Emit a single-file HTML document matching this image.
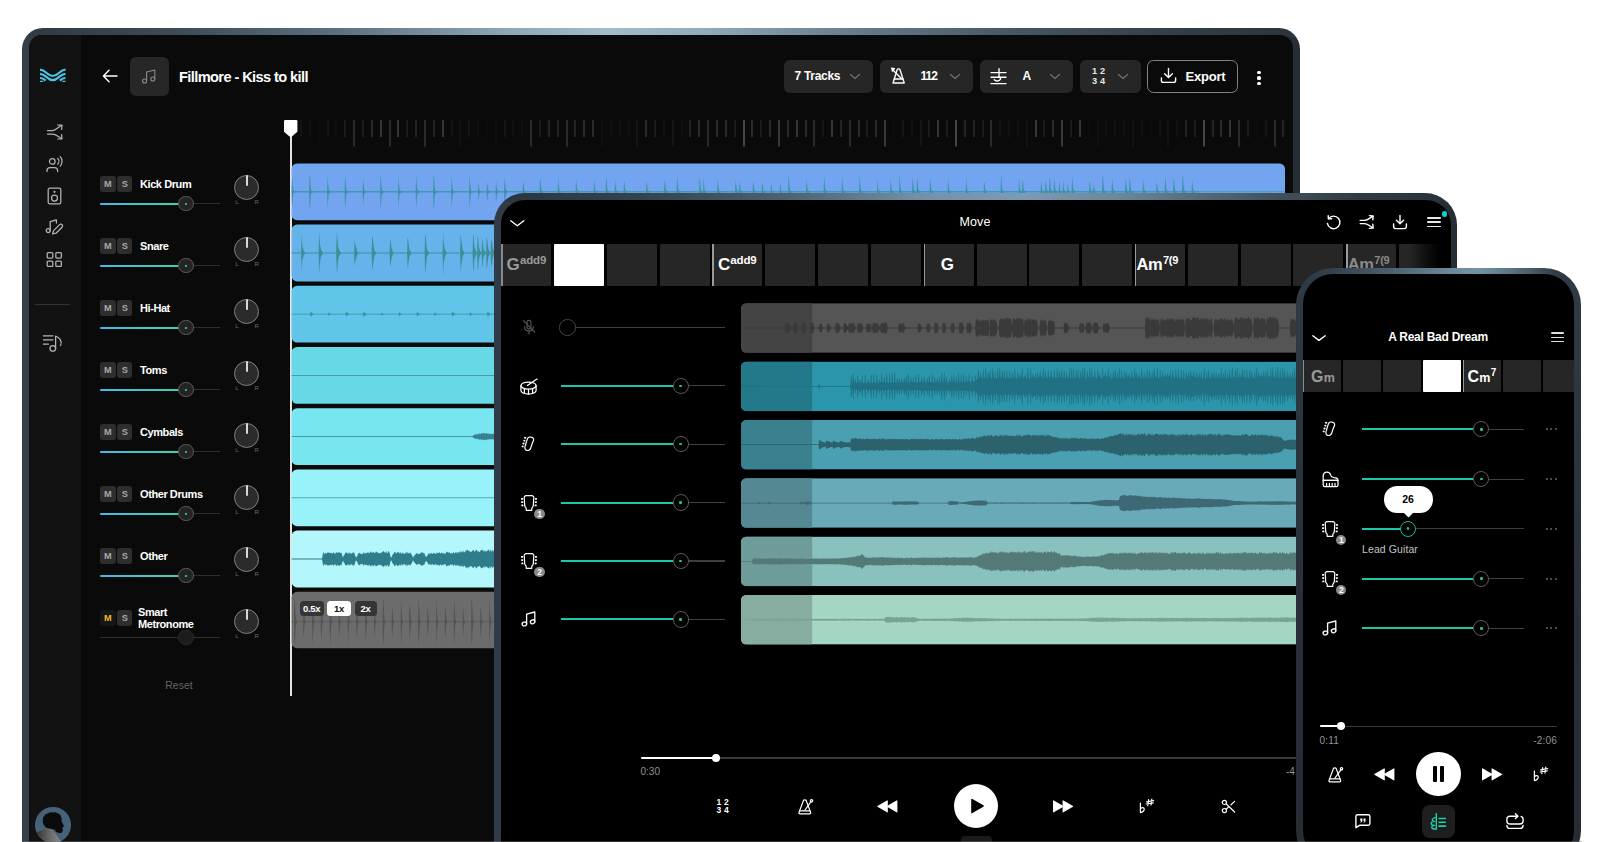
<!DOCTYPE html><html><head><meta charset="utf-8"><title>Moises</title><style>
html,body{margin:0;padding:0;background:#fff}
body{width:1600px;height:842px;position:relative;overflow:hidden;font-family:"Liberation Sans",sans-serif;color:#fff}
div,span,svg{position:absolute;box-sizing:border-box}
svg{overflow:visible}
.t{white-space:nowrap;line-height:1}
.ic{fill:none;stroke:#d8d8d8;stroke-width:1.3;stroke-linecap:round;stroke-linejoin:round}
.icw{fill:none;stroke:#fff;stroke-width:1.4;stroke-linecap:round;stroke-linejoin:round}
.btn{background:#262626;border-radius:6px;height:33px;top:60px}
.ms{border-radius:3px;background:#2e2e2e;color:#a8a8a8;font-size:9.2px;font-weight:bold;text-align:center;line-height:17.2px}

.cell{background:#262626}
</style></head><body><div style="left:22px;top:28px;width:1278px;height:830px;border-radius:21px 21px 0 0;background:linear-gradient(90deg,#2e3a43 0%,#3c4b56 12%,#5b7282 25%,#8da7b8 38%,#a3bccc 46%,#8fa9ba 54%,#657d8d 65%,#455662 78%,#333f48 90%,#2a343c 100%) top/100% 9px no-repeat,linear-gradient(90deg,#343f48 0%,#2d3740 50%,#272d34 100%)"></div><div style="left:29px;top:35px;width:1264px;height:830px;border-radius:13px 13px 0 0;background:#0a0a0a;overflow:hidden"><div style="left:0;top:0;width:52px;height:830px;background:#121212"></div></div><svg style="left:40px;top:68px" width="26" height="15" viewBox="0 0 26 15" ><g fill="none" stroke="#4cc4e4" stroke-width="2.2" stroke-linecap="butt"><path d="M0 1.7 C6 1.7 7.2 8 12.75 8 C18.3 8 19.5 1.7 25.5 1.7"/><path d="M0 5.9 C6 5.9 7.2 12.2 12.75 12.2 C18.3 12.2 19.5 5.9 25.5 5.9"/><path d="M0 10 C2.6 10 4.2 11.2 5.6 12.6 M25.5 10 C22.9 10 21.3 11.2 19.9 12.6"/><path d="M0 13.4 H3.2 M22.3 13.4 H25.5" stroke-width="1.2"/></g></svg><svg style="left:46px;top:123px" width="18" height="18" viewBox="0 0 18 18" ><g stroke="#b4b4b4" stroke-width="1.25" fill="none" stroke-linecap="round" stroke-linejoin="round"><path d="M1.5 7.5 H6.5 C10 7.5 11.5 4.5 15.5 2.5 M11.8 2 L16 2.2 L15.6 6.4"/><path d="M1.5 11 H6.5 C10 11 11.5 13.5 15.5 15.5 M11.8 16 L16 15.8 L15.6 11.6"/></g></svg><svg style="left:45px;top:154px" width="19" height="20" viewBox="0 0 19 20" ><g stroke="#b4b4b4" stroke-width="1.25" fill="none" stroke-linecap="round" stroke-linejoin="round"><circle cx="7.3" cy="7.4" r="2.8"/><path d="M2 17.5 V16.5 C2 14.5 3.5 13.5 5 13.5 H9.6 C11.2 13.5 12.6 14.5 12.6 16.5 V17.5"/><path d="M12.8 4.5 C14.2 6 14.2 8.6 12.8 10.2 M15.2 2.6 C17.6 5.2 17.6 9.6 15.2 12.2"/></g></svg><svg style="left:47px;top:187px" width="15" height="18" viewBox="0 0 15 18" ><g stroke="#b4b4b4" stroke-width="1.25" fill="none" stroke-linecap="round" stroke-linejoin="round"><rect x="1.2" y="1.2" width="12.6" height="15.6" rx="1.6"/><circle cx="7.5" cy="11" r="3"/><circle cx="7.5" cy="4.8" r="0.5" fill="#c4c4c4"/></g></svg><svg style="left:45px;top:218px" width="19" height="18" viewBox="0 0 19 18" ><g stroke="#b4b4b4" stroke-width="1.25" fill="none" stroke-linecap="round" stroke-linejoin="round"><circle cx="3.2" cy="12.6" r="2"/><path d="M5.2 12.6 V3.6 L11.4 1.8 V5"/><path d="M7.6 15.8 L8.6 12.6 L14.6 6.6 C15.4 5.8 16.6 5.8 17.2 6.6 C17.8 7.4 17.8 8.4 17 9.2 L11 15.2 Z"/></g></svg><svg style="left:46px;top:251px" width="17" height="17" viewBox="0 0 17 17" ><g stroke="#b4b4b4" stroke-width="1.25" fill="none" stroke-linecap="round" stroke-linejoin="round"><rect x="1.2" y="1.6" width="5.6" height="5.4" rx="1"/><rect x="9.8" y="1.6" width="5.6" height="5.4" rx="1"/><rect x="1.2" y="10" width="5.6" height="5.4" rx="1"/><rect x="9.8" y="10" width="5.6" height="5.4" rx="1"/></g></svg><div style="left:35px;top:303.5px;width:35px;height:1px;background:#333"></div><svg style="left:42px;top:333px" width="22" height="20" viewBox="0 0 22 20" ><g stroke="#b4b4b4" stroke-width="1.25" fill="none" stroke-linecap="round" stroke-linejoin="round" stroke-width="1.5"><path d="M1.4 2.8 H11 M1.4 6.8 H11 M1.4 11 H6.5"/><circle cx="10.8" cy="15.4" r="2.8"/><path d="M13.6 15.4 V3 C17.5 4.5 20.5 8 18.6 12.5"/></g></svg><div style="left:35px;top:807.2px;width:35.6px;height:35.6px;border-radius:50%;background:#46617a;overflow:hidden"><svg style="left:0;top:0" width="36" height="36" viewBox="0 0 36 36"><defs><linearGradient id="sh" x1="0" y1="0" x2="1" y2="0"><stop offset="0" stop-color="#2e2e2e"/><stop offset="0.6" stop-color="#6a6a6a"/><stop offset="1" stop-color="#8a8a8a"/></linearGradient></defs><path d="M1 26 C4 24 8 23 10.5 21.5 L17 22 L21.5 28 L25.5 34 V36 H0Z" fill="url(#sh)"/><path d="M8 13 C7.6 10.6 8.6 9.6 9.5 9 C10 7 11.6 6.6 13 6.5 C14.4 5 16.4 5.2 18 5.5 C20 4.6 21.8 5.6 23 6.5 C25 7 26 8.6 26 10 C27 11.4 26.8 12.8 26.4 14 L28 17 L29 19 L27.4 21 L28 23 L27 25.4 C26 26.2 25 26.2 24 26 L21 25 L20 23 L17 22 L12 21 C10.4 20.4 9.4 19.4 9 18 C7.6 16.6 7.4 14.6 8 13Z" fill="#0b0b0c"/></svg></div><svg style="left:102px;top:69px" width="16" height="14" viewBox="0 0 16 14" ><path d="M15 7 H1.6 M7 1.2 L1.4 7 L7 12.8" stroke="#fff" stroke-width="1.4" fill="none" stroke-linecap="round" stroke-linejoin="round" stroke-width="1.6"/></svg><div style="left:130px;top:57px;width:38.5px;height:38.5px;background:#272727;border-radius:6px"></div><svg style="left:141px;top:68px" width="17" height="17" viewBox="0 0 17 17" ><g fill="none" stroke="#8c8c8c" stroke-width="1.1" stroke-linejoin="round"><circle cx="3.6" cy="13" r="2"/><circle cx="11.8" cy="11" r="2"/><path d="M5.6 13 V4 L13.8 2 V11"/></g></svg><span class="t" style="left:179px;top:69.7px;font-size:14.6px;color:#fff;font-weight:bold;letter-spacing:-0.6px">Fillmore - Kiss to kill</span><div class="btn" style="left:784px;top:60px;width:88.5px;height:33px;"></div><span class="t" style="left:794.5px;top:70.0px;font-size:12px;color:#fff;font-weight:bold;letter-spacing:-0.3px">7 Tracks</span><svg style="left:850.0px;top:74.0px" width="10" height="5" viewBox="0 0 10 5" ><path d="M0.5 0.5 L5.0 4.5 L9.5 0.5" fill="none" stroke="#707070" stroke-width="1.2" stroke-linecap="round" stroke-linejoin="round"/></svg><div class="btn" style="left:880px;top:60px;width:92.5px;height:33px;"></div><svg style="left:890px;top:67px" width="17" height="18" viewBox="0 0 17 18" ><g stroke="#fff" stroke-width="1.4" fill="none" stroke-linecap="round" stroke-linejoin="round" stroke-width="1.3"><path d="M3 16 L7.2 2.6 C7.5 1.6 9.7 1.6 10 2.6 L14.2 16 Z"/><path d="M4.2 12 H13"/><path d="M11.4 11.6 L2.4 2.6 M1.8 1.2 L4.4 1.6 L2.4 4 Z"/></g></svg><span class="t" style="left:920.5px;top:70.0px;font-size:12px;color:#fff;font-weight:bold;letter-spacing:-1px">112</span><svg style="left:950.0px;top:74.0px" width="10" height="5" viewBox="0 0 10 5" ><path d="M0.5 0.5 L5.0 4.5 L9.5 0.5" fill="none" stroke="#707070" stroke-width="1.2" stroke-linecap="round" stroke-linejoin="round"/></svg><div class="btn" style="left:980px;top:60px;width:92.5px;height:33px;"></div><svg style="left:990px;top:68px" width="17" height="17" viewBox="0 0 17 17" ><g stroke="#fff" stroke-width="1.4" fill="none" stroke-linecap="round" stroke-linejoin="round" stroke-width="1.3"><path d="M1 4.6 H16 M1 9.2 H16 M1 15.6 H16 M9 0.8 V9.2"/><path d="M4.2 11.6 C5.6 13.6 9.4 13.4 10.4 11.2 C11 9.8 9.6 9 8.4 9.4"/></g></svg><span class="t" style="left:1022.5px;top:70.0px;font-size:12px;color:#fff;font-weight:bold;">A</span><svg style="left:1049.5px;top:74.0px" width="10" height="5" viewBox="0 0 10 5" ><path d="M0.5 0.5 L5.0 4.5 L9.5 0.5" fill="none" stroke="#707070" stroke-width="1.2" stroke-linecap="round" stroke-linejoin="round"/></svg><div class="btn" style="left:1080px;top:60px;width:60.5px;height:33px;"></div><span class="t" style="left:1092px;top:66.7px;font-size:9.2px;color:#e6e6e6;font-weight:bold;letter-spacing:0.2px">1 2</span><span class="t" style="left:1092px;top:76.6px;font-size:9.2px;color:#e6e6e6;font-weight:bold;letter-spacing:0.2px">3 4</span><svg style="left:1117.5px;top:74.0px" width="10" height="5" viewBox="0 0 10 5" ><path d="M0.5 0.5 L5.0 4.5 L9.5 0.5" fill="none" stroke="#707070" stroke-width="1.2" stroke-linecap="round" stroke-linejoin="round"/></svg><div style="left:1147px;top:60px;width:91px;height:33px;border:1.6px solid #848484;border-radius:6.5px;background:#0a0a0a"></div><svg style="left:1160px;top:67px" width="17" height="17" viewBox="0 0 17 17" ><g stroke="#fff" stroke-width="1.4" fill="none" stroke-linecap="round" stroke-linejoin="round" stroke-width="1.4"><path d="M8.5 1.4 V10.4 M4.6 6.8 L8.5 10.6 L12.4 6.8"/><path d="M1.4 11 V13.4 C1.4 14.6 2.2 15.4 3.4 15.4 H13.6 C14.8 15.4 15.6 14.6 15.6 13.4 V11"/></g></svg><span class="t" style="left:1185.5px;top:70.0px;font-size:13px;color:#fff;font-weight:bold;letter-spacing:-0.2px">Export</span><div style="left:1257.4px;top:71.10000000000001px;width:3.2px;height:3.2px;background:#fff;border-radius:50%"></div><div style="left:1257.4px;top:76.4px;width:3.2px;height:3.2px;background:#fff;border-radius:50%"></div><div style="left:1257.4px;top:81.7px;width:3.2px;height:3.2px;background:#fff;border-radius:50%"></div><svg style="left:0;top:0" width="1600" height="160" viewBox="0 0 1600 160"><rect x="300.5" y="120" width="1" height="17" fill="#1a1a1a"/><rect x="309.5" y="120" width="1" height="17" fill="#1a1a1a"/><rect x="318.5" y="120" width="1" height="26.5" fill="#101010"/><rect x="327.5" y="120" width="1" height="17" fill="#202020"/><rect x="335.5" y="120" width="1" height="17" fill="#141414"/><rect x="344.5" y="120" width="1" height="17" fill="#2c2c2c"/><rect x="353.5" y="120" width="1" height="26.5" fill="#4c4c4c"/><rect x="362.5" y="120" width="1" height="17" fill="#2c2c2c"/><rect x="371.5" y="120" width="1" height="17" fill="#4c4c4c"/><rect x="380.5" y="120" width="1" height="17" fill="#606060"/><rect x="389.5" y="120" width="1" height="26.5" fill="#4c4c4c"/><rect x="397.5" y="120" width="1" height="17" fill="#606060"/><rect x="406.5" y="120" width="1" height="17" fill="#2c2c2c"/><rect x="415.5" y="120" width="1" height="17" fill="#3c3c3c"/><rect x="424.5" y="120" width="1" height="26.5" fill="#4c4c4c"/><rect x="433.5" y="120" width="1" height="17" fill="#3c3c3c"/><rect x="442.5" y="120" width="1" height="17" fill="#606060"/><rect x="451.5" y="120" width="1" height="17" fill="#1a1a1a"/><rect x="459.5" y="120" width="1" height="26.5" fill="#141414"/><rect x="468.5" y="120" width="1" height="17" fill="#202020"/><rect x="477.5" y="120" width="1" height="17" fill="#141414"/><rect x="486.5" y="120" width="1" height="17" fill="#101010"/><rect x="495.5" y="120" width="1" height="26.5" fill="#141414"/><rect x="504.5" y="120" width="1" height="17" fill="#202020"/><rect x="512.5" y="120" width="1" height="17" fill="#141414"/><rect x="521.5" y="120" width="1" height="17" fill="#141414"/><rect x="530.5" y="120" width="1" height="26.5" fill="#4c4c4c"/><rect x="539.5" y="120" width="1" height="17" fill="#2c2c2c"/><rect x="548.5" y="120" width="1" height="17" fill="#3c3c3c"/><rect x="557.5" y="120" width="1" height="17" fill="#3c3c3c"/><rect x="566.5" y="120" width="1" height="26.5" fill="#4c4c4c"/><rect x="574.5" y="120" width="1" height="17" fill="#3c3c3c"/><rect x="583.5" y="120" width="1" height="17" fill="#4c4c4c"/><rect x="592.5" y="120" width="1" height="17" fill="#4c4c4c"/><rect x="601.5" y="120" width="1" height="26.5" fill="#141414"/><rect x="610.5" y="120" width="1" height="17" fill="#141414"/><rect x="619.5" y="120" width="1" height="17" fill="#141414"/><rect x="628.5" y="120" width="1" height="17" fill="#141414"/><rect x="636.5" y="120" width="1" height="26.5" fill="#202020"/><rect x="645.5" y="120" width="1" height="17" fill="#4c4c4c"/><rect x="654.5" y="120" width="1" height="17" fill="#2c2c2c"/><rect x="663.5" y="120" width="1" height="17" fill="#1a1a1a"/><rect x="672.5" y="120" width="1" height="26.5" fill="#202020"/><rect x="681.5" y="120" width="1" height="17" fill="#141414"/><rect x="689.5" y="120" width="1" height="17" fill="#3c3c3c"/><rect x="698.5" y="120" width="1" height="17" fill="#4c4c4c"/><rect x="707.5" y="120" width="1" height="26.5" fill="#4c4c4c"/><rect x="716.5" y="120" width="1" height="17" fill="#4c4c4c"/><rect x="725.5" y="120" width="1" height="17" fill="#4c4c4c"/><rect x="734.5" y="120" width="1" height="17" fill="#2c2c2c"/><rect x="743.5" y="120" width="1" height="26.5" fill="#808080"/><rect x="751.5" y="120" width="1" height="17" fill="#4c4c4c"/><rect x="760.5" y="120" width="1" height="17" fill="#2c2c2c"/><rect x="769.5" y="120" width="1" height="17" fill="#4c4c4c"/><rect x="778.5" y="120" width="1" height="26.5" fill="#666666"/><rect x="787.5" y="120" width="1" height="17" fill="#4c4c4c"/><rect x="796.5" y="120" width="1" height="17" fill="#606060"/><rect x="805.5" y="120" width="1" height="17" fill="#4c4c4c"/><rect x="813.5" y="120" width="1" height="26.5" fill="#4c4c4c"/><rect x="822.5" y="120" width="1" height="17" fill="#202020"/><rect x="831.5" y="120" width="1" height="17" fill="#606060"/><rect x="840.5" y="120" width="1" height="17" fill="#3c3c3c"/><rect x="849.5" y="120" width="1" height="26.5" fill="#4c4c4c"/><rect x="858.5" y="120" width="1" height="17" fill="#4c4c4c"/><rect x="866.5" y="120" width="1" height="17" fill="#2c2c2c"/><rect x="875.5" y="120" width="1" height="17" fill="#4c4c4c"/><rect x="884.5" y="120" width="1" height="26.5" fill="#666666"/><rect x="893.5" y="120" width="1" height="17" fill="#101010"/><rect x="902.5" y="120" width="1" height="17" fill="#202020"/><rect x="911.5" y="120" width="1" height="17" fill="#1a1a1a"/><rect x="920.5" y="120" width="1" height="26.5" fill="#202020"/><rect x="928.5" y="120" width="1" height="17" fill="#2c2c2c"/><rect x="937.5" y="120" width="1" height="17" fill="#606060"/><rect x="946.5" y="120" width="1" height="17" fill="#2c2c2c"/><rect x="955.5" y="120" width="1" height="26.5" fill="#808080"/><rect x="964.5" y="120" width="1" height="17" fill="#3c3c3c"/><rect x="973.5" y="120" width="1" height="17" fill="#3c3c3c"/><rect x="982.5" y="120" width="1" height="17" fill="#2c2c2c"/><rect x="990.5" y="120" width="1" height="26.5" fill="#4c4c4c"/><rect x="999.5" y="120" width="1" height="17" fill="#202020"/><rect x="1008.5" y="120" width="1" height="17" fill="#1a1a1a"/><rect x="1017.5" y="120" width="1" height="17" fill="#1a1a1a"/><rect x="1026.5" y="120" width="1" height="26.5" fill="#1a1a1a"/><rect x="1035.5" y="120" width="1" height="17" fill="#606060"/><rect x="1043.5" y="120" width="1" height="17" fill="#2c2c2c"/><rect x="1052.5" y="120" width="1" height="17" fill="#4c4c4c"/><rect x="1061.5" y="120" width="1" height="26.5" fill="#666666"/><rect x="1070.5" y="120" width="1" height="17" fill="#2c2c2c"/><rect x="1079.5" y="120" width="1" height="17" fill="#606060"/><rect x="1088.5" y="120" width="1" height="17" fill="#101010"/><rect x="1097.5" y="120" width="1" height="26.5" fill="#141414"/><rect x="1105.5" y="120" width="1" height="17" fill="#1a1a1a"/><rect x="1114.5" y="120" width="1" height="17" fill="#1a1a1a"/><rect x="1123.5" y="120" width="1" height="17" fill="#141414"/><rect x="1132.5" y="120" width="1" height="26.5" fill="#1a1a1a"/><rect x="1141.5" y="120" width="1" height="17" fill="#1a1a1a"/><rect x="1150.5" y="120" width="1" height="17" fill="#101010"/><rect x="1159.5" y="120" width="1" height="17" fill="#1a1a1a"/><rect x="1167.5" y="120" width="1" height="26.5" fill="#1a1a1a"/><rect x="1176.5" y="120" width="1" height="17" fill="#1a1a1a"/><rect x="1185.5" y="120" width="1" height="17" fill="#3c3c3c"/><rect x="1194.5" y="120" width="1" height="17" fill="#2c2c2c"/><rect x="1203.5" y="120" width="1" height="26.5" fill="#808080"/><rect x="1212.5" y="120" width="1" height="17" fill="#3c3c3c"/><rect x="1220.5" y="120" width="1" height="17" fill="#4c4c4c"/><rect x="1229.5" y="120" width="1" height="17" fill="#606060"/><rect x="1238.5" y="120" width="1" height="26.5" fill="#4c4c4c"/><rect x="1247.5" y="120" width="1" height="17" fill="#2c2c2c"/><rect x="1256.5" y="120" width="1" height="17" fill="#101010"/><rect x="1265.5" y="120" width="1" height="17" fill="#202020"/><rect x="1274.5" y="120" width="1" height="26.5" fill="#4c4c4c"/><rect x="1282.5" y="120" width="1" height="17" fill="#3c3c3c"/></svg><div style="left:290.3px;top:130px;width:1.5px;height:565.5px;background:#e4e4e4"></div><svg style="left:284px;top:119.5px" width="14" height="18" viewBox="0 0 14 18" ><path d="M1.2 0 H12.2 Q13.4 0 13.4 1.2 V11.8 L6.7 17.6 L0 11.8 V1.2 Q0 0 1.2 0Z" fill="#fff"/></svg><div class="ms" style="left:100px;top:176.3px;width:15.6px;height:15.4px;">M</div><div class="ms" style="left:117px;top:176.3px;width:15.4px;height:15.4px;">S</div><span class="t" style="left:140px;top:178.5px;font-size:11px;color:#fff;font-weight:bold;letter-spacing:-0.42px">Kick Drum</span><div style="left:100px;top:203.20000000000002px;width:120px;height:1.2px;background:#2e2e2e"></div><div style="left:100px;top:202.9px;width:86px;height:1.8px;background:linear-gradient(90deg,#4cb8ea,#3fd2a4);border-radius:1px"></div><div style="left:178.3px;top:196.10000000000002px;width:15.4px;height:15.4px;border-radius:50%;background:#242424;border:1.2px solid #5c5c5c"></div><div style="left:185.1px;top:202.9px;width:1.8px;height:1.8px;border-radius:50%;background:#3fd2a4"></div><div style="left:234px;top:174.5px;width:25.2px;height:25.2px;border-radius:50%;background:#2b2b2b;border:1.4px solid #808080"></div><div style="left:245.7px;top:175.29999999999998px;width:1.9px;height:10.6px;background:#d8d8d8;border-radius:1px"></div><span class="t" style="left:237px;top:199.0px;font-size:6px;color:#6a6a6a;font-weight:normal;transform:translateX(-50%);">L</span><span class="t" style="left:256.7px;top:199.0px;font-size:6px;color:#6a6a6a;font-weight:normal;transform:translateX(-50%);">R</span><div class="ms" style="left:100px;top:238.3px;width:15.6px;height:15.4px;">M</div><div class="ms" style="left:117px;top:238.3px;width:15.4px;height:15.4px;">S</div><span class="t" style="left:140px;top:240.5px;font-size:11px;color:#fff;font-weight:bold;letter-spacing:-0.42px">Snare</span><div style="left:100px;top:265.2px;width:120px;height:1.2px;background:#2e2e2e"></div><div style="left:100px;top:264.90000000000003px;width:86px;height:1.8px;background:linear-gradient(90deg,#4cb8ea,#3fd2a4);border-radius:1px"></div><div style="left:178.3px;top:258.1px;width:15.4px;height:15.4px;border-radius:50%;background:#242424;border:1.2px solid #5c5c5c"></div><div style="left:185.1px;top:264.90000000000003px;width:1.8px;height:1.8px;border-radius:50%;background:#3fd2a4"></div><div style="left:234px;top:236.5px;width:25.2px;height:25.2px;border-radius:50%;background:#2b2b2b;border:1.4px solid #808080"></div><div style="left:245.7px;top:237.29999999999998px;width:1.9px;height:10.6px;background:#d8d8d8;border-radius:1px"></div><span class="t" style="left:237px;top:261.0px;font-size:6px;color:#6a6a6a;font-weight:normal;transform:translateX(-50%);">L</span><span class="t" style="left:256.7px;top:261.0px;font-size:6px;color:#6a6a6a;font-weight:normal;transform:translateX(-50%);">R</span><div class="ms" style="left:100px;top:300.3px;width:15.6px;height:15.4px;">M</div><div class="ms" style="left:117px;top:300.3px;width:15.4px;height:15.4px;">S</div><span class="t" style="left:140px;top:302.5px;font-size:11px;color:#fff;font-weight:bold;letter-spacing:-0.42px">Hi-Hat</span><div style="left:100px;top:327.2px;width:120px;height:1.2px;background:#2e2e2e"></div><div style="left:100px;top:326.90000000000003px;width:86px;height:1.8px;background:linear-gradient(90deg,#4cb8ea,#3fd2a4);border-radius:1px"></div><div style="left:178.3px;top:320.1px;width:15.4px;height:15.4px;border-radius:50%;background:#242424;border:1.2px solid #5c5c5c"></div><div style="left:185.1px;top:326.90000000000003px;width:1.8px;height:1.8px;border-radius:50%;background:#3fd2a4"></div><div style="left:234px;top:298.5px;width:25.2px;height:25.2px;border-radius:50%;background:#2b2b2b;border:1.4px solid #808080"></div><div style="left:245.7px;top:299.3px;width:1.9px;height:10.6px;background:#d8d8d8;border-radius:1px"></div><span class="t" style="left:237px;top:323.0px;font-size:6px;color:#6a6a6a;font-weight:normal;transform:translateX(-50%);">L</span><span class="t" style="left:256.7px;top:323.0px;font-size:6px;color:#6a6a6a;font-weight:normal;transform:translateX(-50%);">R</span><div class="ms" style="left:100px;top:362.3px;width:15.6px;height:15.4px;">M</div><div class="ms" style="left:117px;top:362.3px;width:15.4px;height:15.4px;">S</div><span class="t" style="left:140px;top:364.5px;font-size:11px;color:#fff;font-weight:bold;letter-spacing:-0.42px">Toms</span><div style="left:100px;top:389.2px;width:120px;height:1.2px;background:#2e2e2e"></div><div style="left:100px;top:388.90000000000003px;width:86px;height:1.8px;background:linear-gradient(90deg,#4cb8ea,#3fd2a4);border-radius:1px"></div><div style="left:178.3px;top:382.1px;width:15.4px;height:15.4px;border-radius:50%;background:#242424;border:1.2px solid #5c5c5c"></div><div style="left:185.1px;top:388.90000000000003px;width:1.8px;height:1.8px;border-radius:50%;background:#3fd2a4"></div><div style="left:234px;top:360.5px;width:25.2px;height:25.2px;border-radius:50%;background:#2b2b2b;border:1.4px solid #808080"></div><div style="left:245.7px;top:361.3px;width:1.9px;height:10.6px;background:#d8d8d8;border-radius:1px"></div><span class="t" style="left:237px;top:385.0px;font-size:6px;color:#6a6a6a;font-weight:normal;transform:translateX(-50%);">L</span><span class="t" style="left:256.7px;top:385.0px;font-size:6px;color:#6a6a6a;font-weight:normal;transform:translateX(-50%);">R</span><div class="ms" style="left:100px;top:424.3px;width:15.6px;height:15.4px;">M</div><div class="ms" style="left:117px;top:424.3px;width:15.4px;height:15.4px;">S</div><span class="t" style="left:140px;top:426.5px;font-size:11px;color:#fff;font-weight:bold;letter-spacing:-0.42px">Cymbals</span><div style="left:100px;top:451.2px;width:120px;height:1.2px;background:#2e2e2e"></div><div style="left:100px;top:450.90000000000003px;width:86px;height:1.8px;background:linear-gradient(90deg,#4cb8ea,#3fd2a4);border-radius:1px"></div><div style="left:178.3px;top:444.1px;width:15.4px;height:15.4px;border-radius:50%;background:#242424;border:1.2px solid #5c5c5c"></div><div style="left:185.1px;top:450.90000000000003px;width:1.8px;height:1.8px;border-radius:50%;background:#3fd2a4"></div><div style="left:234px;top:422.5px;width:25.2px;height:25.2px;border-radius:50%;background:#2b2b2b;border:1.4px solid #808080"></div><div style="left:245.7px;top:423.3px;width:1.9px;height:10.6px;background:#d8d8d8;border-radius:1px"></div><span class="t" style="left:237px;top:447.0px;font-size:6px;color:#6a6a6a;font-weight:normal;transform:translateX(-50%);">L</span><span class="t" style="left:256.7px;top:447.0px;font-size:6px;color:#6a6a6a;font-weight:normal;transform:translateX(-50%);">R</span><div class="ms" style="left:100px;top:486.3px;width:15.6px;height:15.4px;">M</div><div class="ms" style="left:117px;top:486.3px;width:15.4px;height:15.4px;">S</div><span class="t" style="left:140px;top:488.5px;font-size:11px;color:#fff;font-weight:bold;letter-spacing:-0.42px">Other Drums</span><div style="left:100px;top:513.1999999999999px;width:120px;height:1.2px;background:#2e2e2e"></div><div style="left:100px;top:512.9px;width:86px;height:1.8px;background:linear-gradient(90deg,#4cb8ea,#3fd2a4);border-radius:1px"></div><div style="left:178.3px;top:506.09999999999997px;width:15.4px;height:15.4px;border-radius:50%;background:#242424;border:1.2px solid #5c5c5c"></div><div style="left:185.1px;top:512.9px;width:1.8px;height:1.8px;border-radius:50%;background:#3fd2a4"></div><div style="left:234px;top:484.5px;width:25.2px;height:25.2px;border-radius:50%;background:#2b2b2b;border:1.4px solid #808080"></div><div style="left:245.7px;top:485.3px;width:1.9px;height:10.6px;background:#d8d8d8;border-radius:1px"></div><span class="t" style="left:237px;top:509.0px;font-size:6px;color:#6a6a6a;font-weight:normal;transform:translateX(-50%);">L</span><span class="t" style="left:256.7px;top:509.0px;font-size:6px;color:#6a6a6a;font-weight:normal;transform:translateX(-50%);">R</span><div class="ms" style="left:100px;top:548.3px;width:15.6px;height:15.4px;">M</div><div class="ms" style="left:117px;top:548.3px;width:15.4px;height:15.4px;">S</div><span class="t" style="left:140px;top:550.5px;font-size:11px;color:#fff;font-weight:bold;letter-spacing:-0.42px">Other</span><div style="left:100px;top:575.1999999999999px;width:120px;height:1.2px;background:#2e2e2e"></div><div style="left:100px;top:574.9px;width:86px;height:1.8px;background:linear-gradient(90deg,#4cb8ea,#3fd2a4);border-radius:1px"></div><div style="left:178.3px;top:568.0999999999999px;width:15.4px;height:15.4px;border-radius:50%;background:#242424;border:1.2px solid #5c5c5c"></div><div style="left:185.1px;top:574.9px;width:1.8px;height:1.8px;border-radius:50%;background:#3fd2a4"></div><div style="left:234px;top:546.5px;width:25.2px;height:25.2px;border-radius:50%;background:#2b2b2b;border:1.4px solid #808080"></div><div style="left:245.7px;top:547.3000000000001px;width:1.9px;height:10.6px;background:#d8d8d8;border-radius:1px"></div><span class="t" style="left:237px;top:571.0px;font-size:6px;color:#6a6a6a;font-weight:normal;transform:translateX(-50%);">L</span><span class="t" style="left:256.7px;top:571.0px;font-size:6px;color:#6a6a6a;font-weight:normal;transform:translateX(-50%);">R</span><div class="ms" style="left:100px;top:610.3px;width:15.6px;height:15.4px;background:#161616;color:#e8b92a">M</div><div class="ms" style="left:117px;top:610.3px;width:15.4px;height:15.4px;">S</div><span class="t" style="left:138px;top:606.5px;font-size:11px;color:#fff;font-weight:bold;letter-spacing:-0.42px">Smart</span><span class="t" style="left:138px;top:618.5px;font-size:11px;color:#fff;font-weight:bold;letter-spacing:-0.42px">Metronome</span><div style="left:100px;top:637.1999999999999px;width:120px;height:1.2px;background:#2e2e2e"></div><div style="left:178.3px;top:630.0999999999999px;width:15.4px;height:15.4px;border-radius:50%;background:#1c1c1c;border:1.2px solid #2c2c2c"></div><div style="left:234px;top:608.5px;width:25.2px;height:25.2px;border-radius:50%;background:#2b2b2b;border:1.4px solid #808080"></div><div style="left:245.7px;top:609.3000000000001px;width:1.9px;height:10.6px;background:#d8d8d8;border-radius:1px"></div><span class="t" style="left:237px;top:633.0px;font-size:6px;color:#6a6a6a;font-weight:normal;transform:translateX(-50%);">L</span><span class="t" style="left:256.7px;top:633.0px;font-size:6px;color:#6a6a6a;font-weight:normal;transform:translateX(-50%);">R</span><span class="t" style="left:179px;top:679.8px;font-size:10.5px;color:#646464;font-weight:normal;transform:translateX(-50%);">Reset</span><svg style="left:0;top:0" width="1600" height="842" viewBox="0 0 1600 842"><rect x="291.6" y="163.4" width="993.4" height="56.8" rx="5.5" fill="#73a4f0"/><rect x="291.6" y="224.6" width="993.4" height="56.8" rx="5.5" fill="#66b3ec"/><rect x="291.6" y="285.8" width="993.4" height="56.8" rx="5.5" fill="#61c5e9"/><rect x="291.6" y="347.0" width="993.4" height="56.8" rx="5.5" fill="#66d8e6"/><rect x="291.6" y="408.2" width="993.4" height="56.8" rx="5.5" fill="#78e6f0"/><rect x="291.6" y="469.4" width="993.4" height="56.8" rx="5.5" fill="#98f2f9"/><rect x="291.6" y="530.6" width="993.4" height="56.8" rx="5.5" fill="#b3f7fc"/><rect x="291.6" y="591.8" width="993.4" height="56.4" rx="5.5" fill="#6c6c6c"/><path d="M291.6,191.4 L292.1,176.8 L292.6,183.1 L293.1,188.3 L293.6,190.2 L294.1,190.6 L294.6,190.9 L295.1,191.1 L295.6,191.3 L296.1,191.4 L296.6,191.4 L297.1,191.4 L297.6,191.4 L298.1,191.4 L298.6,191.4 L299.1,191.4 L299.6,191.4 L300.1,191.4 L300.6,191.4 L301.1,191.4 L301.6,191.4 L302.1,191.4 L302.6,191.4 L303.1,191.4 L303.6,191.4 L304.1,191.4 L304.6,191.4 L305.1,191.4 L305.6,191.4 L306.1,191.4 L306.6,191.4 L307.1,191.4 L307.6,191.4 L308.1,191.4 L308.6,191.4 L309.1,191.4 L309.6,175.2 L310.1,177.5 L310.6,186.0 L311.1,189.5 L311.6,190.5 L312.1,190.8 L312.6,191.0 L313.1,191.2 L313.6,191.4 L314.1,191.4 L314.6,191.4 L315.1,191.4 L315.6,191.4 L316.1,191.4 L316.6,191.4 L317.1,191.4 L317.6,191.4 L318.1,191.4 L318.6,191.4 L319.1,191.4 L319.6,191.4 L320.1,191.4 L320.6,191.4 L321.1,191.4 L321.6,191.4 L322.1,191.4 L322.6,191.4 L323.1,191.4 L323.6,191.4 L324.1,191.4 L324.6,191.4 L325.1,191.4 L325.6,191.4 L326.1,191.4 L326.6,191.4 L327.1,191.4 L327.6,175.4 L328.1,183.3 L328.6,188.4 L329.1,190.3 L329.6,190.7 L330.1,190.9 L330.6,191.1 L331.1,191.3 L331.6,191.4 L332.1,191.4 L332.6,191.4 L333.1,191.4 L333.6,191.4 L334.1,191.4 L334.6,191.4 L335.1,191.4 L335.6,191.4 L336.1,191.4 L336.6,191.4 L337.1,191.4 L337.6,191.4 L338.1,191.4 L338.6,191.4 L339.1,191.4 L339.6,191.4 L340.1,191.4 L340.6,191.4 L341.1,191.4 L341.6,191.4 L342.1,191.4 L342.6,191.4 L343.1,191.4 L343.6,191.4 L344.1,191.4 L344.6,191.4 L345.1,175.9 L345.6,179.4 L346.1,186.8 L346.6,189.8 L347.1,190.5 L347.6,190.8 L348.1,191.1 L348.6,191.2 L349.1,191.4 L349.6,191.4 L350.1,191.4 L350.6,191.4 L351.1,191.4 L351.6,191.4 L352.1,191.4 L352.6,191.4 L353.1,191.4 L353.6,191.4 L354.1,191.4 L354.6,191.4 L355.1,191.4 L355.6,191.4 L356.1,191.4 L356.6,191.4 L357.1,191.4 L357.6,191.4 L358.1,191.4 L358.6,191.4 L359.1,191.4 L359.6,191.4 L360.1,191.4 L360.6,191.4 L361.1,191.4 L361.6,191.4 L362.1,191.4 L362.6,191.4 L363.1,176.7 L363.6,184.7 L364.1,189.0 L364.6,190.3 L365.1,190.7 L365.6,191.0 L366.1,191.2 L366.6,191.3 L367.1,191.4 L367.6,191.4 L368.1,191.4 L368.6,191.4 L369.1,191.4 L369.6,191.4 L370.1,191.4 L370.6,191.4 L371.1,191.4 L371.6,191.4 L372.1,191.4 L372.6,191.4 L373.1,191.4 L373.6,191.4 L374.1,191.4 L374.6,191.4 L375.1,191.4 L375.6,191.4 L376.1,191.4 L376.6,191.4 L377.1,191.4 L377.6,191.4 L378.1,191.4 L378.6,191.4 L379.1,191.4 L379.6,191.4 L380.1,191.4 L380.6,174.9 L381.1,180.1 L381.6,187.1 L382.1,189.9 L382.6,190.6 L383.1,190.9 L383.6,191.1 L384.1,191.3 L384.6,191.4 L385.1,191.4 L385.6,191.4 L386.1,191.4 L386.6,191.4 L387.1,191.4 L387.6,191.4 L388.1,191.4 L388.6,191.4 L389.1,191.4 L389.6,191.4 L390.1,191.4 L390.6,191.4 L391.1,191.4 L391.6,191.4 L392.1,191.4 L392.6,191.4 L393.1,191.4 L393.6,191.4 L394.1,191.4 L394.6,191.4 L395.1,191.4 L395.6,191.4 L396.1,191.4 L396.6,191.4 L397.1,191.4 L397.6,191.4 L398.1,191.4 L398.6,174.9 L399.1,184.7 L399.6,189.0 L400.1,190.4 L400.6,190.7 L401.1,191.0 L401.6,191.2 L402.1,191.3 L402.6,191.4 L403.1,191.4 L403.6,191.4 L404.1,191.4 L404.6,191.4 L405.1,191.4 L405.6,191.4 L406.1,191.4 L406.6,191.4 L407.1,191.4 L407.6,191.4 L408.1,191.4 L408.6,191.4 L409.1,191.4 L409.6,191.4 L410.1,191.4 L410.6,191.4 L411.1,191.4 L411.6,191.4 L412.1,191.4 L412.6,191.4 L413.1,191.4 L413.6,191.4 L414.1,191.4 L414.6,191.4 L415.1,191.4 L415.6,191.4 L416.1,175.8 L416.6,181.8 L417.1,187.8 L417.6,190.2 L418.1,190.6 L418.6,190.9 L419.1,191.1 L419.6,191.3 L420.1,191.4 L420.6,191.4 L421.1,191.4 L421.6,191.4 L422.1,191.4 L422.6,191.4 L423.1,191.4 L423.6,191.4 L424.1,191.4 L424.6,191.4 L425.1,191.4 L425.6,191.4 L426.1,191.4 L426.6,191.4 L427.1,191.4 L427.6,191.4 L428.1,191.4 L428.6,191.4 L429.1,191.4 L429.6,191.4 L430.1,191.4 L430.6,191.4 L431.1,191.4 L431.6,191.4 L432.1,191.4 L432.6,191.4 L433.1,191.4 L433.6,175.8 L434.1,176.9 L434.6,185.8 L435.1,189.4 L435.6,190.4 L436.1,190.8 L436.6,191.0 L437.1,191.2 L437.6,191.4 L438.1,191.4 L438.6,191.4 L439.1,191.4 L439.6,191.4 L440.1,191.4 L440.6,191.4 L441.1,191.4 L441.6,191.4 L442.1,191.4 L442.6,191.4 L443.1,191.4 L443.6,191.4 L444.1,191.4 L444.6,191.4 L445.1,191.4 L445.6,191.4 L446.1,191.4 L446.6,191.4 L447.1,191.4 L447.6,191.4 L448.1,191.4 L448.6,191.4 L449.1,191.4 L449.6,191.4 L450.1,191.4 L450.6,191.4 L451.1,191.4 L451.6,176.6 L452.1,183.3 L452.6,188.4 L453.1,190.3 L453.6,190.6 L454.1,190.9 L454.6,191.1 L455.1,191.3 L455.6,191.4 L456.1,191.4 L456.6,191.4 L457.1,191.4 L457.6,191.4 L458.1,191.4 L458.6,191.4 L459.1,191.4 L459.6,191.4 L460.1,191.4 L460.6,191.4 L461.1,191.4 L461.6,191.4 L462.1,191.4 L462.6,191.4 L463.1,191.4 L463.6,191.4 L464.1,191.4 L464.6,191.4 L465.1,191.4 L465.6,191.4 L466.1,191.4 L466.6,191.4 L467.1,191.4 L467.6,191.4 L468.1,191.4 L468.6,191.4 L469.1,191.4 L469.6,173.8 L470.1,183.1 L470.6,188.3 L471.1,190.3 L471.6,190.7 L472.1,191.0 L472.6,191.2 L473.1,191.3 L473.6,191.4 L474.1,191.4 L474.6,191.4 L475.1,191.4 L475.6,191.4 L476.1,191.4 L476.6,191.4 L477.1,191.4 L477.6,191.4 L478.1,191.4 L478.6,182.8 L479.1,188.2 L479.6,190.3 L480.1,190.8 L480.6,191.1 L481.1,191.2 L481.6,191.4 L482.1,191.4 L482.6,191.4 L483.1,191.4 L483.6,191.4 L484.1,191.4 L484.6,191.4 L485.1,191.4 L485.6,191.4 L486.1,191.4 L486.6,191.4 L487.1,181.8 L487.6,186.0 L488.1,189.5 L488.6,190.6 L489.1,190.9 L489.6,191.1 L490.1,191.3 L490.6,191.4 L491.1,191.4 L491.6,191.4 L492.1,191.4 L492.6,191.4 L493.1,191.4 L493.6,191.4 L494.1,191.4 L494.6,191.4 L495.1,191.4 L495.6,191.4 L496.1,180.8 L496.6,186.5 L497.1,189.7 L497.6,190.5 L498.1,190.8 L498.6,191.1 L499.1,191.3 L499.6,191.4 L500.1,191.4 L500.6,191.4 L501.1,191.4 L501.6,191.4 L502.1,191.4 L502.6,191.4 L503.1,191.4 L503.6,191.4 L504.1,191.4 L504.6,177.8 L505.1,182.1 L505.6,187.9 L506.1,190.2 L506.6,190.6 L507.1,190.9 L507.6,191.1 L508.1,191.3 L508.6,191.4 L509.1,191.4 L509.6,191.4 L510.1,191.4 L510.6,191.4 L511.1,191.4 L511.6,191.4 L512.1,191.4 L512.6,191.4 L513.1,191.4 L513.6,191.4 L514.1,191.4 L514.6,191.4 L515.1,191.4 L515.6,191.4 L516.1,191.4 L516.6,191.4 L517.1,191.4 L517.6,191.4 L518.1,191.4 L518.6,191.4 L519.1,191.4 L519.6,191.4 L520.1,191.4 L520.6,191.4 L521.1,191.4 L521.6,191.4 L522.1,191.4 L522.6,191.4 L523.1,179.8 L523.6,184.8 L524.1,189.0 L524.6,190.3 L525.1,190.7 L525.6,191.0 L526.1,191.2 L526.6,191.3 L527.1,191.4 L527.6,191.4 L528.1,191.4 L528.6,191.4 L529.1,191.4 L529.6,191.4 L530.1,191.4 L530.6,191.4 L531.1,191.4 L531.6,191.4 L532.1,191.4 L532.6,191.4 L533.1,191.4 L533.6,191.4 L534.1,191.4 L534.6,191.4 L535.1,191.4 L535.6,191.4 L536.1,191.4 L536.6,191.4 L537.1,191.4 L537.6,191.4 L538.1,191.4 L538.6,191.4 L539.1,191.4 L539.6,191.4 L540.1,176.8 L540.6,181.4 L541.1,187.6 L541.6,190.1 L542.1,190.6 L542.6,190.9 L543.1,191.1 L543.6,191.3 L544.1,191.4 L544.6,191.4 L545.1,191.4 L545.6,191.4 L546.1,191.4 L546.6,191.4 L547.1,191.4 L547.6,191.4 L548.1,191.4 L548.6,191.4 L549.1,191.4 L549.6,191.4 L550.1,191.4 L550.6,191.4 L551.1,191.4 L551.6,191.4 L552.1,191.4 L552.6,191.4 L553.1,191.4 L553.6,191.4 L554.1,191.4 L554.6,191.4 L555.1,191.4 L555.6,191.4 L556.1,191.4 L556.6,191.4 L557.1,191.4 L557.6,191.4 L558.1,176.8 L558.6,184.6 L559.1,188.9 L559.6,190.3 L560.1,190.7 L560.6,191.0 L561.1,191.2 L561.6,191.3 L562.1,191.4 L562.6,191.4 L563.1,191.4 L563.6,191.4 L564.1,191.4 L564.6,191.4 L565.1,191.4 L565.6,191.4 L566.1,191.4 L566.6,191.4 L567.1,191.4 L567.6,191.4 L568.1,191.4 L568.6,191.4 L569.1,191.4 L569.6,191.4 L570.1,191.4 L570.6,191.4 L571.1,191.4 L571.6,191.4 L572.1,191.4 L572.6,191.4 L573.1,191.4 L573.6,191.4 L574.1,191.4 L574.6,191.4 L575.1,191.4 L575.6,191.4 L576.1,178.8 L576.6,184.3 L577.1,188.8 L577.6,190.2 L578.1,190.6 L578.6,190.9 L579.1,191.1 L579.6,191.3 L580.1,191.4 L580.6,191.4 L581.1,191.4 L581.6,191.4 L582.1,191.4 L582.6,191.4 L583.1,191.4 L583.6,191.4 L584.1,191.4 L584.6,191.4 L585.1,191.4 L585.6,191.4 L586.1,191.4 L586.6,191.4 L587.1,191.4 L587.6,191.4 L588.1,191.4 L588.6,191.4 L589.1,191.4 L589.6,191.4 L590.1,191.4 L590.6,191.4 L591.1,191.4 L591.6,191.4 L592.1,191.4 L592.6,191.4 L593.1,191.4 L593.6,191.4 L594.1,178.8 L594.6,185.5 L595.1,189.3 L595.6,190.3 L596.1,190.7 L596.6,191.0 L597.1,191.2 L597.6,191.3 L598.1,191.4 L598.6,191.4 L599.1,191.4 L599.6,191.4 L600.1,191.4 L600.6,191.4 L601.1,191.4 L601.6,191.4 L602.1,191.4 L602.6,191.4 L603.1,191.4 L603.6,191.4 L604.1,191.4 L604.6,191.4 L605.1,191.4 L605.6,191.4 L606.1,176.8 L606.6,179.3 L607.1,186.8 L607.6,189.8 L608.1,190.5 L608.6,190.8 L609.1,191.0 L609.6,191.2 L610.1,191.4 L610.6,191.4 L611.1,191.4 L611.6,191.4 L612.1,191.4 L612.6,191.4 L613.1,191.4 L613.6,191.4 L614.1,191.4 L614.6,191.4 L615.1,178.8 L615.6,185.5 L616.1,189.3 L616.6,190.3 L617.1,190.7 L617.6,191.0 L618.1,191.2 L618.6,191.3 L619.1,191.4 L619.6,191.4 L620.1,191.4 L620.6,191.4 L621.1,191.4 L621.6,191.4 L622.1,191.4 L622.6,191.4 L623.1,191.4 L623.6,191.4 L624.1,180.8 L624.6,184.2 L625.1,188.7 L625.6,190.4 L626.1,190.7 L626.6,191.0 L627.1,191.2 L627.6,191.3 L628.1,191.4 L628.6,191.4 L629.1,191.4 L629.6,191.4 L630.1,191.4 L630.6,191.4 L631.1,191.4 L631.6,191.4 L632.1,191.4 L632.6,191.4 L633.1,191.4 L633.6,191.4 L634.1,191.4 L634.6,191.4 L635.1,191.4 L635.6,191.4 L636.1,191.4 L636.6,191.4 L637.1,191.4 L637.6,191.4 L638.1,191.4 L638.6,191.4 L639.1,191.4 L639.6,191.4 L640.1,191.4 L640.6,191.4 L641.1,191.4 L641.6,191.4 L642.1,191.4 L642.6,191.4 L643.1,191.4 L643.6,191.4 L644.1,191.4 L644.6,191.4 L645.1,191.4 L645.6,191.4 L646.1,191.4 L646.6,180.8 L647.1,184.2 L647.6,188.7 L648.1,190.4 L648.6,190.7 L649.1,191.0 L649.6,191.2 L650.1,191.3 L650.6,191.4 L651.1,191.4 L651.6,191.4 L652.1,191.4 L652.6,191.4 L653.1,191.4 L653.6,191.4 L654.1,191.4 L654.6,191.4 L655.1,191.4 L655.6,191.4 L656.1,191.4 L656.6,191.4 L657.1,191.4 L657.6,191.4 L658.1,191.4 L658.6,191.4 L659.1,191.4 L659.6,191.4 L660.1,191.4 L660.6,191.4 L661.1,191.4 L661.6,191.4 L662.1,191.4 L662.6,191.4 L663.1,191.4 L663.6,191.4 L664.1,191.4 L664.6,179.8 L665.1,181.8 L665.6,187.8 L666.1,190.2 L666.6,190.6 L667.1,190.9 L667.6,191.1 L668.1,191.3 L668.6,191.4 L669.1,191.4 L669.6,191.4 L670.1,191.4 L670.6,191.4 L671.1,191.4 L671.6,191.4 L672.1,191.4 L672.6,191.4 L673.1,191.4 L673.6,191.4 L674.1,191.4 L674.6,191.4 L675.1,191.4 L675.6,191.4 L676.1,191.4 L676.6,191.4 L677.1,176.8 L677.6,181.4 L678.1,187.6 L678.6,190.1 L679.1,190.6 L679.6,190.9 L680.1,191.1 L680.6,191.3 L681.1,191.4 L681.6,191.4 L682.1,191.4 L682.6,191.4 L683.1,191.4 L683.6,191.4 L684.1,191.4 L684.6,191.4 L685.1,191.4 L685.6,191.4 L686.1,191.4 L686.6,191.4 L687.1,191.4 L687.6,191.4 L688.1,191.4 L688.6,191.4 L689.1,191.4 L689.6,191.4 L690.1,191.4 L690.6,191.4 L691.1,191.4 L691.6,191.4 L692.1,191.4 L692.6,191.4 L693.1,191.4 L693.6,191.4 L694.1,191.4 L694.6,191.4 L695.1,191.4 L695.6,191.4 L696.1,191.4 L696.6,191.4 L697.1,191.4 L697.6,191.4 L698.1,191.4 L698.6,191.4 L699.1,191.4 L699.6,177.8 L700.1,180.1 L700.6,187.1 L701.1,189.9 L701.6,190.5 L702.1,190.8 L702.6,191.0 L703.1,191.2 L703.6,177.8 L704.1,186.2 L704.6,189.5 L705.1,190.4 L705.6,190.7 L706.1,191.0 L706.6,191.2 L707.1,191.3 L707.6,191.4 L708.1,191.4 L708.6,191.4 L709.1,191.4 L709.6,191.4 L710.1,191.4 L710.6,191.4 L711.1,191.4 L711.6,191.4 L712.1,191.4 L712.6,191.4 L713.1,191.4 L713.6,191.4 L714.1,191.4 L714.6,191.4 L715.1,191.4 L715.6,191.4 L716.1,191.4 L716.6,191.4 L717.1,191.4 L717.6,177.8 L718.1,183.7 L718.6,188.5 L719.1,190.2 L719.6,190.6 L720.1,190.9 L720.6,191.1 L721.1,191.3 L721.6,191.4 L722.1,191.4 L722.6,191.4 L723.1,191.4 L723.6,191.4 L724.1,191.4 L724.6,191.4 L725.1,191.4 L725.6,191.4 L726.1,191.4 L726.6,191.4 L727.1,191.4 L727.6,191.4 L728.1,191.4 L728.6,191.4 L729.1,191.4 L729.6,191.4 L730.1,191.4 L730.6,191.4 L731.1,191.4 L731.6,191.4 L732.1,191.4 L732.6,191.4 L733.1,191.4 L733.6,191.4 L734.1,191.4 L734.6,191.4 L735.1,191.4 L735.6,179.8 L736.1,183.5 L736.6,188.4 L737.1,190.3 L737.6,190.6 L738.1,190.9 L738.6,191.1 L739.1,191.3 L739.6,180.8 L740.1,185.4 L740.6,189.2 L741.1,190.5 L741.6,190.8 L742.1,191.0 L742.6,191.2 L743.1,191.4 L743.6,191.4 L744.1,191.4 L744.6,191.4 L745.1,191.4 L745.6,191.4 L746.1,191.4 L746.6,191.4 L747.1,191.4 L747.6,191.4 L748.1,191.4 L748.6,191.4 L749.1,191.4 L749.6,191.4 L750.1,191.4 L750.6,191.4 L751.1,191.4 L751.6,191.4 L752.1,191.4 L752.6,191.4 L753.1,181.8 L753.6,183.5 L754.1,188.4 L754.6,190.4 L755.1,190.8 L755.6,191.0 L756.1,191.2 L756.6,191.4 L757.1,191.4 L757.6,191.4 L758.1,191.4 L758.6,191.4 L759.1,191.4 L759.6,191.4 L760.1,191.4 L760.6,191.4 L761.1,191.4 L761.6,191.4 L762.1,181.8 L762.6,184.8 L763.1,189.0 L763.6,190.5 L764.1,190.8 L764.6,191.1 L765.1,191.2 L765.6,191.4 L766.1,191.4 L766.6,191.4 L767.1,191.4 L767.6,191.4 L768.1,191.4 L768.6,191.4 L769.1,191.4 L769.6,191.4 L770.1,191.4 L770.6,191.4 L771.1,182.8 L771.6,186.6 L772.1,189.7 L772.6,190.7 L773.1,191.0 L773.6,191.2 L774.1,191.3 L774.6,191.4 L775.1,191.4 L775.6,191.4 L776.1,191.4 L776.6,191.4 L777.1,191.4 L777.6,191.4 L778.1,191.4 L778.6,191.4 L779.1,191.4 L779.6,191.4 L780.1,183.8 L780.6,185.1 L781.1,189.1 L781.6,190.7 L782.1,191.0 L782.6,191.2 L783.1,191.3 L783.6,191.4 L784.1,191.4 L784.6,191.4 L785.1,191.4 L785.6,191.4 L786.1,191.4 L786.6,191.4 L787.1,191.4 L787.6,191.4 L788.1,191.4 L788.6,174.8 L789.1,180.0 L789.6,187.0 L790.1,189.9 L790.6,190.6 L791.1,190.9 L791.6,191.1 L792.1,191.3 L792.6,191.4 L793.1,191.4 L793.6,191.4 L794.1,191.4 L794.6,191.4 L795.1,191.4 L795.6,191.4 L796.1,191.4 L796.6,191.4 L797.1,191.4 L797.6,191.4 L798.1,191.4 L798.6,191.4 L799.1,191.4 L799.6,191.4 L800.1,191.4 L800.6,191.4 L801.1,191.4 L801.6,191.4 L802.1,191.4 L802.6,191.4 L803.1,191.4 L803.6,191.4 L804.1,191.4 L804.6,191.4 L805.1,191.4 L805.6,191.4 L806.1,191.4 L806.6,178.8 L807.1,184.3 L807.6,188.8 L808.1,190.2 L808.6,190.6 L809.1,190.9 L809.6,191.1 L810.1,191.3 L810.6,191.4 L811.1,191.4 L811.6,191.4 L812.1,191.4 L812.6,191.4 L813.1,191.4 L813.6,191.4 L814.1,191.4 L814.6,191.4 L815.1,191.4 L815.6,191.4 L816.1,191.4 L816.6,191.4 L817.1,191.4 L817.6,191.4 L818.1,191.4 L818.6,191.4 L819.1,191.4 L819.6,191.4 L820.1,191.4 L820.6,191.4 L821.1,191.4 L821.6,191.4 L822.1,191.4 L822.6,191.4 L823.1,191.4 L823.6,191.4 L824.1,176.8 L824.6,181.4 L825.1,187.6 L825.6,190.1 L826.1,190.6 L826.6,190.9 L827.1,191.1 L827.6,191.3 L828.1,191.4 L828.6,191.4 L829.1,191.4 L829.6,191.4 L830.1,191.4 L830.6,191.4 L831.1,191.4 L831.6,191.4 L832.1,191.4 L832.6,191.4 L833.1,191.4 L833.6,191.4 L834.1,191.4 L834.6,191.4 L835.1,191.4 L835.6,191.4 L836.1,191.4 L836.6,191.4 L837.1,191.4 L837.6,191.4 L838.1,191.4 L838.6,191.4 L839.1,191.4 L839.6,191.4 L840.1,191.4 L840.6,191.4 L841.1,191.4 L841.6,191.4 L842.1,175.8 L842.6,184.1 L843.1,188.7 L843.6,190.3 L844.1,190.7 L844.6,191.0 L845.1,191.2 L845.6,191.3 L846.1,191.4 L846.6,191.4 L847.1,191.4 L847.6,191.4 L848.1,191.4 L848.6,191.4 L849.1,191.4 L849.6,191.4 L850.1,191.4 L850.6,191.4 L851.1,191.4 L851.6,191.4 L852.1,191.4 L852.6,191.4 L853.1,191.4 L853.6,191.4 L854.1,191.4 L854.6,191.4 L855.1,191.4 L855.6,191.4 L856.1,191.4 L856.6,191.4 L857.1,191.4 L857.6,191.4 L858.1,191.4 L858.6,191.4 L859.1,191.4 L859.6,175.8 L860.1,182.5 L860.6,188.1 L861.1,190.2 L861.6,190.6 L862.1,190.9 L862.6,191.1 L863.1,191.3 L863.6,191.4 L864.1,191.4 L864.6,191.4 L865.1,191.4 L865.6,191.4 L866.1,191.4 L866.6,191.4 L867.1,191.4 L867.6,191.4 L868.1,191.4 L868.6,191.4 L869.1,191.4 L869.6,191.4 L870.1,191.4 L870.6,191.4 L871.1,191.4 L871.6,191.4 L872.1,191.4 L872.6,191.4 L873.1,191.4 L873.6,191.4 L874.1,191.4 L874.6,191.4 L875.1,191.4 L875.6,191.4 L876.1,191.4 L876.6,191.4 L877.1,191.4 L877.6,178.8 L878.1,186.6 L878.6,189.7 L879.1,190.4 L879.6,190.7 L880.1,191.0 L880.6,191.2 L881.1,191.3 L881.6,191.4 L882.1,191.4 L882.6,191.4 L883.1,191.4 L883.6,191.4 L884.1,191.4 L884.6,191.4 L885.1,191.4 L885.6,191.4 L886.1,191.4 L886.6,191.4 L887.1,191.4 L887.6,191.4 L888.1,191.4 L888.6,191.4 L889.1,191.4 L889.6,191.4 L890.1,191.4 L890.6,178.8 L891.1,184.3 L891.6,188.8 L892.1,190.2 L892.6,190.6 L893.1,190.9 L893.6,191.1 L894.1,191.3 L894.6,191.4 L895.1,191.4 L895.6,191.4 L896.1,191.4 L896.6,191.4 L897.1,191.4 L897.6,191.4 L898.1,191.4 L898.6,191.4 L899.1,191.4 L899.6,174.8 L900.1,183.6 L900.6,188.5 L901.1,190.3 L901.6,190.7 L902.1,191.0 L902.6,191.2 L903.1,191.3 L903.6,191.4 L904.1,191.4 L904.6,191.4 L905.1,191.4 L905.6,191.4 L906.1,191.4 L906.6,191.4 L907.1,191.4 L907.6,191.4 L908.1,191.4 L908.6,191.4 L909.1,191.4 L909.6,191.4 L910.1,191.4 L910.6,191.4 L911.1,191.4 L911.6,191.4 L912.1,191.4 L912.6,176.8 L913.1,183.1 L913.6,188.3 L914.1,190.2 L914.6,190.6 L915.1,190.9 L915.6,191.1 L916.1,191.3 L916.6,191.4 L917.1,178.8 L917.6,181.0 L918.1,187.4 L918.6,190.0 L919.1,190.5 L919.6,190.8 L920.1,191.0 L920.6,191.2 L921.1,191.4 L921.6,191.4 L922.1,191.4 L922.6,191.4 L923.1,191.4 L923.6,191.4 L924.1,191.4 L924.6,191.4 L925.1,191.4 L925.6,191.4 L926.1,191.4 L926.6,191.4 L927.1,191.4 L927.6,191.4 L928.1,191.4 L928.6,191.4 L929.1,191.4 L929.6,191.4 L930.1,177.8 L930.6,182.1 L931.1,187.9 L931.6,190.2 L932.1,190.6 L932.6,190.9 L933.1,191.1 L933.6,191.3 L934.1,191.4 L934.6,191.4 L935.1,191.4 L935.6,191.4 L936.1,191.4 L936.6,191.4 L937.1,191.4 L937.6,191.4 L938.1,191.4 L938.6,191.4 L939.1,191.4 L939.6,191.4 L940.1,191.4 L940.6,191.4 L941.1,191.4 L941.6,191.4 L942.1,191.4 L942.6,191.4 L943.1,191.4 L943.6,191.4 L944.1,191.4 L944.6,191.4 L945.1,191.4 L945.6,191.4 L946.1,191.4 L946.6,191.4 L947.1,191.4 L947.6,191.4 L948.1,177.8 L948.6,185.0 L949.1,189.1 L949.6,190.3 L950.1,190.7 L950.6,191.0 L951.1,191.2 L951.6,191.3 L952.1,191.4 L952.6,191.4 L953.1,191.4 L953.6,191.4 L954.1,191.4 L954.6,191.4 L955.1,191.4 L955.6,191.4 L956.1,191.4 L956.6,191.4 L957.1,191.4 L957.6,191.4 L958.1,191.4 L958.6,191.4 L959.1,191.4 L959.6,191.4 L960.1,191.4 L960.6,191.4 L961.1,191.4 L961.6,191.4 L962.1,191.4 L962.6,191.4 L963.1,191.4 L963.6,191.4 L964.1,191.4 L964.6,191.4 L965.1,191.4 L965.6,191.4 L966.1,176.8 L966.6,185.8 L967.1,189.4 L967.6,190.4 L968.1,190.7 L968.6,191.0 L969.1,191.2 L969.6,191.3 L970.1,191.4 L970.6,191.4 L971.1,191.4 L971.6,191.4 L972.1,191.4 L972.6,191.4 L973.1,191.4 L973.6,191.4 L974.1,191.4 L974.6,191.4 L975.1,191.4 L975.6,191.4 L976.1,191.4 L976.6,191.4 L977.1,191.4 L977.6,191.4 L978.1,191.4 L978.6,191.4 L979.1,191.4 L979.6,191.4 L980.1,191.4 L980.6,191.4 L981.1,191.4 L981.6,191.4 L982.1,191.4 L982.6,191.4 L983.1,191.4 L983.6,191.4 L984.1,181.8 L984.6,183.5 L985.1,188.4 L985.6,190.4 L986.1,190.8 L986.6,191.0 L987.1,191.2 L987.6,191.4 L988.1,191.4 L988.6,191.4 L989.1,191.4 L989.6,191.4 L990.1,191.4 L990.6,191.4 L991.1,191.4 L991.6,191.4 L992.1,191.4 L992.6,191.4 L993.1,191.4 L993.6,191.4 L994.1,191.4 L994.6,191.4 L995.1,191.4 L995.6,191.4 L996.1,191.4 L996.6,191.4 L997.1,191.4 L997.6,191.4 L998.1,191.4 L998.6,191.4 L999.1,191.4 L999.6,191.4 L1000.1,191.4 L1000.6,191.4 L1001.1,173.8 L1001.6,181.4 L1002.1,187.6 L1002.6,190.1 L1003.1,190.6 L1003.6,190.9 L1004.1,191.1 L1004.6,191.3 L1005.1,191.4 L1005.6,191.4 L1006.1,191.4 L1006.6,191.4 L1007.1,191.4 L1007.6,191.4 L1008.1,191.4 L1008.6,191.4 L1009.1,191.4 L1009.6,191.4 L1010.1,191.4 L1010.6,191.4 L1011.1,191.4 L1011.6,191.4 L1012.1,191.4 L1012.6,191.4 L1013.1,191.4 L1013.6,191.4 L1014.1,191.4 L1014.6,191.4 L1015.1,191.4 L1015.6,191.4 L1016.1,191.4 L1016.6,191.4 L1017.1,191.4 L1017.6,191.4 L1018.1,191.4 L1018.6,191.4 L1019.1,177.8 L1019.6,186.2 L1020.1,189.5 L1020.6,190.4 L1021.1,190.7 L1021.6,191.0 L1022.1,191.2 L1022.6,179.8 L1023.1,181.8 L1023.6,187.8 L1024.1,190.2 L1024.6,190.6 L1025.1,190.9 L1025.6,191.1 L1026.1,191.3 L1026.6,191.4 L1027.1,191.4 L1027.6,191.4 L1028.1,191.4 L1028.6,191.4 L1029.1,191.4 L1029.6,191.4 L1030.1,191.4 L1030.6,191.4 L1031.1,191.4 L1031.6,191.4 L1032.1,191.4 L1032.6,191.4 L1033.1,191.4 L1033.6,191.4 L1034.1,191.4 L1034.6,191.4 L1035.1,191.4 L1035.6,191.4 L1036.1,191.4 L1036.6,191.4 L1037.1,191.4 L1037.6,191.4 L1038.1,191.4 L1038.6,191.4 L1039.1,191.4 L1039.6,191.4 L1040.1,191.4 L1040.6,191.4 L1041.1,181.8 L1041.6,184.8 L1042.1,189.0 L1042.6,190.5 L1043.1,190.8 L1043.6,191.1 L1044.1,191.2 L1044.6,191.4 L1045.1,191.4 L1045.6,179.8 L1046.1,183.5 L1046.6,188.4 L1047.1,190.3 L1047.6,190.6 L1048.1,190.9 L1048.6,191.1 L1049.1,191.3 L1049.6,178.8 L1050.1,178.8 L1050.6,186.6 L1051.1,189.7 L1051.6,190.4 L1052.1,190.7 L1052.6,191.0 L1053.1,191.2 L1053.6,191.3 L1054.1,179.8 L1054.6,181.8 L1055.1,187.8 L1055.6,190.2 L1056.1,190.6 L1056.6,190.9 L1057.1,191.1 L1057.6,191.3 L1058.1,191.4 L1058.6,191.4 L1059.1,180.8 L1059.6,185.4 L1060.1,189.2 L1060.6,190.5 L1061.1,190.8 L1061.6,191.0 L1062.1,191.2 L1062.6,191.4 L1063.1,179.8 L1063.6,186.0 L1064.1,189.5 L1064.6,190.4 L1065.1,190.8 L1065.6,191.0 L1066.1,191.2 L1066.6,191.3 L1067.1,191.4 L1067.6,182.8 L1068.1,187.5 L1068.6,190.0 L1069.1,190.8 L1069.6,191.0 L1070.1,191.2 L1070.6,191.4 L1071.1,191.4 L1071.6,191.4 L1072.1,176.8 L1072.6,181.4 L1073.1,187.6 L1073.6,190.1 L1074.1,190.6 L1074.6,190.9 L1075.1,191.1 L1075.6,191.3 L1076.1,191.4 L1076.6,191.4 L1077.1,191.4 L1077.6,191.4 L1078.1,191.4 L1078.6,191.4 L1079.1,191.4 L1079.6,191.4 L1080.1,191.4 L1080.6,191.4 L1081.1,191.4 L1081.6,191.4 L1082.1,191.4 L1082.6,191.4 L1083.1,191.4 L1083.6,191.4 L1084.1,191.4 L1084.6,191.4 L1085.1,191.4 L1085.6,191.4 L1086.1,191.4 L1086.6,191.4 L1087.1,191.4 L1087.6,191.4 L1088.1,191.4 L1088.6,191.4 L1089.1,191.4 L1089.6,180.8 L1090.1,182.6 L1090.6,188.1 L1091.1,190.3 L1091.6,190.7 L1092.1,190.9 L1092.6,191.2 L1093.1,191.3 L1093.6,184.8 L1094.1,186.9 L1094.6,189.8 L1095.1,190.9 L1095.6,191.1 L1096.1,191.3 L1096.6,191.4 L1097.1,191.4 L1097.6,191.4 L1098.1,191.4 L1098.6,191.4 L1099.1,191.4 L1099.6,191.4 L1100.1,191.4 L1100.6,191.4 L1101.1,191.4 L1101.6,191.4 L1102.1,191.4 L1102.6,176.8 L1103.1,176.8 L1103.6,185.8 L1104.1,189.4 L1104.6,190.4 L1105.1,190.7 L1105.6,191.0 L1106.1,191.2 L1106.6,191.3 L1107.1,191.4 L1107.6,191.4 L1108.1,191.4 L1108.6,191.4 L1109.1,191.4 L1109.6,191.4 L1110.1,191.4 L1110.6,191.4 L1111.1,191.4 L1111.6,191.4 L1112.1,177.8 L1112.6,183.7 L1113.1,188.5 L1113.6,190.2 L1114.1,190.6 L1114.6,190.9 L1115.1,191.1 L1115.6,191.3 L1116.1,191.4 L1116.6,191.4 L1117.1,191.4 L1117.6,191.4 L1118.1,191.4 L1118.6,191.4 L1119.1,191.4 L1119.6,191.4 L1120.1,191.4 L1120.6,191.4 L1121.1,191.4 L1121.6,191.4 L1122.1,191.4 L1122.6,191.4 L1123.1,191.4 L1123.6,191.4 L1124.1,191.4 L1124.6,191.4 L1125.1,191.4 L1125.6,177.8 L1126.1,182.1 L1126.6,187.9 L1127.1,190.2 L1127.6,190.6 L1128.1,190.9 L1128.6,191.1 L1129.1,191.3 L1129.6,178.8 L1130.1,178.8 L1130.6,186.6 L1131.1,189.7 L1131.6,190.4 L1132.1,190.7 L1132.6,191.0 L1133.1,191.2 L1133.6,191.3 L1134.1,191.4 L1134.6,191.4 L1135.1,191.4 L1135.6,191.4 L1136.1,191.4 L1136.6,191.4 L1137.1,191.4 L1137.6,191.4 L1138.1,191.4 L1138.6,191.4 L1139.1,191.4 L1139.6,191.4 L1140.1,191.4 L1140.6,191.4 L1141.1,191.4 L1141.6,191.4 L1142.1,191.4 L1142.6,191.4 L1143.1,178.8 L1143.6,184.3 L1144.1,188.8 L1144.6,190.2 L1145.1,190.6 L1145.6,190.9 L1146.1,191.1 L1146.6,191.3 L1147.1,191.4 L1147.6,191.4 L1148.1,191.4 L1148.6,191.4 L1149.1,191.4 L1149.6,191.4 L1150.1,191.4 L1150.6,191.4 L1151.1,191.4 L1151.6,191.4 L1152.1,191.4 L1152.6,191.4 L1153.1,191.4 L1153.6,191.4 L1154.1,191.4 L1154.6,191.4 L1155.1,191.4 L1155.6,191.4 L1156.1,191.4 L1156.6,181.8 L1157.1,184.8 L1157.6,189.0 L1158.1,190.5 L1158.6,190.8 L1159.1,191.1 L1159.6,191.2 L1160.1,191.4 L1160.6,191.4 L1161.1,191.4 L1161.6,191.4 L1162.1,191.4 L1162.6,191.4 L1163.1,191.4 L1163.6,191.4 L1164.1,191.4 L1164.6,191.4 L1165.1,178.8 L1165.6,178.8 L1166.1,186.6 L1166.6,189.7 L1167.1,190.4 L1167.6,190.7 L1168.1,191.0 L1168.6,191.2 L1169.1,191.3 L1169.6,191.4 L1170.1,191.4 L1170.6,191.4 L1171.1,191.4 L1171.6,191.4 L1172.1,191.4 L1172.6,191.4 L1173.1,191.4 L1173.6,177.8 L1174.1,180.1 L1174.6,187.1 L1175.1,189.9 L1175.6,190.5 L1176.1,190.8 L1176.6,191.0 L1177.1,191.2 L1177.6,191.4 L1178.1,191.4 L1178.6,191.4 L1179.1,191.4 L1179.6,191.4 L1180.1,191.4 L1180.6,191.4 L1181.1,191.4 L1181.6,191.4 L1182.1,191.4 L1182.6,176.8 L1183.1,176.8 L1183.6,185.8 L1184.1,189.4 L1184.6,190.4 L1185.1,190.7 L1185.6,191.0 L1186.1,191.2 L1186.6,191.3 L1187.1,191.4 L1187.6,191.4 L1188.1,191.4 L1188.6,191.4 L1189.1,191.4 L1189.6,191.4 L1190.1,191.4 L1190.6,191.4 L1191.1,191.4 L1191.6,191.4 L1192.1,179.8 L1192.6,184.8 L1193.1,189.0 L1193.6,190.3 L1194.1,190.7 L1194.6,191.0 L1195.1,191.2 L1195.6,191.3 L1196.1,191.4 L1196.6,191.4 L1197.1,191.4 L1197.6,191.4 L1198.1,191.4 L1198.6,191.4 L1199.1,191.4 L1199.6,191.4 L1199.6,192.2 L1199.1,192.2 L1198.6,192.2 L1198.1,192.2 L1197.6,192.2 L1197.1,192.2 L1196.6,192.2 L1196.1,192.2 L1195.6,192.3 L1195.1,192.4 L1194.6,192.6 L1194.1,192.9 L1193.6,193.3 L1193.1,194.6 L1192.6,198.8 L1192.1,203.8 L1191.6,192.2 L1191.1,192.2 L1190.6,192.2 L1190.1,192.2 L1189.6,192.2 L1189.1,192.2 L1188.6,192.2 L1188.1,192.2 L1187.6,192.2 L1187.1,192.2 L1186.6,192.3 L1186.1,192.4 L1185.6,192.6 L1185.1,192.9 L1184.6,193.2 L1184.1,194.2 L1183.6,197.8 L1183.1,206.8 L1182.6,206.8 L1182.1,192.2 L1181.6,192.2 L1181.1,192.2 L1180.6,192.2 L1180.1,192.2 L1179.6,192.2 L1179.1,192.2 L1178.6,192.2 L1178.1,192.2 L1177.6,192.2 L1177.1,192.4 L1176.6,192.6 L1176.1,192.8 L1175.6,193.1 L1175.1,193.7 L1174.6,196.5 L1174.1,203.5 L1173.6,205.8 L1173.1,192.2 L1172.6,192.2 L1172.1,192.2 L1171.6,192.2 L1171.1,192.2 L1170.6,192.2 L1170.1,192.2 L1169.6,192.2 L1169.1,192.3 L1168.6,192.4 L1168.1,192.6 L1167.6,192.9 L1167.1,193.2 L1166.6,193.9 L1166.1,197.0 L1165.6,204.8 L1165.1,204.8 L1164.6,192.2 L1164.1,192.2 L1163.6,192.2 L1163.1,192.2 L1162.6,192.2 L1162.1,192.2 L1161.6,192.2 L1161.1,192.2 L1160.6,192.2 L1160.1,192.2 L1159.6,192.4 L1159.1,192.5 L1158.6,192.8 L1158.1,193.1 L1157.6,194.6 L1157.1,198.8 L1156.6,201.8 L1156.1,192.2 L1155.6,192.2 L1155.1,192.2 L1154.6,192.2 L1154.1,192.2 L1153.6,192.2 L1153.1,192.2 L1152.6,192.2 L1152.1,192.2 L1151.6,192.2 L1151.1,192.2 L1150.6,192.2 L1150.1,192.2 L1149.6,192.2 L1149.1,192.2 L1148.6,192.2 L1148.1,192.2 L1147.6,192.2 L1147.1,192.2 L1146.6,192.3 L1146.1,192.5 L1145.6,192.7 L1145.1,193.0 L1144.6,193.4 L1144.1,194.8 L1143.6,199.3 L1143.1,204.8 L1142.6,192.2 L1142.1,192.2 L1141.6,192.2 L1141.1,192.2 L1140.6,192.2 L1140.1,192.2 L1139.6,192.2 L1139.1,192.2 L1138.6,192.2 L1138.1,192.2 L1137.6,192.2 L1137.1,192.2 L1136.6,192.2 L1136.1,192.2 L1135.6,192.2 L1135.1,192.2 L1134.6,192.2 L1134.1,192.2 L1133.6,192.3 L1133.1,192.4 L1132.6,192.6 L1132.1,192.9 L1131.6,193.2 L1131.1,193.9 L1130.6,197.0 L1130.1,204.8 L1129.6,204.8 L1129.1,192.3 L1128.6,192.5 L1128.1,192.7 L1127.6,193.0 L1127.1,193.4 L1126.6,195.7 L1126.1,201.5 L1125.6,205.8 L1125.1,192.2 L1124.6,192.2 L1124.1,192.2 L1123.6,192.2 L1123.1,192.2 L1122.6,192.2 L1122.1,192.2 L1121.6,192.2 L1121.1,192.2 L1120.6,192.2 L1120.1,192.2 L1119.6,192.2 L1119.1,192.2 L1118.6,192.2 L1118.1,192.2 L1117.6,192.2 L1117.1,192.2 L1116.6,192.2 L1116.1,192.2 L1115.6,192.3 L1115.1,192.5 L1114.6,192.7 L1114.1,193.0 L1113.6,193.4 L1113.1,195.1 L1112.6,199.9 L1112.1,205.8 L1111.6,192.2 L1111.1,192.2 L1110.6,192.2 L1110.1,192.2 L1109.6,192.2 L1109.1,192.2 L1108.6,192.2 L1108.1,192.2 L1107.6,192.2 L1107.1,192.2 L1106.6,192.3 L1106.1,192.4 L1105.6,192.6 L1105.1,192.9 L1104.6,193.2 L1104.1,194.2 L1103.6,197.8 L1103.1,206.8 L1102.6,206.8 L1102.1,192.2 L1101.6,192.2 L1101.1,192.2 L1100.6,192.2 L1100.1,192.2 L1099.6,192.2 L1099.1,192.2 L1098.6,192.2 L1098.1,192.2 L1097.6,192.2 L1097.1,192.2 L1096.6,192.2 L1096.1,192.3 L1095.6,192.5 L1095.1,192.7 L1094.6,193.8 L1094.1,196.7 L1093.6,198.8 L1093.1,192.3 L1092.6,192.4 L1092.1,192.7 L1091.6,192.9 L1091.1,193.3 L1090.6,195.5 L1090.1,201.0 L1089.6,202.8 L1089.1,192.2 L1088.6,192.2 L1088.1,192.2 L1087.6,192.2 L1087.1,192.2 L1086.6,192.2 L1086.1,192.2 L1085.6,192.2 L1085.1,192.2 L1084.6,192.2 L1084.1,192.2 L1083.6,192.2 L1083.1,192.2 L1082.6,192.2 L1082.1,192.2 L1081.6,192.2 L1081.1,192.2 L1080.6,192.2 L1080.1,192.2 L1079.6,192.2 L1079.1,192.2 L1078.6,192.2 L1078.1,192.2 L1077.6,192.2 L1077.1,192.2 L1076.6,192.2 L1076.1,192.2 L1075.6,192.3 L1075.1,192.5 L1074.6,192.7 L1074.1,193.0 L1073.6,193.5 L1073.1,196.0 L1072.6,202.2 L1072.1,206.8 L1071.6,192.2 L1071.1,192.2 L1070.6,192.2 L1070.1,192.4 L1069.6,192.6 L1069.1,192.8 L1068.6,193.6 L1068.1,196.1 L1067.6,200.8 L1067.1,192.2 L1066.6,192.3 L1066.1,192.4 L1065.6,192.6 L1065.1,192.8 L1064.6,193.2 L1064.1,194.1 L1063.6,197.6 L1063.1,203.8 L1062.6,192.2 L1062.1,192.4 L1061.6,192.6 L1061.1,192.8 L1060.6,193.1 L1060.1,194.4 L1059.6,198.2 L1059.1,202.8 L1058.6,192.2 L1058.1,192.2 L1057.6,192.3 L1057.1,192.5 L1056.6,192.7 L1056.1,193.0 L1055.6,193.4 L1055.1,195.8 L1054.6,201.8 L1054.1,203.8 L1053.6,192.3 L1053.1,192.4 L1052.6,192.6 L1052.1,192.9 L1051.6,193.2 L1051.1,193.9 L1050.6,197.0 L1050.1,204.8 L1049.6,204.8 L1049.1,192.3 L1048.6,192.5 L1048.1,192.7 L1047.6,193.0 L1047.1,193.3 L1046.6,195.2 L1046.1,200.1 L1045.6,203.8 L1045.1,192.2 L1044.6,192.2 L1044.1,192.4 L1043.6,192.5 L1043.1,192.8 L1042.6,193.1 L1042.1,194.6 L1041.6,198.8 L1041.1,201.8 L1040.6,192.2 L1040.1,192.2 L1039.6,192.2 L1039.1,192.2 L1038.6,192.2 L1038.1,192.2 L1037.6,192.2 L1037.1,192.2 L1036.6,192.2 L1036.1,192.2 L1035.6,192.2 L1035.1,192.2 L1034.6,192.2 L1034.1,192.2 L1033.6,192.2 L1033.1,192.2 L1032.6,192.2 L1032.1,192.2 L1031.6,192.2 L1031.1,192.2 L1030.6,192.2 L1030.1,192.2 L1029.6,192.2 L1029.1,192.2 L1028.6,192.2 L1028.1,192.2 L1027.6,192.2 L1027.1,192.2 L1026.6,192.2 L1026.1,192.3 L1025.6,192.5 L1025.1,192.7 L1024.6,193.0 L1024.1,193.4 L1023.6,195.8 L1023.1,201.8 L1022.6,203.8 L1022.1,192.4 L1021.6,192.6 L1021.1,192.9 L1020.6,193.2 L1020.1,194.1 L1019.6,197.4 L1019.1,205.8 L1018.6,192.2 L1018.1,192.2 L1017.6,192.2 L1017.1,192.2 L1016.6,192.2 L1016.1,192.2 L1015.6,192.2 L1015.1,192.2 L1014.6,192.2 L1014.1,192.2 L1013.6,192.2 L1013.1,192.2 L1012.6,192.2 L1012.1,192.2 L1011.6,192.2 L1011.1,192.2 L1010.6,192.2 L1010.1,192.2 L1009.6,192.2 L1009.1,192.2 L1008.6,192.2 L1008.1,192.2 L1007.6,192.2 L1007.1,192.2 L1006.6,192.2 L1006.1,192.2 L1005.6,192.2 L1005.1,192.2 L1004.6,192.3 L1004.1,192.5 L1003.6,192.7 L1003.1,193.0 L1002.6,193.5 L1002.1,196.0 L1001.6,202.2 L1001.1,209.8 L1000.6,192.2 L1000.1,192.2 L999.6,192.2 L999.1,192.2 L998.6,192.2 L998.1,192.2 L997.6,192.2 L997.1,192.2 L996.6,192.2 L996.1,192.2 L995.6,192.2 L995.1,192.2 L994.6,192.2 L994.1,192.2 L993.6,192.2 L993.1,192.2 L992.6,192.2 L992.1,192.2 L991.6,192.2 L991.1,192.2 L990.6,192.2 L990.1,192.2 L989.6,192.2 L989.1,192.2 L988.6,192.2 L988.1,192.2 L987.6,192.2 L987.1,192.4 L986.6,192.6 L986.1,192.8 L985.6,193.2 L985.1,195.2 L984.6,200.1 L984.1,201.8 L983.6,192.2 L983.1,192.2 L982.6,192.2 L982.1,192.2 L981.6,192.2 L981.1,192.2 L980.6,192.2 L980.1,192.2 L979.6,192.2 L979.1,192.2 L978.6,192.2 L978.1,192.2 L977.6,192.2 L977.1,192.2 L976.6,192.2 L976.1,192.2 L975.6,192.2 L975.1,192.2 L974.6,192.2 L974.1,192.2 L973.6,192.2 L973.1,192.2 L972.6,192.2 L972.1,192.2 L971.6,192.2 L971.1,192.2 L970.6,192.2 L970.1,192.2 L969.6,192.3 L969.1,192.4 L968.6,192.6 L968.1,192.9 L967.6,193.2 L967.1,194.2 L966.6,197.8 L966.1,206.8 L965.6,192.2 L965.1,192.2 L964.6,192.2 L964.1,192.2 L963.6,192.2 L963.1,192.2 L962.6,192.2 L962.1,192.2 L961.6,192.2 L961.1,192.2 L960.6,192.2 L960.1,192.2 L959.6,192.2 L959.1,192.2 L958.6,192.2 L958.1,192.2 L957.6,192.2 L957.1,192.2 L956.6,192.2 L956.1,192.2 L955.6,192.2 L955.1,192.2 L954.6,192.2 L954.1,192.2 L953.6,192.2 L953.1,192.2 L952.6,192.2 L952.1,192.2 L951.6,192.3 L951.1,192.4 L950.6,192.6 L950.1,192.9 L949.6,193.3 L949.1,194.5 L948.6,198.6 L948.1,205.8 L947.6,192.2 L947.1,192.2 L946.6,192.2 L946.1,192.2 L945.6,192.2 L945.1,192.2 L944.6,192.2 L944.1,192.2 L943.6,192.2 L943.1,192.2 L942.6,192.2 L942.1,192.2 L941.6,192.2 L941.1,192.2 L940.6,192.2 L940.1,192.2 L939.6,192.2 L939.1,192.2 L938.6,192.2 L938.1,192.2 L937.6,192.2 L937.1,192.2 L936.6,192.2 L936.1,192.2 L935.6,192.2 L935.1,192.2 L934.6,192.2 L934.1,192.2 L933.6,192.3 L933.1,192.5 L932.6,192.7 L932.1,193.0 L931.6,193.4 L931.1,195.7 L930.6,201.5 L930.1,205.8 L929.6,192.2 L929.1,192.2 L928.6,192.2 L928.1,192.2 L927.6,192.2 L927.1,192.2 L926.6,192.2 L926.1,192.2 L925.6,192.2 L925.1,192.2 L924.6,192.2 L924.1,192.2 L923.6,192.2 L923.1,192.2 L922.6,192.2 L922.1,192.2 L921.6,192.2 L921.1,192.2 L920.6,192.4 L920.1,192.6 L919.6,192.8 L919.1,193.1 L918.6,193.6 L918.1,196.2 L917.6,202.6 L917.1,204.8 L916.6,192.2 L916.1,192.3 L915.6,192.5 L915.1,192.7 L914.6,193.0 L914.1,193.4 L913.6,195.3 L913.1,200.5 L912.6,206.8 L912.1,192.2 L911.6,192.2 L911.1,192.2 L910.6,192.2 L910.1,192.2 L909.6,192.2 L909.1,192.2 L908.6,192.2 L908.1,192.2 L907.6,192.2 L907.1,192.2 L906.6,192.2 L906.1,192.2 L905.6,192.2 L905.1,192.2 L904.6,192.2 L904.1,192.2 L903.6,192.2 L903.1,192.3 L902.6,192.4 L902.1,192.6 L901.6,192.9 L901.1,193.3 L900.6,195.1 L900.1,200.0 L899.6,208.8 L899.1,192.2 L898.6,192.2 L898.1,192.2 L897.6,192.2 L897.1,192.2 L896.6,192.2 L896.1,192.2 L895.6,192.2 L895.1,192.2 L894.6,192.2 L894.1,192.3 L893.6,192.5 L893.1,192.7 L892.6,193.0 L892.1,193.4 L891.6,194.8 L891.1,199.3 L890.6,204.8 L890.1,192.2 L889.6,192.2 L889.1,192.2 L888.6,192.2 L888.1,192.2 L887.6,192.2 L887.1,192.2 L886.6,192.2 L886.1,192.2 L885.6,192.2 L885.1,192.2 L884.6,192.2 L884.1,192.2 L883.6,192.2 L883.1,192.2 L882.6,192.2 L882.1,192.2 L881.6,192.2 L881.1,192.3 L880.6,192.4 L880.1,192.6 L879.6,192.9 L879.1,193.2 L878.6,193.9 L878.1,197.0 L877.6,204.8 L877.1,192.2 L876.6,192.2 L876.1,192.2 L875.6,192.2 L875.1,192.2 L874.6,192.2 L874.1,192.2 L873.6,192.2 L873.1,192.2 L872.6,192.2 L872.1,192.2 L871.6,192.2 L871.1,192.2 L870.6,192.2 L870.1,192.2 L869.6,192.2 L869.1,192.2 L868.6,192.2 L868.1,192.2 L867.6,192.2 L867.1,192.2 L866.6,192.2 L866.1,192.2 L865.6,192.2 L865.1,192.2 L864.6,192.2 L864.1,192.2 L863.6,192.2 L863.1,192.3 L862.6,192.5 L862.1,192.7 L861.6,193.0 L861.1,193.4 L860.6,195.5 L860.1,201.1 L859.6,207.8 L859.1,192.2 L858.6,192.2 L858.1,192.2 L857.6,192.2 L857.1,192.2 L856.6,192.2 L856.1,192.2 L855.6,192.2 L855.1,192.2 L854.6,192.2 L854.1,192.2 L853.6,192.2 L853.1,192.2 L852.6,192.2 L852.1,192.2 L851.6,192.2 L851.1,192.2 L850.6,192.2 L850.1,192.2 L849.6,192.2 L849.1,192.2 L848.6,192.2 L848.1,192.2 L847.6,192.2 L847.1,192.2 L846.6,192.2 L846.1,192.2 L845.6,192.3 L845.1,192.4 L844.6,192.6 L844.1,192.9 L843.6,193.3 L843.1,194.9 L842.6,199.5 L842.1,207.8 L841.6,192.2 L841.1,192.2 L840.6,192.2 L840.1,192.2 L839.6,192.2 L839.1,192.2 L838.6,192.2 L838.1,192.2 L837.6,192.2 L837.1,192.2 L836.6,192.2 L836.1,192.2 L835.6,192.2 L835.1,192.2 L834.6,192.2 L834.1,192.2 L833.6,192.2 L833.1,192.2 L832.6,192.2 L832.1,192.2 L831.6,192.2 L831.1,192.2 L830.6,192.2 L830.1,192.2 L829.6,192.2 L829.1,192.2 L828.6,192.2 L828.1,192.2 L827.6,192.3 L827.1,192.5 L826.6,192.7 L826.1,193.0 L825.6,193.5 L825.1,196.0 L824.6,202.2 L824.1,206.8 L823.6,192.2 L823.1,192.2 L822.6,192.2 L822.1,192.2 L821.6,192.2 L821.1,192.2 L820.6,192.2 L820.1,192.2 L819.6,192.2 L819.1,192.2 L818.6,192.2 L818.1,192.2 L817.6,192.2 L817.1,192.2 L816.6,192.2 L816.1,192.2 L815.6,192.2 L815.1,192.2 L814.6,192.2 L814.1,192.2 L813.6,192.2 L813.1,192.2 L812.6,192.2 L812.1,192.2 L811.6,192.2 L811.1,192.2 L810.6,192.2 L810.1,192.3 L809.6,192.5 L809.1,192.7 L808.6,193.0 L808.1,193.4 L807.6,194.8 L807.1,199.3 L806.6,204.8 L806.1,192.2 L805.6,192.2 L805.1,192.2 L804.6,192.2 L804.1,192.2 L803.6,192.2 L803.1,192.2 L802.6,192.2 L802.1,192.2 L801.6,192.2 L801.1,192.2 L800.6,192.2 L800.1,192.2 L799.6,192.2 L799.1,192.2 L798.6,192.2 L798.1,192.2 L797.6,192.2 L797.1,192.2 L796.6,192.2 L796.1,192.2 L795.6,192.2 L795.1,192.2 L794.6,192.2 L794.1,192.2 L793.6,192.2 L793.1,192.2 L792.6,192.2 L792.1,192.3 L791.6,192.5 L791.1,192.7 L790.6,193.0 L790.1,193.7 L789.6,196.6 L789.1,203.6 L788.6,208.8 L788.1,192.2 L787.6,192.2 L787.1,192.2 L786.6,192.2 L786.1,192.2 L785.6,192.2 L785.1,192.2 L784.6,192.2 L784.1,192.2 L783.6,192.2 L783.1,192.3 L782.6,192.4 L782.1,192.6 L781.6,192.9 L781.1,194.5 L780.6,198.5 L780.1,199.8 L779.6,192.2 L779.1,192.2 L778.6,192.2 L778.1,192.2 L777.6,192.2 L777.1,192.2 L776.6,192.2 L776.1,192.2 L775.6,192.2 L775.1,192.2 L774.6,192.2 L774.1,192.3 L773.6,192.4 L773.1,192.6 L772.6,192.9 L772.1,193.9 L771.6,197.0 L771.1,200.8 L770.6,192.2 L770.1,192.2 L769.6,192.2 L769.1,192.2 L768.6,192.2 L768.1,192.2 L767.6,192.2 L767.1,192.2 L766.6,192.2 L766.1,192.2 L765.6,192.2 L765.1,192.4 L764.6,192.5 L764.1,192.8 L763.6,193.1 L763.1,194.6 L762.6,198.8 L762.1,201.8 L761.6,192.2 L761.1,192.2 L760.6,192.2 L760.1,192.2 L759.6,192.2 L759.1,192.2 L758.6,192.2 L758.1,192.2 L757.6,192.2 L757.1,192.2 L756.6,192.2 L756.1,192.4 L755.6,192.6 L755.1,192.8 L754.6,193.2 L754.1,195.2 L753.6,200.1 L753.1,201.8 L752.6,192.2 L752.1,192.2 L751.6,192.2 L751.1,192.2 L750.6,192.2 L750.1,192.2 L749.6,192.2 L749.1,192.2 L748.6,192.2 L748.1,192.2 L747.6,192.2 L747.1,192.2 L746.6,192.2 L746.1,192.2 L745.6,192.2 L745.1,192.2 L744.6,192.2 L744.1,192.2 L743.6,192.2 L743.1,192.2 L742.6,192.4 L742.1,192.6 L741.6,192.8 L741.1,193.1 L740.6,194.4 L740.1,198.2 L739.6,202.8 L739.1,192.3 L738.6,192.5 L738.1,192.7 L737.6,193.0 L737.1,193.3 L736.6,195.2 L736.1,200.1 L735.6,203.8 L735.1,192.2 L734.6,192.2 L734.1,192.2 L733.6,192.2 L733.1,192.2 L732.6,192.2 L732.1,192.2 L731.6,192.2 L731.1,192.2 L730.6,192.2 L730.1,192.2 L729.6,192.2 L729.1,192.2 L728.6,192.2 L728.1,192.2 L727.6,192.2 L727.1,192.2 L726.6,192.2 L726.1,192.2 L725.6,192.2 L725.1,192.2 L724.6,192.2 L724.1,192.2 L723.6,192.2 L723.1,192.2 L722.6,192.2 L722.1,192.2 L721.6,192.2 L721.1,192.3 L720.6,192.5 L720.1,192.7 L719.6,193.0 L719.1,193.4 L718.6,195.1 L718.1,199.9 L717.6,205.8 L717.1,192.2 L716.6,192.2 L716.1,192.2 L715.6,192.2 L715.1,192.2 L714.6,192.2 L714.1,192.2 L713.6,192.2 L713.1,192.2 L712.6,192.2 L712.1,192.2 L711.6,192.2 L711.1,192.2 L710.6,192.2 L710.1,192.2 L709.6,192.2 L709.1,192.2 L708.6,192.2 L708.1,192.2 L707.6,192.2 L707.1,192.3 L706.6,192.4 L706.1,192.6 L705.6,192.9 L705.1,193.2 L704.6,194.1 L704.1,197.4 L703.6,205.8 L703.1,192.4 L702.6,192.6 L702.1,192.8 L701.6,193.1 L701.1,193.7 L700.6,196.5 L700.1,203.5 L699.6,205.8 L699.1,192.2 L698.6,192.2 L698.1,192.2 L697.6,192.2 L697.1,192.2 L696.6,192.2 L696.1,192.2 L695.6,192.2 L695.1,192.2 L694.6,192.2 L694.1,192.2 L693.6,192.2 L693.1,192.2 L692.6,192.2 L692.1,192.2 L691.6,192.2 L691.1,192.2 L690.6,192.2 L690.1,192.2 L689.6,192.2 L689.1,192.2 L688.6,192.2 L688.1,192.2 L687.6,192.2 L687.1,192.2 L686.6,192.2 L686.1,192.2 L685.6,192.2 L685.1,192.2 L684.6,192.2 L684.1,192.2 L683.6,192.2 L683.1,192.2 L682.6,192.2 L682.1,192.2 L681.6,192.2 L681.1,192.2 L680.6,192.3 L680.1,192.5 L679.6,192.7 L679.1,193.0 L678.6,193.5 L678.1,196.0 L677.6,202.2 L677.1,206.8 L676.6,192.2 L676.1,192.2 L675.6,192.2 L675.1,192.2 L674.6,192.2 L674.1,192.2 L673.6,192.2 L673.1,192.2 L672.6,192.2 L672.1,192.2 L671.6,192.2 L671.1,192.2 L670.6,192.2 L670.1,192.2 L669.6,192.2 L669.1,192.2 L668.6,192.2 L668.1,192.3 L667.6,192.5 L667.1,192.7 L666.6,193.0 L666.1,193.4 L665.6,195.8 L665.1,201.8 L664.6,203.8 L664.1,192.2 L663.6,192.2 L663.1,192.2 L662.6,192.2 L662.1,192.2 L661.6,192.2 L661.1,192.2 L660.6,192.2 L660.1,192.2 L659.6,192.2 L659.1,192.2 L658.6,192.2 L658.1,192.2 L657.6,192.2 L657.1,192.2 L656.6,192.2 L656.1,192.2 L655.6,192.2 L655.1,192.2 L654.6,192.2 L654.1,192.2 L653.6,192.2 L653.1,192.2 L652.6,192.2 L652.1,192.2 L651.6,192.2 L651.1,192.2 L650.6,192.2 L650.1,192.3 L649.6,192.4 L649.1,192.6 L648.6,192.9 L648.1,193.2 L647.6,194.9 L647.1,199.4 L646.6,202.8 L646.1,192.2 L645.6,192.2 L645.1,192.2 L644.6,192.2 L644.1,192.2 L643.6,192.2 L643.1,192.2 L642.6,192.2 L642.1,192.2 L641.6,192.2 L641.1,192.2 L640.6,192.2 L640.1,192.2 L639.6,192.2 L639.1,192.2 L638.6,192.2 L638.1,192.2 L637.6,192.2 L637.1,192.2 L636.6,192.2 L636.1,192.2 L635.6,192.2 L635.1,192.2 L634.6,192.2 L634.1,192.2 L633.6,192.2 L633.1,192.2 L632.6,192.2 L632.1,192.2 L631.6,192.2 L631.1,192.2 L630.6,192.2 L630.1,192.2 L629.6,192.2 L629.1,192.2 L628.6,192.2 L628.1,192.2 L627.6,192.3 L627.1,192.4 L626.6,192.6 L626.1,192.9 L625.6,193.2 L625.1,194.9 L624.6,199.4 L624.1,202.8 L623.6,192.2 L623.1,192.2 L622.6,192.2 L622.1,192.2 L621.6,192.2 L621.1,192.2 L620.6,192.2 L620.1,192.2 L619.6,192.2 L619.1,192.2 L618.6,192.3 L618.1,192.4 L617.6,192.6 L617.1,192.9 L616.6,193.3 L616.1,194.3 L615.6,198.1 L615.1,204.8 L614.6,192.2 L614.1,192.2 L613.6,192.2 L613.1,192.2 L612.6,192.2 L612.1,192.2 L611.6,192.2 L611.1,192.2 L610.6,192.2 L610.1,192.2 L609.6,192.4 L609.1,192.6 L608.6,192.8 L608.1,193.1 L607.6,193.8 L607.1,196.8 L606.6,204.3 L606.1,206.8 L605.6,192.2 L605.1,192.2 L604.6,192.2 L604.1,192.2 L603.6,192.2 L603.1,192.2 L602.6,192.2 L602.1,192.2 L601.6,192.2 L601.1,192.2 L600.6,192.2 L600.1,192.2 L599.6,192.2 L599.1,192.2 L598.6,192.2 L598.1,192.2 L597.6,192.3 L597.1,192.4 L596.6,192.6 L596.1,192.9 L595.6,193.3 L595.1,194.3 L594.6,198.1 L594.1,204.8 L593.6,192.2 L593.1,192.2 L592.6,192.2 L592.1,192.2 L591.6,192.2 L591.1,192.2 L590.6,192.2 L590.1,192.2 L589.6,192.2 L589.1,192.2 L588.6,192.2 L588.1,192.2 L587.6,192.2 L587.1,192.2 L586.6,192.2 L586.1,192.2 L585.6,192.2 L585.1,192.2 L584.6,192.2 L584.1,192.2 L583.6,192.2 L583.1,192.2 L582.6,192.2 L582.1,192.2 L581.6,192.2 L581.1,192.2 L580.6,192.2 L580.1,192.2 L579.6,192.3 L579.1,192.5 L578.6,192.7 L578.1,193.0 L577.6,193.4 L577.1,194.8 L576.6,199.3 L576.1,204.8 L575.6,192.2 L575.1,192.2 L574.6,192.2 L574.1,192.2 L573.6,192.2 L573.1,192.2 L572.6,192.2 L572.1,192.2 L571.6,192.2 L571.1,192.2 L570.6,192.2 L570.1,192.2 L569.6,192.2 L569.1,192.2 L568.6,192.2 L568.1,192.2 L567.6,192.2 L567.1,192.2 L566.6,192.2 L566.1,192.2 L565.6,192.2 L565.1,192.2 L564.6,192.2 L564.1,192.2 L563.6,192.2 L563.1,192.2 L562.6,192.2 L562.1,192.2 L561.6,192.3 L561.1,192.4 L560.6,192.6 L560.1,192.9 L559.6,193.3 L559.1,194.7 L558.6,199.0 L558.1,206.8 L557.6,192.2 L557.1,192.2 L556.6,192.2 L556.1,192.2 L555.6,192.2 L555.1,192.2 L554.6,192.2 L554.1,192.2 L553.6,192.2 L553.1,192.2 L552.6,192.2 L552.1,192.2 L551.6,192.2 L551.1,192.2 L550.6,192.2 L550.1,192.2 L549.6,192.2 L549.1,192.2 L548.6,192.2 L548.1,192.2 L547.6,192.2 L547.1,192.2 L546.6,192.2 L546.1,192.2 L545.6,192.2 L545.1,192.2 L544.6,192.2 L544.1,192.2 L543.6,192.3 L543.1,192.5 L542.6,192.7 L542.1,193.0 L541.6,193.5 L541.1,196.0 L540.6,202.2 L540.1,206.8 L539.6,192.2 L539.1,192.2 L538.6,192.2 L538.1,192.2 L537.6,192.2 L537.1,192.2 L536.6,192.2 L536.1,192.2 L535.6,192.2 L535.1,192.2 L534.6,192.2 L534.1,192.2 L533.6,192.2 L533.1,192.2 L532.6,192.2 L532.1,192.2 L531.6,192.2 L531.1,192.2 L530.6,192.2 L530.1,192.2 L529.6,192.2 L529.1,192.2 L528.6,192.2 L528.1,192.2 L527.6,192.2 L527.1,192.2 L526.6,192.3 L526.1,192.4 L525.6,192.6 L525.1,192.9 L524.6,193.3 L524.1,194.6 L523.6,198.8 L523.1,203.8 L522.6,192.2 L522.1,192.2 L521.6,192.2 L521.1,192.2 L520.6,192.2 L520.1,192.2 L519.6,192.2 L519.1,192.2 L518.6,192.2 L518.1,192.2 L517.6,192.2 L517.1,192.2 L516.6,192.2 L516.1,192.2 L515.6,192.2 L515.1,192.2 L514.6,192.2 L514.1,192.2 L513.6,192.2 L513.1,192.2 L512.6,192.2 L512.1,192.2 L511.6,192.2 L511.1,192.2 L510.6,192.2 L510.1,192.2 L509.6,192.2 L509.1,192.2 L508.6,192.2 L508.1,192.3 L507.6,192.5 L507.1,192.7 L506.6,193.0 L506.1,193.4 L505.6,195.7 L505.1,201.5 L504.6,205.8 L504.1,192.2 L503.6,192.2 L503.1,192.2 L502.6,192.2 L502.1,192.2 L501.6,192.2 L501.1,192.2 L500.6,192.2 L500.1,192.2 L499.6,192.2 L499.1,192.3 L498.6,192.5 L498.1,192.8 L497.6,193.1 L497.1,193.9 L496.6,197.1 L496.1,202.8 L495.6,192.2 L495.1,192.2 L494.6,192.2 L494.1,192.2 L493.6,192.2 L493.1,192.2 L492.6,192.2 L492.1,192.2 L491.6,192.2 L491.1,192.2 L490.6,192.2 L490.1,192.3 L489.6,192.5 L489.1,192.7 L488.6,193.0 L488.1,194.1 L487.6,197.6 L487.1,201.8 L486.6,192.2 L486.1,192.2 L485.6,192.2 L485.1,192.2 L484.6,192.2 L484.1,192.2 L483.6,192.2 L483.1,192.2 L482.6,192.2 L482.1,192.2 L481.6,192.2 L481.1,192.4 L480.6,192.5 L480.1,192.8 L479.6,193.3 L479.1,195.4 L478.6,200.8 L478.1,192.2 L477.6,192.2 L477.1,192.2 L476.6,192.2 L476.1,192.2 L475.6,192.2 L475.1,192.2 L474.6,192.2 L474.1,192.2 L473.6,192.2 L473.1,192.3 L472.6,192.4 L472.1,192.6 L471.6,192.9 L471.1,193.3 L470.6,195.3 L470.1,200.5 L469.6,209.8 L469.1,192.2 L468.6,192.2 L468.1,192.2 L467.6,192.2 L467.1,192.2 L466.6,192.2 L466.1,192.2 L465.6,192.2 L465.1,192.2 L464.6,192.2 L464.1,192.2 L463.6,192.2 L463.1,192.2 L462.6,192.2 L462.1,192.2 L461.6,192.2 L461.1,192.2 L460.6,192.2 L460.1,192.2 L459.6,192.2 L459.1,192.2 L458.6,192.2 L458.1,192.2 L457.6,192.2 L457.1,192.2 L456.6,192.2 L456.1,192.2 L455.6,192.2 L455.1,192.3 L454.6,192.5 L454.1,192.7 L453.6,193.0 L453.1,193.3 L452.6,195.2 L452.1,200.3 L451.6,207.0 L451.1,192.2 L450.6,192.2 L450.1,192.2 L449.6,192.2 L449.1,192.2 L448.6,192.2 L448.1,192.2 L447.6,192.2 L447.1,192.2 L446.6,192.2 L446.1,192.2 L445.6,192.2 L445.1,192.2 L444.6,192.2 L444.1,192.2 L443.6,192.2 L443.1,192.2 L442.6,192.2 L442.1,192.2 L441.6,192.2 L441.1,192.2 L440.6,192.2 L440.1,192.2 L439.6,192.2 L439.1,192.2 L438.6,192.2 L438.1,192.2 L437.6,192.2 L437.1,192.4 L436.6,192.6 L436.1,192.8 L435.6,193.2 L435.1,194.2 L434.6,197.8 L434.1,206.7 L433.6,207.8 L433.1,192.2 L432.6,192.2 L432.1,192.2 L431.6,192.2 L431.1,192.2 L430.6,192.2 L430.1,192.2 L429.6,192.2 L429.1,192.2 L428.6,192.2 L428.1,192.2 L427.6,192.2 L427.1,192.2 L426.6,192.2 L426.1,192.2 L425.6,192.2 L425.1,192.2 L424.6,192.2 L424.1,192.2 L423.6,192.2 L423.1,192.2 L422.6,192.2 L422.1,192.2 L421.6,192.2 L421.1,192.2 L420.6,192.2 L420.1,192.2 L419.6,192.3 L419.1,192.5 L418.6,192.7 L418.1,193.0 L417.6,193.4 L417.1,195.8 L416.6,201.8 L416.1,207.8 L415.6,192.2 L415.1,192.2 L414.6,192.2 L414.1,192.2 L413.6,192.2 L413.1,192.2 L412.6,192.2 L412.1,192.2 L411.6,192.2 L411.1,192.2 L410.6,192.2 L410.1,192.2 L409.6,192.2 L409.1,192.2 L408.6,192.2 L408.1,192.2 L407.6,192.2 L407.1,192.2 L406.6,192.2 L406.1,192.2 L405.6,192.2 L405.1,192.2 L404.6,192.2 L404.1,192.2 L403.6,192.2 L403.1,192.2 L402.6,192.2 L402.1,192.3 L401.6,192.4 L401.1,192.6 L400.6,192.9 L400.1,193.2 L399.6,194.6 L399.1,198.9 L398.6,208.7 L398.1,192.2 L397.6,192.2 L397.1,192.2 L396.6,192.2 L396.1,192.2 L395.6,192.2 L395.1,192.2 L394.6,192.2 L394.1,192.2 L393.6,192.2 L393.1,192.2 L392.6,192.2 L392.1,192.2 L391.6,192.2 L391.1,192.2 L390.6,192.2 L390.1,192.2 L389.6,192.2 L389.1,192.2 L388.6,192.2 L388.1,192.2 L387.6,192.2 L387.1,192.2 L386.6,192.2 L386.1,192.2 L385.6,192.2 L385.1,192.2 L384.6,192.2 L384.1,192.3 L383.6,192.5 L383.1,192.7 L382.6,193.0 L382.1,193.7 L381.6,196.5 L381.1,203.5 L380.6,208.7 L380.1,192.2 L379.6,192.2 L379.1,192.2 L378.6,192.2 L378.1,192.2 L377.6,192.2 L377.1,192.2 L376.6,192.2 L376.1,192.2 L375.6,192.2 L375.1,192.2 L374.6,192.2 L374.1,192.2 L373.6,192.2 L373.1,192.2 L372.6,192.2 L372.1,192.2 L371.6,192.2 L371.1,192.2 L370.6,192.2 L370.1,192.2 L369.6,192.2 L369.1,192.2 L368.6,192.2 L368.1,192.2 L367.6,192.2 L367.1,192.2 L366.6,192.3 L366.1,192.4 L365.6,192.6 L365.1,192.9 L364.6,193.3 L364.1,194.6 L363.6,198.9 L363.1,206.9 L362.6,192.2 L362.1,192.2 L361.6,192.2 L361.1,192.2 L360.6,192.2 L360.1,192.2 L359.6,192.2 L359.1,192.2 L358.6,192.2 L358.1,192.2 L357.6,192.2 L357.1,192.2 L356.6,192.2 L356.1,192.2 L355.6,192.2 L355.1,192.2 L354.6,192.2 L354.1,192.2 L353.6,192.2 L353.1,192.2 L352.6,192.2 L352.1,192.2 L351.6,192.2 L351.1,192.2 L350.6,192.2 L350.1,192.2 L349.6,192.2 L349.1,192.2 L348.6,192.4 L348.1,192.5 L347.6,192.8 L347.1,193.1 L346.6,193.8 L346.1,196.8 L345.6,204.2 L345.1,207.7 L344.6,192.2 L344.1,192.2 L343.6,192.2 L343.1,192.2 L342.6,192.2 L342.1,192.2 L341.6,192.2 L341.1,192.2 L340.6,192.2 L340.1,192.2 L339.6,192.2 L339.1,192.2 L338.6,192.2 L338.1,192.2 L337.6,192.2 L337.1,192.2 L336.6,192.2 L336.1,192.2 L335.6,192.2 L335.1,192.2 L334.6,192.2 L334.1,192.2 L333.6,192.2 L333.1,192.2 L332.6,192.2 L332.1,192.2 L331.6,192.2 L331.1,192.3 L330.6,192.5 L330.1,192.7 L329.6,192.9 L329.1,193.3 L328.6,195.2 L328.1,200.3 L327.6,208.2 L327.1,192.2 L326.6,192.2 L326.1,192.2 L325.6,192.2 L325.1,192.2 L324.6,192.2 L324.1,192.2 L323.6,192.2 L323.1,192.2 L322.6,192.2 L322.1,192.2 L321.6,192.2 L321.1,192.2 L320.6,192.2 L320.1,192.2 L319.6,192.2 L319.1,192.2 L318.6,192.2 L318.1,192.2 L317.6,192.2 L317.1,192.2 L316.6,192.2 L316.1,192.2 L315.6,192.2 L315.1,192.2 L314.6,192.2 L314.1,192.2 L313.6,192.2 L313.1,192.4 L312.6,192.6 L312.1,192.8 L311.6,193.1 L311.1,194.1 L310.6,197.6 L310.1,206.1 L309.6,208.4 L309.1,192.2 L308.6,192.2 L308.1,192.2 L307.6,192.2 L307.1,192.2 L306.6,192.2 L306.1,192.2 L305.6,192.2 L305.1,192.2 L304.6,192.2 L304.1,192.2 L303.6,192.2 L303.1,192.2 L302.6,192.2 L302.1,192.2 L301.6,192.2 L301.1,192.2 L300.6,192.2 L300.1,192.2 L299.6,192.2 L299.1,192.2 L298.6,192.2 L298.1,192.2 L297.6,192.2 L297.1,192.2 L296.6,192.2 L296.1,192.2 L295.6,192.3 L295.1,192.5 L294.6,192.7 L294.1,193.0 L293.6,193.4 L293.1,195.3 L292.6,200.5 L292.1,206.8 L291.6,192.2Z" fill="#3c93a6"/><rect x="291.6" y="191.4" width="993.4" height="0.8" fill="#3c93a6"/><path d="M291.6,252.5 L292.1,252.5 L292.6,252.5 L293.1,252.5 L293.6,252.5 L294.1,252.5 L294.6,252.5 L295.1,252.5 L295.6,252.5 L296.1,252.5 L296.6,252.5 L297.1,252.5 L297.6,252.5 L298.1,252.5 L298.6,252.5 L299.1,252.5 L299.6,252.5 L300.1,252.5 L300.6,252.5 L301.1,252.5 L301.6,233.4 L302.1,242.6 L302.6,247.2 L303.1,247.8 L303.6,250.7 L304.1,250.8 L304.6,251.9 L305.1,252.3 L305.6,252.5 L306.1,252.5 L306.6,252.5 L307.1,252.5 L307.6,252.5 L308.1,252.5 L308.6,252.5 L309.1,252.5 L309.6,252.5 L310.1,252.5 L310.6,252.5 L311.1,252.5 L311.6,252.5 L312.1,252.5 L312.6,252.5 L313.1,252.5 L313.6,252.5 L314.1,252.5 L314.6,252.5 L315.1,252.5 L315.6,252.5 L316.1,252.5 L316.6,252.5 L317.1,252.5 L317.6,252.5 L318.1,252.5 L318.6,252.5 L319.1,232.6 L319.6,239.4 L320.1,244.6 L320.6,247.4 L321.1,249.6 L321.6,250.1 L322.1,251.6 L322.6,252.3 L323.1,252.5 L323.6,252.5 L324.1,252.5 L324.6,252.5 L325.1,252.5 L325.6,252.5 L326.1,252.5 L326.6,252.5 L327.1,252.5 L327.6,252.5 L328.1,252.5 L328.6,252.5 L329.1,252.5 L329.6,252.5 L330.1,252.5 L330.6,252.5 L331.1,252.5 L331.6,252.5 L332.1,252.5 L332.6,252.5 L333.1,252.5 L333.6,252.5 L334.1,252.5 L334.6,252.5 L335.1,252.5 L335.6,252.5 L336.1,252.5 L336.6,239.1 L337.1,232.5 L337.6,240.2 L338.1,246.3 L338.6,248.0 L339.1,249.9 L339.6,250.8 L340.1,251.6 L340.6,252.3 L341.1,252.4 L341.6,252.5 L342.1,252.5 L342.6,252.5 L343.1,252.5 L343.6,252.5 L344.1,252.5 L344.6,252.5 L345.1,252.5 L345.6,252.5 L346.1,252.5 L346.6,252.5 L347.1,252.5 L347.6,252.5 L348.1,252.5 L348.6,252.5 L349.1,252.5 L349.6,252.5 L350.1,252.5 L350.6,252.5 L351.1,252.5 L351.6,252.5 L352.1,252.5 L352.6,252.5 L353.1,252.5 L353.6,252.5 L354.1,252.5 L354.6,239.5 L355.1,243.3 L355.6,245.8 L356.1,247.0 L356.6,249.1 L357.1,250.8 L357.6,251.7 L358.1,252.3 L358.6,252.4 L359.1,252.5 L359.6,252.5 L360.1,252.5 L360.6,252.5 L361.1,252.5 L361.6,252.5 L362.1,252.5 L362.6,252.5 L363.1,252.5 L363.6,252.5 L364.1,252.5 L364.6,252.5 L365.1,252.5 L365.6,252.5 L366.1,252.5 L366.6,252.5 L367.1,252.5 L367.6,252.5 L368.1,252.5 L368.6,252.5 L369.1,252.5 L369.6,252.5 L370.1,252.5 L370.6,252.5 L371.1,252.5 L371.6,252.5 L372.1,239.0 L372.6,235.4 L373.1,241.6 L373.6,245.0 L374.1,248.5 L374.6,250.6 L375.1,251.4 L375.6,251.7 L376.1,252.2 L376.6,252.5 L377.1,252.5 L377.6,252.5 L378.1,252.5 L378.6,252.5 L379.1,252.5 L379.6,252.5 L380.1,252.5 L380.6,252.5 L381.1,252.5 L381.6,252.5 L382.1,252.5 L382.6,252.5 L383.1,252.5 L383.6,252.5 L384.1,252.5 L384.6,252.5 L385.1,252.5 L385.6,252.5 L386.1,252.5 L386.6,252.5 L387.1,252.5 L387.6,252.5 L388.1,252.5 L388.6,252.5 L389.1,252.5 L389.6,252.5 L390.1,240.1 L390.6,240.2 L391.1,244.3 L391.6,247.7 L392.1,249.6 L392.6,251.6 L393.1,251.8 L393.6,252.4 L394.1,252.5 L394.6,252.5 L395.1,252.5 L395.6,252.5 L396.1,252.5 L396.6,252.5 L397.1,252.5 L397.6,252.5 L398.1,252.5 L398.6,252.5 L399.1,252.5 L399.6,252.5 L400.1,252.5 L400.6,252.5 L401.1,252.5 L401.6,252.5 L402.1,252.5 L402.6,252.5 L403.1,252.5 L403.6,252.5 L404.1,252.5 L404.6,252.5 L405.1,252.5 L405.6,252.5 L406.1,252.5 L406.6,252.5 L407.1,252.5 L407.6,237.9 L408.1,237.7 L408.6,244.0 L409.1,247.2 L409.6,250.2 L410.1,250.4 L410.6,251.2 L411.1,252.2 L411.6,252.5 L412.1,252.5 L412.6,252.5 L413.1,252.5 L413.6,252.5 L414.1,252.5 L414.6,252.5 L415.1,252.5 L415.6,252.5 L416.1,252.5 L416.6,252.5 L417.1,252.5 L417.6,252.5 L418.1,252.5 L418.6,252.5 L419.1,252.5 L419.6,252.5 L420.1,252.5 L420.6,252.5 L421.1,252.5 L421.6,252.5 L422.1,252.5 L422.6,252.5 L423.1,252.5 L423.6,252.5 L424.1,252.5 L424.6,252.5 L425.1,235.2 L425.6,234.3 L426.1,241.6 L426.6,246.6 L427.1,249.4 L427.6,250.5 L428.1,251.3 L428.6,251.9 L429.1,252.2 L429.6,252.5 L430.1,252.5 L430.6,252.5 L431.1,252.5 L431.6,252.5 L432.1,252.5 L432.6,252.5 L433.1,252.5 L433.6,252.5 L434.1,252.5 L434.6,252.5 L435.1,252.5 L435.6,252.5 L436.1,252.5 L436.6,252.5 L437.1,252.5 L437.6,252.5 L438.1,252.5 L438.6,252.5 L439.1,252.5 L439.6,252.5 L440.1,252.5 L440.6,252.5 L441.1,252.5 L441.6,252.5 L442.1,252.5 L442.6,252.5 L443.1,229.4 L443.6,242.1 L444.1,244.7 L444.6,247.7 L445.1,249.5 L445.6,251.1 L446.1,251.5 L446.6,252.3 L447.1,252.5 L447.6,252.5 L448.1,252.5 L448.6,252.5 L449.1,252.5 L449.6,252.5 L450.1,252.5 L450.6,252.5 L451.1,252.5 L451.6,252.5 L452.1,252.5 L452.6,252.5 L453.1,252.5 L453.6,252.5 L454.1,252.5 L454.6,252.5 L455.1,252.5 L455.6,252.5 L456.1,252.5 L456.6,252.5 L457.1,252.5 L457.6,252.5 L458.1,252.5 L458.6,252.5 L459.1,252.5 L459.6,252.5 L460.1,252.5 L460.6,233.9 L461.1,238.2 L461.6,243.1 L462.1,244.8 L462.6,248.8 L463.1,250.4 L463.6,251.2 L464.1,252.0 L464.6,252.4 L465.1,252.5 L465.6,252.5 L466.1,252.5 L466.6,252.5 L467.1,252.5 L467.6,252.5 L468.1,252.5 L468.6,252.5 L469.1,252.5 L469.6,252.5 L470.1,252.5 L470.6,252.5 L471.1,252.5 L471.6,252.5 L472.1,252.5 L472.6,252.5 L473.1,235.9 L473.6,233.9 L474.1,243.5 L474.6,247.7 L475.1,248.3 L475.6,250.0 L476.1,251.3 L476.6,252.2 L477.1,252.4 L477.6,236.8 L478.1,235.7 L478.6,244.2 L479.1,247.6 L479.6,249.4 L480.1,250.8 L480.6,251.4 L481.1,251.8 L481.6,252.5 L482.1,241.8 L482.6,238.0 L483.1,246.0 L483.6,249.0 L484.1,249.9 L484.6,250.9 L485.1,251.6 L485.6,252.3 L486.1,252.4 L486.6,236.8 L487.1,238.3 L487.6,243.0 L488.1,247.0 L488.6,250.0 L489.1,250.2 L489.6,251.5 L490.1,251.9 L490.6,252.5 L491.1,239.3 L491.6,241.3 L492.1,241.8 L492.6,247.0 L493.1,248.5 L493.6,250.6 L494.1,251.8 L494.6,252.2 L495.1,252.4 L495.6,239.4 L496.1,240.5 L496.6,246.7 L497.1,247.2 L497.6,249.5 L498.1,250.8 L498.6,251.3 L499.1,252.3 L499.6,252.5 L500.1,252.5 L500.6,252.5 L501.1,252.5 L501.6,252.5 L502.1,252.5 L502.6,252.5 L503.1,252.5 L503.6,252.5 L504.1,252.5 L504.6,252.5 L505.1,252.5 L505.6,252.5 L506.1,252.5 L506.6,252.5 L507.1,252.5 L507.6,252.5 L508.1,252.5 L508.6,252.5 L509.1,252.5 L509.6,252.5 L510.1,252.5 L510.6,252.5 L511.1,252.5 L511.6,252.5 L512.1,252.5 L512.6,252.5 L513.1,252.5 L513.6,252.5 L514.1,252.5 L514.6,252.5 L515.1,252.5 L515.6,252.5 L516.1,252.5 L516.6,252.5 L517.1,252.5 L517.6,252.5 L518.1,252.5 L518.6,252.5 L519.1,252.5 L519.6,252.5 L519.6,253.5 L519.1,253.5 L518.6,253.5 L518.1,253.5 L517.6,253.5 L517.1,253.5 L516.6,253.5 L516.1,253.5 L515.6,253.5 L515.1,253.5 L514.6,253.5 L514.1,253.5 L513.6,253.5 L513.1,253.5 L512.6,253.5 L512.1,253.5 L511.6,253.5 L511.1,253.5 L510.6,253.5 L510.1,253.5 L509.6,253.5 L509.1,253.5 L508.6,253.5 L508.1,253.5 L507.6,253.5 L507.1,253.5 L506.6,253.5 L506.1,253.5 L505.6,253.5 L505.1,253.5 L504.6,253.5 L504.1,253.5 L503.6,253.5 L503.1,253.5 L502.6,253.5 L502.1,253.5 L501.6,253.5 L501.1,253.5 L500.6,253.5 L500.1,253.5 L499.6,253.5 L499.1,253.7 L498.6,254.7 L498.1,255.2 L497.6,256.5 L497.1,258.8 L496.6,259.3 L496.1,265.5 L495.6,266.6 L495.1,253.6 L494.6,253.8 L494.1,254.2 L493.6,255.4 L493.1,257.5 L492.6,259.0 L492.1,264.2 L491.6,264.7 L491.1,266.7 L490.6,253.5 L490.1,254.1 L489.6,254.5 L489.1,255.8 L488.6,256.0 L488.1,259.0 L487.6,263.0 L487.1,267.7 L486.6,269.2 L486.1,253.6 L485.6,253.7 L485.1,254.4 L484.6,255.1 L484.1,256.1 L483.6,257.0 L483.1,260.0 L482.6,268.0 L482.1,264.2 L481.6,253.5 L481.1,254.2 L480.6,254.6 L480.1,255.2 L479.6,256.6 L479.1,258.4 L478.6,261.8 L478.1,270.3 L477.6,269.2 L477.1,253.6 L476.6,253.8 L476.1,254.7 L475.6,256.0 L475.1,257.7 L474.6,258.3 L474.1,262.5 L473.6,272.1 L473.1,270.1 L472.6,253.5 L472.1,253.5 L471.6,253.5 L471.1,253.5 L470.6,253.5 L470.1,253.5 L469.6,253.5 L469.1,253.5 L468.6,253.5 L468.1,253.5 L467.6,253.5 L467.1,253.5 L466.6,253.5 L466.1,253.5 L465.6,253.5 L465.1,253.5 L464.6,253.6 L464.1,254.0 L463.6,254.8 L463.1,255.6 L462.6,257.2 L462.1,261.2 L461.6,262.9 L461.1,267.8 L460.6,272.1 L460.1,253.5 L459.6,253.5 L459.1,253.5 L458.6,253.5 L458.1,253.5 L457.6,253.5 L457.1,253.5 L456.6,253.5 L456.1,253.5 L455.6,253.5 L455.1,253.5 L454.6,253.5 L454.1,253.5 L453.6,253.5 L453.1,253.5 L452.6,253.5 L452.1,253.5 L451.6,253.5 L451.1,253.5 L450.6,253.5 L450.1,253.5 L449.6,253.5 L449.1,253.5 L448.6,253.5 L448.1,253.5 L447.6,253.5 L447.1,253.5 L446.6,253.7 L446.1,254.5 L445.6,254.9 L445.1,256.5 L444.6,258.3 L444.1,261.3 L443.6,263.9 L443.1,276.6 L442.6,253.5 L442.1,253.5 L441.6,253.5 L441.1,253.5 L440.6,253.5 L440.1,253.5 L439.6,253.5 L439.1,253.5 L438.6,253.5 L438.1,253.5 L437.6,253.5 L437.1,253.5 L436.6,253.5 L436.1,253.5 L435.6,253.5 L435.1,253.5 L434.6,253.5 L434.1,253.5 L433.6,253.5 L433.1,253.5 L432.6,253.5 L432.1,253.5 L431.6,253.5 L431.1,253.5 L430.6,253.5 L430.1,253.5 L429.6,253.5 L429.1,253.8 L428.6,254.1 L428.1,254.7 L427.6,255.5 L427.1,256.6 L426.6,259.4 L426.1,264.4 L425.6,271.7 L425.1,270.8 L424.6,253.5 L424.1,253.5 L423.6,253.5 L423.1,253.5 L422.6,253.5 L422.1,253.5 L421.6,253.5 L421.1,253.5 L420.6,253.5 L420.1,253.5 L419.6,253.5 L419.1,253.5 L418.6,253.5 L418.1,253.5 L417.6,253.5 L417.1,253.5 L416.6,253.5 L416.1,253.5 L415.6,253.5 L415.1,253.5 L414.6,253.5 L414.1,253.5 L413.6,253.5 L413.1,253.5 L412.6,253.5 L412.1,253.5 L411.6,253.5 L411.1,253.8 L410.6,254.8 L410.1,255.6 L409.6,255.8 L409.1,258.8 L408.6,262.0 L408.1,268.3 L407.6,268.1 L407.1,253.5 L406.6,253.5 L406.1,253.5 L405.6,253.5 L405.1,253.5 L404.6,253.5 L404.1,253.5 L403.6,253.5 L403.1,253.5 L402.6,253.5 L402.1,253.5 L401.6,253.5 L401.1,253.5 L400.6,253.5 L400.1,253.5 L399.6,253.5 L399.1,253.5 L398.6,253.5 L398.1,253.5 L397.6,253.5 L397.1,253.5 L396.6,253.5 L396.1,253.5 L395.6,253.5 L395.1,253.5 L394.6,253.5 L394.1,253.5 L393.6,253.6 L393.1,254.2 L392.6,254.4 L392.1,256.4 L391.6,258.3 L391.1,261.7 L390.6,265.8 L390.1,265.9 L389.6,253.5 L389.1,253.5 L388.6,253.5 L388.1,253.5 L387.6,253.5 L387.1,253.5 L386.6,253.5 L386.1,253.5 L385.6,253.5 L385.1,253.5 L384.6,253.5 L384.1,253.5 L383.6,253.5 L383.1,253.5 L382.6,253.5 L382.1,253.5 L381.6,253.5 L381.1,253.5 L380.6,253.5 L380.1,253.5 L379.6,253.5 L379.1,253.5 L378.6,253.5 L378.1,253.5 L377.6,253.5 L377.1,253.5 L376.6,253.5 L376.1,253.8 L375.6,254.3 L375.1,254.6 L374.6,255.4 L374.1,257.5 L373.6,261.0 L373.1,264.4 L372.6,270.6 L372.1,267.0 L371.6,253.5 L371.1,253.5 L370.6,253.5 L370.1,253.5 L369.6,253.5 L369.1,253.5 L368.6,253.5 L368.1,253.5 L367.6,253.5 L367.1,253.5 L366.6,253.5 L366.1,253.5 L365.6,253.5 L365.1,253.5 L364.6,253.5 L364.1,253.5 L363.6,253.5 L363.1,253.5 L362.6,253.5 L362.1,253.5 L361.6,253.5 L361.1,253.5 L360.6,253.5 L360.1,253.5 L359.6,253.5 L359.1,253.5 L358.6,253.6 L358.1,253.7 L357.6,254.3 L357.1,255.2 L356.6,256.9 L356.1,259.0 L355.6,260.2 L355.1,262.7 L354.6,266.5 L354.1,253.5 L353.6,253.5 L353.1,253.5 L352.6,253.5 L352.1,253.5 L351.6,253.5 L351.1,253.5 L350.6,253.5 L350.1,253.5 L349.6,253.5 L349.1,253.5 L348.6,253.5 L348.1,253.5 L347.6,253.5 L347.1,253.5 L346.6,253.5 L346.1,253.5 L345.6,253.5 L345.1,253.5 L344.6,253.5 L344.1,253.5 L343.6,253.5 L343.1,253.5 L342.6,253.5 L342.1,253.5 L341.6,253.5 L341.1,253.6 L340.6,253.7 L340.1,254.4 L339.6,255.2 L339.1,256.1 L338.6,258.0 L338.1,259.7 L337.6,265.8 L337.1,273.5 L336.6,266.9 L336.1,253.5 L335.6,253.5 L335.1,253.5 L334.6,253.5 L334.1,253.5 L333.6,253.5 L333.1,253.5 L332.6,253.5 L332.1,253.5 L331.6,253.5 L331.1,253.5 L330.6,253.5 L330.1,253.5 L329.6,253.5 L329.1,253.5 L328.6,253.5 L328.1,253.5 L327.6,253.5 L327.1,253.5 L326.6,253.5 L326.1,253.5 L325.6,253.5 L325.1,253.5 L324.6,253.5 L324.1,253.5 L323.6,253.5 L323.1,253.5 L322.6,253.7 L322.1,254.4 L321.6,255.9 L321.1,256.4 L320.6,258.6 L320.1,261.4 L319.6,266.6 L319.1,273.4 L318.6,253.5 L318.1,253.5 L317.6,253.5 L317.1,253.5 L316.6,253.5 L316.1,253.5 L315.6,253.5 L315.1,253.5 L314.6,253.5 L314.1,253.5 L313.6,253.5 L313.1,253.5 L312.6,253.5 L312.1,253.5 L311.6,253.5 L311.1,253.5 L310.6,253.5 L310.1,253.5 L309.6,253.5 L309.1,253.5 L308.6,253.5 L308.1,253.5 L307.6,253.5 L307.1,253.5 L306.6,253.5 L306.1,253.5 L305.6,253.5 L305.1,253.7 L304.6,254.1 L304.1,255.2 L303.6,255.3 L303.1,258.2 L302.6,258.8 L302.1,263.4 L301.6,272.6 L301.1,253.5 L300.6,253.5 L300.1,253.5 L299.6,253.5 L299.1,253.5 L298.6,253.5 L298.1,253.5 L297.6,253.5 L297.1,253.5 L296.6,253.5 L296.1,253.5 L295.6,253.5 L295.1,253.5 L294.6,253.5 L294.1,253.5 L293.6,253.5 L293.1,253.5 L292.6,253.5 L292.1,253.5 L291.6,253.5Z" fill="#3e8e98"/><path d="M291.6,313.8 L292.1,313.8 L292.6,313.8 L293.1,313.8 L293.6,313.8 L294.1,313.8 L294.6,313.8 L295.1,313.8 L295.6,313.8 L296.1,313.8 L296.6,313.8 L297.1,313.8 L297.6,313.8 L298.1,313.8 L298.6,313.8 L299.1,313.8 L299.6,313.8 L300.1,313.8 L300.6,313.8 L301.1,313.8 L301.6,313.8 L302.1,313.8 L302.6,313.8 L303.1,313.8 L303.6,313.8 L304.1,313.8 L304.6,313.8 L305.1,313.8 L305.6,313.8 L306.1,313.8 L306.6,313.8 L307.1,313.8 L307.6,313.8 L308.1,313.8 L308.6,313.8 L309.1,313.8 L309.6,313.8 L310.1,313.8 L310.6,311.7 L311.1,311.8 L311.6,312.5 L312.1,312.9 L312.6,313.3 L313.1,313.5 L313.6,313.7 L314.1,313.8 L314.6,313.8 L315.1,313.8 L315.6,313.8 L316.1,313.8 L316.6,313.8 L317.1,313.8 L317.6,313.8 L318.1,313.8 L318.6,313.8 L319.1,313.8 L319.6,313.8 L320.1,313.8 L320.6,313.8 L321.1,313.8 L321.6,313.8 L322.1,313.8 L322.6,313.8 L323.1,313.8 L323.6,313.8 L324.1,313.8 L324.6,313.8 L325.1,313.8 L325.6,313.8 L326.1,313.8 L326.6,313.8 L327.1,313.8 L327.6,313.8 L328.1,313.8 L328.6,312.6 L329.1,312.9 L329.6,313.3 L330.1,313.5 L330.6,313.7 L331.1,313.8 L331.6,313.8 L332.1,313.8 L332.6,313.8 L333.1,313.8 L333.6,313.8 L334.1,313.8 L334.6,313.8 L335.1,313.8 L335.6,313.8 L336.1,313.8 L336.6,313.8 L337.1,313.8 L337.6,313.8 L338.1,313.8 L338.6,313.8 L339.1,313.8 L339.6,313.8 L340.1,313.8 L340.6,313.8 L341.1,313.8 L341.6,313.8 L342.1,313.8 L342.6,313.8 L343.1,313.8 L343.6,313.8 L344.1,313.8 L344.6,313.8 L345.1,313.8 L345.6,313.8 L346.1,311.8 L346.6,312.1 L347.1,312.6 L347.6,313.1 L348.1,313.4 L348.6,313.6 L349.1,313.8 L349.6,313.8 L350.1,313.8 L350.6,313.8 L351.1,313.8 L351.6,313.8 L352.1,313.8 L352.6,313.8 L353.1,313.8 L353.6,313.8 L354.1,313.8 L354.6,313.8 L355.1,313.8 L355.6,313.8 L356.1,313.8 L356.6,313.8 L357.1,313.8 L357.6,313.8 L358.1,313.8 L358.6,313.8 L359.1,313.8 L359.6,313.8 L360.1,313.8 L360.6,313.8 L361.1,313.8 L361.6,313.8 L362.1,313.8 L362.6,313.8 L363.1,313.8 L363.6,311.7 L364.1,311.7 L364.6,312.4 L365.1,312.9 L365.6,313.2 L366.1,313.5 L366.6,313.7 L367.1,313.8 L367.6,313.8 L368.1,313.8 L368.6,313.8 L369.1,313.8 L369.6,313.8 L370.1,313.8 L370.6,313.8 L371.1,313.8 L371.6,313.8 L372.1,313.8 L372.6,313.8 L373.1,313.8 L373.6,313.8 L374.1,313.8 L374.6,313.8 L375.1,313.8 L375.6,313.8 L376.1,313.8 L376.6,313.8 L377.1,313.8 L377.6,313.8 L378.1,313.8 L378.6,313.8 L379.1,313.8 L379.6,313.8 L380.1,313.8 L380.6,313.8 L381.1,313.8 L381.6,312.7 L382.1,313.0 L382.6,313.3 L383.1,313.5 L383.6,313.7 L384.1,313.8 L384.6,313.8 L385.1,313.8 L385.6,313.8 L386.1,313.8 L386.6,313.8 L387.1,313.8 L387.6,313.8 L388.1,313.8 L388.6,313.8 L389.1,313.8 L389.6,313.8 L390.1,313.8 L390.6,313.8 L391.1,313.8 L391.6,313.8 L392.1,313.8 L392.6,313.8 L393.1,313.8 L393.6,313.8 L394.1,313.8 L394.6,313.8 L395.1,313.8 L395.6,313.8 L396.1,313.8 L396.6,313.8 L397.1,313.8 L397.6,313.8 L398.1,313.8 L398.6,313.8 L399.1,312.4 L399.6,312.5 L400.1,313.0 L400.6,313.3 L401.1,313.5 L401.6,313.7 L402.1,313.8 L402.6,313.8 L403.1,313.8 L403.6,313.8 L404.1,313.8 L404.6,313.8 L405.1,313.8 L405.6,313.8 L406.1,313.8 L406.6,313.8 L407.1,313.8 L407.6,313.8 L408.1,313.8 L408.6,313.8 L409.1,313.8 L409.6,313.8 L410.1,313.8 L410.6,313.8 L411.1,313.8 L411.6,313.8 L412.1,313.8 L412.6,313.8 L413.1,313.8 L413.6,313.8 L414.1,313.8 L414.6,313.8 L415.1,313.8 L415.6,313.8 L416.1,313.8 L416.6,313.8 L417.1,312.0 L417.6,312.5 L418.1,313.0 L418.6,313.3 L419.1,313.5 L419.6,313.7 L420.1,313.8 L420.6,313.8 L421.1,313.8 L421.6,313.8 L422.1,313.8 L422.6,313.8 L423.1,313.8 L423.6,313.8 L424.1,313.8 L424.6,313.8 L425.1,313.8 L425.6,313.8 L426.1,313.8 L426.6,313.8 L427.1,313.8 L427.6,313.8 L428.1,313.8 L428.6,313.8 L429.1,313.8 L429.6,313.8 L430.1,313.8 L430.6,313.8 L431.1,313.8 L431.6,313.8 L432.1,313.8 L432.6,313.8 L433.1,313.8 L433.6,313.8 L434.1,313.8 L434.6,312.6 L435.1,312.8 L435.6,313.2 L436.1,313.5 L436.6,313.7 L437.1,313.8 L437.6,313.8 L438.1,313.8 L438.6,313.8 L439.1,313.8 L439.6,313.8 L440.1,313.8 L440.6,313.8 L441.1,313.8 L441.6,313.8 L442.1,313.8 L442.6,313.8 L443.1,313.8 L443.6,313.8 L444.1,313.8 L444.6,313.8 L445.1,313.8 L445.6,313.8 L446.1,313.8 L446.6,313.8 L447.1,313.8 L447.6,313.8 L448.1,313.8 L448.6,313.8 L449.1,313.8 L449.6,313.8 L450.1,313.8 L450.6,313.8 L451.1,313.8 L451.6,313.8 L452.1,311.8 L452.6,311.8 L453.1,312.4 L453.6,312.9 L454.1,313.3 L454.6,313.5 L455.1,313.7 L455.6,313.8 L456.1,313.8 L456.6,313.8 L457.1,313.8 L457.6,313.8 L458.1,313.8 L458.6,313.8 L459.1,313.8 L459.6,313.8 L460.1,313.8 L460.6,313.8 L461.1,313.8 L461.6,313.8 L462.1,313.8 L462.6,313.8 L463.1,313.8 L463.6,313.8 L464.1,313.8 L464.6,313.8 L465.1,313.8 L465.6,313.8 L466.1,313.8 L466.6,313.8 L467.1,313.8 L467.6,313.8 L468.1,313.8 L468.6,313.8 L469.1,313.8 L469.6,313.8 L470.1,312.5 L470.6,312.8 L471.1,313.2 L471.6,313.4 L472.1,313.6 L472.6,313.8 L473.1,313.8 L473.6,313.8 L474.1,313.8 L474.6,313.8 L475.1,313.8 L475.6,313.8 L476.1,313.8 L476.6,313.8 L477.1,313.8 L477.6,313.8 L478.1,313.8 L478.6,313.8 L479.1,313.8 L479.6,313.8 L480.1,313.8 L480.6,313.8 L481.1,313.8 L481.6,313.8 L482.1,313.8 L482.6,313.8 L483.1,313.8 L483.6,313.8 L484.1,313.8 L484.6,313.8 L485.1,313.8 L485.6,313.8 L486.1,313.8 L486.6,313.8 L487.1,313.8 L487.6,312.0 L488.1,312.1 L488.6,312.7 L489.1,313.1 L489.6,313.4 L490.1,313.6 L490.6,313.8 L491.1,313.8 L491.6,313.8 L492.1,313.8 L492.6,313.8 L493.1,313.8 L493.6,313.8 L494.1,313.8 L494.6,313.8 L495.1,313.8 L495.6,313.8 L496.1,313.8 L496.6,313.8 L497.1,313.8 L497.6,313.8 L498.1,313.8 L498.6,313.8 L499.1,313.8 L499.6,313.8 L500.1,313.8 L500.6,313.8 L501.1,313.8 L501.6,313.8 L502.1,313.8 L502.6,313.8 L503.1,313.8 L503.6,313.8 L504.1,313.8 L504.6,313.8 L505.1,313.8 L505.6,312.4 L506.1,312.8 L506.6,313.2 L507.1,313.5 L507.6,313.7 L508.1,313.8 L508.6,313.8 L509.1,313.8 L509.6,313.8 L510.1,313.8 L510.6,313.8 L511.1,313.8 L511.6,313.8 L512.1,313.8 L512.6,313.8 L513.1,313.8 L513.6,313.8 L514.1,313.8 L514.6,313.8 L515.1,313.8 L515.6,313.8 L516.1,313.8 L516.6,313.8 L517.1,313.8 L517.6,313.8 L518.1,313.8 L518.6,313.8 L519.1,313.8 L519.6,313.8 L519.6,314.6 L519.1,314.6 L518.6,314.6 L518.1,314.6 L517.6,314.6 L517.1,314.6 L516.6,314.6 L516.1,314.6 L515.6,314.6 L515.1,314.6 L514.6,314.6 L514.1,314.6 L513.6,314.6 L513.1,314.6 L512.6,314.6 L512.1,314.6 L511.6,314.6 L511.1,314.6 L510.6,314.6 L510.1,314.6 L509.6,314.6 L509.1,314.6 L508.6,314.6 L508.1,314.6 L507.6,314.7 L507.1,314.9 L506.6,315.2 L506.1,315.6 L505.6,316.0 L505.1,314.6 L504.6,314.6 L504.1,314.6 L503.6,314.6 L503.1,314.6 L502.6,314.6 L502.1,314.6 L501.6,314.6 L501.1,314.6 L500.6,314.6 L500.1,314.6 L499.6,314.6 L499.1,314.6 L498.6,314.6 L498.1,314.6 L497.6,314.6 L497.1,314.6 L496.6,314.6 L496.1,314.6 L495.6,314.6 L495.1,314.6 L494.6,314.6 L494.1,314.6 L493.6,314.6 L493.1,314.6 L492.6,314.6 L492.1,314.6 L491.6,314.6 L491.1,314.6 L490.6,314.6 L490.1,314.8 L489.6,315.0 L489.1,315.3 L488.6,315.7 L488.1,316.3 L487.6,316.4 L487.1,314.6 L486.6,314.6 L486.1,314.6 L485.6,314.6 L485.1,314.6 L484.6,314.6 L484.1,314.6 L483.6,314.6 L483.1,314.6 L482.6,314.6 L482.1,314.6 L481.6,314.6 L481.1,314.6 L480.6,314.6 L480.1,314.6 L479.6,314.6 L479.1,314.6 L478.6,314.6 L478.1,314.6 L477.6,314.6 L477.1,314.6 L476.6,314.6 L476.1,314.6 L475.6,314.6 L475.1,314.6 L474.6,314.6 L474.1,314.6 L473.6,314.6 L473.1,314.6 L472.6,314.6 L472.1,314.8 L471.6,315.0 L471.1,315.2 L470.6,315.6 L470.1,315.9 L469.6,314.6 L469.1,314.6 L468.6,314.6 L468.1,314.6 L467.6,314.6 L467.1,314.6 L466.6,314.6 L466.1,314.6 L465.6,314.6 L465.1,314.6 L464.6,314.6 L464.1,314.6 L463.6,314.6 L463.1,314.6 L462.6,314.6 L462.1,314.6 L461.6,314.6 L461.1,314.6 L460.6,314.6 L460.1,314.6 L459.6,314.6 L459.1,314.6 L458.6,314.6 L458.1,314.6 L457.6,314.6 L457.1,314.6 L456.6,314.6 L456.1,314.6 L455.6,314.6 L455.1,314.7 L454.6,314.9 L454.1,315.1 L453.6,315.5 L453.1,316.0 L452.6,316.6 L452.1,316.6 L451.6,314.6 L451.1,314.6 L450.6,314.6 L450.1,314.6 L449.6,314.6 L449.1,314.6 L448.6,314.6 L448.1,314.6 L447.6,314.6 L447.1,314.6 L446.6,314.6 L446.1,314.6 L445.6,314.6 L445.1,314.6 L444.6,314.6 L444.1,314.6 L443.6,314.6 L443.1,314.6 L442.6,314.6 L442.1,314.6 L441.6,314.6 L441.1,314.6 L440.6,314.6 L440.1,314.6 L439.6,314.6 L439.1,314.6 L438.6,314.6 L438.1,314.6 L437.6,314.6 L437.1,314.6 L436.6,314.7 L436.1,314.9 L435.6,315.2 L435.1,315.6 L434.6,315.8 L434.1,314.6 L433.6,314.6 L433.1,314.6 L432.6,314.6 L432.1,314.6 L431.6,314.6 L431.1,314.6 L430.6,314.6 L430.1,314.6 L429.6,314.6 L429.1,314.6 L428.6,314.6 L428.1,314.6 L427.6,314.6 L427.1,314.6 L426.6,314.6 L426.1,314.6 L425.6,314.6 L425.1,314.6 L424.6,314.6 L424.1,314.6 L423.6,314.6 L423.1,314.6 L422.6,314.6 L422.1,314.6 L421.6,314.6 L421.1,314.6 L420.6,314.6 L420.1,314.6 L419.6,314.7 L419.1,314.9 L418.6,315.1 L418.1,315.4 L417.6,315.9 L417.1,316.4 L416.6,314.6 L416.1,314.6 L415.6,314.6 L415.1,314.6 L414.6,314.6 L414.1,314.6 L413.6,314.6 L413.1,314.6 L412.6,314.6 L412.1,314.6 L411.6,314.6 L411.1,314.6 L410.6,314.6 L410.1,314.6 L409.6,314.6 L409.1,314.6 L408.6,314.6 L408.1,314.6 L407.6,314.6 L407.1,314.6 L406.6,314.6 L406.1,314.6 L405.6,314.6 L405.1,314.6 L404.6,314.6 L404.1,314.6 L403.6,314.6 L403.1,314.6 L402.6,314.6 L402.1,314.6 L401.6,314.7 L401.1,314.9 L400.6,315.1 L400.1,315.4 L399.6,315.9 L399.1,316.0 L398.6,314.6 L398.1,314.6 L397.6,314.6 L397.1,314.6 L396.6,314.6 L396.1,314.6 L395.6,314.6 L395.1,314.6 L394.6,314.6 L394.1,314.6 L393.6,314.6 L393.1,314.6 L392.6,314.6 L392.1,314.6 L391.6,314.6 L391.1,314.6 L390.6,314.6 L390.1,314.6 L389.6,314.6 L389.1,314.6 L388.6,314.6 L388.1,314.6 L387.6,314.6 L387.1,314.6 L386.6,314.6 L386.1,314.6 L385.6,314.6 L385.1,314.6 L384.6,314.6 L384.1,314.6 L383.6,314.7 L383.1,314.9 L382.6,315.1 L382.1,315.4 L381.6,315.7 L381.1,314.6 L380.6,314.6 L380.1,314.6 L379.6,314.6 L379.1,314.6 L378.6,314.6 L378.1,314.6 L377.6,314.6 L377.1,314.6 L376.6,314.6 L376.1,314.6 L375.6,314.6 L375.1,314.6 L374.6,314.6 L374.1,314.6 L373.6,314.6 L373.1,314.6 L372.6,314.6 L372.1,314.6 L371.6,314.6 L371.1,314.6 L370.6,314.6 L370.1,314.6 L369.6,314.6 L369.1,314.6 L368.6,314.6 L368.1,314.6 L367.6,314.6 L367.1,314.6 L366.6,314.7 L366.1,314.9 L365.6,315.2 L365.1,315.5 L364.6,316.0 L364.1,316.7 L363.6,316.7 L363.1,314.6 L362.6,314.6 L362.1,314.6 L361.6,314.6 L361.1,314.6 L360.6,314.6 L360.1,314.6 L359.6,314.6 L359.1,314.6 L358.6,314.6 L358.1,314.6 L357.6,314.6 L357.1,314.6 L356.6,314.6 L356.1,314.6 L355.6,314.6 L355.1,314.6 L354.6,314.6 L354.1,314.6 L353.6,314.6 L353.1,314.6 L352.6,314.6 L352.1,314.6 L351.6,314.6 L351.1,314.6 L350.6,314.6 L350.1,314.6 L349.6,314.6 L349.1,314.6 L348.6,314.8 L348.1,315.0 L347.6,315.3 L347.1,315.8 L346.6,316.3 L346.1,316.6 L345.6,314.6 L345.1,314.6 L344.6,314.6 L344.1,314.6 L343.6,314.6 L343.1,314.6 L342.6,314.6 L342.1,314.6 L341.6,314.6 L341.1,314.6 L340.6,314.6 L340.1,314.6 L339.6,314.6 L339.1,314.6 L338.6,314.6 L338.1,314.6 L337.6,314.6 L337.1,314.6 L336.6,314.6 L336.1,314.6 L335.6,314.6 L335.1,314.6 L334.6,314.6 L334.1,314.6 L333.6,314.6 L333.1,314.6 L332.6,314.6 L332.1,314.6 L331.6,314.6 L331.1,314.6 L330.6,314.7 L330.1,314.9 L329.6,315.1 L329.1,315.5 L328.6,315.8 L328.1,314.6 L327.6,314.6 L327.1,314.6 L326.6,314.6 L326.1,314.6 L325.6,314.6 L325.1,314.6 L324.6,314.6 L324.1,314.6 L323.6,314.6 L323.1,314.6 L322.6,314.6 L322.1,314.6 L321.6,314.6 L321.1,314.6 L320.6,314.6 L320.1,314.6 L319.6,314.6 L319.1,314.6 L318.6,314.6 L318.1,314.6 L317.6,314.6 L317.1,314.6 L316.6,314.6 L316.1,314.6 L315.6,314.6 L315.1,314.6 L314.6,314.6 L314.1,314.6 L313.6,314.7 L313.1,314.9 L312.6,315.1 L312.1,315.5 L311.6,315.9 L311.1,316.6 L310.6,316.7 L310.1,314.6 L309.6,314.6 L309.1,314.6 L308.6,314.6 L308.1,314.6 L307.6,314.6 L307.1,314.6 L306.6,314.6 L306.1,314.6 L305.6,314.6 L305.1,314.6 L304.6,314.6 L304.1,314.6 L303.6,314.6 L303.1,314.6 L302.6,314.6 L302.1,314.6 L301.6,314.6 L301.1,314.6 L300.6,314.6 L300.1,314.6 L299.6,314.6 L299.1,314.6 L298.6,314.6 L298.1,314.6 L297.6,314.6 L297.1,314.6 L296.6,314.6 L296.1,314.6 L295.6,314.6 L295.1,314.6 L294.6,314.6 L294.1,314.6 L293.6,314.6 L293.1,314.6 L292.6,314.6 L292.1,314.6 L291.6,314.6Z" fill="#3f9099"/><rect x="291.6" y="375.0" width="230" height="0.8" fill="#3f8f99"/><path d="M291.6,436.2 L292.1,436.2 L292.6,436.2 L293.1,436.2 L293.6,436.2 L294.1,436.2 L294.6,436.2 L295.1,436.2 L295.6,436.2 L296.1,436.2 L296.6,436.2 L297.1,436.2 L297.6,436.2 L298.1,436.2 L298.6,436.2 L299.1,436.2 L299.6,436.2 L300.1,436.2 L300.6,436.2 L301.1,436.2 L301.6,436.2 L302.1,436.2 L302.6,436.2 L303.1,436.2 L303.6,436.2 L304.1,436.2 L304.6,436.2 L305.1,436.2 L305.6,436.2 L306.1,436.2 L306.6,436.2 L307.1,436.2 L307.6,436.2 L308.1,436.2 L308.6,436.2 L309.1,436.2 L309.6,436.2 L310.1,436.2 L310.6,436.2 L311.1,436.2 L311.6,436.2 L312.1,436.2 L312.6,436.2 L313.1,436.2 L313.6,436.2 L314.1,436.2 L314.6,436.2 L315.1,436.2 L315.6,436.2 L316.1,436.2 L316.6,436.2 L317.1,436.2 L317.6,436.2 L318.1,436.2 L318.6,436.2 L319.1,436.2 L319.6,436.2 L320.1,436.2 L320.6,436.2 L321.1,436.2 L321.6,436.2 L322.1,436.2 L322.6,436.2 L323.1,436.2 L323.6,436.2 L324.1,436.2 L324.6,436.2 L325.1,436.2 L325.6,436.2 L326.1,436.2 L326.6,436.2 L327.1,436.2 L327.6,436.2 L328.1,436.2 L328.6,436.2 L329.1,436.2 L329.6,436.2 L330.1,436.2 L330.6,436.2 L331.1,436.2 L331.6,436.2 L332.1,436.2 L332.6,436.2 L333.1,436.2 L333.6,436.2 L334.1,436.2 L334.6,436.2 L335.1,436.2 L335.6,436.2 L336.1,436.2 L336.6,436.2 L337.1,436.2 L337.6,436.2 L338.1,436.2 L338.6,436.2 L339.1,436.2 L339.6,436.2 L340.1,436.2 L340.6,436.2 L341.1,436.2 L341.6,436.2 L342.1,436.2 L342.6,436.2 L343.1,436.2 L343.6,436.2 L344.1,436.2 L344.6,436.2 L345.1,436.2 L345.6,436.2 L346.1,436.2 L346.6,436.2 L347.1,436.2 L347.6,436.2 L348.1,436.2 L348.6,436.2 L349.1,436.2 L349.6,436.2 L350.1,436.2 L350.6,436.2 L351.1,436.2 L351.6,436.2 L352.1,436.2 L352.6,436.2 L353.1,436.2 L353.6,436.2 L354.1,436.2 L354.6,436.2 L355.1,436.2 L355.6,436.2 L356.1,436.2 L356.6,436.2 L357.1,436.2 L357.6,436.2 L358.1,436.2 L358.6,436.2 L359.1,436.2 L359.6,436.2 L360.1,436.2 L360.6,436.2 L361.1,436.2 L361.6,436.2 L362.1,436.2 L362.6,436.2 L363.1,436.2 L363.6,436.2 L364.1,436.2 L364.6,436.2 L365.1,436.2 L365.6,436.2 L366.1,436.2 L366.6,436.2 L367.1,436.2 L367.6,436.2 L368.1,436.2 L368.6,436.2 L369.1,436.2 L369.6,436.2 L370.1,436.2 L370.6,436.2 L371.1,436.2 L371.6,436.2 L372.1,436.2 L372.6,436.2 L373.1,436.2 L373.6,436.2 L374.1,436.2 L374.6,436.2 L375.1,436.2 L375.6,436.2 L376.1,436.2 L376.6,436.2 L377.1,436.2 L377.6,436.2 L378.1,436.2 L378.6,436.2 L379.1,436.2 L379.6,436.2 L380.1,436.2 L380.6,436.2 L381.1,436.2 L381.6,436.2 L382.1,436.2 L382.6,436.2 L383.1,436.2 L383.6,436.2 L384.1,436.2 L384.6,436.2 L385.1,436.2 L385.6,436.2 L386.1,436.2 L386.6,436.2 L387.1,436.2 L387.6,436.2 L388.1,436.2 L388.6,436.2 L389.1,436.2 L389.6,436.2 L390.1,436.2 L390.6,436.2 L391.1,436.2 L391.6,436.2 L392.1,436.2 L392.6,436.2 L393.1,436.2 L393.6,436.2 L394.1,436.2 L394.6,436.2 L395.1,436.2 L395.6,436.2 L396.1,436.2 L396.6,436.2 L397.1,436.2 L397.6,436.2 L398.1,436.2 L398.6,436.2 L399.1,436.2 L399.6,436.2 L400.1,436.2 L400.6,436.2 L401.1,436.2 L401.6,436.2 L402.1,436.2 L402.6,436.2 L403.1,436.2 L403.6,436.2 L404.1,436.2 L404.6,436.2 L405.1,436.2 L405.6,436.2 L406.1,436.2 L406.6,436.2 L407.1,436.2 L407.6,436.2 L408.1,436.2 L408.6,436.2 L409.1,436.2 L409.6,436.2 L410.1,436.2 L410.6,436.2 L411.1,436.2 L411.6,436.2 L412.1,436.2 L412.6,436.2 L413.1,436.2 L413.6,436.2 L414.1,436.2 L414.6,436.2 L415.1,436.2 L415.6,436.2 L416.1,436.2 L416.6,436.2 L417.1,436.2 L417.6,436.2 L418.1,436.2 L418.6,436.2 L419.1,436.2 L419.6,436.2 L420.1,436.2 L420.6,436.2 L421.1,436.2 L421.6,436.2 L422.1,436.2 L422.6,436.2 L423.1,436.2 L423.6,436.2 L424.1,436.2 L424.6,436.2 L425.1,436.2 L425.6,436.2 L426.1,436.2 L426.6,436.2 L427.1,436.2 L427.6,436.2 L428.1,436.2 L428.6,436.2 L429.1,436.2 L429.6,436.2 L430.1,436.2 L430.6,436.2 L431.1,436.2 L431.6,436.2 L432.1,436.2 L432.6,436.2 L433.1,436.2 L433.6,436.2 L434.1,436.2 L434.6,436.2 L435.1,436.2 L435.6,436.2 L436.1,436.2 L436.6,436.2 L437.1,436.2 L437.6,436.2 L438.1,436.2 L438.6,436.2 L439.1,436.2 L439.6,436.2 L440.1,436.2 L440.6,436.2 L441.1,436.2 L441.6,436.2 L442.1,436.2 L442.6,436.2 L443.1,436.2 L443.6,436.2 L444.1,436.2 L444.6,436.2 L445.1,436.2 L445.6,436.2 L446.1,436.2 L446.6,436.2 L447.1,436.2 L447.6,436.2 L448.1,436.2 L448.6,436.2 L449.1,436.2 L449.6,436.2 L450.1,436.2 L450.6,436.2 L451.1,436.2 L451.6,436.2 L452.1,436.2 L452.6,436.2 L453.1,436.2 L453.6,436.2 L454.1,436.2 L454.6,436.2 L455.1,436.2 L455.6,436.2 L456.1,436.2 L456.6,436.2 L457.1,436.2 L457.6,436.2 L458.1,436.2 L458.6,436.2 L459.1,436.2 L459.6,436.2 L460.1,436.2 L460.6,436.2 L461.1,436.2 L461.6,436.2 L462.1,436.2 L462.6,436.2 L463.1,436.2 L463.6,436.2 L464.1,436.2 L464.6,436.2 L465.1,436.2 L465.6,436.2 L466.1,436.2 L466.6,436.2 L467.1,436.2 L467.6,436.2 L468.1,436.2 L468.6,436.2 L469.1,436.2 L469.6,436.2 L470.1,436.2 L470.6,436.2 L471.1,436.2 L471.6,436.2 L472.1,436.2 L472.6,436.0 L473.1,435.6 L473.6,435.2 L474.1,435.3 L474.6,434.6 L475.1,434.7 L475.6,434.0 L476.1,434.2 L476.6,434.4 L477.1,434.5 L477.6,434.6 L478.1,433.5 L478.6,433.9 L479.1,434.4 L479.6,433.1 L480.1,433.4 L480.6,434.5 L481.1,433.2 L481.6,433.4 L482.1,433.6 L482.6,433.5 L483.1,432.6 L483.6,433.7 L484.1,433.1 L484.6,433.2 L485.1,433.7 L485.6,433.8 L486.1,433.0 L486.6,433.3 L487.1,433.6 L487.6,433.6 L488.1,434.1 L488.6,433.1 L489.1,434.5 L489.6,433.4 L490.1,433.8 L490.6,434.2 L491.1,433.6 L491.6,433.6 L492.1,434.5 L492.6,433.8 L493.1,434.3 L493.6,433.3 L494.1,434.0 L494.6,434.0 L495.1,434.2 L495.6,434.5 L496.1,434.2 L496.6,434.3 L497.1,433.5 L497.6,433.0 L498.1,434.1 L498.6,434.3 L499.1,433.6 L499.6,434.3 L500.1,433.8 L500.6,433.1 L501.1,434.2 L501.6,433.3 L502.1,433.6 L502.6,434.4 L503.1,434.1 L503.6,433.5 L504.1,434.4 L504.6,434.2 L505.1,433.6 L505.6,433.2 L506.1,433.7 L506.6,433.5 L507.1,434.6 L507.6,434.1 L508.1,434.1 L508.6,433.1 L509.1,434.1 L509.6,433.4 L510.1,434.6 L510.6,433.9 L511.1,433.2 L511.6,433.4 L512.1,433.8 L512.6,434.4 L513.1,433.2 L513.6,434.6 L514.1,433.2 L514.6,433.5 L515.1,433.6 L515.6,433.9 L516.1,434.5 L516.6,434.3 L517.1,433.8 L517.6,433.8 L518.1,434.2 L518.6,433.6 L519.1,434.8 L519.6,434.4 L519.6,438.8 L519.1,438.4 L518.6,439.6 L518.1,439.0 L517.6,439.4 L517.1,439.4 L516.6,438.9 L516.1,438.7 L515.6,439.3 L515.1,439.6 L514.6,439.7 L514.1,440.0 L513.6,438.6 L513.1,440.0 L512.6,438.8 L512.1,439.4 L511.6,439.8 L511.1,440.0 L510.6,439.3 L510.1,438.6 L509.6,439.8 L509.1,439.1 L508.6,440.1 L508.1,439.1 L507.6,439.1 L507.1,438.6 L506.6,439.7 L506.1,439.5 L505.6,440.0 L505.1,439.6 L504.6,439.0 L504.1,438.8 L503.6,439.7 L503.1,439.1 L502.6,438.8 L502.1,439.6 L501.6,439.9 L501.1,439.0 L500.6,440.1 L500.1,439.4 L499.6,438.9 L499.1,439.6 L498.6,438.9 L498.1,439.1 L497.6,440.2 L497.1,439.7 L496.6,438.9 L496.1,439.0 L495.6,438.7 L495.1,439.0 L494.6,439.2 L494.1,439.2 L493.6,439.9 L493.1,438.9 L492.6,439.4 L492.1,438.7 L491.6,439.6 L491.1,439.6 L490.6,439.0 L490.1,439.4 L489.6,439.8 L489.1,438.7 L488.6,440.1 L488.1,439.1 L487.6,439.6 L487.1,439.6 L486.6,439.9 L486.1,440.2 L485.6,439.4 L485.1,439.5 L484.6,440.0 L484.1,440.1 L483.6,439.5 L483.1,440.6 L482.6,439.7 L482.1,439.6 L481.6,439.8 L481.1,440.0 L480.6,438.7 L480.1,439.8 L479.6,440.1 L479.1,438.8 L478.6,439.3 L478.1,439.7 L477.6,438.6 L477.1,438.7 L476.6,438.8 L476.1,439.0 L475.6,439.2 L475.1,438.5 L474.6,438.6 L474.1,437.9 L473.6,438.0 L473.1,437.6 L472.6,437.2 L472.1,437.0 L471.6,437.0 L471.1,437.0 L470.6,437.0 L470.1,437.0 L469.6,437.0 L469.1,437.0 L468.6,437.0 L468.1,437.0 L467.6,437.0 L467.1,437.0 L466.6,437.0 L466.1,437.0 L465.6,437.0 L465.1,437.0 L464.6,437.0 L464.1,437.0 L463.6,437.0 L463.1,437.0 L462.6,437.0 L462.1,437.0 L461.6,437.0 L461.1,437.0 L460.6,437.0 L460.1,437.0 L459.6,437.0 L459.1,437.0 L458.6,437.0 L458.1,437.0 L457.6,437.0 L457.1,437.0 L456.6,437.0 L456.1,437.0 L455.6,437.0 L455.1,437.0 L454.6,437.0 L454.1,437.0 L453.6,437.0 L453.1,437.0 L452.6,437.0 L452.1,437.0 L451.6,437.0 L451.1,437.0 L450.6,437.0 L450.1,437.0 L449.6,437.0 L449.1,437.0 L448.6,437.0 L448.1,437.0 L447.6,437.0 L447.1,437.0 L446.6,437.0 L446.1,437.0 L445.6,437.0 L445.1,437.0 L444.6,437.0 L444.1,437.0 L443.6,437.0 L443.1,437.0 L442.6,437.0 L442.1,437.0 L441.6,437.0 L441.1,437.0 L440.6,437.0 L440.1,437.0 L439.6,437.0 L439.1,437.0 L438.6,437.0 L438.1,437.0 L437.6,437.0 L437.1,437.0 L436.6,437.0 L436.1,437.0 L435.6,437.0 L435.1,437.0 L434.6,437.0 L434.1,437.0 L433.6,437.0 L433.1,437.0 L432.6,437.0 L432.1,437.0 L431.6,437.0 L431.1,437.0 L430.6,437.0 L430.1,437.0 L429.6,437.0 L429.1,437.0 L428.6,437.0 L428.1,437.0 L427.6,437.0 L427.1,437.0 L426.6,437.0 L426.1,437.0 L425.6,437.0 L425.1,437.0 L424.6,437.0 L424.1,437.0 L423.6,437.0 L423.1,437.0 L422.6,437.0 L422.1,437.0 L421.6,437.0 L421.1,437.0 L420.6,437.0 L420.1,437.0 L419.6,437.0 L419.1,437.0 L418.6,437.0 L418.1,437.0 L417.6,437.0 L417.1,437.0 L416.6,437.0 L416.1,437.0 L415.6,437.0 L415.1,437.0 L414.6,437.0 L414.1,437.0 L413.6,437.0 L413.1,437.0 L412.6,437.0 L412.1,437.0 L411.6,437.0 L411.1,437.0 L410.6,437.0 L410.1,437.0 L409.6,437.0 L409.1,437.0 L408.6,437.0 L408.1,437.0 L407.6,437.0 L407.1,437.0 L406.6,437.0 L406.1,437.0 L405.6,437.0 L405.1,437.0 L404.6,437.0 L404.1,437.0 L403.6,437.0 L403.1,437.0 L402.6,437.0 L402.1,437.0 L401.6,437.0 L401.1,437.0 L400.6,437.0 L400.1,437.0 L399.6,437.0 L399.1,437.0 L398.6,437.0 L398.1,437.0 L397.6,437.0 L397.1,437.0 L396.6,437.0 L396.1,437.0 L395.6,437.0 L395.1,437.0 L394.6,437.0 L394.1,437.0 L393.6,437.0 L393.1,437.0 L392.6,437.0 L392.1,437.0 L391.6,437.0 L391.1,437.0 L390.6,437.0 L390.1,437.0 L389.6,437.0 L389.1,437.0 L388.6,437.0 L388.1,437.0 L387.6,437.0 L387.1,437.0 L386.6,437.0 L386.1,437.0 L385.6,437.0 L385.1,437.0 L384.6,437.0 L384.1,437.0 L383.6,437.0 L383.1,437.0 L382.6,437.0 L382.1,437.0 L381.6,437.0 L381.1,437.0 L380.6,437.0 L380.1,437.0 L379.6,437.0 L379.1,437.0 L378.6,437.0 L378.1,437.0 L377.6,437.0 L377.1,437.0 L376.6,437.0 L376.1,437.0 L375.6,437.0 L375.1,437.0 L374.6,437.0 L374.1,437.0 L373.6,437.0 L373.1,437.0 L372.6,437.0 L372.1,437.0 L371.6,437.0 L371.1,437.0 L370.6,437.0 L370.1,437.0 L369.6,437.0 L369.1,437.0 L368.6,437.0 L368.1,437.0 L367.6,437.0 L367.1,437.0 L366.6,437.0 L366.1,437.0 L365.6,437.0 L365.1,437.0 L364.6,437.0 L364.1,437.0 L363.6,437.0 L363.1,437.0 L362.6,437.0 L362.1,437.0 L361.6,437.0 L361.1,437.0 L360.6,437.0 L360.1,437.0 L359.6,437.0 L359.1,437.0 L358.6,437.0 L358.1,437.0 L357.6,437.0 L357.1,437.0 L356.6,437.0 L356.1,437.0 L355.6,437.0 L355.1,437.0 L354.6,437.0 L354.1,437.0 L353.6,437.0 L353.1,437.0 L352.6,437.0 L352.1,437.0 L351.6,437.0 L351.1,437.0 L350.6,437.0 L350.1,437.0 L349.6,437.0 L349.1,437.0 L348.6,437.0 L348.1,437.0 L347.6,437.0 L347.1,437.0 L346.6,437.0 L346.1,437.0 L345.6,437.0 L345.1,437.0 L344.6,437.0 L344.1,437.0 L343.6,437.0 L343.1,437.0 L342.6,437.0 L342.1,437.0 L341.6,437.0 L341.1,437.0 L340.6,437.0 L340.1,437.0 L339.6,437.0 L339.1,437.0 L338.6,437.0 L338.1,437.0 L337.6,437.0 L337.1,437.0 L336.6,437.0 L336.1,437.0 L335.6,437.0 L335.1,437.0 L334.6,437.0 L334.1,437.0 L333.6,437.0 L333.1,437.0 L332.6,437.0 L332.1,437.0 L331.6,437.0 L331.1,437.0 L330.6,437.0 L330.1,437.0 L329.6,437.0 L329.1,437.0 L328.6,437.0 L328.1,437.0 L327.6,437.0 L327.1,437.0 L326.6,437.0 L326.1,437.0 L325.6,437.0 L325.1,437.0 L324.6,437.0 L324.1,437.0 L323.6,437.0 L323.1,437.0 L322.6,437.0 L322.1,437.0 L321.6,437.0 L321.1,437.0 L320.6,437.0 L320.1,437.0 L319.6,437.0 L319.1,437.0 L318.6,437.0 L318.1,437.0 L317.6,437.0 L317.1,437.0 L316.6,437.0 L316.1,437.0 L315.6,437.0 L315.1,437.0 L314.6,437.0 L314.1,437.0 L313.6,437.0 L313.1,437.0 L312.6,437.0 L312.1,437.0 L311.6,437.0 L311.1,437.0 L310.6,437.0 L310.1,437.0 L309.6,437.0 L309.1,437.0 L308.6,437.0 L308.1,437.0 L307.6,437.0 L307.1,437.0 L306.6,437.0 L306.1,437.0 L305.6,437.0 L305.1,437.0 L304.6,437.0 L304.1,437.0 L303.6,437.0 L303.1,437.0 L302.6,437.0 L302.1,437.0 L301.6,437.0 L301.1,437.0 L300.6,437.0 L300.1,437.0 L299.6,437.0 L299.1,437.0 L298.6,437.0 L298.1,437.0 L297.6,437.0 L297.1,437.0 L296.6,437.0 L296.1,437.0 L295.6,437.0 L295.1,437.0 L294.6,437.0 L294.1,437.0 L293.6,437.0 L293.1,437.0 L292.6,437.0 L292.1,437.0 L291.6,437.0Z" fill="#37828e"/><rect x="291.6" y="497.4" width="230" height="0.8" fill="#4a959d"/><path d="M291.6,558.6 L292.1,558.6 L292.6,558.6 L293.1,558.6 L293.6,558.6 L294.1,558.6 L294.6,558.6 L295.1,558.6 L295.6,558.6 L296.1,558.6 L296.6,558.6 L297.1,558.6 L297.6,558.6 L298.1,558.6 L298.6,558.6 L299.1,558.6 L299.6,558.6 L300.1,558.6 L300.6,558.6 L301.1,558.6 L301.6,558.6 L302.1,558.6 L302.6,558.6 L303.1,558.6 L303.6,558.6 L304.1,558.6 L304.6,558.6 L305.1,558.6 L305.6,558.6 L306.1,558.6 L306.6,558.6 L307.1,558.6 L307.6,558.6 L308.1,558.6 L308.6,558.6 L309.1,558.6 L309.6,558.6 L310.1,558.6 L310.6,558.6 L311.1,558.6 L311.6,558.6 L312.1,558.6 L312.6,558.6 L313.1,558.6 L313.6,558.6 L314.1,558.6 L314.6,558.6 L315.1,558.6 L315.6,558.6 L316.1,558.6 L316.6,558.6 L317.1,558.6 L317.6,558.6 L318.1,558.6 L318.6,558.6 L319.1,558.6 L319.6,558.6 L320.1,558.6 L320.6,558.6 L321.1,558.6 L321.6,558.6 L322.1,558.2 L322.6,555.5 L323.1,552.2 L323.6,552.3 L324.1,553.9 L324.6,553.5 L325.1,554.0 L325.6,552.5 L326.1,553.1 L326.6,553.6 L327.1,553.2 L327.6,551.9 L328.1,553.1 L328.6,552.3 L329.1,552.5 L329.6,552.9 L330.1,552.6 L330.6,553.2 L331.1,553.6 L331.6,552.8 L332.1,553.3 L332.6,553.2 L333.1,553.6 L333.6,551.6 L334.1,552.9 L334.6,553.5 L335.1,554.0 L335.6,553.4 L336.1,551.6 L336.6,553.1 L337.1,552.1 L337.6,553.4 L338.1,552.2 L338.6,552.7 L339.1,551.9 L339.6,552.5 L340.1,552.9 L340.6,553.1 L341.1,552.5 L341.6,553.3 L342.1,554.9 L342.6,556.5 L343.1,557.4 L343.6,555.8 L344.1,554.7 L344.6,555.0 L345.1,553.1 L345.6,552.8 L346.1,553.0 L346.6,552.3 L347.1,552.4 L347.6,554.0 L348.1,552.1 L348.6,553.7 L349.1,553.6 L349.6,552.0 L350.1,554.1 L350.6,553.5 L351.1,552.8 L351.6,553.7 L352.1,553.7 L352.6,552.3 L353.1,552.8 L353.6,552.4 L354.1,552.5 L354.6,553.8 L355.1,555.2 L355.6,556.7 L356.1,557.6 L356.6,557.0 L357.1,555.9 L357.6,555.3 L358.1,553.6 L358.6,553.3 L359.1,553.2 L359.6,552.5 L360.1,553.5 L360.6,553.9 L361.1,553.2 L361.6,553.9 L362.1,554.2 L362.6,554.0 L363.1,553.0 L363.6,552.1 L364.1,554.1 L364.6,552.4 L365.1,553.9 L365.6,552.8 L366.1,553.3 L366.6,552.9 L367.1,552.1 L367.6,553.0 L368.1,553.0 L368.6,552.0 L369.1,553.7 L369.6,553.1 L370.1,552.1 L370.6,551.7 L371.1,551.2 L371.6,553.3 L372.1,552.2 L372.6,553.1 L373.1,552.0 L373.6,551.5 L374.1,553.5 L374.6,552.9 L375.1,551.2 L375.6,552.9 L376.1,552.0 L376.6,551.5 L377.1,553.0 L377.6,551.6 L378.1,553.8 L378.6,552.8 L379.1,553.3 L379.6,552.8 L380.1,553.1 L380.6,553.7 L381.1,551.4 L381.6,553.2 L382.1,552.0 L382.6,552.1 L383.1,551.2 L383.6,551.1 L384.1,551.8 L384.6,553.1 L385.1,551.3 L385.6,553.3 L386.1,550.8 L386.6,552.7 L387.1,552.8 L387.6,552.9 L388.1,552.3 L388.6,551.1 L389.1,551.2 L389.6,553.2 L390.1,554.8 L390.6,556.9 L391.1,557.7 L391.6,557.0 L392.1,556.1 L392.6,554.6 L393.1,553.4 L393.6,554.6 L394.1,551.8 L394.6,551.9 L395.1,553.1 L395.6,552.5 L396.1,552.2 L396.6,553.8 L397.1,552.7 L397.6,551.7 L398.1,552.0 L398.6,551.9 L399.1,554.1 L399.6,552.4 L400.1,553.0 L400.6,551.9 L401.1,553.9 L401.6,552.9 L402.1,554.0 L402.6,552.2 L403.1,552.4 L403.6,554.2 L404.1,553.5 L404.6,553.9 L405.1,552.6 L405.6,552.7 L406.1,554.2 L406.6,551.8 L407.1,551.8 L407.6,553.2 L408.1,552.8 L408.6,553.4 L409.1,552.7 L409.6,553.3 L410.1,553.2 L410.6,552.3 L411.1,554.0 L411.6,554.8 L412.1,555.1 L412.6,556.9 L413.1,557.7 L413.6,556.2 L414.1,556.3 L414.6,555.3 L415.1,554.7 L415.6,554.2 L416.1,553.4 L416.6,552.9 L417.1,554.0 L417.6,552.9 L418.1,554.2 L418.6,554.1 L419.1,553.8 L419.6,553.7 L420.1,553.4 L420.6,553.6 L421.1,552.1 L421.6,552.6 L422.1,553.1 L422.6,552.3 L423.1,552.5 L423.6,553.5 L424.1,552.9 L424.6,553.8 L425.1,555.4 L425.6,556.3 L426.1,557.3 L426.6,556.3 L427.1,556.3 L427.6,555.1 L428.1,553.8 L428.6,554.0 L429.1,552.5 L429.6,554.5 L430.1,552.9 L430.6,554.0 L431.1,552.8 L431.6,553.6 L432.1,553.3 L432.6,554.0 L433.1,554.0 L433.6,552.4 L434.1,553.0 L434.6,553.0 L435.1,554.3 L435.6,553.8 L436.1,552.1 L436.6,554.0 L437.1,553.1 L437.6,552.7 L438.1,553.2 L438.6,553.1 L439.1,552.0 L439.6,552.4 L440.1,553.8 L440.6,553.3 L441.1,553.3 L441.6,552.6 L442.1,552.6 L442.6,553.7 L443.1,552.5 L443.6,553.2 L444.1,554.3 L444.6,553.5 L445.1,553.3 L445.6,553.8 L446.1,552.5 L446.6,551.6 L447.1,551.8 L447.6,552.6 L448.1,551.9 L448.6,552.9 L449.1,552.6 L449.6,551.8 L450.1,554.0 L450.6,553.2 L451.1,553.1 L451.6,553.2 L452.1,553.0 L452.6,554.0 L453.1,552.2 L453.6,551.4 L454.1,553.4 L454.6,553.5 L455.1,553.1 L455.6,551.8 L456.1,553.4 L456.6,551.8 L457.1,553.5 L457.6,552.3 L458.1,551.9 L458.6,552.1 L459.1,553.7 L459.6,551.2 L460.1,551.5 L460.6,552.4 L461.1,551.0 L461.6,551.7 L462.1,552.8 L462.6,552.0 L463.1,550.4 L463.6,551.4 L464.1,552.7 L464.6,552.1 L465.1,551.9 L465.6,550.3 L466.1,550.0 L466.6,550.7 L467.1,550.9 L467.6,548.8 L468.1,551.2 L468.6,550.0 L469.1,551.7 L469.6,550.6 L470.1,551.8 L470.6,552.1 L471.1,551.3 L471.6,552.1 L472.1,551.2 L472.6,550.2 L473.1,550.6 L473.6,549.7 L474.1,550.9 L474.6,552.3 L475.1,550.0 L475.6,551.2 L476.1,550.0 L476.6,549.2 L477.1,550.8 L477.6,551.8 L478.1,551.4 L478.6,551.0 L479.1,551.6 L479.6,552.4 L480.1,551.4 L480.6,550.5 L481.1,549.9 L481.6,550.1 L482.1,549.6 L482.6,549.9 L483.1,551.3 L483.6,550.5 L484.1,552.6 L484.6,550.0 L485.1,550.3 L485.6,551.8 L486.1,551.1 L486.6,551.8 L487.1,550.0 L487.6,551.3 L488.1,550.0 L488.6,549.5 L489.1,550.0 L489.6,551.4 L490.1,551.6 L490.6,549.4 L491.1,549.6 L491.6,552.1 L492.1,551.5 L492.6,550.0 L493.1,550.1 L493.6,551.8 L494.1,551.2 L494.6,549.4 L495.1,552.4 L495.6,551.8 L496.1,550.4 L496.6,549.6 L497.1,549.4 L497.6,551.1 L498.1,550.0 L498.6,549.3 L499.1,551.6 L499.6,552.0 L500.1,551.8 L500.6,550.0 L501.1,552.3 L501.6,550.8 L502.1,549.5 L502.6,552.1 L503.1,550.5 L503.6,550.9 L504.1,549.4 L504.6,551.0 L505.1,551.0 L505.6,549.6 L506.1,550.1 L506.6,552.2 L507.1,549.9 L507.6,551.4 L508.1,549.4 L508.6,549.4 L509.1,551.0 L509.6,551.3 L510.1,552.0 L510.6,551.8 L511.1,552.0 L511.6,552.2 L512.1,550.2 L512.6,552.6 L513.1,550.7 L513.6,550.7 L514.1,550.2 L514.6,550.8 L515.1,549.5 L515.6,551.8 L516.1,552.4 L516.6,550.7 L517.1,551.8 L517.6,549.3 L518.1,549.5 L518.6,550.3 L519.1,549.8 L519.6,551.9 L519.6,566.1 L519.1,568.2 L518.6,567.7 L518.1,568.5 L517.6,568.7 L517.1,566.2 L516.6,567.3 L516.1,565.6 L515.6,566.2 L515.1,568.5 L514.6,567.2 L514.1,567.8 L513.6,567.3 L513.1,567.3 L512.6,565.4 L512.1,567.8 L511.6,565.8 L511.1,566.0 L510.6,566.2 L510.1,566.0 L509.6,566.7 L509.1,567.0 L508.6,568.6 L508.1,568.6 L507.6,566.6 L507.1,568.1 L506.6,565.8 L506.1,567.9 L505.6,568.4 L505.1,567.0 L504.6,567.0 L504.1,568.6 L503.6,567.1 L503.1,567.5 L502.6,565.9 L502.1,568.5 L501.6,567.2 L501.1,565.7 L500.6,568.0 L500.1,566.2 L499.6,566.0 L499.1,566.4 L498.6,568.7 L498.1,568.0 L497.6,566.9 L497.1,568.6 L496.6,568.4 L496.1,567.6 L495.6,566.2 L495.1,565.6 L494.6,568.6 L494.1,566.8 L493.6,566.2 L493.1,567.9 L492.6,568.0 L492.1,566.5 L491.6,565.9 L491.1,568.4 L490.6,568.6 L490.1,566.4 L489.6,566.6 L489.1,568.0 L488.6,568.5 L488.1,568.0 L487.6,566.7 L487.1,568.0 L486.6,566.2 L486.1,566.9 L485.6,566.2 L485.1,567.7 L484.6,568.0 L484.1,565.4 L483.6,567.5 L483.1,566.7 L482.6,568.1 L482.1,568.4 L481.6,567.9 L481.1,568.1 L480.6,567.5 L480.1,566.6 L479.6,565.6 L479.1,566.4 L478.6,567.0 L478.1,566.6 L477.6,566.2 L477.1,567.2 L476.6,568.8 L476.1,568.0 L475.6,566.8 L475.1,568.0 L474.6,565.7 L474.1,567.1 L473.6,568.3 L473.1,567.4 L472.6,567.8 L472.1,566.8 L471.6,565.9 L471.1,566.7 L470.6,565.9 L470.1,566.2 L469.6,567.4 L469.1,566.3 L468.6,568.0 L468.1,566.8 L467.6,569.2 L467.1,567.1 L466.6,567.3 L466.1,568.0 L465.6,567.7 L465.1,566.1 L464.6,565.9 L464.1,565.3 L463.6,566.6 L463.1,567.6 L462.6,566.0 L462.1,565.2 L461.6,566.3 L461.1,567.0 L460.6,565.6 L460.1,566.5 L459.6,566.8 L459.1,564.3 L458.6,565.9 L458.1,566.1 L457.6,565.7 L457.1,564.5 L456.6,566.2 L456.1,564.6 L455.6,566.2 L455.1,564.9 L454.6,564.5 L454.1,564.6 L453.6,566.6 L453.1,565.8 L452.6,564.0 L452.1,565.0 L451.6,564.8 L451.1,564.9 L450.6,564.8 L450.1,564.0 L449.6,566.2 L449.1,565.4 L448.6,565.1 L448.1,566.1 L447.6,565.4 L447.1,566.2 L446.6,566.4 L446.1,565.5 L445.6,564.2 L445.1,564.7 L444.6,564.5 L444.1,563.7 L443.6,564.8 L443.1,565.5 L442.6,564.3 L442.1,565.4 L441.6,565.4 L441.1,564.7 L440.6,564.7 L440.1,564.2 L439.6,565.6 L439.1,566.0 L438.6,564.9 L438.1,564.8 L437.6,565.3 L437.1,564.9 L436.6,564.0 L436.1,565.9 L435.6,564.2 L435.1,563.7 L434.6,565.0 L434.1,565.0 L433.6,565.6 L433.1,564.0 L432.6,564.0 L432.1,564.7 L431.6,564.4 L431.1,565.2 L430.6,564.0 L430.1,565.1 L429.6,563.5 L429.1,565.5 L428.6,564.0 L428.1,564.2 L427.6,562.9 L427.1,561.7 L426.6,561.7 L426.1,560.7 L425.6,561.7 L425.1,562.6 L424.6,564.2 L424.1,565.1 L423.6,564.5 L423.1,565.5 L422.6,565.7 L422.1,564.9 L421.6,565.4 L421.1,565.9 L420.6,564.4 L420.1,564.6 L419.6,564.3 L419.1,564.2 L418.6,563.9 L418.1,563.8 L417.6,565.1 L417.1,564.0 L416.6,565.1 L416.1,564.6 L415.6,563.8 L415.1,563.3 L414.6,562.7 L414.1,561.7 L413.6,561.8 L413.1,560.3 L412.6,561.1 L412.1,562.9 L411.6,563.2 L411.1,564.0 L410.6,565.7 L410.1,564.8 L409.6,564.7 L409.1,565.3 L408.6,564.6 L408.1,565.2 L407.6,564.8 L407.1,566.2 L406.6,566.2 L406.1,563.8 L405.6,565.3 L405.1,565.4 L404.6,564.1 L404.1,564.5 L403.6,563.8 L403.1,565.6 L402.6,565.8 L402.1,564.0 L401.6,565.1 L401.1,564.1 L400.6,566.1 L400.1,565.0 L399.6,565.6 L399.1,563.9 L398.6,566.1 L398.1,566.0 L397.6,566.3 L397.1,565.3 L396.6,564.2 L396.1,565.8 L395.6,565.5 L395.1,564.9 L394.6,566.1 L394.1,566.2 L393.6,563.4 L393.1,564.6 L392.6,563.4 L392.1,561.9 L391.6,561.0 L391.1,560.3 L390.6,561.1 L390.1,563.2 L389.6,564.8 L389.1,566.8 L388.6,566.9 L388.1,565.7 L387.6,565.1 L387.1,565.2 L386.6,565.3 L386.1,567.2 L385.6,564.7 L385.1,566.7 L384.6,564.9 L384.1,566.2 L383.6,566.9 L383.1,566.8 L382.6,565.9 L382.1,566.0 L381.6,564.8 L381.1,566.6 L380.6,564.3 L380.1,564.9 L379.6,565.2 L379.1,564.7 L378.6,565.2 L378.1,564.2 L377.6,566.4 L377.1,565.0 L376.6,566.5 L376.1,566.0 L375.6,565.1 L375.1,566.8 L374.6,565.1 L374.1,564.5 L373.6,566.5 L373.1,566.0 L372.6,564.9 L372.1,565.8 L371.6,564.7 L371.1,566.8 L370.6,566.3 L370.1,565.9 L369.6,564.9 L369.1,564.3 L368.6,566.0 L368.1,565.0 L367.6,565.0 L367.1,565.9 L366.6,565.1 L366.1,564.7 L365.6,565.2 L365.1,564.1 L364.6,565.6 L364.1,563.9 L363.6,565.9 L363.1,565.0 L362.6,564.0 L362.1,563.8 L361.6,564.1 L361.1,564.8 L360.6,564.1 L360.1,564.5 L359.6,565.5 L359.1,564.8 L358.6,564.7 L358.1,564.4 L357.6,562.7 L357.1,562.1 L356.6,561.0 L356.1,560.4 L355.6,561.3 L355.1,562.8 L354.6,564.2 L354.1,565.5 L353.6,565.6 L353.1,565.2 L352.6,565.7 L352.1,564.3 L351.6,564.3 L351.1,565.2 L350.6,564.5 L350.1,563.9 L349.6,566.0 L349.1,564.4 L348.6,564.3 L348.1,565.9 L347.6,564.0 L347.1,565.6 L346.6,565.7 L346.1,565.0 L345.6,565.2 L345.1,564.9 L344.6,563.0 L344.1,563.3 L343.6,562.2 L343.1,560.6 L342.6,561.5 L342.1,563.1 L341.6,564.7 L341.1,565.5 L340.6,564.9 L340.1,565.1 L339.6,565.5 L339.1,566.1 L338.6,565.3 L338.1,565.8 L337.6,564.6 L337.1,565.9 L336.6,564.9 L336.1,566.4 L335.6,564.6 L335.1,564.0 L334.6,564.5 L334.1,565.1 L333.6,566.4 L333.1,564.4 L332.6,564.8 L332.1,564.7 L331.6,565.2 L331.1,564.4 L330.6,564.8 L330.1,565.4 L329.6,565.1 L329.1,565.5 L328.6,565.7 L328.1,564.9 L327.6,566.1 L327.1,564.8 L326.6,564.4 L326.1,564.9 L325.6,565.5 L325.1,564.0 L324.6,564.5 L324.1,564.1 L323.6,565.7 L323.1,565.8 L322.6,562.5 L322.1,559.8 L321.6,559.4 L321.1,559.4 L320.6,559.4 L320.1,559.4 L319.6,559.4 L319.1,559.4 L318.6,559.4 L318.1,559.4 L317.6,559.4 L317.1,559.4 L316.6,559.4 L316.1,559.4 L315.6,559.4 L315.1,559.4 L314.6,559.4 L314.1,559.4 L313.6,559.4 L313.1,559.4 L312.6,559.4 L312.1,559.4 L311.6,559.4 L311.1,559.4 L310.6,559.4 L310.1,559.4 L309.6,559.4 L309.1,559.4 L308.6,559.4 L308.1,559.4 L307.6,559.4 L307.1,559.4 L306.6,559.4 L306.1,559.4 L305.6,559.4 L305.1,559.4 L304.6,559.4 L304.1,559.4 L303.6,559.4 L303.1,559.4 L302.6,559.4 L302.1,559.4 L301.6,559.4 L301.1,559.4 L300.6,559.4 L300.1,559.4 L299.6,559.4 L299.1,559.4 L298.6,559.4 L298.1,559.4 L297.6,559.4 L297.1,559.4 L296.6,559.4 L296.1,559.4 L295.6,559.4 L295.1,559.4 L294.6,559.4 L294.1,559.4 L293.6,559.4 L293.1,559.4 L292.6,559.4 L292.1,559.4 L291.6,559.4Z" fill="#2f7d8a"/><path d="M291.6,621.4 L292.1,621.4 L292.6,621.4 L293.1,621.4 L293.6,621.4 L294.1,621.4 L294.6,597.8 L295.1,602.2 L295.6,614.6 L296.1,619.1 L296.6,620.8 L297.1,621.4 L297.6,621.4 L298.1,621.4 L298.6,621.4 L299.1,621.4 L299.6,621.4 L300.1,621.4 L300.6,621.4 L301.1,621.4 L301.6,621.4 L302.1,621.4 L302.6,621.4 L303.1,621.4 L303.6,604.8 L304.1,611.5 L304.6,618.0 L305.1,620.4 L305.6,621.3 L306.1,621.4 L306.6,621.4 L307.1,621.4 L307.6,621.4 L308.1,621.4 L308.6,621.4 L309.1,621.4 L309.6,621.4 L310.1,621.4 L310.6,621.4 L311.1,621.4 L311.6,621.4 L312.1,621.4 L312.6,597.8 L313.1,611.0 L313.6,617.8 L314.1,620.3 L314.6,621.3 L315.1,621.4 L315.6,621.4 L316.1,621.4 L316.6,621.4 L317.1,621.4 L317.6,621.4 L318.1,621.4 L318.6,621.4 L319.1,621.4 L319.6,621.4 L320.1,621.4 L320.6,621.4 L321.1,604.8 L321.6,606.4 L322.1,616.1 L322.6,619.7 L323.1,621.0 L323.6,621.4 L324.1,621.4 L324.6,621.4 L325.1,621.4 L325.6,621.4 L326.1,621.4 L326.6,621.4 L327.1,621.4 L327.6,621.4 L328.1,621.4 L328.6,621.4 L329.1,621.4 L329.6,621.4 L330.1,597.8 L330.6,605.7 L331.1,615.9 L331.6,619.6 L332.1,621.0 L332.6,621.4 L333.1,621.4 L333.6,621.4 L334.1,621.4 L334.6,621.4 L335.1,621.4 L335.6,621.4 L336.1,621.4 L336.6,621.4 L337.1,621.4 L337.6,621.4 L338.1,621.4 L338.6,621.4 L339.1,604.8 L339.6,613.4 L340.1,618.7 L340.6,620.7 L341.1,621.4 L341.6,621.4 L342.1,621.4 L342.6,621.4 L343.1,621.4 L343.6,621.4 L344.1,621.4 L344.6,621.4 L345.1,621.4 L345.6,621.4 L346.1,621.4 L346.6,621.4 L347.1,621.4 L347.6,621.4 L348.1,597.8 L348.6,613.0 L349.1,618.6 L349.6,620.6 L350.1,621.4 L350.6,621.4 L351.1,621.4 L351.6,621.4 L352.1,621.4 L352.6,621.4 L353.1,621.4 L353.6,621.4 L354.1,621.4 L354.6,621.4 L355.1,621.4 L355.6,621.4 L356.1,621.4 L356.6,604.8 L357.1,609.2 L357.6,617.2 L358.1,620.1 L358.6,621.2 L359.1,621.4 L359.6,621.4 L360.1,621.4 L360.6,621.4 L361.1,621.4 L361.6,621.4 L362.1,621.4 L362.6,621.4 L363.1,621.4 L363.6,621.4 L364.1,621.4 L364.6,621.4 L365.1,621.4 L365.6,597.8 L366.1,608.6 L366.6,617.0 L367.1,620.0 L367.6,621.1 L368.1,621.4 L368.6,621.4 L369.1,621.4 L369.6,621.4 L370.1,621.4 L370.6,621.4 L371.1,621.4 L371.6,621.4 L372.1,621.4 L372.6,621.4 L373.1,621.4 L373.6,621.4 L374.1,621.4 L374.6,604.8 L375.1,614.9 L375.6,619.3 L376.1,620.9 L376.6,621.4 L377.1,621.4 L377.6,621.4 L378.1,621.4 L378.6,621.4 L379.1,621.4 L379.6,621.4 L380.1,621.4 L380.6,621.4 L381.1,621.4 L381.6,621.4 L382.1,621.4 L382.6,621.4 L383.1,597.8 L383.6,602.2 L384.1,614.6 L384.6,619.1 L385.1,620.8 L385.6,621.4 L386.1,621.4 L386.6,621.4 L387.1,621.4 L387.6,621.4 L388.1,621.4 L388.6,621.4 L389.1,621.4 L389.6,621.4 L390.1,621.4 L390.6,621.4 L391.1,621.4 L391.6,621.4 L392.1,604.8 L392.6,611.5 L393.1,618.0 L393.6,620.4 L394.1,621.3 L394.6,621.4 L395.1,621.4 L395.6,621.4 L396.1,621.4 L396.6,621.4 L397.1,621.4 L397.6,621.4 L398.1,621.4 L398.6,621.4 L399.1,621.4 L399.6,621.4 L400.1,621.4 L400.6,621.4 L401.1,597.8 L401.6,611.0 L402.1,617.8 L402.6,620.3 L403.1,621.3 L403.6,621.4 L404.1,621.4 L404.6,621.4 L405.1,621.4 L405.6,621.4 L406.1,621.4 L406.6,621.4 L407.1,621.4 L407.6,621.4 L408.1,621.4 L408.6,621.4 L409.1,621.4 L409.6,604.8 L410.1,606.4 L410.6,616.1 L411.1,619.7 L411.6,621.0 L412.1,621.4 L412.6,621.4 L413.1,621.4 L413.6,621.4 L414.1,621.4 L414.6,621.4 L415.1,621.4 L415.6,621.4 L416.1,621.4 L416.6,621.4 L417.1,621.4 L417.6,621.4 L418.1,621.4 L418.6,597.8 L419.1,605.7 L419.6,615.9 L420.1,619.6 L420.6,621.0 L421.1,621.4 L421.6,621.4 L422.1,621.4 L422.6,621.4 L423.1,621.4 L423.6,621.4 L424.1,621.4 L424.6,621.4 L425.1,621.4 L425.6,621.4 L426.1,621.4 L426.6,621.4 L427.1,621.4 L427.6,604.8 L428.1,613.4 L428.6,618.7 L429.1,620.7 L429.6,621.4 L430.1,621.4 L430.6,621.4 L431.1,621.4 L431.6,621.4 L432.1,621.4 L432.6,621.4 L433.1,621.4 L433.6,621.4 L434.1,621.4 L434.6,621.4 L435.1,621.4 L435.6,621.4 L436.1,621.4 L436.6,597.8 L437.1,613.0 L437.6,618.6 L438.1,620.6 L438.6,621.4 L439.1,621.4 L439.6,621.4 L440.1,621.4 L440.6,621.4 L441.1,621.4 L441.6,621.4 L442.1,621.4 L442.6,621.4 L443.1,621.4 L443.6,621.4 L444.1,621.4 L444.6,621.4 L445.1,604.8 L445.6,609.2 L446.1,617.2 L446.6,620.1 L447.1,621.2 L447.6,621.4 L448.1,621.4 L448.6,621.4 L449.1,621.4 L449.6,621.4 L450.1,621.4 L450.6,621.4 L451.1,621.4 L451.6,621.4 L452.1,621.4 L452.6,621.4 L453.1,621.4 L453.6,621.4 L454.1,597.8 L454.6,608.6 L455.1,617.0 L455.6,620.0 L456.1,621.1 L456.6,621.4 L457.1,621.4 L457.6,621.4 L458.1,621.4 L458.6,621.4 L459.1,621.4 L459.6,621.4 L460.1,621.4 L460.6,621.4 L461.1,621.4 L461.6,621.4 L462.1,621.4 L462.6,621.4 L463.1,604.8 L463.6,614.9 L464.1,619.3 L464.6,620.9 L465.1,621.4 L465.6,621.4 L466.1,621.4 L466.6,621.4 L467.1,621.4 L467.6,621.4 L468.1,621.4 L468.6,621.4 L469.1,621.4 L469.6,621.4 L470.1,621.4 L470.6,621.4 L471.1,621.4 L471.6,597.8 L472.1,602.2 L472.6,614.6 L473.1,619.1 L473.6,620.8 L474.1,621.4 L474.6,621.4 L475.1,621.4 L475.6,621.4 L476.1,621.4 L476.6,621.4 L477.1,621.4 L477.6,621.4 L478.1,621.4 L478.6,621.4 L479.1,621.4 L479.6,621.4 L480.1,621.4 L480.6,604.8 L481.1,611.5 L481.6,618.0 L482.1,620.4 L482.6,621.3 L483.1,621.4 L483.6,621.4 L484.1,621.4 L484.6,621.4 L485.1,621.4 L485.6,621.4 L486.1,621.4 L486.6,621.4 L487.1,621.4 L487.6,621.4 L488.1,621.4 L488.6,621.4 L489.1,621.4 L489.6,597.8 L490.1,611.0 L490.6,617.8 L491.1,620.3 L491.6,621.3 L492.1,621.4 L492.6,621.4 L493.1,621.4 L493.6,621.4 L494.1,621.4 L494.6,621.4 L495.1,621.4 L495.6,621.4 L496.1,621.4 L496.6,621.4 L497.1,621.4 L497.6,621.4 L498.1,604.8 L498.6,606.4 L499.1,616.1 L499.6,619.7 L500.1,621.0 L500.6,621.4 L501.1,621.4 L501.6,621.4 L502.1,621.4 L502.6,621.4 L503.1,621.4 L503.6,621.4 L504.1,621.4 L504.6,621.4 L505.1,621.4 L505.6,621.4 L506.1,621.4 L506.6,621.4 L507.1,597.8 L507.6,605.7 L508.1,615.9 L508.6,619.6 L509.1,621.0 L509.6,621.4 L510.1,621.4 L510.6,621.4 L511.1,621.4 L511.6,621.4 L512.1,621.4 L512.6,621.4 L513.1,621.4 L513.6,621.4 L514.1,621.4 L514.6,621.4 L515.1,621.4 L515.6,621.4 L516.1,604.8 L516.6,613.4 L517.1,618.7 L517.6,620.7 L518.1,621.4 L518.6,621.4 L519.1,621.4 L519.6,621.4 L519.6,622.3 L519.1,622.3 L518.6,622.3 L518.1,622.3 L517.6,622.9 L517.1,624.9 L516.6,630.2 L516.1,638.8 L515.6,622.3 L515.1,622.3 L514.6,622.3 L514.1,622.3 L513.6,622.3 L513.1,622.3 L512.6,622.3 L512.1,622.3 L511.6,622.3 L511.1,622.3 L510.6,622.3 L510.1,622.3 L509.6,622.3 L509.1,622.6 L508.6,624.0 L508.1,627.7 L507.6,637.9 L507.1,645.8 L506.6,622.3 L506.1,622.3 L505.6,622.3 L505.1,622.3 L504.6,622.3 L504.1,622.3 L503.6,622.3 L503.1,622.3 L502.6,622.3 L502.1,622.3 L501.6,622.3 L501.1,622.3 L500.6,622.3 L500.1,622.6 L499.6,623.9 L499.1,627.5 L498.6,637.2 L498.1,638.8 L497.6,622.3 L497.1,622.3 L496.6,622.3 L496.1,622.3 L495.6,622.3 L495.1,622.3 L494.6,622.3 L494.1,622.3 L493.6,622.3 L493.1,622.3 L492.6,622.3 L492.1,622.3 L491.6,622.3 L491.1,623.3 L490.6,625.8 L490.1,632.6 L489.6,645.8 L489.1,622.3 L488.6,622.3 L488.1,622.3 L487.6,622.3 L487.1,622.3 L486.6,622.3 L486.1,622.3 L485.6,622.3 L485.1,622.3 L484.6,622.3 L484.1,622.3 L483.6,622.3 L483.1,622.3 L482.6,622.3 L482.1,623.2 L481.6,625.6 L481.1,632.1 L480.6,638.8 L480.1,622.3 L479.6,622.3 L479.1,622.3 L478.6,622.3 L478.1,622.3 L477.6,622.3 L477.1,622.3 L476.6,622.3 L476.1,622.3 L475.6,622.3 L475.1,622.3 L474.6,622.3 L474.1,622.3 L473.6,622.8 L473.1,624.5 L472.6,629.0 L472.1,641.4 L471.6,645.8 L471.1,622.3 L470.6,622.3 L470.1,622.3 L469.6,622.3 L469.1,622.3 L468.6,622.3 L468.1,622.3 L467.6,622.3 L467.1,622.3 L466.6,622.3 L466.1,622.3 L465.6,622.3 L465.1,622.3 L464.6,622.7 L464.1,624.3 L463.6,628.7 L463.1,638.8 L462.6,622.3 L462.1,622.3 L461.6,622.3 L461.1,622.3 L460.6,622.3 L460.1,622.3 L459.6,622.3 L459.1,622.3 L458.6,622.3 L458.1,622.3 L457.6,622.3 L457.1,622.3 L456.6,622.3 L456.1,622.5 L455.6,623.6 L455.1,626.6 L454.6,635.0 L454.1,645.8 L453.6,622.3 L453.1,622.3 L452.6,622.3 L452.1,622.3 L451.6,622.3 L451.1,622.3 L450.6,622.3 L450.1,622.3 L449.6,622.3 L449.1,622.3 L448.6,622.3 L448.1,622.3 L447.6,622.3 L447.1,622.4 L446.6,623.5 L446.1,626.4 L445.6,634.4 L445.1,638.8 L444.6,622.3 L444.1,622.3 L443.6,622.3 L443.1,622.3 L442.6,622.3 L442.1,622.3 L441.6,622.3 L441.1,622.3 L440.6,622.3 L440.1,622.3 L439.6,622.3 L439.1,622.3 L438.6,622.3 L438.1,623.0 L437.6,625.0 L437.1,630.6 L436.6,645.8 L436.1,622.3 L435.6,622.3 L435.1,622.3 L434.6,622.3 L434.1,622.3 L433.6,622.3 L433.1,622.3 L432.6,622.3 L432.1,622.3 L431.6,622.3 L431.1,622.3 L430.6,622.3 L430.1,622.3 L429.6,622.3 L429.1,622.9 L428.6,624.9 L428.1,630.2 L427.6,638.8 L427.1,622.3 L426.6,622.3 L426.1,622.3 L425.6,622.3 L425.1,622.3 L424.6,622.3 L424.1,622.3 L423.6,622.3 L423.1,622.3 L422.6,622.3 L422.1,622.3 L421.6,622.3 L421.1,622.3 L420.6,622.6 L420.1,624.0 L419.6,627.7 L419.1,637.9 L418.6,645.8 L418.1,622.3 L417.6,622.3 L417.1,622.3 L416.6,622.3 L416.1,622.3 L415.6,622.3 L415.1,622.3 L414.6,622.3 L414.1,622.3 L413.6,622.3 L413.1,622.3 L412.6,622.3 L412.1,622.3 L411.6,622.6 L411.1,623.9 L410.6,627.5 L410.1,637.2 L409.6,638.8 L409.1,622.3 L408.6,622.3 L408.1,622.3 L407.6,622.3 L407.1,622.3 L406.6,622.3 L406.1,622.3 L405.6,622.3 L405.1,622.3 L404.6,622.3 L404.1,622.3 L403.6,622.3 L403.1,622.3 L402.6,623.3 L402.1,625.8 L401.6,632.6 L401.1,645.8 L400.6,622.3 L400.1,622.3 L399.6,622.3 L399.1,622.3 L398.6,622.3 L398.1,622.3 L397.6,622.3 L397.1,622.3 L396.6,622.3 L396.1,622.3 L395.6,622.3 L395.1,622.3 L394.6,622.3 L394.1,622.3 L393.6,623.2 L393.1,625.6 L392.6,632.1 L392.1,638.8 L391.6,622.3 L391.1,622.3 L390.6,622.3 L390.1,622.3 L389.6,622.3 L389.1,622.3 L388.6,622.3 L388.1,622.3 L387.6,622.3 L387.1,622.3 L386.6,622.3 L386.1,622.3 L385.6,622.3 L385.1,622.8 L384.6,624.5 L384.1,629.0 L383.6,641.4 L383.1,645.8 L382.6,622.3 L382.1,622.3 L381.6,622.3 L381.1,622.3 L380.6,622.3 L380.1,622.3 L379.6,622.3 L379.1,622.3 L378.6,622.3 L378.1,622.3 L377.6,622.3 L377.1,622.3 L376.6,622.3 L376.1,622.7 L375.6,624.3 L375.1,628.7 L374.6,638.8 L374.1,622.3 L373.6,622.3 L373.1,622.3 L372.6,622.3 L372.1,622.3 L371.6,622.3 L371.1,622.3 L370.6,622.3 L370.1,622.3 L369.6,622.3 L369.1,622.3 L368.6,622.3 L368.1,622.3 L367.6,622.5 L367.1,623.6 L366.6,626.6 L366.1,635.0 L365.6,645.8 L365.1,622.3 L364.6,622.3 L364.1,622.3 L363.6,622.3 L363.1,622.3 L362.6,622.3 L362.1,622.3 L361.6,622.3 L361.1,622.3 L360.6,622.3 L360.1,622.3 L359.6,622.3 L359.1,622.3 L358.6,622.4 L358.1,623.5 L357.6,626.4 L357.1,634.4 L356.6,638.8 L356.1,622.3 L355.6,622.3 L355.1,622.3 L354.6,622.3 L354.1,622.3 L353.6,622.3 L353.1,622.3 L352.6,622.3 L352.1,622.3 L351.6,622.3 L351.1,622.3 L350.6,622.3 L350.1,622.3 L349.6,623.0 L349.1,625.0 L348.6,630.6 L348.1,645.8 L347.6,622.3 L347.1,622.3 L346.6,622.3 L346.1,622.3 L345.6,622.3 L345.1,622.3 L344.6,622.3 L344.1,622.3 L343.6,622.3 L343.1,622.3 L342.6,622.3 L342.1,622.3 L341.6,622.3 L341.1,622.3 L340.6,622.9 L340.1,624.9 L339.6,630.2 L339.1,638.8 L338.6,622.3 L338.1,622.3 L337.6,622.3 L337.1,622.3 L336.6,622.3 L336.1,622.3 L335.6,622.3 L335.1,622.3 L334.6,622.3 L334.1,622.3 L333.6,622.3 L333.1,622.3 L332.6,622.3 L332.1,622.6 L331.6,624.0 L331.1,627.7 L330.6,637.9 L330.1,645.8 L329.6,622.3 L329.1,622.3 L328.6,622.3 L328.1,622.3 L327.6,622.3 L327.1,622.3 L326.6,622.3 L326.1,622.3 L325.6,622.3 L325.1,622.3 L324.6,622.3 L324.1,622.3 L323.6,622.3 L323.1,622.6 L322.6,623.9 L322.1,627.5 L321.6,637.2 L321.1,638.8 L320.6,622.3 L320.1,622.3 L319.6,622.3 L319.1,622.3 L318.6,622.3 L318.1,622.3 L317.6,622.3 L317.1,622.3 L316.6,622.3 L316.1,622.3 L315.6,622.3 L315.1,622.3 L314.6,622.3 L314.1,623.3 L313.6,625.8 L313.1,632.6 L312.6,645.8 L312.1,622.3 L311.6,622.3 L311.1,622.3 L310.6,622.3 L310.1,622.3 L309.6,622.3 L309.1,622.3 L308.6,622.3 L308.1,622.3 L307.6,622.3 L307.1,622.3 L306.6,622.3 L306.1,622.3 L305.6,622.3 L305.1,623.2 L304.6,625.6 L304.1,632.1 L303.6,638.8 L303.1,622.3 L302.6,622.3 L302.1,622.3 L301.6,622.3 L301.1,622.3 L300.6,622.3 L300.1,622.3 L299.6,622.3 L299.1,622.3 L298.6,622.3 L298.1,622.3 L297.6,622.3 L297.1,622.3 L296.6,622.8 L296.1,624.5 L295.6,629.0 L295.1,641.4 L294.6,645.8 L294.1,622.3 L293.6,622.3 L293.1,622.3 L292.6,622.3 L292.1,622.3 L291.6,622.3Z" fill="#545454"/></svg><div style="left:300px;top:600.5px;width:23.5px;height:15px;background:#353535;border-radius:3.5px"></div><span class="t" style="left:311.7px;top:603.5px;font-size:9.5px;color:#fff;font-weight:bold;transform:translateX(-50%);letter-spacing:-0.3px">0.5x</span><div style="left:327px;top:600.5px;width:24px;height:15px;background:#fff;border-radius:3.5px"></div><span class="t" style="left:339px;top:603.5px;font-size:9.5px;color:#111;font-weight:bold;transform:translateX(-50%);letter-spacing:-0.3px">1x</span><div style="left:354.5px;top:600.5px;width:22px;height:15px;background:#353535;border-radius:3.5px"></div><span class="t" style="left:365.5px;top:603.5px;font-size:9.5px;color:#fff;font-weight:bold;transform:translateX(-50%);letter-spacing:-0.3px">2x</span><div style="left:494px;top:193px;width:963px;height:700px;border-radius:31px 32px 0 0;background:linear-gradient(90deg,#2b363e 0%,#34424b 15%,#4d6170 30%,#7493aa 45%,#7b9bb3 55%,#6a879b 65%,#43545f 80%,#2f3b44 90%,#273138 100%) top/100% 9px no-repeat,linear-gradient(90deg,#303b45 0%,#2b343c 50%,#272d34 100%)"></div><div style="left:501px;top:200px;width:949.5px;height:700px;border-radius:24px 25px 0 0;background:#000"></div><svg style="left:510px;top:220px" width="15" height="7" viewBox="0 0 15 7" ><path d="M0.8 0.8 L7.3 5.8 L13.8 0.8" stroke="#fff" stroke-width="1.4" fill="none" stroke-linecap="round" stroke-linejoin="round" stroke-width="1.3"/></svg><span class="t" style="left:975px;top:215.8px;font-size:12.5px;color:#fff;font-weight:normal;transform:translateX(-50%);letter-spacing:0.1px">Move</span><svg style="left:1325px;top:214px" width="17" height="17" viewBox="0 0 17 17" ><g stroke="#fff" stroke-width="1.4" fill="none" stroke-linecap="round" stroke-linejoin="round" stroke-width="1.3"><path d="M3.6 4.6 A6.3 6.3 0 1 1 2.4 9.4"/><path d="M3.2 1.6 L3.4 4.9 L6.7 4.7"/></g></svg><svg style="left:1359px;top:214px" width="16" height="16" viewBox="0 0 16 16" ><g stroke="#fff" stroke-width="1.4" fill="none" stroke-linecap="round" stroke-linejoin="round" stroke-width="1.3"><path d="M1.2 6.4 H5.5 C8.6 6.4 9.6 4.4 13.6 2.4 M10.4 1.6 L14.2 2 L13.8 5.8"/><path d="M1.2 9.6 H5.5 C8.6 9.6 9.6 11.4 13.6 13.6 M10.4 14.4 L14.2 14 L13.8 10.2"/></g></svg><svg style="left:1392px;top:214px" width="16" height="16" viewBox="0 0 16 16" ><g stroke="#fff" stroke-width="1.4" fill="none" stroke-linecap="round" stroke-linejoin="round" stroke-width="1.4"><path d="M8 1.4 V9.6 M4.4 6.2 L8 9.8 L11.6 6.2"/><path d="M1.6 10 V12.6 C1.6 13.8 2.4 14.6 3.6 14.6 H12.4 C13.6 14.6 14.4 13.8 14.4 12.6 V10"/></g></svg><div style="left:1426.6px;top:217.3px;width:14.4px;height:1.4px;background:#e8e8e8;border-radius:1px"></div><div style="left:1426.6px;top:221.4px;width:14.4px;height:1.4px;background:#e8e8e8;border-radius:1px"></div><div style="left:1426.6px;top:225.5px;width:14.4px;height:1.4px;background:#e8e8e8;border-radius:1px"></div><div style="left:1442px;top:211.2px;width:5.4px;height:5.4px;background:#00d8ce;border-radius:50%"></div><div style="left:501.1px;top:244.2px;width:50.1px;height:42px;background:#262626;border-radius:1px"></div><div style="left:501.1px;top:244.2px;width:1.6px;height:42px;background:#8a8a8a"></div><span class="t" style="left:506.6px;top:255.6px;font-size:17px;font-weight:bold;color:#9a9a9a;letter-spacing:-0.3px">G<span class="t" style="position:relative;font-size:11.5px;top:-5.4px;letter-spacing:-0.2px;left:0.5px">add9</span></span><div style="left:553.9px;top:244.2px;width:50.1px;height:42px;background:#fff;border-radius:1px"></div><div style="left:606.7px;top:244.2px;width:50.1px;height:42px;background:#262626;border-radius:1px"></div><div style="left:659.6px;top:244.2px;width:50.1px;height:42px;background:#262626;border-radius:1px"></div><div style="left:712.4px;top:244.2px;width:50.1px;height:42px;background:#262626;border-radius:1px"></div><div style="left:712.4px;top:244.2px;width:1.6px;height:42px;background:#9a9a9a"></div><span class="t" style="left:717.88px;top:255.6px;font-size:17px;font-weight:bold;color:#fff;letter-spacing:-0.3px">C<span class="t" style="position:relative;font-size:11.5px;top:-5.4px;letter-spacing:-0.2px;left:0.5px">add9</span></span><div style="left:765.2px;top:244.2px;width:50.1px;height:42px;background:#262626;border-radius:1px"></div><div style="left:818.0px;top:244.2px;width:50.1px;height:42px;background:#262626;border-radius:1px"></div><div style="left:870.8px;top:244.2px;width:50.1px;height:42px;background:#262626;border-radius:1px"></div><div style="left:923.7px;top:244.2px;width:50.1px;height:42px;background:#262626;border-radius:1px"></div><div style="left:923.7px;top:244.2px;width:1.6px;height:42px;background:#9a9a9a"></div><span class="t" style="left:940.6600000000001px;top:255.6px;font-size:17px;font-weight:bold;color:#fff;letter-spacing:-0.3px">G<span class="t" style="position:relative;font-size:11.5px;top:-5.4px;letter-spacing:-0.2px;left:0.5px"></span></span><div style="left:976.5px;top:244.2px;width:50.1px;height:42px;background:#262626;border-radius:1px"></div><div style="left:1029.3px;top:244.2px;width:50.1px;height:42px;background:#262626;border-radius:1px"></div><div style="left:1082.1px;top:244.2px;width:50.1px;height:42px;background:#262626;border-radius:1px"></div><div style="left:1134.9px;top:244.2px;width:50.1px;height:42px;background:#262626;border-radius:1px"></div><div style="left:1134.9px;top:244.2px;width:1.6px;height:42px;background:#9a9a9a"></div><span class="t" style="left:1136.44px;top:256.1px;font-size:16.5px;font-weight:bold;color:#fff;letter-spacing:-0.3px">Am<span class="t" style="position:relative;font-size:11px;top:-6px;letter-spacing:-0.2px;left:0.5px">7(9</span></span><div style="left:1187.8px;top:244.2px;width:50.1px;height:42px;background:#262626;border-radius:1px"></div><div style="left:1240.6px;top:244.2px;width:50.1px;height:42px;background:#262626;border-radius:1px"></div><div style="left:1293.4px;top:244.2px;width:50.1px;height:42px;background:#262626;border-radius:1px"></div><div style="left:1346.2px;top:244.2px;width:50.1px;height:42px;background:#262626;border-radius:1px"></div><div style="left:1346.2px;top:244.2px;width:1.6px;height:42px;background:#9a9a9a"></div><span class="t" style="left:1347.72px;top:256.1px;font-size:16.5px;font-weight:bold;color:#8a8a8a;letter-spacing:-0.3px">Am<span class="t" style="position:relative;font-size:11px;top:-6px;letter-spacing:-0.2px;left:0.5px">7(9</span></span><div style="left:1399.0px;top:244.2px;width:50.1px;height:42px;background:#262626;border-radius:1px"></div><div style="left:1395px;top:244px;width:56px;height:43px;background:linear-gradient(90deg,rgba(0,0,0,0) 25%,rgba(0,0,0,0.5) 50%,#000 80%)"></div><svg style="left:521px;top:319.4px" width="16" height="16" viewBox="0 0 16 16" ><g fill="none" stroke="#525252" stroke-width="1.2" stroke-linecap="round"><rect x="6" y="1.4" width="4" height="8.4" rx="2"/><path d="M3.6 7.6 C3.6 13.4 12.4 13.4 12.4 7.6 M8 12 V15"/><path d="M2.4 1.6 L13.6 13"/></g></svg><div style="left:561px;top:326.7px;width:163.5px;height:1.4px;background:#404040"></div><div style="left:559.1999999999999px;top:319.2px;width:16.4px;height:16.4px;border-radius:50%;background:#000;border:1.2px solid #454545"></div><svg style="left:519.5px;top:377.99999999999994px" width="18" height="18" viewBox="0 0 18 18" ><g fill="none" stroke="#fff" stroke-width="1.25" stroke-linejoin="round" stroke-linecap="round"><ellipse cx="8.5" cy="7.6" rx="7.6" ry="3.6"/><path d="M0.9 7.6 V12.4 C0.9 14.4 4.4 16 8.5 16 C12.6 16 16.1 14.4 16.1 12.4 V7.6"/><path d="M4.4 10.8 V15.2 M8.5 11.4 V16 M12.6 10.8 V15.2"/><path d="M7.4 7.4 L17 1"/></g></svg><div style="left:561px;top:385.09999999999997px;width:163.5px;height:1.4px;background:#404040"></div><div style="left:561px;top:384.79999999999995px;width:119.70000000000005px;height:2px;background:#17c9a9"></div><div style="left:672.5px;top:377.59999999999997px;width:16.4px;height:16.4px;border-radius:50%;background:#000;border:1.2px solid #5a5a5a"></div><div style="left:679.4000000000001px;top:384.49999999999994px;width:2.6px;height:2.6px;border-radius:50%;background:#17c9a9"></div><svg style="left:521px;top:436.2px" width="16" height="16" viewBox="0 0 16 16" ><g transform="rotate(16 8 8)"><path d="M5.4 2.2 C6 0.6 10 0.4 11 1.8 C11.8 3 11.2 4.4 11 6 L10.8 11.4 C10.8 12.8 10.2 13.4 9.6 14 C8.6 15 6.6 15 5.8 14 C5 13 4.8 12.6 4.9 11.4 C5 8 4.6 4.4 5.4 2.2Z" fill="none" stroke="#fff" stroke-width="1.2" stroke-linejoin="round"/><g fill="#fff"><rect x="1.6" y="2.2" width="2" height="1.7" rx="0.4"/><rect x="1.6" y="5.2" width="2" height="1.7" rx="0.4"/><rect x="1.6" y="8.2" width="2" height="1.7" rx="0.4"/><rect x="1.6" y="11.2" width="2" height="1.7" rx="0.4"/></g></g></svg><div style="left:561px;top:443.5px;width:163.5px;height:1.4px;background:#404040"></div><div style="left:561px;top:443.2px;width:119.70000000000005px;height:2px;background:#17c9a9"></div><div style="left:672.5px;top:436.0px;width:16.4px;height:16.4px;border-radius:50%;background:#000;border:1.2px solid #5a5a5a"></div><div style="left:679.4000000000001px;top:442.9px;width:2.6px;height:2.6px;border-radius:50%;background:#17c9a9"></div><svg style="left:520.9px;top:494.99999999999994px" width="16" height="16" viewBox="0 0 16 16" ><path d="M3.2 1.9 L4.5 0.7 H11.5 L12.8 1.9 L12.3 10.6 C12.2 12 11 12.4 10.8 13.4 V15.3 H5.2 V13.4 C5 12.4 3.8 12 3.7 10.6Z" fill="none" stroke="#fff" stroke-width="1.2" stroke-linejoin="round"/><g fill="#fff"><rect x="0" y="2.9" width="2.1" height="1.8" rx="0.4"/><rect x="0.1" y="6.2" width="2.1" height="1.8" rx="0.4"/><rect x="0.3" y="9.5" width="2.1" height="1.8" rx="0.4"/><rect x="13.9" y="2.9" width="2.1" height="1.8" rx="0.4"/><rect x="13.8" y="6.2" width="2.1" height="1.8" rx="0.4"/><rect x="13.6" y="9.5" width="2.1" height="1.8" rx="0.4"/></g></svg><div style="left:534.3000000000001px;top:508.49999999999994px;width:10.6px;height:10.6px;border-radius:50%;background:#8a8a8a;color:#fff;font-size:8.5px;font-weight:bold;text-align:center;line-height:11.0px">1</div><div style="left:561px;top:501.9px;width:163.5px;height:1.4px;background:#404040"></div><div style="left:561px;top:501.59999999999997px;width:119.70000000000005px;height:2px;background:#17c9a9"></div><div style="left:672.5px;top:494.4px;width:16.4px;height:16.4px;border-radius:50%;background:#000;border:1.2px solid #5a5a5a"></div><div style="left:679.4000000000001px;top:501.29999999999995px;width:2.6px;height:2.6px;border-radius:50%;background:#17c9a9"></div><svg style="left:520.9px;top:553.4px" width="16" height="16" viewBox="0 0 16 16" ><path d="M3.2 1.9 L4.5 0.7 H11.5 L12.8 1.9 L12.3 10.6 C12.2 12 11 12.4 10.8 13.4 V15.3 H5.2 V13.4 C5 12.4 3.8 12 3.7 10.6Z" fill="none" stroke="#fff" stroke-width="1.2" stroke-linejoin="round"/><g fill="#fff"><rect x="0" y="2.9" width="2.1" height="1.8" rx="0.4"/><rect x="0.1" y="6.2" width="2.1" height="1.8" rx="0.4"/><rect x="0.3" y="9.5" width="2.1" height="1.8" rx="0.4"/><rect x="13.9" y="2.9" width="2.1" height="1.8" rx="0.4"/><rect x="13.8" y="6.2" width="2.1" height="1.8" rx="0.4"/><rect x="13.6" y="9.5" width="2.1" height="1.8" rx="0.4"/></g></svg><div style="left:534.3000000000001px;top:566.9000000000001px;width:10.6px;height:10.6px;border-radius:50%;background:#8a8a8a;color:#fff;font-size:8.5px;font-weight:bold;text-align:center;line-height:11.0px">2</div><div style="left:561px;top:560.3px;width:163.5px;height:1.4px;background:#404040"></div><div style="left:561px;top:560.0px;width:119.70000000000005px;height:2px;background:#17c9a9"></div><div style="left:672.5px;top:552.8px;width:16.4px;height:16.4px;border-radius:50%;background:#000;border:1.2px solid #5a5a5a"></div><div style="left:679.4000000000001px;top:559.7px;width:2.6px;height:2.6px;border-radius:50%;background:#17c9a9"></div><svg style="left:520.9px;top:611.1999999999999px" width="16" height="16" viewBox="0 0 16 16" ><g fill="none" stroke="#fff" stroke-width="1.3" stroke-linejoin="round" stroke-linecap="round"><ellipse cx="3.4" cy="13" rx="2.3" ry="1.9" transform="rotate(-20 3.4 13)"/><ellipse cx="11.6" cy="10.8" rx="2.3" ry="1.9" transform="rotate(-20 11.6 10.8)"/><path d="M5.6 12.6 V3.2 L13.8 1 V10.2"/></g></svg><div style="left:561px;top:618.6999999999999px;width:163.5px;height:1.4px;background:#404040"></div><div style="left:561px;top:618.4px;width:119.70000000000005px;height:2px;background:#17c9a9"></div><div style="left:672.5px;top:611.1999999999999px;width:16.4px;height:16.4px;border-radius:50%;background:#000;border:1.2px solid #5a5a5a"></div><div style="left:679.4000000000001px;top:618.1px;width:2.6px;height:2.6px;border-radius:50%;background:#17c9a9"></div><svg style="left:0;top:0" width="1600" height="842" viewBox="0 0 1600 842"><clipPath id="tc0"><rect x="741" y="303.2" width="569" height="49.6" rx="5.5"/></clipPath><g clip-path="url(#tc0)"><rect x="741" y="303.2" width="569" height="49.6" fill="#555555"/><rect x="741" y="303.2" width="71.20000000000005" height="49.6" fill="#444444"/></g><clipPath id="tc1"><rect x="741" y="361.6" width="569" height="49.6" rx="5.5"/></clipPath><g clip-path="url(#tc1)"><rect x="741" y="361.6" width="569" height="49.6" fill="#2b95ab"/><rect x="741" y="361.6" width="71.20000000000005" height="49.6" fill="#23798a"/></g><clipPath id="tc2"><rect x="741" y="419.9" width="569" height="49.6" rx="5.5"/></clipPath><g clip-path="url(#tc2)"><rect x="741" y="419.9" width="569" height="49.6" fill="#4a9fb1"/><rect x="741" y="419.9" width="71.20000000000005" height="49.6" fill="#3b808e"/></g><clipPath id="tc3"><rect x="741" y="478.2" width="569" height="49.6" rx="5.5"/></clipPath><g clip-path="url(#tc3)"><rect x="741" y="478.2" width="569" height="49.6" fill="#69aab8"/><rect x="741" y="478.2" width="71.20000000000005" height="49.6" fill="#548994"/></g><clipPath id="tc4"><rect x="741" y="536.6" width="569" height="49.6" rx="5.5"/></clipPath><g clip-path="url(#tc4)"><rect x="741" y="536.6" width="569" height="49.6" fill="#88c1be"/><rect x="741" y="536.6" width="71.20000000000005" height="49.6" fill="#6e9c9a"/></g><clipPath id="tc5"><rect x="741" y="595.0" width="569" height="49.6" rx="5.5"/></clipPath><g clip-path="url(#tc5)"><rect x="741" y="595.0" width="569" height="49.6" fill="#a5d6c4"/><rect x="741" y="595.0" width="71.20000000000005" height="49.6" fill="#86ad9f"/></g><path d="M741.0,327.6 L741.5,327.6 L742.0,327.6 L742.5,327.6 L743.0,327.6 L743.5,327.6 L744.0,327.6 L744.5,327.6 L745.0,327.6 L745.5,327.6 L746.0,327.6 L746.5,327.6 L747.0,327.6 L747.5,327.6 L748.0,327.6 L748.5,327.6 L749.0,327.6 L749.5,327.6 L750.0,327.6 L750.5,327.6 L751.0,327.6 L751.5,327.6 L752.0,327.6 L752.5,327.6 L753.0,327.6 L753.5,327.6 L754.0,327.6 L754.5,327.6 L755.0,327.6 L755.5,327.6 L756.0,327.6 L756.5,327.6 L757.0,327.6 L757.5,327.6 L758.0,327.6 L758.5,327.6 L759.0,327.6 L759.5,327.6 L760.0,327.6 L760.5,327.6 L761.0,327.6 L761.5,327.6 L762.0,327.6 L762.5,327.6 L763.0,327.6 L763.5,327.6 L764.0,327.6 L764.5,327.6 L765.0,327.6 L765.5,327.6 L766.0,327.6 L766.5,327.6 L767.0,327.6 L767.5,327.6 L768.0,327.6 L768.5,327.6 L769.0,327.6 L769.5,327.6 L770.0,327.6 L770.5,327.6 L771.0,327.6 L771.5,327.6 L772.0,327.6 L772.5,327.6 L773.0,327.6 L773.5,327.6 L774.0,327.6 L774.5,327.6 L775.0,327.6 L775.5,327.6 L776.0,327.6 L776.5,327.6 L777.0,327.6 L777.5,327.6 L778.0,327.6 L778.5,327.6 L779.0,327.6 L779.5,327.6 L780.0,327.6 L780.5,327.6 L781.0,327.6 L781.5,327.6 L782.0,327.6 L782.5,327.6 L783.0,327.6 L783.5,327.6 L784.0,327.6 L784.5,327.6 L785.0,324.0 L785.5,323.0 L786.0,322.5 L786.5,323.3 L787.0,323.9 L787.5,322.4 L788.0,322.9 L788.5,324.0 L789.0,324.1 L789.5,324.5 L790.0,324.7 L790.5,326.8 L791.0,327.6 L791.5,327.6 L792.0,327.6 L792.5,327.6 L793.0,327.6 L793.5,325.4 L794.0,321.4 L794.5,323.6 L795.0,322.9 L795.5,322.8 L796.0,322.0 L796.5,324.1 L797.0,325.3 L797.5,326.6 L798.0,327.6 L798.5,327.6 L799.0,327.6 L799.5,327.6 L800.0,327.6 L800.5,327.6 L801.0,327.6 L801.5,325.1 L802.0,322.1 L802.5,321.8 L803.0,322.8 L803.5,323.7 L804.0,322.3 L804.5,322.4 L805.0,322.7 L805.5,324.7 L806.0,325.6 L806.5,327.3 L807.0,327.6 L807.5,327.6 L808.0,327.6 L808.5,327.6 L809.0,327.6 L809.5,327.6 L810.0,326.5 L810.5,322.3 L811.0,323.1 L811.5,322.7 L812.0,322.1 L812.5,322.5 L813.0,323.5 L813.5,324.3 L814.0,325.9 L814.5,327.6 L815.0,327.6 L815.5,327.6 L816.0,327.6 L816.5,327.6 L817.0,327.6 L817.5,327.6 L818.0,327.6 L818.5,327.6 L819.0,325.5 L819.5,324.0 L820.0,324.4 L820.5,323.2 L821.0,323.5 L821.5,323.8 L822.0,323.9 L822.5,325.9 L823.0,327.0 L823.5,327.6 L824.0,327.6 L824.5,327.6 L825.0,327.6 L825.5,327.6 L826.0,327.6 L826.5,327.6 L827.0,324.8 L827.5,323.8 L828.0,323.0 L828.5,323.5 L829.0,324.5 L829.5,324.0 L830.0,325.6 L830.5,326.1 L831.0,327.5 L831.5,327.6 L832.0,327.6 L832.5,327.6 L833.0,327.6 L833.5,327.6 L834.0,327.6 L834.5,327.6 L835.0,327.6 L835.5,326.0 L836.0,322.5 L836.5,322.2 L837.0,322.7 L837.5,323.5 L838.0,322.9 L838.5,323.6 L839.0,324.2 L839.5,324.5 L840.0,325.3 L840.5,326.7 L841.0,327.6 L841.5,327.6 L842.0,327.6 L842.5,327.6 L843.0,327.6 L843.5,325.4 L844.0,322.8 L844.5,322.9 L845.0,324.0 L845.5,322.9 L846.0,324.2 L846.5,324.8 L847.0,325.2 L847.5,326.2 L848.0,327.6 L848.5,324.6 L849.0,322.7 L849.5,322.9 L850.0,323.4 L850.5,323.4 L851.0,323.2 L851.5,323.0 L852.0,322.3 L852.5,324.0 L853.0,323.7 L853.5,322.4 L854.0,323.0 L854.5,325.2 L855.0,326.0 L855.5,327.3 L856.0,327.6 L856.5,327.6 L857.0,327.6 L857.5,324.6 L858.0,324.2 L858.5,322.8 L859.0,323.1 L859.5,324.0 L860.0,323.6 L860.5,323.1 L861.0,324.2 L861.5,323.5 L862.0,324.0 L862.5,325.7 L863.0,326.6 L863.5,327.6 L864.0,327.6 L864.5,327.6 L865.0,327.6 L865.5,327.6 L866.0,326.8 L866.5,324.1 L867.0,322.7 L867.5,324.0 L868.0,324.1 L868.5,323.5 L869.0,323.7 L869.5,324.1 L870.0,324.1 L870.5,324.1 L871.0,324.8 L871.5,326.7 L872.0,327.6 L872.5,324.6 L873.0,322.6 L873.5,323.1 L874.0,323.0 L874.5,323.8 L875.0,322.8 L875.5,323.2 L876.0,323.3 L876.5,323.8 L877.0,324.2 L877.5,323.5 L878.0,323.4 L878.5,324.9 L879.0,325.5 L879.5,326.4 L880.0,327.6 L880.5,324.9 L881.0,323.3 L881.5,323.2 L882.0,323.6 L882.5,323.4 L883.0,322.9 L883.5,322.7 L884.0,322.4 L884.5,323.2 L885.0,323.6 L885.5,322.0 L886.0,322.7 L886.5,322.9 L887.0,324.5 L887.5,326.3 L888.0,327.6 L888.5,327.6 L889.0,327.6 L889.5,327.6 L890.0,327.6 L890.5,327.6 L891.0,327.6 L891.5,327.6 L892.0,327.6 L892.5,327.6 L893.0,327.6 L893.5,327.6 L894.0,327.6 L894.5,327.6 L895.0,327.6 L895.5,327.6 L896.0,327.6 L896.5,327.6 L897.0,327.6 L897.5,327.6 L898.0,327.6 L898.5,326.1 L899.0,323.1 L899.5,322.9 L900.0,324.4 L900.5,323.0 L901.0,324.3 L901.5,324.5 L902.0,324.4 L902.5,323.6 L903.0,323.2 L903.5,323.1 L904.0,324.6 L904.5,325.3 L905.0,326.2 L905.5,327.6 L906.0,327.6 L906.5,327.6 L907.0,327.6 L907.5,327.6 L908.0,327.6 L908.5,327.6 L909.0,327.6 L909.5,327.6 L910.0,327.6 L910.5,327.6 L911.0,327.6 L911.5,327.6 L912.0,327.6 L912.5,327.6 L913.0,327.6 L913.5,327.6 L914.0,327.6 L914.5,327.6 L915.0,327.6 L915.5,327.6 L916.0,327.6 L916.5,327.6 L917.0,327.6 L917.5,327.6 L918.0,323.7 L918.5,322.9 L919.0,324.0 L919.5,324.1 L920.0,324.4 L920.5,324.3 L921.0,325.1 L921.5,326.0 L922.0,327.3 L922.5,327.6 L923.0,327.6 L923.5,327.6 L924.0,327.6 L924.5,327.6 L925.0,327.6 L925.5,327.6 L926.0,327.6 L926.5,326.2 L927.0,324.0 L927.5,323.6 L928.0,322.9 L928.5,323.8 L929.0,323.3 L929.5,324.1 L930.0,325.1 L930.5,326.7 L931.0,327.6 L931.5,327.6 L932.0,327.6 L932.5,327.6 L933.0,327.6 L933.5,327.6 L934.0,327.6 L934.5,324.7 L935.0,322.6 L935.5,321.9 L936.0,323.2 L936.5,323.4 L937.0,322.2 L937.5,323.9 L938.0,325.1 L938.5,326.9 L939.0,327.6 L939.5,327.6 L940.0,327.6 L940.5,327.6 L941.0,327.6 L941.5,327.6 L942.0,327.6 L942.5,324.3 L943.0,323.1 L943.5,322.8 L944.0,323.7 L944.5,323.3 L945.0,322.1 L945.5,324.5 L946.0,326.3 L946.5,327.2 L947.0,327.6 L947.5,327.6 L948.0,327.6 L948.5,327.6 L949.0,327.6 L949.5,327.6 L950.0,327.6 L950.5,327.6 L951.0,325.9 L951.5,323.5 L952.0,322.7 L952.5,322.7 L953.0,323.5 L953.5,322.9 L954.0,323.2 L954.5,325.4 L955.0,326.5 L955.5,327.6 L956.0,327.6 L956.5,327.6 L957.0,327.6 L957.5,327.6 L958.0,327.6 L958.5,327.6 L959.0,325.2 L959.5,322.2 L960.0,323.0 L960.5,322.3 L961.0,322.2 L961.5,323.1 L962.0,322.5 L962.5,322.1 L963.0,324.9 L963.5,325.6 L964.0,327.3 L964.5,327.6 L965.0,327.6 L965.5,327.6 L966.0,327.6 L966.5,327.6 L967.0,322.6 L967.5,323.4 L968.0,322.8 L968.5,323.4 L969.0,323.2 L969.5,322.0 L970.0,322.8 L970.5,323.5 L971.0,324.1 L971.5,326.5 L972.0,327.6 L972.5,327.6 L973.0,327.6 L973.5,327.6 L974.0,327.6 L974.5,327.6 L975.0,327.6 L975.5,324.2 L976.0,319.8 L976.5,319.0 L977.0,320.1 L977.5,318.7 L978.0,320.7 L978.5,321.0 L979.0,319.0 L979.5,320.1 L980.0,321.7 L980.5,321.8 L981.0,321.8 L981.5,319.7 L982.0,320.0 L982.5,321.6 L983.0,319.6 L983.5,319.7 L984.0,320.1 L984.5,320.3 L985.0,320.8 L985.5,320.0 L986.0,321.0 L986.5,319.4 L987.0,320.4 L987.5,320.2 L988.0,319.5 L988.5,319.4 L989.0,324.1 L989.5,327.6 L990.0,320.6 L990.5,317.6 L991.0,320.2 L991.5,320.1 L992.0,320.1 L992.5,320.3 L993.0,318.3 L993.5,319.4 L994.0,321.0 L994.5,319.6 L995.0,319.0 L995.5,321.3 L996.0,320.8 L996.5,322.1 L997.0,324.2 L997.5,327.6 L998.0,327.6 L998.5,327.6 L999.0,325.8 L999.5,320.0 L1000.0,319.1 L1000.5,319.3 L1001.0,317.9 L1001.5,318.5 L1002.0,318.5 L1002.5,318.9 L1003.0,320.1 L1003.5,319.0 L1004.0,317.9 L1004.5,318.3 L1005.0,318.1 L1005.5,319.8 L1006.0,320.3 L1006.5,317.6 L1007.0,317.9 L1007.5,318.1 L1008.0,317.0 L1008.5,319.5 L1009.0,318.0 L1009.5,319.6 L1010.0,318.6 L1010.5,317.5 L1011.0,319.2 L1011.5,323.1 L1012.0,327.5 L1012.5,320.4 L1013.0,319.5 L1013.5,316.9 L1014.0,318.0 L1014.5,319.3 L1015.0,319.6 L1015.5,320.5 L1016.0,320.3 L1016.5,317.1 L1017.0,318.7 L1017.5,317.9 L1018.0,319.9 L1018.5,317.8 L1019.0,318.3 L1019.5,317.8 L1020.0,319.2 L1020.5,317.8 L1021.0,319.0 L1021.5,320.5 L1022.0,317.9 L1022.5,320.1 L1023.0,318.0 L1023.5,323.4 L1024.0,327.6 L1024.5,320.7 L1025.0,319.5 L1025.5,320.6 L1026.0,320.7 L1026.5,320.6 L1027.0,317.8 L1027.5,319.7 L1028.0,320.9 L1028.5,319.6 L1029.0,318.9 L1029.5,318.9 L1030.0,318.0 L1030.5,319.9 L1031.0,317.9 L1031.5,321.2 L1032.0,320.7 L1032.5,319.6 L1033.0,319.1 L1033.5,319.9 L1034.0,318.7 L1034.5,319.6 L1035.0,321.4 L1035.5,320.2 L1036.0,319.4 L1036.5,320.7 L1037.0,320.9 L1037.5,323.5 L1038.0,327.6 L1038.5,327.6 L1039.0,327.6 L1039.5,327.6 L1040.0,323.6 L1040.5,318.0 L1041.0,320.3 L1041.5,321.2 L1042.0,320.8 L1042.5,320.0 L1043.0,320.1 L1043.5,320.2 L1044.0,321.4 L1044.5,320.8 L1045.0,320.5 L1045.5,319.5 L1046.0,321.5 L1046.5,323.8 L1047.0,327.6 L1047.5,327.6 L1048.0,324.2 L1048.5,319.5 L1049.0,321.1 L1049.5,319.5 L1050.0,320.6 L1050.5,319.3 L1051.0,321.8 L1051.5,321.0 L1052.0,320.5 L1052.5,321.2 L1053.0,321.0 L1053.5,320.5 L1054.0,321.6 L1054.5,323.7 L1055.0,327.6 L1055.5,327.6 L1056.0,327.6 L1056.5,327.6 L1057.0,327.6 L1057.5,327.6 L1058.0,327.6 L1058.5,327.6 L1059.0,327.6 L1059.5,327.6 L1060.0,327.6 L1060.5,327.6 L1061.0,327.6 L1061.5,327.6 L1062.0,327.6 L1062.5,327.6 L1063.0,327.6 L1063.5,327.6 L1064.0,324.3 L1064.5,321.5 L1065.0,323.5 L1065.5,321.9 L1066.0,323.5 L1066.5,323.0 L1067.0,323.7 L1067.5,322.2 L1068.0,324.5 L1068.5,325.6 L1069.0,326.8 L1069.5,327.6 L1070.0,327.6 L1070.5,327.6 L1071.0,327.6 L1071.5,327.6 L1072.0,327.6 L1072.5,327.6 L1073.0,327.6 L1073.5,327.6 L1074.0,327.6 L1074.5,327.6 L1075.0,327.6 L1075.5,327.6 L1076.0,327.6 L1076.5,327.6 L1077.0,327.6 L1077.5,327.6 L1078.0,327.6 L1078.5,327.6 L1079.0,327.6 L1079.5,324.2 L1080.0,323.5 L1080.5,322.2 L1081.0,323.7 L1081.5,323.6 L1082.0,323.4 L1082.5,323.9 L1083.0,323.3 L1083.5,324.2 L1084.0,324.2 L1084.5,326.2 L1085.0,327.6 L1085.5,327.6 L1086.0,325.2 L1086.5,322.8 L1087.0,321.4 L1087.5,323.4 L1088.0,323.3 L1088.5,322.8 L1089.0,321.9 L1089.5,321.7 L1090.0,321.7 L1090.5,323.7 L1091.0,324.8 L1091.5,325.8 L1092.0,327.6 L1092.5,327.6 L1093.0,325.1 L1093.5,323.4 L1094.0,323.6 L1094.5,322.9 L1095.0,322.0 L1095.5,322.4 L1096.0,323.0 L1096.5,322.6 L1097.0,323.1 L1097.5,322.7 L1098.0,325.0 L1098.5,326.0 L1099.0,327.6 L1099.5,327.6 L1100.0,327.6 L1100.5,327.6 L1101.0,327.6 L1101.5,327.6 L1102.0,327.6 L1102.5,327.6 L1103.0,325.7 L1103.5,323.4 L1104.0,323.4 L1104.5,323.6 L1105.0,324.1 L1105.5,324.0 L1106.0,322.9 L1106.5,323.0 L1107.0,323.1 L1107.5,323.5 L1108.0,323.3 L1108.5,323.3 L1109.0,324.5 L1109.5,326.4 L1110.0,327.6 L1110.5,327.6 L1111.0,327.6 L1111.5,327.6 L1112.0,327.6 L1112.5,327.6 L1113.0,327.6 L1113.5,327.6 L1114.0,327.6 L1114.5,327.6 L1115.0,327.6 L1115.5,327.6 L1116.0,327.6 L1116.5,327.6 L1117.0,327.6 L1117.5,327.6 L1118.0,327.6 L1118.5,327.6 L1119.0,327.6 L1119.5,327.6 L1120.0,327.6 L1120.5,327.6 L1121.0,327.6 L1121.5,327.6 L1122.0,327.6 L1122.5,327.6 L1123.0,327.6 L1123.5,327.6 L1124.0,327.6 L1124.5,327.6 L1125.0,327.6 L1125.5,327.6 L1126.0,327.6 L1126.5,327.6 L1127.0,327.6 L1127.5,327.6 L1128.0,327.6 L1128.5,327.6 L1129.0,327.6 L1129.5,327.6 L1130.0,327.6 L1130.5,327.6 L1131.0,327.6 L1131.5,327.6 L1132.0,327.6 L1132.5,327.6 L1133.0,327.6 L1133.5,327.6 L1134.0,327.6 L1134.5,327.6 L1135.0,327.6 L1135.5,327.6 L1136.0,327.6 L1136.5,327.6 L1137.0,327.6 L1137.5,327.6 L1138.0,327.6 L1138.5,327.6 L1139.0,327.6 L1139.5,327.6 L1140.0,327.6 L1140.5,327.6 L1141.0,327.6 L1141.5,327.6 L1142.0,327.6 L1142.5,327.6 L1143.0,327.6 L1143.5,327.6 L1144.0,327.6 L1144.5,327.6 L1145.0,327.6 L1145.5,317.3 L1146.0,317.2 L1146.5,317.9 L1147.0,319.6 L1147.5,317.5 L1148.0,318.5 L1148.5,317.8 L1149.0,317.8 L1149.5,319.9 L1150.0,320.4 L1150.5,317.8 L1151.0,318.3 L1151.5,320.7 L1152.0,320.6 L1152.5,319.3 L1153.0,318.5 L1153.5,320.4 L1154.0,318.4 L1154.5,319.7 L1155.0,318.6 L1155.5,320.0 L1156.0,320.2 L1156.5,320.5 L1157.0,318.7 L1157.5,318.9 L1158.0,320.9 L1158.5,320.7 L1159.0,318.3 L1159.5,324.0 L1160.0,327.5 L1160.5,319.3 L1161.0,317.9 L1161.5,320.3 L1162.0,320.5 L1162.5,317.9 L1163.0,319.4 L1163.5,320.8 L1164.0,320.5 L1164.5,319.9 L1165.0,320.1 L1165.5,320.8 L1166.0,318.4 L1166.5,320.8 L1167.0,320.0 L1167.5,318.6 L1168.0,318.4 L1168.5,318.3 L1169.0,320.2 L1169.5,320.5 L1170.0,318.9 L1170.5,318.3 L1171.0,318.6 L1171.5,318.6 L1172.0,319.7 L1172.5,318.7 L1173.0,318.1 L1173.5,319.1 L1174.0,320.7 L1174.5,318.4 L1175.0,321.1 L1175.5,321.2 L1176.0,320.3 L1176.5,320.0 L1177.0,318.1 L1177.5,318.9 L1178.0,319.9 L1178.5,319.4 L1179.0,320.0 L1179.5,318.4 L1180.0,319.4 L1180.5,320.2 L1181.0,318.4 L1181.5,318.8 L1182.0,320.1 L1182.5,318.3 L1183.0,321.3 L1183.5,318.7 L1184.0,320.1 L1184.5,323.8 L1185.0,327.5 L1185.5,320.6 L1186.0,318.8 L1186.5,319.5 L1187.0,317.9 L1187.5,317.7 L1188.0,317.9 L1188.5,319.9 L1189.0,317.2 L1189.5,318.7 L1190.0,320.1 L1190.5,319.8 L1191.0,320.1 L1191.5,320.0 L1192.0,318.7 L1192.5,317.8 L1193.0,318.0 L1193.5,317.0 L1194.0,317.0 L1194.5,318.4 L1195.0,317.5 L1195.5,317.3 L1196.0,318.8 L1196.5,317.6 L1197.0,318.7 L1197.5,318.0 L1198.0,317.8 L1198.5,317.5 L1199.0,319.0 L1199.5,320.5 L1200.0,320.6 L1200.5,318.3 L1201.0,318.7 L1201.5,317.8 L1202.0,320.2 L1202.5,318.0 L1203.0,317.4 L1203.5,319.2 L1204.0,320.6 L1204.5,318.5 L1205.0,320.7 L1205.5,318.2 L1206.0,318.1 L1206.5,319.7 L1207.0,317.9 L1207.5,319.7 L1208.0,318.2 L1208.5,320.0 L1209.0,318.6 L1209.5,320.7 L1210.0,319.9 L1210.5,319.8 L1211.0,318.1 L1211.5,318.3 L1212.0,320.8 L1212.5,323.6 L1213.0,327.5 L1213.5,327.6 L1214.0,323.4 L1214.5,319.2 L1215.0,320.2 L1215.5,318.0 L1216.0,320.2 L1216.5,318.8 L1217.0,319.8 L1217.5,320.7 L1218.0,320.9 L1218.5,319.5 L1219.0,320.8 L1219.5,318.8 L1220.0,318.4 L1220.5,318.5 L1221.0,319.3 L1221.5,318.9 L1222.0,318.1 L1222.5,320.0 L1223.0,319.1 L1223.5,320.6 L1224.0,318.8 L1224.5,317.8 L1225.0,320.1 L1225.5,318.9 L1226.0,320.7 L1226.5,317.9 L1227.0,321.1 L1227.5,320.5 L1228.0,320.0 L1228.5,318.8 L1229.0,319.6 L1229.5,321.1 L1230.0,319.3 L1230.5,321.2 L1231.0,320.3 L1231.5,318.3 L1232.0,319.8 L1232.5,321.5 L1233.0,320.7 L1233.5,324.1 L1234.0,327.6 L1234.5,319.1 L1235.0,318.9 L1235.5,317.4 L1236.0,317.9 L1236.5,316.6 L1237.0,318.8 L1237.5,320.1 L1238.0,317.6 L1238.5,318.0 L1239.0,320.1 L1239.5,318.4 L1240.0,319.7 L1240.5,316.4 L1241.0,318.1 L1241.5,317.2 L1242.0,317.9 L1242.5,318.1 L1243.0,317.1 L1243.5,320.3 L1244.0,319.1 L1244.5,318.0 L1245.0,319.3 L1245.5,317.1 L1246.0,319.4 L1246.5,317.9 L1247.0,318.6 L1247.5,318.7 L1248.0,317.5 L1248.5,317.1 L1249.0,317.1 L1249.5,319.5 L1250.0,318.8 L1250.5,320.2 L1251.0,318.0 L1251.5,318.6 L1252.0,323.3 L1252.5,327.6 L1253.0,327.6 L1253.5,323.8 L1254.0,318.8 L1254.5,317.8 L1255.0,316.8 L1255.5,319.4 L1256.0,318.7 L1256.5,318.6 L1257.0,316.7 L1257.5,317.9 L1258.0,316.4 L1258.5,318.4 L1259.0,319.3 L1259.5,318.9 L1260.0,319.9 L1260.5,318.2 L1261.0,318.3 L1261.5,318.6 L1262.0,317.7 L1262.5,318.0 L1263.0,319.0 L1263.5,317.7 L1264.0,319.8 L1264.5,317.9 L1265.0,318.9 L1265.5,322.5 L1266.0,327.5 L1266.5,319.2 L1267.0,318.8 L1267.5,316.4 L1268.0,319.3 L1268.5,319.0 L1269.0,318.5 L1269.5,316.0 L1270.0,317.9 L1270.5,316.5 L1271.0,317.4 L1271.5,317.1 L1272.0,319.6 L1272.5,315.7 L1273.0,317.9 L1273.5,319.4 L1274.0,317.5 L1274.5,316.2 L1275.0,317.9 L1275.5,317.3 L1276.0,319.5 L1276.5,319.3 L1277.0,318.7 L1277.5,319.9 L1278.0,317.6 L1278.5,322.3 L1279.0,325.7 L1279.5,327.6 L1280.0,327.6 L1280.5,327.6 L1281.0,327.6 L1281.5,327.6 L1282.0,327.6 L1282.5,327.6 L1283.0,327.6 L1283.5,327.6 L1284.0,327.6 L1284.5,327.6 L1285.0,327.6 L1285.5,327.6 L1286.0,327.6 L1286.5,327.6 L1287.0,327.6 L1287.5,327.6 L1288.0,327.6 L1288.5,327.6 L1289.0,327.6 L1289.5,327.6 L1290.0,324.1 L1290.5,320.7 L1291.0,317.8 L1291.5,319.2 L1292.0,318.7 L1292.5,318.9 L1293.0,319.4 L1293.5,320.0 L1294.0,319.3 L1294.5,319.0 L1295.0,320.2 L1295.5,321.4 L1296.0,318.3 L1296.5,320.5 L1297.0,318.4 L1297.5,318.2 L1298.0,321.3 L1298.5,318.5 L1299.0,320.4 L1299.5,318.7 L1300.0,319.1 L1300.5,320.7 L1301.0,319.0 L1301.5,321.3 L1302.0,318.7 L1302.5,319.8 L1303.0,318.6 L1303.5,320.2 L1304.0,319.5 L1304.5,320.8 L1305.0,320.9 L1305.5,321.6 L1306.0,319.5 L1306.5,318.8 L1307.0,320.5 L1307.5,321.6 L1308.0,321.6 L1308.5,321.2 L1309.0,319.6 L1309.5,324.3 L1310.0,327.6 L1310.0,328.4 L1309.5,331.7 L1309.0,336.4 L1308.5,334.8 L1308.0,334.4 L1307.5,334.4 L1307.0,335.5 L1306.5,337.2 L1306.0,336.5 L1305.5,334.4 L1305.0,335.1 L1304.5,335.2 L1304.0,336.5 L1303.5,335.8 L1303.0,337.4 L1302.5,336.2 L1302.0,337.3 L1301.5,334.7 L1301.0,337.0 L1300.5,335.3 L1300.0,336.9 L1299.5,337.3 L1299.0,335.6 L1298.5,337.5 L1298.0,334.7 L1297.5,337.8 L1297.0,337.6 L1296.5,335.5 L1296.0,337.7 L1295.5,334.6 L1295.0,335.8 L1294.5,337.0 L1294.0,336.7 L1293.5,336.0 L1293.0,336.6 L1292.5,337.1 L1292.0,337.3 L1291.5,336.8 L1291.0,338.2 L1290.5,335.3 L1290.0,331.9 L1289.5,328.4 L1289.0,328.4 L1288.5,328.4 L1288.0,328.4 L1287.5,328.4 L1287.0,328.4 L1286.5,328.4 L1286.0,328.4 L1285.5,328.4 L1285.0,328.4 L1284.5,328.4 L1284.0,328.4 L1283.5,328.4 L1283.0,328.4 L1282.5,328.4 L1282.0,328.4 L1281.5,328.4 L1281.0,328.4 L1280.5,328.4 L1280.0,328.4 L1279.5,328.4 L1279.0,330.3 L1278.5,333.7 L1278.0,338.4 L1277.5,336.1 L1277.0,337.3 L1276.5,336.7 L1276.0,336.5 L1275.5,338.7 L1275.0,338.1 L1274.5,339.8 L1274.0,338.5 L1273.5,336.6 L1273.0,338.1 L1272.5,340.3 L1272.0,336.4 L1271.5,338.9 L1271.0,338.6 L1270.5,339.5 L1270.0,338.1 L1269.5,340.0 L1269.0,337.5 L1268.5,337.0 L1268.0,336.7 L1267.5,339.6 L1267.0,337.2 L1266.5,336.8 L1266.0,328.5 L1265.5,333.5 L1265.0,337.1 L1264.5,338.1 L1264.0,336.2 L1263.5,338.3 L1263.0,337.0 L1262.5,338.0 L1262.0,338.3 L1261.5,337.4 L1261.0,337.7 L1260.5,337.8 L1260.0,336.1 L1259.5,337.1 L1259.0,336.7 L1258.5,337.6 L1258.0,339.6 L1257.5,338.1 L1257.0,339.3 L1256.5,337.4 L1256.0,337.3 L1255.5,336.6 L1255.0,339.2 L1254.5,338.2 L1254.0,337.2 L1253.5,332.2 L1253.0,328.4 L1252.5,328.4 L1252.0,332.7 L1251.5,337.4 L1251.0,338.0 L1250.5,335.8 L1250.0,337.2 L1249.5,336.5 L1249.0,338.9 L1248.5,338.9 L1248.0,338.5 L1247.5,337.3 L1247.0,337.4 L1246.5,338.1 L1246.0,336.6 L1245.5,338.9 L1245.0,336.7 L1244.5,338.0 L1244.0,336.9 L1243.5,335.7 L1243.0,338.9 L1242.5,337.9 L1242.0,338.1 L1241.5,338.8 L1241.0,337.9 L1240.5,339.6 L1240.0,336.3 L1239.5,337.6 L1239.0,335.9 L1238.5,338.0 L1238.0,338.4 L1237.5,335.9 L1237.0,337.2 L1236.5,339.4 L1236.0,338.1 L1235.5,338.6 L1235.0,337.1 L1234.5,336.9 L1234.0,328.4 L1233.5,331.9 L1233.0,335.3 L1232.5,334.5 L1232.0,336.2 L1231.5,337.7 L1231.0,335.7 L1230.5,334.8 L1230.0,336.7 L1229.5,334.9 L1229.0,336.4 L1228.5,337.2 L1228.0,336.0 L1227.5,335.5 L1227.0,334.9 L1226.5,338.1 L1226.0,335.3 L1225.5,337.1 L1225.0,335.9 L1224.5,338.2 L1224.0,337.2 L1223.5,335.4 L1223.0,336.9 L1222.5,336.0 L1222.0,337.9 L1221.5,337.1 L1221.0,336.7 L1220.5,337.5 L1220.0,337.6 L1219.5,337.2 L1219.0,335.2 L1218.5,336.5 L1218.0,335.1 L1217.5,335.3 L1217.0,336.2 L1216.5,337.2 L1216.0,335.8 L1215.5,338.0 L1215.0,335.8 L1214.5,336.8 L1214.0,332.6 L1213.5,328.4 L1213.0,328.5 L1212.5,332.4 L1212.0,335.2 L1211.5,337.7 L1211.0,337.9 L1210.5,336.2 L1210.0,336.1 L1209.5,335.3 L1209.0,337.4 L1208.5,336.0 L1208.0,337.8 L1207.5,336.3 L1207.0,338.1 L1206.5,336.3 L1206.0,337.9 L1205.5,337.8 L1205.0,335.3 L1204.5,337.5 L1204.0,335.4 L1203.5,336.8 L1203.0,338.6 L1202.5,338.0 L1202.0,335.8 L1201.5,338.2 L1201.0,337.3 L1200.5,337.7 L1200.0,335.4 L1199.5,335.5 L1199.0,337.0 L1198.5,338.5 L1198.0,338.2 L1197.5,338.0 L1197.0,337.3 L1196.5,338.4 L1196.0,337.2 L1195.5,338.7 L1195.0,338.5 L1194.5,337.6 L1194.0,339.0 L1193.5,339.0 L1193.0,338.0 L1192.5,338.2 L1192.0,337.3 L1191.5,336.0 L1191.0,335.9 L1190.5,336.2 L1190.0,335.9 L1189.5,337.3 L1189.0,338.8 L1188.5,336.1 L1188.0,338.1 L1187.5,338.3 L1187.0,338.1 L1186.5,336.5 L1186.0,337.2 L1185.5,335.4 L1185.0,328.5 L1184.5,332.2 L1184.0,335.9 L1183.5,337.3 L1183.0,334.7 L1182.5,337.7 L1182.0,335.9 L1181.5,337.2 L1181.0,337.6 L1180.5,335.8 L1180.0,336.6 L1179.5,337.6 L1179.0,336.0 L1178.5,336.6 L1178.0,336.1 L1177.5,337.1 L1177.0,337.9 L1176.5,336.0 L1176.0,335.7 L1175.5,334.8 L1175.0,334.9 L1174.5,337.6 L1174.0,335.3 L1173.5,336.9 L1173.0,337.9 L1172.5,337.3 L1172.0,336.3 L1171.5,337.4 L1171.0,337.4 L1170.5,337.7 L1170.0,337.1 L1169.5,335.5 L1169.0,335.8 L1168.5,337.7 L1168.0,337.6 L1167.5,337.4 L1167.0,336.0 L1166.5,335.2 L1166.0,337.6 L1165.5,335.2 L1165.0,335.9 L1164.5,336.1 L1164.0,335.5 L1163.5,335.2 L1163.0,336.6 L1162.5,338.1 L1162.0,335.5 L1161.5,335.7 L1161.0,338.1 L1160.5,336.7 L1160.0,328.5 L1159.5,332.0 L1159.0,337.7 L1158.5,335.3 L1158.0,335.1 L1157.5,337.1 L1157.0,337.3 L1156.5,335.5 L1156.0,335.8 L1155.5,336.0 L1155.0,337.4 L1154.5,336.3 L1154.0,337.6 L1153.5,335.6 L1153.0,337.5 L1152.5,336.7 L1152.0,335.4 L1151.5,335.3 L1151.0,337.7 L1150.5,338.2 L1150.0,335.6 L1149.5,336.1 L1149.0,338.2 L1148.5,338.2 L1148.0,337.5 L1147.5,338.5 L1147.0,336.4 L1146.5,338.1 L1146.0,338.8 L1145.5,338.7 L1145.0,328.4 L1144.5,328.4 L1144.0,328.4 L1143.5,328.4 L1143.0,328.4 L1142.5,328.4 L1142.0,328.4 L1141.5,328.4 L1141.0,328.4 L1140.5,328.4 L1140.0,328.4 L1139.5,328.4 L1139.0,328.4 L1138.5,328.4 L1138.0,328.4 L1137.5,328.4 L1137.0,328.4 L1136.5,328.4 L1136.0,328.4 L1135.5,328.4 L1135.0,328.4 L1134.5,328.4 L1134.0,328.4 L1133.5,328.4 L1133.0,328.4 L1132.5,328.4 L1132.0,328.4 L1131.5,328.4 L1131.0,328.4 L1130.5,328.4 L1130.0,328.4 L1129.5,328.4 L1129.0,328.4 L1128.5,328.4 L1128.0,328.4 L1127.5,328.4 L1127.0,328.4 L1126.5,328.4 L1126.0,328.4 L1125.5,328.4 L1125.0,328.4 L1124.5,328.4 L1124.0,328.4 L1123.5,328.4 L1123.0,328.4 L1122.5,328.4 L1122.0,328.4 L1121.5,328.4 L1121.0,328.4 L1120.5,328.4 L1120.0,328.4 L1119.5,328.4 L1119.0,328.4 L1118.5,328.4 L1118.0,328.4 L1117.5,328.4 L1117.0,328.4 L1116.5,328.4 L1116.0,328.4 L1115.5,328.4 L1115.0,328.4 L1114.5,328.4 L1114.0,328.4 L1113.5,328.4 L1113.0,328.4 L1112.5,328.4 L1112.0,328.4 L1111.5,328.4 L1111.0,328.4 L1110.5,328.4 L1110.0,328.4 L1109.5,329.6 L1109.0,331.5 L1108.5,332.7 L1108.0,332.7 L1107.5,332.5 L1107.0,332.9 L1106.5,333.0 L1106.0,333.1 L1105.5,332.0 L1105.0,331.9 L1104.5,332.4 L1104.0,332.6 L1103.5,332.6 L1103.0,330.3 L1102.5,328.4 L1102.0,328.4 L1101.5,328.4 L1101.0,328.4 L1100.5,328.4 L1100.0,328.4 L1099.5,328.4 L1099.0,328.4 L1098.5,330.0 L1098.0,331.0 L1097.5,333.3 L1097.0,332.9 L1096.5,333.4 L1096.0,333.0 L1095.5,333.6 L1095.0,334.0 L1094.5,333.1 L1094.0,332.4 L1093.5,332.6 L1093.0,330.9 L1092.5,328.4 L1092.0,328.4 L1091.5,330.2 L1091.0,331.2 L1090.5,332.3 L1090.0,334.3 L1089.5,334.3 L1089.0,334.1 L1088.5,333.2 L1088.0,332.7 L1087.5,332.6 L1087.0,334.6 L1086.5,333.2 L1086.0,330.8 L1085.5,328.4 L1085.0,328.4 L1084.5,329.8 L1084.0,331.8 L1083.5,331.8 L1083.0,332.7 L1082.5,332.1 L1082.0,332.6 L1081.5,332.4 L1081.0,332.3 L1080.5,333.8 L1080.0,332.5 L1079.5,331.8 L1079.0,328.4 L1078.5,328.4 L1078.0,328.4 L1077.5,328.4 L1077.0,328.4 L1076.5,328.4 L1076.0,328.4 L1075.5,328.4 L1075.0,328.4 L1074.5,328.4 L1074.0,328.4 L1073.5,328.4 L1073.0,328.4 L1072.5,328.4 L1072.0,328.4 L1071.5,328.4 L1071.0,328.4 L1070.5,328.4 L1070.0,328.4 L1069.5,328.4 L1069.0,329.2 L1068.5,330.4 L1068.0,331.5 L1067.5,333.8 L1067.0,332.3 L1066.5,333.0 L1066.0,332.5 L1065.5,334.1 L1065.0,332.5 L1064.5,334.5 L1064.0,331.7 L1063.5,328.4 L1063.0,328.4 L1062.5,328.4 L1062.0,328.4 L1061.5,328.4 L1061.0,328.4 L1060.5,328.4 L1060.0,328.4 L1059.5,328.4 L1059.0,328.4 L1058.5,328.4 L1058.0,328.4 L1057.5,328.4 L1057.0,328.4 L1056.5,328.4 L1056.0,328.4 L1055.5,328.4 L1055.0,328.4 L1054.5,332.3 L1054.0,334.4 L1053.5,335.5 L1053.0,335.0 L1052.5,334.8 L1052.0,335.5 L1051.5,335.0 L1051.0,334.2 L1050.5,336.7 L1050.0,335.4 L1049.5,336.5 L1049.0,334.9 L1048.5,336.5 L1048.0,331.8 L1047.5,328.4 L1047.0,328.4 L1046.5,332.2 L1046.0,334.5 L1045.5,336.5 L1045.0,335.5 L1044.5,335.2 L1044.0,334.6 L1043.5,335.8 L1043.0,335.9 L1042.5,336.0 L1042.0,335.2 L1041.5,334.8 L1041.0,335.7 L1040.5,338.0 L1040.0,332.4 L1039.5,328.4 L1039.0,328.4 L1038.5,328.4 L1038.0,328.4 L1037.5,332.5 L1037.0,335.1 L1036.5,335.3 L1036.0,336.6 L1035.5,335.8 L1035.0,334.6 L1034.5,336.4 L1034.0,337.3 L1033.5,336.1 L1033.0,336.9 L1032.5,336.4 L1032.0,335.3 L1031.5,334.8 L1031.0,338.1 L1030.5,336.1 L1030.0,338.0 L1029.5,337.1 L1029.0,337.1 L1028.5,336.4 L1028.0,335.1 L1027.5,336.3 L1027.0,338.2 L1026.5,335.4 L1026.0,335.3 L1025.5,335.4 L1025.0,336.5 L1024.5,335.3 L1024.0,328.4 L1023.5,332.6 L1023.0,338.0 L1022.5,335.9 L1022.0,338.1 L1021.5,335.5 L1021.0,337.0 L1020.5,338.2 L1020.0,336.8 L1019.5,338.2 L1019.0,337.7 L1018.5,338.2 L1018.0,336.1 L1017.5,338.1 L1017.0,337.3 L1016.5,338.9 L1016.0,335.7 L1015.5,335.5 L1015.0,336.4 L1014.5,336.7 L1014.0,338.0 L1013.5,339.1 L1013.0,336.5 L1012.5,335.6 L1012.0,328.5 L1011.5,332.9 L1011.0,336.8 L1010.5,338.5 L1010.0,337.4 L1009.5,336.4 L1009.0,338.0 L1008.5,336.5 L1008.0,339.0 L1007.5,337.9 L1007.0,338.1 L1006.5,338.4 L1006.0,335.7 L1005.5,336.2 L1005.0,337.9 L1004.5,337.7 L1004.0,338.1 L1003.5,337.0 L1003.0,335.9 L1002.5,337.1 L1002.0,337.5 L1001.5,337.5 L1001.0,338.1 L1000.5,336.7 L1000.0,336.9 L999.5,336.0 L999.0,330.2 L998.5,328.4 L998.0,328.4 L997.5,328.4 L997.0,331.8 L996.5,333.9 L996.0,335.2 L995.5,334.7 L995.0,337.0 L994.5,336.4 L994.0,335.0 L993.5,336.6 L993.0,337.7 L992.5,335.7 L992.0,335.9 L991.5,335.9 L991.0,335.8 L990.5,338.4 L990.0,335.4 L989.5,328.4 L989.0,331.9 L988.5,336.6 L988.0,336.5 L987.5,335.8 L987.0,335.6 L986.5,336.6 L986.0,335.0 L985.5,336.0 L985.0,335.2 L984.5,335.7 L984.0,335.9 L983.5,336.3 L983.0,336.4 L982.5,334.4 L982.0,336.0 L981.5,336.3 L981.0,334.2 L980.5,334.2 L980.0,334.3 L979.5,335.9 L979.0,337.0 L978.5,335.0 L978.0,335.3 L977.5,337.3 L977.0,335.9 L976.5,337.0 L976.0,336.2 L975.5,331.8 L975.0,328.4 L974.5,328.4 L974.0,328.4 L973.5,328.4 L973.0,328.4 L972.5,328.4 L972.0,328.4 L971.5,329.5 L971.0,331.9 L970.5,332.5 L970.0,333.2 L969.5,334.0 L969.0,332.8 L968.5,332.6 L968.0,333.2 L967.5,332.6 L967.0,333.4 L966.5,328.4 L966.0,328.4 L965.5,328.4 L965.0,328.4 L964.5,328.4 L964.0,328.7 L963.5,330.4 L963.0,331.1 L962.5,333.9 L962.0,333.5 L961.5,332.9 L961.0,333.8 L960.5,333.7 L960.0,333.0 L959.5,333.8 L959.0,330.8 L958.5,328.4 L958.0,328.4 L957.5,328.4 L957.0,328.4 L956.5,328.4 L956.0,328.4 L955.5,328.4 L955.0,329.5 L954.5,330.6 L954.0,332.8 L953.5,333.1 L953.0,332.5 L952.5,333.3 L952.0,333.3 L951.5,332.5 L951.0,330.1 L950.5,328.4 L950.0,328.4 L949.5,328.4 L949.0,328.4 L948.5,328.4 L948.0,328.4 L947.5,328.4 L947.0,328.4 L946.5,328.8 L946.0,329.7 L945.5,331.5 L945.0,333.9 L944.5,332.7 L944.0,332.3 L943.5,333.2 L943.0,332.9 L942.5,331.7 L942.0,328.4 L941.5,328.4 L941.0,328.4 L940.5,328.4 L940.0,328.4 L939.5,328.4 L939.0,328.4 L938.5,329.1 L938.0,330.9 L937.5,332.1 L937.0,333.8 L936.5,332.6 L936.0,332.8 L935.5,334.1 L935.0,333.4 L934.5,331.3 L934.0,328.4 L933.5,328.4 L933.0,328.4 L932.5,328.4 L932.0,328.4 L931.5,328.4 L931.0,328.4 L930.5,329.3 L930.0,330.9 L929.5,331.9 L929.0,332.7 L928.5,332.2 L928.0,333.1 L927.5,332.4 L927.0,332.0 L926.5,329.8 L926.0,328.4 L925.5,328.4 L925.0,328.4 L924.5,328.4 L924.0,328.4 L923.5,328.4 L923.0,328.4 L922.5,328.4 L922.0,328.7 L921.5,330.0 L921.0,330.9 L920.5,331.7 L920.0,331.6 L919.5,331.9 L919.0,332.0 L918.5,333.1 L918.0,332.3 L917.5,328.4 L917.0,328.4 L916.5,328.4 L916.0,328.4 L915.5,328.4 L915.0,328.4 L914.5,328.4 L914.0,328.4 L913.5,328.4 L913.0,328.4 L912.5,328.4 L912.0,328.4 L911.5,328.4 L911.0,328.4 L910.5,328.4 L910.0,328.4 L909.5,328.4 L909.0,328.4 L908.5,328.4 L908.0,328.4 L907.5,328.4 L907.0,328.4 L906.5,328.4 L906.0,328.4 L905.5,328.4 L905.0,329.8 L904.5,330.7 L904.0,331.4 L903.5,332.9 L903.0,332.8 L902.5,332.4 L902.0,331.6 L901.5,331.5 L901.0,331.7 L900.5,333.0 L900.0,331.6 L899.5,333.1 L899.0,332.9 L898.5,329.9 L898.0,328.4 L897.5,328.4 L897.0,328.4 L896.5,328.4 L896.0,328.4 L895.5,328.4 L895.0,328.4 L894.5,328.4 L894.0,328.4 L893.5,328.4 L893.0,328.4 L892.5,328.4 L892.0,328.4 L891.5,328.4 L891.0,328.4 L890.5,328.4 L890.0,328.4 L889.5,328.4 L889.0,328.4 L888.5,328.4 L888.0,328.4 L887.5,329.7 L887.0,331.5 L886.5,333.1 L886.0,333.3 L885.5,334.0 L885.0,332.4 L884.5,332.8 L884.0,333.6 L883.5,333.3 L883.0,333.1 L882.5,332.6 L882.0,332.4 L881.5,332.8 L881.0,332.7 L880.5,331.1 L880.0,328.4 L879.5,329.6 L879.0,330.5 L878.5,331.1 L878.0,332.6 L877.5,332.5 L877.0,331.8 L876.5,332.2 L876.0,332.7 L875.5,332.8 L875.0,333.2 L874.5,332.2 L874.0,333.0 L873.5,332.9 L873.0,333.4 L872.5,331.4 L872.0,328.4 L871.5,329.3 L871.0,331.2 L870.5,331.9 L870.0,331.9 L869.5,331.9 L869.0,332.3 L868.5,332.5 L868.0,331.9 L867.5,332.0 L867.0,333.3 L866.5,331.9 L866.0,329.2 L865.5,328.4 L865.0,328.4 L864.5,328.4 L864.0,328.4 L863.5,328.4 L863.0,329.4 L862.5,330.3 L862.0,332.0 L861.5,332.5 L861.0,331.8 L860.5,332.9 L860.0,332.4 L859.5,332.0 L859.0,332.9 L858.5,333.2 L858.0,331.8 L857.5,331.4 L857.0,328.4 L856.5,328.4 L856.0,328.4 L855.5,328.7 L855.0,330.0 L854.5,330.8 L854.0,333.0 L853.5,333.6 L853.0,332.3 L852.5,332.0 L852.0,333.7 L851.5,333.0 L851.0,332.8 L850.5,332.6 L850.0,332.6 L849.5,333.1 L849.0,333.3 L848.5,331.4 L848.0,328.4 L847.5,329.8 L847.0,330.8 L846.5,331.2 L846.0,331.8 L845.5,333.1 L845.0,332.0 L844.5,333.1 L844.0,333.2 L843.5,330.6 L843.0,328.4 L842.5,328.4 L842.0,328.4 L841.5,328.4 L841.0,328.4 L840.5,329.3 L840.0,330.7 L839.5,331.5 L839.0,331.8 L838.5,332.4 L838.0,333.1 L837.5,332.5 L837.0,333.3 L836.5,333.8 L836.0,333.5 L835.5,330.0 L835.0,328.4 L834.5,328.4 L834.0,328.4 L833.5,328.4 L833.0,328.4 L832.5,328.4 L832.0,328.4 L831.5,328.4 L831.0,328.5 L830.5,329.9 L830.0,330.4 L829.5,332.0 L829.0,331.5 L828.5,332.5 L828.0,333.0 L827.5,332.2 L827.0,331.2 L826.5,328.4 L826.0,328.4 L825.5,328.4 L825.0,328.4 L824.5,328.4 L824.0,328.4 L823.5,328.4 L823.0,329.0 L822.5,330.1 L822.0,332.1 L821.5,332.2 L821.0,332.5 L820.5,332.8 L820.0,331.6 L819.5,332.0 L819.0,330.5 L818.5,328.4 L818.0,328.4 L817.5,328.4 L817.0,328.4 L816.5,328.4 L816.0,328.4 L815.5,328.4 L815.0,328.4 L814.5,328.4 L814.0,330.1 L813.5,331.7 L813.0,332.5 L812.5,333.5 L812.0,333.9 L811.5,333.3 L811.0,332.9 L810.5,333.7 L810.0,329.5 L809.5,328.4 L809.0,328.4 L808.5,328.4 L808.0,328.4 L807.5,328.4 L807.0,328.4 L806.5,328.7 L806.0,330.4 L805.5,331.3 L805.0,333.3 L804.5,333.6 L804.0,333.7 L803.5,332.3 L803.0,333.2 L802.5,334.2 L802.0,333.9 L801.5,330.9 L801.0,328.4 L800.5,328.4 L800.0,328.4 L799.5,328.4 L799.0,328.4 L798.5,328.4 L798.0,328.4 L797.5,329.4 L797.0,330.7 L796.5,331.9 L796.0,334.0 L795.5,333.2 L795.0,333.1 L794.5,332.4 L794.0,334.6 L793.5,330.6 L793.0,328.4 L792.5,328.4 L792.0,328.4 L791.5,328.4 L791.0,328.4 L790.5,329.2 L790.0,331.3 L789.5,331.5 L789.0,331.9 L788.5,332.0 L788.0,333.1 L787.5,333.6 L787.0,332.1 L786.5,332.7 L786.0,333.5 L785.5,333.0 L785.0,332.0 L784.5,328.4 L784.0,328.4 L783.5,328.4 L783.0,328.4 L782.5,328.4 L782.0,328.4 L781.5,328.4 L781.0,328.4 L780.5,328.4 L780.0,328.4 L779.5,328.4 L779.0,328.4 L778.5,328.4 L778.0,328.4 L777.5,328.4 L777.0,328.4 L776.5,328.4 L776.0,328.4 L775.5,328.4 L775.0,328.4 L774.5,328.4 L774.0,328.4 L773.5,328.4 L773.0,328.4 L772.5,328.4 L772.0,328.4 L771.5,328.4 L771.0,328.4 L770.5,328.4 L770.0,328.4 L769.5,328.4 L769.0,328.4 L768.5,328.4 L768.0,328.4 L767.5,328.4 L767.0,328.4 L766.5,328.4 L766.0,328.4 L765.5,328.4 L765.0,328.4 L764.5,328.4 L764.0,328.4 L763.5,328.4 L763.0,328.4 L762.5,328.4 L762.0,328.4 L761.5,328.4 L761.0,328.4 L760.5,328.4 L760.0,328.4 L759.5,328.4 L759.0,328.4 L758.5,328.4 L758.0,328.4 L757.5,328.4 L757.0,328.4 L756.5,328.4 L756.0,328.4 L755.5,328.4 L755.0,328.4 L754.5,328.4 L754.0,328.4 L753.5,328.4 L753.0,328.4 L752.5,328.4 L752.0,328.4 L751.5,328.4 L751.0,328.4 L750.5,328.4 L750.0,328.4 L749.5,328.4 L749.0,328.4 L748.5,328.4 L748.0,328.4 L747.5,328.4 L747.0,328.4 L746.5,328.4 L746.0,328.4 L745.5,328.4 L745.0,328.4 L744.5,328.4 L744.0,328.4 L743.5,328.4 L743.0,328.4 L742.5,328.4 L742.0,328.4 L741.5,328.4 L741.0,328.4Z" fill="#3a3a3a"/><path d="M741.0,386.0 L741.5,385.7 L742.0,385.4 L742.5,385.4 L743.0,385.4 L743.5,385.4 L744.0,385.4 L744.5,385.4 L745.0,385.4 L745.5,385.4 L746.0,385.4 L746.5,385.4 L747.0,385.4 L747.5,385.4 L748.0,385.4 L748.5,385.4 L749.0,385.4 L749.5,385.4 L750.0,385.4 L750.5,385.4 L751.0,385.4 L751.5,385.4 L752.0,385.4 L752.5,385.4 L753.0,385.4 L753.5,385.4 L754.0,385.4 L754.5,385.4 L755.0,385.4 L755.5,385.4 L756.0,385.4 L756.5,385.4 L757.0,385.4 L757.5,385.4 L758.0,385.4 L758.5,385.4 L759.0,385.4 L759.5,385.4 L760.0,385.5 L760.5,385.6 L761.0,385.7 L761.5,385.8 L762.0,386.0 L762.5,386.0 L763.0,386.0 L763.5,386.0 L764.0,386.0 L764.5,386.0 L765.0,386.0 L765.5,386.0 L766.0,386.0 L766.5,386.0 L767.0,386.0 L767.5,386.0 L768.0,386.0 L768.5,386.0 L769.0,386.0 L769.5,386.0 L770.0,386.0 L770.5,386.0 L771.0,386.0 L771.5,386.0 L772.0,386.0 L772.5,386.0 L773.0,386.0 L773.5,386.0 L774.0,386.0 L774.5,386.0 L775.0,386.0 L775.5,386.0 L776.0,386.0 L776.5,386.0 L777.0,386.0 L777.5,386.0 L778.0,386.0 L778.5,386.0 L779.0,386.0 L779.5,386.0 L780.0,386.0 L780.5,386.0 L781.0,386.0 L781.5,386.0 L782.0,386.0 L782.5,386.0 L783.0,386.0 L783.5,386.0 L784.0,386.0 L784.5,386.0 L785.0,386.0 L785.5,386.0 L786.0,386.0 L786.5,386.0 L787.0,386.0 L787.5,386.0 L788.0,386.0 L788.5,386.0 L789.0,386.0 L789.5,386.0 L790.0,386.0 L790.5,386.0 L791.0,386.0 L791.5,386.0 L792.0,386.0 L792.5,386.0 L793.0,386.0 L793.5,386.0 L794.0,386.0 L794.5,386.0 L795.0,386.0 L795.5,386.0 L796.0,386.0 L796.5,386.0 L797.0,386.0 L797.5,386.0 L798.0,386.0 L798.5,386.0 L799.0,386.0 L799.5,386.0 L800.0,386.0 L800.5,386.0 L801.0,386.0 L801.5,386.0 L802.0,386.0 L802.5,386.0 L803.0,386.0 L803.5,386.0 L804.0,386.0 L804.5,386.0 L805.0,386.0 L805.5,386.0 L806.0,386.0 L806.5,386.0 L807.0,386.0 L807.5,386.0 L808.0,386.0 L808.5,386.0 L809.0,386.0 L809.5,386.0 L810.0,386.0 L810.5,386.0 L811.0,386.0 L811.5,386.0 L812.0,386.0 L812.5,386.0 L813.0,386.0 L813.5,386.0 L814.0,386.0 L814.5,386.0 L815.0,386.0 L815.5,386.0 L816.0,386.0 L816.5,386.0 L817.0,386.0 L817.5,386.0 L818.0,386.0 L818.5,384.7 L819.0,383.4 L819.5,384.7 L820.0,386.0 L820.5,386.0 L821.0,386.0 L821.5,386.0 L822.0,386.0 L822.5,386.0 L823.0,386.0 L823.5,386.0 L824.0,386.0 L824.5,386.0 L825.0,386.0 L825.5,386.0 L826.0,386.0 L826.5,386.0 L827.0,386.0 L827.5,386.0 L828.0,386.0 L828.5,386.0 L829.0,386.0 L829.5,386.0 L830.0,386.0 L830.5,386.0 L831.0,386.0 L831.5,386.0 L832.0,386.0 L832.5,386.0 L833.0,386.0 L833.5,386.0 L834.0,386.0 L834.5,386.0 L835.0,386.0 L835.5,386.0 L836.0,386.0 L836.5,386.0 L837.0,386.0 L837.5,386.0 L838.0,386.0 L838.5,386.0 L839.0,386.0 L839.5,386.0 L840.0,386.0 L840.5,386.0 L841.0,386.0 L841.5,386.0 L842.0,386.0 L842.5,386.0 L843.0,386.0 L843.5,386.0 L844.0,386.0 L844.5,386.0 L845.0,386.0 L845.5,386.0 L846.0,386.0 L846.5,386.0 L847.0,386.0 L847.5,386.0 L848.0,386.0 L848.5,386.0 L849.0,386.0 L849.5,386.0 L850.0,386.0 L850.5,384.1 L851.0,375.3 L851.5,375.3 L852.0,383.5 L852.5,383.2 L853.0,373.3 L853.5,373.3 L854.0,383.1 L854.5,383.5 L855.0,379.1 L855.5,379.1 L856.0,383.1 L856.5,382.5 L857.0,382.9 L857.5,375.3 L858.0,375.3 L858.5,383.5 L859.0,382.8 L859.5,378.9 L860.0,378.9 L860.5,382.3 L861.0,382.9 L861.5,382.5 L862.0,375.9 L862.5,375.9 L863.0,383.2 L863.5,383.4 L864.0,383.2 L864.5,383.0 L865.0,374.8 L865.5,374.8 L866.0,383.0 L866.5,383.4 L867.0,382.9 L867.5,382.0 L868.0,378.8 L868.5,378.8 L869.0,382.9 L869.5,382.5 L870.0,382.9 L870.5,382.0 L871.0,374.3 L871.5,374.3 L872.0,382.9 L872.5,382.7 L873.0,383.1 L873.5,373.9 L874.0,373.9 L874.5,383.1 L875.0,382.4 L875.5,383.1 L876.0,382.4 L876.5,374.3 L877.0,374.3 L877.5,382.6 L878.0,382.9 L878.5,383.3 L879.0,379.3 L879.5,379.3 L880.0,382.0 L880.5,382.0 L881.0,381.9 L881.5,373.5 L882.0,373.5 L882.5,383.3 L883.0,381.9 L883.5,382.6 L884.0,377.3 L884.5,377.3 L885.0,382.7 L885.5,383.0 L886.0,382.0 L886.5,373.5 L887.0,373.5 L887.5,382.4 L888.0,383.1 L888.5,383.2 L889.0,383.0 L889.5,373.4 L890.0,373.4 L890.5,383.2 L891.0,382.5 L891.5,382.4 L892.0,373.1 L892.5,373.1 L893.0,383.1 L893.5,382.8 L894.0,381.9 L894.5,373.0 L895.0,373.0 L895.5,383.2 L896.0,382.4 L896.5,382.8 L897.0,378.3 L897.5,378.3 L898.0,382.0 L898.5,383.1 L899.0,377.9 L899.5,377.9 L900.0,381.8 L900.5,382.8 L901.0,382.5 L901.5,378.2 L902.0,378.2 L902.5,382.9 L903.0,382.8 L903.5,382.7 L904.0,377.7 L904.5,377.7 L905.0,382.0 L905.5,381.9 L906.0,376.1 L906.5,376.1 L907.0,382.7 L907.5,382.1 L908.0,373.3 L908.5,373.3 L909.0,383.1 L909.5,381.7 L910.0,383.0 L910.5,376.7 L911.0,376.7 L911.5,381.8 L912.0,381.7 L912.5,382.9 L913.0,378.0 L913.5,378.0 L914.0,382.1 L914.5,382.4 L915.0,382.6 L915.5,374.2 L916.0,374.2 L916.5,383.1 L917.0,382.6 L917.5,382.2 L918.0,382.7 L918.5,374.3 L919.0,374.3 L919.5,382.7 L920.0,381.6 L920.5,381.5 L921.0,382.1 L921.5,376.6 L922.0,376.6 L922.5,381.7 L923.0,381.9 L923.5,382.2 L924.0,376.0 L924.5,376.0 L925.0,381.5 L925.5,382.2 L926.0,383.0 L926.5,382.1 L927.0,377.5 L927.5,377.5 L928.0,382.3 L928.5,381.9 L929.0,375.4 L929.5,375.4 L930.0,381.8 L930.5,382.5 L931.0,381.7 L931.5,382.2 L932.0,373.0 L932.5,373.0 L933.0,382.9 L933.5,382.7 L934.0,381.8 L934.5,377.1 L935.0,377.1 L935.5,382.3 L936.0,382.3 L936.5,381.7 L937.0,377.7 L937.5,377.7 L938.0,382.0 L938.5,382.4 L939.0,381.9 L939.5,376.9 L940.0,376.9 L940.5,382.5 L941.0,382.2 L941.5,372.6 L942.0,372.6 L942.5,382.0 L943.0,381.7 L943.5,382.0 L944.0,372.2 L944.5,372.2 L945.0,381.3 L945.5,381.9 L946.0,376.3 L946.5,376.3 L947.0,381.9 L947.5,381.9 L948.0,382.7 L948.5,382.8 L949.0,378.6 L949.5,378.6 L950.0,382.2 L950.5,381.3 L951.0,382.3 L951.5,375.2 L952.0,375.2 L952.5,382.3 L953.0,382.1 L953.5,374.8 L954.0,374.8 L954.5,381.2 L955.0,382.5 L955.5,382.2 L956.0,375.8 L956.5,375.8 L957.0,382.7 L957.5,381.4 L958.0,381.3 L958.5,372.8 L959.0,372.8 L959.5,382.8 L960.0,382.4 L960.5,381.9 L961.0,373.7 L961.5,373.7 L962.0,382.7 L962.5,382.0 L963.0,381.4 L963.5,373.4 L964.0,373.4 L964.5,382.1 L965.0,382.4 L965.5,382.3 L966.0,376.2 L966.5,376.2 L967.0,382.2 L967.5,381.5 L968.0,381.2 L968.5,381.2 L969.0,373.0 L969.5,373.0 L970.0,382.5 L970.5,382.5 L971.0,381.4 L971.5,381.1 L972.0,375.6 L972.5,375.6 L973.0,381.7 L973.5,381.3 L974.0,381.5 L974.5,382.3 L975.0,375.1 L975.5,375.1 L976.0,380.7 L976.5,379.6 L977.0,379.3 L977.5,378.2 L978.0,369.8 L978.5,369.8 L979.0,376.3 L979.5,377.6 L980.0,378.2 L980.5,372.6 L981.0,372.6 L981.5,377.3 L982.0,378.5 L982.5,378.9 L983.0,368.7 L983.5,368.7 L984.0,378.8 L984.5,377.1 L985.0,378.3 L985.5,367.5 L986.0,367.5 L986.5,377.7 L987.0,378.5 L987.5,376.9 L988.0,372.1 L988.5,372.1 L989.0,376.9 L989.5,377.3 L990.0,369.8 L990.5,369.8 L991.0,379.3 L991.5,377.7 L992.0,376.8 L992.5,368.4 L993.0,368.4 L993.5,376.6 L994.0,378.3 L994.5,378.2 L995.0,372.1 L995.5,372.1 L996.0,377.7 L996.5,378.5 L997.0,379.5 L997.5,368.2 L998.0,368.2 L998.5,376.5 L999.0,379.1 L999.5,368.2 L1000.0,368.2 L1000.5,378.8 L1001.0,376.8 L1001.5,376.7 L1002.0,370.6 L1002.5,370.6 L1003.0,377.7 L1003.5,377.7 L1004.0,371.1 L1004.5,371.1 L1005.0,378.4 L1005.5,378.4 L1006.0,378.3 L1006.5,370.2 L1007.0,370.2 L1007.5,376.7 L1008.0,378.0 L1008.5,378.1 L1009.0,378.4 L1009.5,370.8 L1010.0,370.8 L1010.5,378.3 L1011.0,378.5 L1011.5,378.3 L1012.0,373.0 L1012.5,373.0 L1013.0,376.3 L1013.5,377.5 L1014.0,378.9 L1014.5,368.2 L1015.0,368.2 L1015.5,377.1 L1016.0,377.4 L1016.5,378.8 L1017.0,378.2 L1017.5,372.8 L1018.0,372.8 L1018.5,376.3 L1019.0,378.0 L1019.5,378.3 L1020.0,372.9 L1020.5,372.9 L1021.0,378.2 L1021.5,377.0 L1022.0,367.2 L1022.5,367.2 L1023.0,377.8 L1023.5,378.4 L1024.0,376.2 L1024.5,376.7 L1025.0,374.0 L1025.5,374.0 L1026.0,378.8 L1026.5,377.7 L1027.0,376.9 L1027.5,367.3 L1028.0,367.3 L1028.5,376.9 L1029.0,377.3 L1029.5,379.3 L1030.0,378.7 L1030.5,367.9 L1031.0,367.9 L1031.5,378.2 L1032.0,377.0 L1032.5,373.9 L1033.0,373.9 L1033.5,377.2 L1034.0,376.7 L1034.5,376.9 L1035.0,377.7 L1035.5,372.7 L1036.0,372.7 L1036.5,378.7 L1037.0,378.8 L1037.5,372.3 L1038.0,372.3 L1038.5,378.1 L1039.0,376.6 L1039.5,376.9 L1040.0,370.2 L1040.5,370.2 L1041.0,376.5 L1041.5,376.1 L1042.0,376.4 L1042.5,379.3 L1043.0,368.0 L1043.5,368.0 L1044.0,379.2 L1044.5,376.5 L1045.0,370.5 L1045.5,370.5 L1046.0,376.8 L1046.5,377.4 L1047.0,376.2 L1047.5,378.5 L1048.0,370.4 L1048.5,370.4 L1049.0,378.6 L1049.5,377.0 L1050.0,376.2 L1050.5,376.9 L1051.0,370.8 L1051.5,370.8 L1052.0,377.6 L1052.5,378.0 L1053.0,376.2 L1053.5,378.6 L1054.0,370.2 L1054.5,370.2 L1055.0,376.3 L1055.5,378.0 L1056.0,378.6 L1056.5,377.8 L1057.0,368.8 L1057.5,368.8 L1058.0,377.0 L1058.5,376.7 L1059.0,371.1 L1059.5,371.1 L1060.0,376.6 L1060.5,377.4 L1061.0,376.5 L1061.5,369.4 L1062.0,369.4 L1062.5,378.8 L1063.0,377.2 L1063.5,376.9 L1064.0,370.4 L1064.5,370.4 L1065.0,376.1 L1065.5,378.6 L1066.0,379.3 L1066.5,371.9 L1067.0,371.9 L1067.5,376.8 L1068.0,378.5 L1068.5,376.8 L1069.0,376.6 L1069.5,367.4 L1070.0,367.4 L1070.5,379.1 L1071.0,379.2 L1071.5,368.3 L1072.0,368.3 L1072.5,377.8 L1073.0,378.6 L1073.5,368.3 L1074.0,368.3 L1074.5,378.8 L1075.0,377.7 L1075.5,378.0 L1076.0,368.9 L1076.5,368.9 L1077.0,378.4 L1077.5,376.8 L1078.0,369.0 L1078.5,369.0 L1079.0,378.7 L1079.5,378.8 L1080.0,376.3 L1080.5,371.0 L1081.0,371.0 L1081.5,377.5 L1082.0,377.8 L1082.5,368.0 L1083.0,368.0 L1083.5,377.5 L1084.0,376.5 L1084.5,367.2 L1085.0,367.2 L1085.5,378.7 L1086.0,378.4 L1086.5,378.4 L1087.0,370.8 L1087.5,370.8 L1088.0,376.5 L1088.5,376.4 L1089.0,377.0 L1089.5,367.3 L1090.0,367.3 L1090.5,377.5 L1091.0,377.0 L1091.5,368.0 L1092.0,368.0 L1092.5,377.6 L1093.0,377.7 L1093.5,376.7 L1094.0,376.4 L1094.5,369.7 L1095.0,369.7 L1095.5,378.5 L1096.0,376.2 L1096.5,377.8 L1097.0,379.1 L1097.5,369.9 L1098.0,369.9 L1098.5,376.6 L1099.0,376.7 L1099.5,372.9 L1100.0,372.9 L1100.5,376.9 L1101.0,376.8 L1101.5,378.7 L1102.0,379.3 L1102.5,368.0 L1103.0,368.0 L1103.5,377.9 L1104.0,376.5 L1104.5,376.0 L1105.0,372.3 L1105.5,372.3 L1106.0,377.0 L1106.5,376.4 L1107.0,376.2 L1107.5,377.1 L1108.0,368.4 L1108.5,368.4 L1109.0,377.9 L1109.5,376.0 L1110.0,378.0 L1110.5,372.7 L1111.0,372.7 L1111.5,379.2 L1112.0,379.3 L1112.5,378.3 L1113.0,371.0 L1113.5,371.0 L1114.0,378.4 L1114.5,376.6 L1115.0,370.7 L1115.5,370.7 L1116.0,379.0 L1116.5,377.8 L1117.0,372.8 L1117.5,372.8 L1118.0,377.7 L1118.5,379.1 L1119.0,367.8 L1119.5,367.8 L1120.0,379.0 L1120.5,376.7 L1121.0,378.5 L1121.5,370.0 L1122.0,370.0 L1122.5,377.0 L1123.0,379.3 L1123.5,377.8 L1124.0,376.2 L1124.5,371.1 L1125.0,371.1 L1125.5,376.4 L1126.0,377.0 L1126.5,372.5 L1127.0,372.5 L1127.5,378.5 L1128.0,376.4 L1128.5,375.9 L1129.0,373.5 L1129.5,373.5 L1130.0,378.8 L1130.5,376.1 L1131.0,378.4 L1131.5,371.1 L1132.0,371.1 L1132.5,376.5 L1133.0,376.9 L1133.5,379.3 L1134.0,377.2 L1134.5,368.4 L1135.0,368.4 L1135.5,377.0 L1136.0,376.1 L1136.5,372.5 L1137.0,372.5 L1137.5,379.3 L1138.0,375.9 L1138.5,377.4 L1139.0,373.1 L1139.5,373.1 L1140.0,379.1 L1140.5,378.5 L1141.0,376.5 L1141.5,368.7 L1142.0,368.7 L1142.5,375.9 L1143.0,379.2 L1143.5,377.5 L1144.0,372.7 L1144.5,372.7 L1145.0,378.3 L1145.5,376.3 L1146.0,379.2 L1146.5,376.3 L1147.0,369.5 L1147.5,369.5 L1148.0,377.9 L1148.5,378.6 L1149.0,375.9 L1149.5,370.5 L1150.0,370.5 L1150.5,376.5 L1151.0,378.9 L1151.5,377.5 L1152.0,371.3 L1152.5,371.3 L1153.0,379.0 L1153.5,376.5 L1154.0,368.2 L1154.5,368.2 L1155.0,376.5 L1155.5,376.8 L1156.0,375.9 L1156.5,378.1 L1157.0,367.7 L1157.5,367.7 L1158.0,378.3 L1158.5,378.8 L1159.0,378.1 L1159.5,376.0 L1160.0,369.8 L1160.5,369.8 L1161.0,379.0 L1161.5,376.2 L1162.0,377.3 L1162.5,370.9 L1163.0,370.9 L1163.5,379.3 L1164.0,376.2 L1164.5,376.9 L1165.0,373.7 L1165.5,373.7 L1166.0,376.1 L1166.5,377.4 L1167.0,376.0 L1167.5,373.3 L1168.0,373.3 L1168.5,377.5 L1169.0,375.9 L1169.5,376.3 L1170.0,370.5 L1170.5,370.5 L1171.0,378.5 L1171.5,378.6 L1172.0,376.3 L1172.5,370.0 L1173.0,370.0 L1173.5,376.0 L1174.0,377.2 L1174.5,377.8 L1175.0,378.6 L1175.5,369.5 L1176.0,369.5 L1176.5,376.2 L1177.0,377.1 L1177.5,378.8 L1178.0,368.7 L1178.5,368.7 L1179.0,378.0 L1179.5,379.1 L1180.0,377.6 L1180.5,376.8 L1181.0,369.8 L1181.5,369.8 L1182.0,377.3 L1182.5,377.9 L1183.0,377.6 L1183.5,370.6 L1184.0,370.6 L1184.5,377.8 L1185.0,379.2 L1185.5,379.1 L1186.0,372.6 L1186.5,372.6 L1187.0,375.8 L1187.5,375.8 L1188.0,378.8 L1188.5,371.4 L1189.0,371.4 L1189.5,378.6 L1190.0,375.8 L1190.5,370.6 L1191.0,370.6 L1191.5,376.5 L1192.0,375.8 L1192.5,376.1 L1193.0,376.3 L1193.5,371.0 L1194.0,371.0 L1194.5,375.9 L1195.0,378.0 L1195.5,376.9 L1196.0,377.3 L1196.5,371.7 L1197.0,371.7 L1197.5,377.0 L1198.0,378.0 L1198.5,377.4 L1199.0,373.2 L1199.5,373.2 L1200.0,376.7 L1200.5,378.5 L1201.0,371.4 L1201.5,371.4 L1202.0,377.5 L1202.5,379.3 L1203.0,378.4 L1203.5,376.4 L1204.0,367.2 L1204.5,367.2 L1205.0,378.2 L1205.5,379.1 L1206.0,377.7 L1206.5,371.5 L1207.0,371.5 L1207.5,378.4 L1208.0,376.9 L1208.5,369.6 L1209.0,369.6 L1209.5,377.4 L1210.0,378.0 L1210.5,376.5 L1211.0,377.2 L1211.5,372.1 L1212.0,372.1 L1212.5,375.9 L1213.0,375.8 L1213.5,379.1 L1214.0,372.6 L1214.5,372.6 L1215.0,377.4 L1215.5,378.0 L1216.0,372.2 L1216.5,372.2 L1217.0,377.6 L1217.5,378.1 L1218.0,375.7 L1218.5,372.7 L1219.0,372.7 L1219.5,376.6 L1220.0,378.3 L1220.5,377.1 L1221.0,367.2 L1221.5,367.2 L1222.0,379.2 L1222.5,377.7 L1223.0,373.1 L1223.5,373.1 L1224.0,376.0 L1224.5,377.8 L1225.0,369.1 L1225.5,369.1 L1226.0,378.3 L1226.5,378.2 L1227.0,378.1 L1227.5,373.0 L1228.0,373.0 L1228.5,377.6 L1229.0,377.5 L1229.5,369.1 L1230.0,369.1 L1230.5,378.3 L1231.0,377.7 L1231.5,377.1 L1232.0,367.0 L1232.5,367.0 L1233.0,377.3 L1233.5,377.1 L1234.0,377.0 L1234.5,375.7 L1235.0,369.2 L1235.5,369.2 L1236.0,376.8 L1236.5,378.7 L1237.0,368.2 L1237.5,368.2 L1238.0,378.6 L1238.5,376.6 L1239.0,378.1 L1239.5,373.2 L1240.0,373.2 L1240.5,376.7 L1241.0,376.9 L1241.5,376.5 L1242.0,368.9 L1242.5,368.9 L1243.0,377.2 L1243.5,376.2 L1244.0,369.7 L1244.5,369.7 L1245.0,379.0 L1245.5,378.2 L1246.0,377.1 L1246.5,369.2 L1247.0,369.2 L1247.5,376.7 L1248.0,377.2 L1248.5,377.6 L1249.0,378.1 L1249.5,369.3 L1250.0,369.3 L1250.5,377.2 L1251.0,376.1 L1251.5,371.5 L1252.0,371.5 L1252.5,379.0 L1253.0,376.0 L1253.5,379.1 L1254.0,378.1 L1254.5,371.5 L1255.0,371.5 L1255.5,377.3 L1256.0,378.5 L1256.5,366.9 L1257.0,366.9 L1257.5,377.1 L1258.0,376.3 L1258.5,371.7 L1259.0,371.7 L1259.5,376.3 L1260.0,376.2 L1260.5,376.9 L1261.0,372.9 L1261.5,372.9 L1262.0,378.3 L1262.5,376.2 L1263.0,375.7 L1263.5,371.1 L1264.0,371.1 L1264.5,377.0 L1265.0,376.3 L1265.5,371.2 L1266.0,371.2 L1266.5,378.4 L1267.0,376.5 L1267.5,369.3 L1268.0,369.3 L1268.5,379.0 L1269.0,376.0 L1269.5,376.0 L1270.0,378.6 L1270.5,368.6 L1271.0,368.6 L1271.5,376.1 L1272.0,379.1 L1272.5,367.1 L1273.0,367.1 L1273.5,377.5 L1274.0,375.9 L1274.5,377.6 L1275.0,377.7 L1275.5,369.6 L1276.0,369.6 L1276.5,378.3 L1277.0,378.7 L1277.5,367.3 L1278.0,367.3 L1278.5,376.2 L1279.0,378.8 L1279.5,377.3 L1280.0,368.4 L1280.5,368.4 L1281.0,375.9 L1281.5,377.4 L1282.0,378.0 L1282.5,367.5 L1283.0,367.5 L1283.5,376.0 L1284.0,378.8 L1284.5,369.2 L1285.0,369.2 L1285.5,378.1 L1286.0,376.7 L1286.5,378.4 L1287.0,376.0 L1287.5,371.8 L1288.0,371.8 L1288.5,376.0 L1289.0,378.3 L1289.5,376.6 L1290.0,373.4 L1290.5,373.4 L1291.0,378.8 L1291.5,377.5 L1292.0,376.1 L1292.5,371.6 L1293.0,371.6 L1293.5,379.1 L1294.0,376.7 L1294.5,368.1 L1295.0,368.1 L1295.5,378.3 L1296.0,377.0 L1296.5,377.6 L1297.0,372.3 L1297.5,372.3 L1298.0,376.2 L1298.5,376.6 L1299.0,377.1 L1299.5,373.3 L1300.0,373.3 L1300.5,377.4 L1301.0,376.8 L1301.5,379.1 L1302.0,373.0 L1302.5,373.0 L1303.0,377.5 L1303.5,377.7 L1304.0,377.5 L1304.5,369.4 L1305.0,369.4 L1305.5,376.2 L1306.0,375.8 L1306.5,377.4 L1307.0,378.6 L1307.5,367.8 L1308.0,367.8 L1308.5,377.3 L1309.0,377.3 L1309.5,368.9 L1310.0,368.9 L1310.0,403.8 L1309.5,403.8 L1309.0,395.4 L1308.5,395.4 L1308.0,404.9 L1307.5,404.9 L1307.0,394.1 L1306.5,395.3 L1306.0,396.9 L1305.5,396.5 L1305.0,403.3 L1304.5,403.3 L1304.0,395.2 L1303.5,395.0 L1303.0,395.2 L1302.5,399.7 L1302.0,399.7 L1301.5,393.6 L1301.0,395.9 L1300.5,395.3 L1300.0,399.4 L1299.5,399.4 L1299.0,395.6 L1298.5,396.1 L1298.0,396.5 L1297.5,400.4 L1297.0,400.4 L1296.5,395.1 L1296.0,395.7 L1295.5,394.4 L1295.0,404.6 L1294.5,404.6 L1294.0,396.0 L1293.5,393.6 L1293.0,401.1 L1292.5,401.1 L1292.0,396.6 L1291.5,395.2 L1291.0,393.9 L1290.5,399.3 L1290.0,399.3 L1289.5,396.1 L1289.0,394.4 L1288.5,396.7 L1288.0,400.9 L1287.5,400.9 L1287.0,396.7 L1286.5,394.3 L1286.0,396.0 L1285.5,394.6 L1285.0,403.5 L1284.5,403.5 L1284.0,393.9 L1283.5,396.7 L1283.0,405.2 L1282.5,405.2 L1282.0,394.7 L1281.5,395.3 L1281.0,396.8 L1280.5,404.3 L1280.0,404.3 L1279.5,395.4 L1279.0,393.9 L1278.5,396.5 L1278.0,405.4 L1277.5,405.4 L1277.0,394.0 L1276.5,394.4 L1276.0,403.1 L1275.5,403.1 L1275.0,395.0 L1274.5,395.1 L1274.0,396.8 L1273.5,395.2 L1273.0,405.6 L1272.5,405.6 L1272.0,393.6 L1271.5,396.6 L1271.0,404.1 L1270.5,404.1 L1270.0,394.1 L1269.5,396.7 L1269.0,396.7 L1268.5,393.7 L1268.0,403.4 L1267.5,403.4 L1267.0,396.2 L1266.5,394.3 L1266.0,401.5 L1265.5,401.5 L1265.0,396.4 L1264.5,395.7 L1264.0,401.6 L1263.5,401.6 L1263.0,397.0 L1262.5,396.5 L1262.0,394.4 L1261.5,399.8 L1261.0,399.8 L1260.5,395.8 L1260.0,396.5 L1259.5,396.4 L1259.0,401.0 L1258.5,401.0 L1258.0,396.4 L1257.5,395.6 L1257.0,405.8 L1256.5,405.8 L1256.0,394.2 L1255.5,395.4 L1255.0,401.2 L1254.5,401.2 L1254.0,394.6 L1253.5,393.6 L1253.0,396.7 L1252.5,393.7 L1252.0,401.2 L1251.5,401.2 L1251.0,396.6 L1250.5,395.5 L1250.0,403.4 L1249.5,403.4 L1249.0,394.6 L1248.5,395.1 L1248.0,395.5 L1247.5,396.0 L1247.0,403.5 L1246.5,403.5 L1246.0,395.6 L1245.5,394.5 L1245.0,393.7 L1244.5,403.0 L1244.0,403.0 L1243.5,396.5 L1243.0,395.5 L1242.5,403.8 L1242.0,403.8 L1241.5,396.2 L1241.0,395.8 L1240.5,396.0 L1240.0,399.5 L1239.5,399.5 L1239.0,394.6 L1238.5,396.1 L1238.0,394.1 L1237.5,404.5 L1237.0,404.5 L1236.5,394.0 L1236.0,395.9 L1235.5,403.5 L1235.0,403.5 L1234.5,397.0 L1234.0,395.7 L1233.5,395.6 L1233.0,395.4 L1232.5,405.7 L1232.0,405.7 L1231.5,395.6 L1231.0,395.0 L1230.5,394.4 L1230.0,403.6 L1229.5,403.6 L1229.0,395.2 L1228.5,395.1 L1228.0,399.7 L1227.5,399.7 L1227.0,394.6 L1226.5,394.5 L1226.0,394.4 L1225.5,403.6 L1225.0,403.6 L1224.5,394.9 L1224.0,396.7 L1223.5,399.6 L1223.0,399.6 L1222.5,395.0 L1222.0,393.5 L1221.5,405.5 L1221.0,405.5 L1220.5,395.6 L1220.0,394.4 L1219.5,396.1 L1219.0,400.0 L1218.5,400.0 L1218.0,397.0 L1217.5,394.6 L1217.0,395.1 L1216.5,400.5 L1216.0,400.5 L1215.5,394.7 L1215.0,395.3 L1214.5,400.1 L1214.0,400.1 L1213.5,393.6 L1213.0,396.9 L1212.5,396.8 L1212.0,400.6 L1211.5,400.6 L1211.0,395.5 L1210.5,396.2 L1210.0,394.7 L1209.5,395.3 L1209.0,403.1 L1208.5,403.1 L1208.0,395.8 L1207.5,394.3 L1207.0,401.2 L1206.5,401.2 L1206.0,395.0 L1205.5,393.6 L1205.0,394.5 L1204.5,405.5 L1204.0,405.5 L1203.5,396.3 L1203.0,394.3 L1202.5,393.4 L1202.0,395.2 L1201.5,401.3 L1201.0,401.3 L1200.5,394.2 L1200.0,396.0 L1199.5,399.5 L1199.0,399.5 L1198.5,395.3 L1198.0,394.7 L1197.5,395.7 L1197.0,401.0 L1196.5,401.0 L1196.0,395.4 L1195.5,395.8 L1195.0,394.7 L1194.5,396.8 L1194.0,401.7 L1193.5,401.7 L1193.0,396.4 L1192.5,396.6 L1192.0,396.9 L1191.5,396.2 L1191.0,402.1 L1190.5,402.1 L1190.0,396.9 L1189.5,394.1 L1189.0,401.3 L1188.5,401.3 L1188.0,393.9 L1187.5,396.9 L1187.0,396.9 L1186.5,400.1 L1186.0,400.1 L1185.5,393.6 L1185.0,393.5 L1184.5,394.9 L1184.0,402.1 L1183.5,402.1 L1183.0,395.1 L1182.5,394.8 L1182.0,395.4 L1181.5,402.9 L1181.0,402.9 L1180.5,395.9 L1180.0,395.1 L1179.5,393.6 L1179.0,394.7 L1178.5,404.0 L1178.0,404.0 L1177.5,393.9 L1177.0,395.6 L1176.5,396.5 L1176.0,403.2 L1175.5,403.2 L1175.0,394.1 L1174.5,394.9 L1174.0,395.5 L1173.5,396.7 L1173.0,402.7 L1172.5,402.7 L1172.0,396.4 L1171.5,394.1 L1171.0,394.2 L1170.5,402.2 L1170.0,402.2 L1169.5,396.4 L1169.0,396.8 L1168.5,395.2 L1168.0,399.4 L1167.5,399.4 L1167.0,396.7 L1166.5,395.3 L1166.0,396.6 L1165.5,399.0 L1165.0,399.0 L1164.5,395.8 L1164.0,396.5 L1163.5,393.4 L1163.0,401.8 L1162.5,401.8 L1162.0,395.4 L1161.5,396.5 L1161.0,393.7 L1160.5,402.9 L1160.0,402.9 L1159.5,396.7 L1159.0,394.6 L1158.5,393.9 L1158.0,394.4 L1157.5,405.0 L1157.0,405.0 L1156.5,394.6 L1156.0,396.8 L1155.5,395.9 L1155.0,396.2 L1154.5,404.5 L1154.0,404.5 L1153.5,396.2 L1153.0,393.7 L1152.5,401.4 L1152.0,401.4 L1151.5,395.2 L1151.0,393.8 L1150.5,396.2 L1150.0,402.2 L1149.5,402.2 L1149.0,396.8 L1148.5,394.1 L1148.0,394.8 L1147.5,403.2 L1147.0,403.2 L1146.5,396.4 L1146.0,393.5 L1145.5,396.4 L1145.0,394.4 L1144.5,400.0 L1144.0,400.0 L1143.5,395.2 L1143.0,393.5 L1142.5,396.8 L1142.0,404.0 L1141.5,404.0 L1141.0,396.2 L1140.5,394.2 L1140.0,393.6 L1139.5,399.6 L1139.0,399.6 L1138.5,395.3 L1138.0,396.8 L1137.5,393.4 L1137.0,400.2 L1136.5,400.2 L1136.0,396.6 L1135.5,395.7 L1135.0,404.3 L1134.5,404.3 L1134.0,395.5 L1133.5,393.4 L1133.0,395.8 L1132.5,396.2 L1132.0,401.6 L1131.5,401.6 L1131.0,394.3 L1130.5,396.6 L1130.0,393.9 L1129.5,399.2 L1129.0,399.2 L1128.5,396.8 L1128.0,396.3 L1127.5,394.2 L1127.0,400.2 L1126.5,400.2 L1126.0,395.7 L1125.5,396.3 L1125.0,401.6 L1124.5,401.6 L1124.0,396.5 L1123.5,394.9 L1123.0,393.4 L1122.5,395.7 L1122.0,402.7 L1121.5,402.7 L1121.0,394.2 L1120.5,396.0 L1120.0,393.7 L1119.5,404.9 L1119.0,404.9 L1118.5,393.6 L1118.0,395.0 L1117.5,399.9 L1117.0,399.9 L1116.5,394.9 L1116.0,393.7 L1115.5,402.0 L1115.0,402.0 L1114.5,396.1 L1114.0,394.3 L1113.5,401.7 L1113.0,401.7 L1112.5,394.4 L1112.0,393.4 L1111.5,393.5 L1111.0,400.0 L1110.5,400.0 L1110.0,394.7 L1109.5,396.7 L1109.0,394.8 L1108.5,404.3 L1108.0,404.3 L1107.5,395.6 L1107.0,396.5 L1106.5,396.3 L1106.0,395.7 L1105.5,400.4 L1105.0,400.4 L1104.5,396.7 L1104.0,396.2 L1103.5,394.8 L1103.0,404.7 L1102.5,404.7 L1102.0,393.4 L1101.5,394.0 L1101.0,395.9 L1100.5,395.8 L1100.0,399.8 L1099.5,399.8 L1099.0,396.0 L1098.5,396.1 L1098.0,402.8 L1097.5,402.8 L1097.0,393.6 L1096.5,394.9 L1096.0,396.5 L1095.5,394.2 L1095.0,403.0 L1094.5,403.0 L1094.0,396.3 L1093.5,396.0 L1093.0,395.0 L1092.5,395.1 L1092.0,404.7 L1091.5,404.7 L1091.0,395.7 L1090.5,395.2 L1090.0,405.4 L1089.5,405.4 L1089.0,395.7 L1088.5,396.3 L1088.0,396.2 L1087.5,401.9 L1087.0,401.9 L1086.5,394.3 L1086.0,394.3 L1085.5,394.0 L1085.0,405.5 L1084.5,405.5 L1084.0,396.2 L1083.5,395.2 L1083.0,404.7 L1082.5,404.7 L1082.0,394.9 L1081.5,395.2 L1081.0,401.7 L1080.5,401.7 L1080.0,396.4 L1079.5,393.9 L1079.0,394.0 L1078.5,403.7 L1078.0,403.7 L1077.5,395.9 L1077.0,394.3 L1076.5,403.8 L1076.0,403.8 L1075.5,394.7 L1075.0,395.0 L1074.5,393.9 L1074.0,404.4 L1073.5,404.4 L1073.0,394.1 L1072.5,394.9 L1072.0,404.4 L1071.5,404.4 L1071.0,393.5 L1070.5,393.6 L1070.0,405.3 L1069.5,405.3 L1069.0,396.1 L1068.5,395.9 L1068.0,394.2 L1067.5,395.9 L1067.0,400.8 L1066.5,400.8 L1066.0,393.4 L1065.5,394.1 L1065.0,396.6 L1064.5,402.3 L1064.0,402.3 L1063.5,395.8 L1063.0,395.5 L1062.5,393.9 L1062.0,403.3 L1061.5,403.3 L1061.0,396.2 L1060.5,395.3 L1060.0,396.1 L1059.5,401.6 L1059.0,401.6 L1058.5,396.0 L1058.0,395.7 L1057.5,403.9 L1057.0,403.9 L1056.5,394.9 L1056.0,394.1 L1055.5,394.7 L1055.0,396.4 L1054.5,402.5 L1054.0,402.5 L1053.5,394.1 L1053.0,396.5 L1052.5,394.7 L1052.0,395.1 L1051.5,401.9 L1051.0,401.9 L1050.5,395.8 L1050.0,396.5 L1049.5,395.7 L1049.0,394.1 L1048.5,402.3 L1048.0,402.3 L1047.5,394.2 L1047.0,396.5 L1046.5,395.3 L1046.0,395.9 L1045.5,402.2 L1045.0,402.2 L1044.5,396.2 L1044.0,393.5 L1043.5,404.7 L1043.0,404.7 L1042.5,393.4 L1042.0,396.3 L1041.5,396.6 L1041.0,396.2 L1040.5,402.5 L1040.0,402.5 L1039.5,395.8 L1039.0,396.1 L1038.5,394.6 L1038.0,400.4 L1037.5,400.4 L1037.0,393.9 L1036.5,394.0 L1036.0,400.0 L1035.5,400.0 L1035.0,395.0 L1034.5,395.8 L1034.0,396.0 L1033.5,395.5 L1033.0,398.8 L1032.5,398.8 L1032.0,395.7 L1031.5,394.5 L1031.0,404.8 L1030.5,404.8 L1030.0,394.0 L1029.5,393.4 L1029.0,395.4 L1028.5,395.8 L1028.0,405.4 L1027.5,405.4 L1027.0,395.8 L1026.5,395.0 L1026.0,393.9 L1025.5,398.7 L1025.0,398.7 L1024.5,396.0 L1024.0,396.5 L1023.5,394.3 L1023.0,394.9 L1022.5,405.5 L1022.0,405.5 L1021.5,395.7 L1021.0,394.5 L1020.5,399.8 L1020.0,399.8 L1019.5,394.4 L1019.0,394.7 L1018.5,396.4 L1018.0,399.9 L1017.5,399.9 L1017.0,394.5 L1016.5,393.9 L1016.0,395.3 L1015.5,395.6 L1015.0,404.5 L1014.5,404.5 L1014.0,393.8 L1013.5,395.2 L1013.0,396.4 L1012.5,399.7 L1012.0,399.7 L1011.5,394.4 L1011.0,394.2 L1010.5,394.4 L1010.0,401.9 L1009.5,401.9 L1009.0,394.3 L1008.5,394.6 L1008.0,394.7 L1007.5,396.0 L1007.0,402.5 L1006.5,402.5 L1006.0,394.4 L1005.5,394.3 L1005.0,394.3 L1004.5,401.6 L1004.0,401.6 L1003.5,395.0 L1003.0,395.0 L1002.5,402.1 L1002.0,402.1 L1001.5,396.0 L1001.0,395.9 L1000.5,393.9 L1000.0,404.5 L999.5,404.5 L999.0,393.6 L998.5,396.2 L998.0,404.5 L997.5,404.5 L997.0,393.2 L996.5,394.2 L996.0,395.0 L995.5,400.6 L995.0,400.6 L994.5,394.5 L994.0,394.4 L993.5,396.1 L993.0,404.3 L992.5,404.3 L992.0,395.9 L991.5,395.0 L991.0,393.4 L990.5,402.9 L990.0,402.9 L989.5,395.4 L989.0,395.8 L988.5,400.6 L988.0,400.6 L987.5,395.8 L987.0,394.2 L986.5,395.0 L986.0,405.2 L985.5,405.2 L985.0,394.4 L984.5,395.6 L984.0,393.9 L983.5,404.0 L983.0,404.0 L982.5,393.8 L982.0,394.2 L981.5,395.4 L981.0,400.1 L980.5,400.1 L980.0,394.5 L979.5,395.1 L979.0,396.4 L978.5,402.9 L978.0,402.9 L977.5,394.5 L977.0,393.4 L976.5,393.1 L976.0,392.0 L975.5,397.6 L975.0,397.6 L974.5,390.4 L974.0,391.2 L973.5,391.4 L973.0,391.0 L972.5,397.1 L972.0,397.1 L971.5,391.6 L971.0,391.3 L970.5,390.2 L970.0,390.2 L969.5,399.7 L969.0,399.7 L968.5,391.5 L968.0,391.5 L967.5,391.2 L967.0,390.5 L966.5,396.5 L966.0,396.5 L965.5,390.4 L965.0,390.3 L964.5,390.6 L964.0,399.3 L963.5,399.3 L963.0,391.3 L962.5,390.7 L962.0,390.0 L961.5,399.0 L961.0,399.0 L960.5,390.8 L960.0,390.3 L959.5,389.9 L959.0,399.9 L958.5,399.9 L958.0,391.4 L957.5,391.3 L957.0,390.0 L956.5,396.9 L956.0,396.9 L955.5,390.5 L955.0,390.2 L954.5,391.5 L954.0,397.9 L953.5,397.9 L953.0,390.6 L952.5,390.4 L952.0,397.5 L951.5,397.5 L951.0,390.4 L950.5,391.4 L950.0,390.5 L949.5,394.1 L949.0,394.1 L948.5,389.9 L948.0,390.0 L947.5,390.8 L947.0,390.8 L946.5,396.4 L946.0,396.4 L945.5,390.8 L945.0,391.4 L944.5,400.5 L944.0,400.5 L943.5,390.7 L943.0,391.0 L942.5,390.7 L942.0,400.1 L941.5,400.1 L941.0,390.5 L940.5,390.2 L940.0,395.8 L939.5,395.8 L939.0,390.8 L938.5,390.3 L938.0,390.7 L937.5,395.0 L937.0,395.0 L936.5,391.0 L936.0,390.4 L935.5,390.4 L935.0,395.6 L934.5,395.6 L934.0,390.9 L933.5,390.0 L933.0,389.8 L932.5,399.7 L932.0,399.7 L931.5,390.5 L931.0,391.0 L930.5,390.2 L930.0,390.9 L929.5,397.3 L929.0,397.3 L928.5,390.8 L928.0,390.4 L927.5,395.2 L927.0,395.2 L926.5,390.6 L926.0,389.7 L925.5,390.5 L925.0,391.2 L924.5,396.7 L924.0,396.7 L923.5,390.5 L923.0,390.8 L922.5,391.0 L922.0,396.1 L921.5,396.1 L921.0,390.6 L920.5,391.2 L920.0,391.1 L919.5,390.0 L919.0,398.4 L918.5,398.4 L918.0,390.0 L917.5,390.5 L917.0,390.1 L916.5,389.6 L916.0,398.5 L915.5,398.5 L915.0,390.1 L914.5,390.3 L914.0,390.6 L913.5,394.7 L913.0,394.7 L912.5,389.8 L912.0,391.0 L911.5,390.9 L911.0,396.0 L910.5,396.0 L910.0,389.7 L909.5,391.0 L909.0,389.6 L908.5,399.4 L908.0,399.4 L907.5,390.6 L907.0,390.0 L906.5,396.6 L906.0,396.6 L905.5,390.8 L905.0,390.7 L904.5,395.0 L904.0,395.0 L903.5,390.0 L903.0,389.9 L902.5,389.8 L902.0,394.5 L901.5,394.5 L901.0,390.2 L900.5,389.9 L900.0,390.9 L899.5,394.8 L899.0,394.8 L898.5,389.6 L898.0,390.7 L897.5,394.4 L897.0,394.4 L896.5,389.9 L896.0,390.3 L895.5,389.5 L895.0,399.7 L894.5,399.7 L894.0,390.8 L893.5,389.9 L893.0,389.6 L892.5,399.6 L892.0,399.6 L891.5,390.3 L891.0,390.2 L890.5,389.5 L890.0,399.3 L889.5,399.3 L889.0,389.7 L888.5,389.5 L888.0,389.6 L887.5,390.3 L887.0,399.2 L886.5,399.2 L886.0,390.7 L885.5,389.7 L885.0,390.0 L884.5,395.4 L884.0,395.4 L883.5,390.1 L883.0,390.8 L882.5,389.4 L882.0,399.2 L881.5,399.2 L881.0,390.8 L880.5,390.7 L880.0,390.7 L879.5,393.4 L879.0,393.4 L878.5,389.4 L878.0,389.8 L877.5,390.1 L877.0,398.4 L876.5,398.4 L876.0,390.3 L875.5,389.6 L875.0,390.3 L874.5,389.6 L874.0,398.8 L873.5,398.8 L873.0,389.6 L872.5,390.0 L872.0,389.8 L871.5,398.4 L871.0,398.4 L870.5,390.7 L870.0,389.8 L869.5,390.2 L869.0,389.8 L868.5,393.9 L868.0,393.9 L867.5,390.7 L867.0,389.8 L866.5,389.3 L866.0,389.7 L865.5,397.9 L865.0,397.9 L864.5,389.7 L864.0,389.5 L863.5,389.3 L863.0,389.5 L862.5,396.8 L862.0,396.8 L861.5,390.2 L861.0,389.8 L860.5,390.4 L860.0,393.8 L859.5,393.8 L859.0,389.9 L858.5,389.2 L858.0,397.4 L857.5,397.4 L857.0,389.8 L856.5,390.2 L856.0,389.6 L855.5,393.6 L855.0,393.6 L854.5,389.2 L854.0,389.6 L853.5,399.4 L853.0,399.4 L852.5,389.5 L852.0,389.2 L851.5,397.4 L851.0,397.4 L850.5,388.6 L850.0,386.8 L849.5,386.8 L849.0,386.8 L848.5,386.8 L848.0,386.8 L847.5,386.8 L847.0,386.8 L846.5,386.8 L846.0,386.8 L845.5,386.8 L845.0,386.8 L844.5,386.8 L844.0,386.8 L843.5,386.8 L843.0,386.8 L842.5,386.8 L842.0,386.8 L841.5,386.8 L841.0,386.8 L840.5,386.8 L840.0,386.8 L839.5,386.8 L839.0,386.8 L838.5,386.8 L838.0,386.8 L837.5,386.8 L837.0,386.8 L836.5,386.8 L836.0,386.8 L835.5,386.8 L835.0,386.8 L834.5,386.8 L834.0,386.8 L833.5,386.8 L833.0,386.8 L832.5,386.8 L832.0,386.8 L831.5,386.8 L831.0,386.8 L830.5,386.8 L830.0,386.8 L829.5,386.8 L829.0,386.8 L828.5,386.8 L828.0,386.8 L827.5,386.8 L827.0,386.8 L826.5,386.8 L826.0,386.8 L825.5,386.8 L825.0,386.8 L824.5,386.8 L824.0,386.8 L823.5,386.8 L823.0,386.8 L822.5,386.8 L822.0,386.8 L821.5,386.8 L821.0,386.8 L820.5,386.8 L820.0,386.8 L819.5,388.1 L819.0,389.4 L818.5,388.1 L818.0,386.8 L817.5,386.8 L817.0,386.8 L816.5,386.8 L816.0,386.8 L815.5,386.8 L815.0,386.8 L814.5,386.8 L814.0,386.8 L813.5,386.8 L813.0,386.8 L812.5,386.8 L812.0,386.8 L811.5,386.8 L811.0,386.8 L810.5,386.8 L810.0,386.8 L809.5,386.8 L809.0,386.8 L808.5,386.8 L808.0,386.8 L807.5,386.8 L807.0,386.8 L806.5,386.8 L806.0,386.8 L805.5,386.8 L805.0,386.8 L804.5,386.8 L804.0,386.8 L803.5,386.8 L803.0,386.8 L802.5,386.8 L802.0,386.8 L801.5,386.8 L801.0,386.8 L800.5,386.8 L800.0,386.8 L799.5,386.8 L799.0,386.8 L798.5,386.8 L798.0,386.8 L797.5,386.8 L797.0,386.8 L796.5,386.8 L796.0,386.8 L795.5,386.8 L795.0,386.8 L794.5,386.8 L794.0,386.8 L793.5,386.8 L793.0,386.8 L792.5,386.8 L792.0,386.8 L791.5,386.8 L791.0,386.8 L790.5,386.8 L790.0,386.8 L789.5,386.8 L789.0,386.8 L788.5,386.8 L788.0,386.8 L787.5,386.8 L787.0,386.8 L786.5,386.8 L786.0,386.8 L785.5,386.8 L785.0,386.8 L784.5,386.8 L784.0,386.8 L783.5,386.8 L783.0,386.8 L782.5,386.8 L782.0,386.8 L781.5,386.8 L781.0,386.8 L780.5,386.8 L780.0,386.8 L779.5,386.8 L779.0,386.8 L778.5,386.8 L778.0,386.8 L777.5,386.8 L777.0,386.8 L776.5,386.8 L776.0,386.8 L775.5,386.8 L775.0,386.8 L774.5,386.8 L774.0,386.8 L773.5,386.8 L773.0,386.8 L772.5,386.8 L772.0,386.8 L771.5,386.8 L771.0,386.8 L770.5,386.8 L770.0,386.8 L769.5,386.8 L769.0,386.8 L768.5,386.8 L768.0,386.8 L767.5,386.8 L767.0,386.8 L766.5,386.8 L766.0,386.8 L765.5,386.8 L765.0,386.8 L764.5,386.8 L764.0,386.8 L763.5,386.8 L763.0,386.8 L762.5,386.8 L762.0,386.8 L761.5,386.9 L761.0,387.0 L760.5,387.1 L760.0,387.2 L759.5,387.3 L759.0,387.3 L758.5,387.3 L758.0,387.3 L757.5,387.3 L757.0,387.3 L756.5,387.3 L756.0,387.3 L755.5,387.3 L755.0,387.3 L754.5,387.3 L754.0,387.3 L753.5,387.3 L753.0,387.3 L752.5,387.3 L752.0,387.3 L751.5,387.3 L751.0,387.3 L750.5,387.3 L750.0,387.3 L749.5,387.3 L749.0,387.3 L748.5,387.3 L748.0,387.3 L747.5,387.3 L747.0,387.3 L746.5,387.3 L746.0,387.3 L745.5,387.3 L745.0,387.3 L744.5,387.3 L744.0,387.3 L743.5,387.3 L743.0,387.3 L742.5,387.3 L742.0,387.4 L741.5,387.1 L741.0,386.8Z" fill="#1f7183"/><path d="M741.0,444.3 L741.5,444.3 L742.0,444.3 L742.5,444.3 L743.0,444.3 L743.5,444.3 L744.0,444.3 L744.5,444.3 L745.0,444.3 L745.5,444.3 L746.0,444.3 L746.5,444.3 L747.0,444.3 L747.5,444.3 L748.0,444.3 L748.5,444.3 L749.0,444.3 L749.5,444.3 L750.0,444.3 L750.5,444.3 L751.0,444.3 L751.5,444.3 L752.0,444.3 L752.5,444.3 L753.0,444.3 L753.5,444.3 L754.0,444.3 L754.5,444.3 L755.0,444.3 L755.5,444.3 L756.0,444.3 L756.5,444.3 L757.0,444.3 L757.5,444.3 L758.0,444.3 L758.5,444.3 L759.0,444.3 L759.5,444.3 L760.0,444.3 L760.5,444.3 L761.0,444.3 L761.5,444.3 L762.0,444.3 L762.5,444.3 L763.0,444.3 L763.5,444.3 L764.0,444.3 L764.5,444.3 L765.0,444.3 L765.5,444.3 L766.0,444.3 L766.5,444.3 L767.0,444.3 L767.5,444.3 L768.0,444.3 L768.5,444.3 L769.0,444.3 L769.5,444.3 L770.0,444.3 L770.5,444.3 L771.0,444.3 L771.5,444.3 L772.0,444.3 L772.5,444.3 L773.0,444.3 L773.5,444.3 L774.0,444.3 L774.5,444.3 L775.0,444.3 L775.5,444.3 L776.0,444.3 L776.5,444.3 L777.0,444.3 L777.5,444.3 L778.0,444.3 L778.5,444.3 L779.0,444.3 L779.5,444.3 L780.0,444.3 L780.5,444.3 L781.0,444.3 L781.5,444.3 L782.0,444.3 L782.5,444.3 L783.0,444.3 L783.5,444.3 L784.0,444.3 L784.5,444.3 L785.0,444.3 L785.5,444.3 L786.0,444.3 L786.5,444.3 L787.0,444.3 L787.5,444.3 L788.0,444.3 L788.5,444.3 L789.0,444.3 L789.5,444.3 L790.0,444.3 L790.5,444.3 L791.0,444.3 L791.5,444.3 L792.0,444.3 L792.5,444.3 L793.0,444.3 L793.5,444.3 L794.0,444.3 L794.5,444.3 L795.0,444.3 L795.5,444.3 L796.0,444.3 L796.5,444.3 L797.0,444.3 L797.5,444.3 L798.0,444.3 L798.5,444.3 L799.0,444.3 L799.5,444.3 L800.0,444.3 L800.5,444.3 L801.0,444.3 L801.5,444.3 L802.0,444.3 L802.5,444.3 L803.0,444.3 L803.5,444.3 L804.0,444.3 L804.5,444.3 L805.0,444.3 L805.5,444.3 L806.0,444.3 L806.5,444.3 L807.0,444.3 L807.5,444.3 L808.0,444.3 L808.5,444.3 L809.0,444.3 L809.5,444.3 L810.0,444.3 L810.5,444.3 L811.0,444.3 L811.5,444.3 L812.0,444.3 L812.5,444.3 L813.0,444.3 L813.5,444.3 L814.0,444.3 L814.5,444.3 L815.0,444.3 L815.5,444.3 L816.0,444.3 L816.5,444.3 L817.0,444.3 L817.5,444.3 L818.0,444.3 L818.5,444.3 L819.0,440.2 L819.5,440.6 L820.0,440.3 L820.5,440.5 L821.0,440.9 L821.5,441.4 L822.0,441.4 L822.5,442.1 L823.0,442.1 L823.5,442.2 L824.0,442.2 L824.5,442.4 L825.0,443.0 L825.5,443.3 L826.0,440.7 L826.5,440.5 L827.0,441.1 L827.5,441.0 L828.0,441.2 L828.5,441.4 L829.0,441.3 L829.5,441.8 L830.0,441.9 L830.5,442.5 L831.0,442.1 L831.5,442.3 L832.0,442.8 L832.5,442.8 L833.0,440.7 L833.5,440.5 L834.0,441.2 L834.5,441.2 L835.0,440.9 L835.5,441.9 L836.0,441.7 L836.5,442.1 L837.0,441.9 L837.5,442.2 L838.0,442.5 L838.5,442.4 L839.0,442.3 L839.5,442.6 L840.0,440.8 L840.5,441.0 L841.0,441.1 L841.5,441.1 L842.0,441.6 L842.5,441.3 L843.0,442.0 L843.5,442.3 L844.0,442.1 L844.5,442.1 L845.0,442.1 L845.5,442.4 L846.0,442.5 L846.5,442.3 L847.0,442.4 L847.5,442.4 L848.0,442.3 L848.5,442.1 L849.0,442.5 L849.5,442.2 L850.0,442.2 L850.5,442.2 L851.0,438.0 L851.5,438.7 L852.0,438.7 L852.5,439.5 L853.0,438.0 L853.5,438.3 L854.0,439.3 L854.5,438.6 L855.0,438.3 L855.5,438.0 L856.0,438.1 L856.5,438.0 L857.0,438.5 L857.5,439.2 L858.0,438.9 L858.5,439.2 L859.0,438.1 L859.5,439.0 L860.0,438.1 L860.5,439.3 L861.0,438.7 L861.5,439.2 L862.0,438.3 L862.5,439.5 L863.0,438.3 L863.5,439.0 L864.0,439.5 L864.5,438.9 L865.0,439.4 L865.5,439.2 L866.0,438.7 L866.5,438.9 L867.0,438.8 L867.5,438.2 L868.0,438.4 L868.5,439.0 L869.0,439.3 L869.5,438.9 L870.0,439.6 L870.5,439.1 L871.0,438.5 L871.5,439.6 L872.0,439.1 L872.5,439.4 L873.0,438.5 L873.5,438.5 L874.0,438.4 L874.5,439.4 L875.0,438.9 L875.5,438.3 L876.0,439.6 L876.5,438.7 L877.0,439.6 L877.5,438.9 L878.0,439.2 L878.5,439.3 L879.0,438.4 L879.5,438.4 L880.0,438.8 L880.5,439.6 L881.0,439.5 L881.5,438.3 L882.0,438.5 L882.5,438.8 L883.0,438.5 L883.5,439.0 L884.0,439.3 L884.5,438.4 L885.0,439.5 L885.5,439.8 L886.0,439.6 L886.5,439.0 L887.0,439.7 L887.5,439.3 L888.0,438.5 L888.5,439.2 L889.0,438.8 L889.5,439.1 L890.0,439.4 L890.5,438.4 L891.0,439.2 L891.5,438.9 L892.0,438.9 L892.5,439.1 L893.0,439.0 L893.5,439.5 L894.0,439.6 L894.5,438.8 L895.0,438.4 L895.5,439.1 L896.0,439.5 L896.5,438.7 L897.0,439.8 L897.5,439.5 L898.0,438.9 L898.5,438.7 L899.0,438.7 L899.5,439.4 L900.0,439.6 L900.5,438.6 L901.0,439.5 L901.5,439.1 L902.0,439.2 L902.5,438.5 L903.0,439.2 L903.5,439.6 L904.0,438.7 L904.5,439.1 L905.0,439.8 L905.5,439.0 L906.0,438.9 L906.5,439.0 L907.0,438.8 L907.5,439.5 L908.0,438.5 L908.5,439.7 L909.0,439.7 L909.5,439.7 L910.0,439.2 L910.5,438.7 L911.0,438.8 L911.5,438.5 L912.0,439.2 L912.5,439.2 L913.0,438.7 L913.5,438.6 L914.0,439.1 L914.5,439.1 L915.0,439.4 L915.5,439.1 L916.0,438.6 L916.5,439.7 L917.0,439.7 L917.5,438.6 L918.0,439.8 L918.5,438.6 L919.0,439.0 L919.5,439.0 L920.0,439.8 L920.5,438.6 L921.0,439.1 L921.5,438.7 L922.0,439.1 L922.5,438.9 L923.0,439.5 L923.5,439.3 L924.0,438.7 L924.5,439.3 L925.0,439.2 L925.5,438.6 L926.0,439.2 L926.5,438.8 L927.0,439.7 L927.5,438.8 L928.0,438.7 L928.5,438.6 L929.0,439.8 L929.5,439.8 L930.0,439.4 L930.5,439.7 L931.0,439.6 L931.5,438.5 L932.0,439.1 L932.5,439.7 L933.0,439.3 L933.5,439.0 L934.0,439.4 L934.5,439.8 L935.0,439.1 L935.5,438.9 L936.0,438.8 L936.5,438.8 L937.0,439.8 L937.5,439.0 L938.0,439.5 L938.5,438.9 L939.0,439.4 L939.5,439.7 L940.0,439.0 L940.5,439.5 L941.0,438.8 L941.5,438.6 L942.0,438.7 L942.5,439.4 L943.0,439.7 L943.5,438.8 L944.0,439.6 L944.5,439.9 L945.0,439.0 L945.5,438.7 L946.0,439.3 L946.5,438.7 L947.0,439.0 L947.5,439.5 L948.0,439.1 L948.5,438.7 L949.0,439.5 L949.5,438.6 L950.0,438.9 L950.5,439.8 L951.0,438.9 L951.5,439.6 L952.0,438.6 L952.5,439.6 L953.0,438.5 L953.5,439.8 L954.0,439.6 L954.5,438.9 L955.0,438.9 L955.5,438.9 L956.0,439.7 L956.5,439.2 L957.0,438.7 L957.5,439.5 L958.0,439.9 L958.5,439.9 L959.0,439.0 L959.5,438.5 L960.0,439.3 L960.5,439.7 L961.0,439.3 L961.5,439.7 L962.0,439.8 L962.5,439.4 L963.0,438.5 L963.5,439.1 L964.0,438.4 L964.5,439.4 L965.0,438.6 L965.5,439.3 L966.0,438.6 L966.5,438.2 L967.0,439.0 L967.5,439.2 L968.0,438.2 L968.5,438.1 L969.0,438.6 L969.5,439.1 L970.0,439.2 L970.5,439.0 L971.0,438.2 L971.5,438.0 L972.0,438.0 L972.5,437.8 L973.0,438.0 L973.5,439.1 L974.0,437.9 L974.5,438.3 L975.0,439.0 L975.5,438.9 L976.0,438.3 L976.5,437.4 L977.0,436.9 L977.5,437.2 L978.0,438.4 L978.5,437.7 L979.0,437.4 L979.5,436.6 L980.0,437.0 L980.5,436.7 L981.0,437.5 L981.5,436.2 L982.0,436.4 L982.5,436.5 L983.0,436.4 L983.5,435.4 L984.0,436.3 L984.5,435.0 L985.0,435.4 L985.5,436.7 L986.0,436.2 L986.5,436.3 L987.0,436.1 L987.5,434.8 L988.0,435.7 L988.5,435.8 L989.0,435.0 L989.5,436.8 L990.0,434.8 L990.5,435.4 L991.0,435.0 L991.5,434.9 L992.0,435.0 L992.5,436.4 L993.0,436.6 L993.5,436.8 L994.0,436.4 L994.5,435.6 L995.0,435.9 L995.5,435.3 L996.0,434.8 L996.5,436.1 L997.0,435.2 L997.5,436.5 L998.0,436.4 L998.5,435.9 L999.0,435.8 L999.5,436.4 L1000.0,434.5 L1000.5,435.4 L1001.0,434.5 L1001.5,435.8 L1002.0,436.0 L1002.5,435.0 L1003.0,436.7 L1003.5,436.5 L1004.0,434.7 L1004.5,434.5 L1005.0,434.9 L1005.5,436.5 L1006.0,434.8 L1006.5,435.7 L1007.0,434.7 L1007.5,435.1 L1008.0,435.9 L1008.5,436.3 L1009.0,435.0 L1009.5,436.1 L1010.0,435.5 L1010.5,436.4 L1011.0,435.2 L1011.5,436.4 L1012.0,435.4 L1012.5,435.9 L1013.0,435.3 L1013.5,435.8 L1014.0,436.4 L1014.5,436.2 L1015.0,435.7 L1015.5,436.3 L1016.0,436.3 L1016.5,435.0 L1017.0,434.6 L1017.5,435.1 L1018.0,436.2 L1018.5,436.3 L1019.0,434.4 L1019.5,434.6 L1020.0,435.1 L1020.5,435.9 L1021.0,436.1 L1021.5,436.2 L1022.0,436.6 L1022.5,436.4 L1023.0,435.5 L1023.5,435.2 L1024.0,435.3 L1024.5,435.0 L1025.0,435.7 L1025.5,434.6 L1026.0,435.8 L1026.5,436.1 L1027.0,434.3 L1027.5,435.2 L1028.0,434.4 L1028.5,434.7 L1029.0,435.3 L1029.5,434.8 L1030.0,434.4 L1030.5,436.2 L1031.0,435.8 L1031.5,436.3 L1032.0,435.1 L1032.5,434.7 L1033.0,435.0 L1033.5,435.6 L1034.0,435.6 L1034.5,435.2 L1035.0,435.2 L1035.5,436.3 L1036.0,434.1 L1036.5,434.7 L1037.0,436.0 L1037.5,435.7 L1038.0,435.8 L1038.5,434.7 L1039.0,435.6 L1039.5,435.7 L1040.0,434.8 L1040.5,435.3 L1041.0,434.9 L1041.5,435.8 L1042.0,434.5 L1042.5,434.7 L1043.0,434.8 L1043.5,436.2 L1044.0,434.9 L1044.5,436.1 L1045.0,436.4 L1045.5,434.2 L1046.0,436.0 L1046.5,436.3 L1047.0,435.3 L1047.5,434.3 L1048.0,436.1 L1048.5,434.8 L1049.0,434.4 L1049.5,435.6 L1050.0,435.9 L1050.5,435.7 L1051.0,436.2 L1051.5,436.4 L1052.0,436.4 L1052.5,436.5 L1053.0,437.0 L1053.5,436.6 L1054.0,437.0 L1054.5,437.4 L1055.0,437.6 L1055.5,436.1 L1056.0,437.7 L1056.5,436.6 L1057.0,438.0 L1057.5,437.5 L1058.0,438.1 L1058.5,438.2 L1059.0,437.2 L1059.5,438.8 L1060.0,438.5 L1060.5,439.0 L1061.0,438.3 L1061.5,438.3 L1062.0,437.6 L1062.5,438.7 L1063.0,438.9 L1063.5,438.4 L1064.0,437.6 L1064.5,438.0 L1065.0,438.8 L1065.5,439.1 L1066.0,438.0 L1066.5,437.5 L1067.0,439.0 L1067.5,438.4 L1068.0,437.7 L1068.5,439.1 L1069.0,439.0 L1069.5,438.8 L1070.0,438.9 L1070.5,438.0 L1071.0,437.5 L1071.5,437.8 L1072.0,439.1 L1072.5,438.1 L1073.0,437.9 L1073.5,437.7 L1074.0,437.6 L1074.5,438.5 L1075.0,439.0 L1075.5,437.7 L1076.0,438.1 L1076.5,437.7 L1077.0,437.9 L1077.5,438.8 L1078.0,439.0 L1078.5,439.2 L1079.0,438.6 L1079.5,438.9 L1080.0,437.8 L1080.5,437.7 L1081.0,438.3 L1081.5,438.0 L1082.0,438.8 L1082.5,437.9 L1083.0,439.1 L1083.5,439.0 L1084.0,438.2 L1084.5,438.4 L1085.0,438.5 L1085.5,437.7 L1086.0,438.5 L1086.5,439.0 L1087.0,438.9 L1087.5,439.0 L1088.0,438.9 L1088.5,438.7 L1089.0,439.3 L1089.5,439.3 L1090.0,438.3 L1090.5,439.3 L1091.0,438.6 L1091.5,438.0 L1092.0,437.9 L1092.5,439.3 L1093.0,439.1 L1093.5,438.3 L1094.0,439.3 L1094.5,438.9 L1095.0,439.0 L1095.5,438.7 L1096.0,438.0 L1096.5,439.1 L1097.0,439.2 L1097.5,438.1 L1098.0,438.0 L1098.5,438.9 L1099.0,438.8 L1099.5,439.3 L1100.0,439.2 L1100.5,439.3 L1101.0,438.6 L1101.5,437.8 L1102.0,439.0 L1102.5,438.6 L1103.0,438.2 L1103.5,438.7 L1104.0,438.2 L1104.5,437.4 L1105.0,437.4 L1105.5,437.5 L1106.0,438.0 L1106.5,436.7 L1107.0,438.0 L1107.5,436.3 L1108.0,438.0 L1108.5,436.7 L1109.0,436.2 L1109.5,436.5 L1110.0,436.4 L1110.5,436.8 L1111.0,435.5 L1111.5,436.0 L1112.0,436.3 L1112.5,436.1 L1113.0,436.5 L1113.5,436.0 L1114.0,435.0 L1114.5,435.8 L1115.0,434.1 L1115.5,436.2 L1116.0,434.7 L1116.5,435.1 L1117.0,435.5 L1117.5,435.2 L1118.0,434.0 L1118.5,434.4 L1119.0,433.4 L1119.5,434.6 L1120.0,433.6 L1120.5,432.9 L1121.0,433.5 L1121.5,435.0 L1122.0,433.3 L1122.5,433.2 L1123.0,434.8 L1123.5,434.0 L1124.0,434.7 L1124.5,434.4 L1125.0,435.3 L1125.5,435.3 L1126.0,435.6 L1126.5,433.4 L1127.0,433.8 L1127.5,435.3 L1128.0,435.3 L1128.5,433.9 L1129.0,434.2 L1129.5,433.9 L1130.0,434.3 L1130.5,435.5 L1131.0,433.6 L1131.5,433.9 L1132.0,435.2 L1132.5,435.0 L1133.0,435.6 L1133.5,435.3 L1134.0,433.1 L1134.5,435.4 L1135.0,435.3 L1135.5,434.9 L1136.0,435.6 L1136.5,435.2 L1137.0,435.2 L1137.5,434.5 L1138.0,433.4 L1138.5,434.7 L1139.0,433.1 L1139.5,435.0 L1140.0,434.7 L1140.5,435.1 L1141.0,433.7 L1141.5,433.9 L1142.0,433.3 L1142.5,433.8 L1143.0,435.1 L1143.5,434.3 L1144.0,433.7 L1144.5,433.1 L1145.0,433.6 L1145.5,435.5 L1146.0,435.5 L1146.5,435.7 L1147.0,435.0 L1147.5,435.6 L1148.0,433.4 L1148.5,433.2 L1149.0,435.4 L1149.5,433.2 L1150.0,435.0 L1150.5,434.0 L1151.0,435.6 L1151.5,435.2 L1152.0,433.3 L1152.5,434.6 L1153.0,435.7 L1153.5,435.3 L1154.0,435.4 L1154.5,434.8 L1155.0,433.7 L1155.5,434.2 L1156.0,433.3 L1156.5,433.9 L1157.0,434.1 L1157.5,433.9 L1158.0,434.0 L1158.5,435.5 L1159.0,433.2 L1159.5,435.6 L1160.0,434.9 L1160.5,433.9 L1161.0,434.4 L1161.5,434.5 L1162.0,435.2 L1162.5,433.7 L1163.0,433.7 L1163.5,435.7 L1164.0,433.3 L1164.5,435.3 L1165.0,433.7 L1165.5,434.3 L1166.0,433.9 L1166.5,434.1 L1167.0,435.2 L1167.5,434.7 L1168.0,434.7 L1168.5,435.8 L1169.0,435.6 L1169.5,434.2 L1170.0,433.6 L1170.5,435.0 L1171.0,434.2 L1171.5,435.1 L1172.0,433.5 L1172.5,434.6 L1173.0,434.7 L1173.5,433.9 L1174.0,434.8 L1174.5,434.5 L1175.0,435.8 L1175.5,434.2 L1176.0,435.4 L1176.5,435.8 L1177.0,434.9 L1177.5,435.7 L1178.0,434.1 L1178.5,434.2 L1179.0,435.6 L1179.5,435.7 L1180.0,434.4 L1180.5,435.0 L1181.0,434.3 L1181.5,435.7 L1182.0,433.6 L1182.5,435.0 L1183.0,435.1 L1183.5,433.7 L1184.0,434.4 L1184.5,435.2 L1185.0,435.3 L1185.5,433.8 L1186.0,434.2 L1186.5,434.8 L1187.0,434.5 L1187.5,433.6 L1188.0,435.5 L1188.5,435.4 L1189.0,435.6 L1189.5,434.9 L1190.0,434.9 L1190.5,434.7 L1191.0,435.0 L1191.5,433.7 L1192.0,435.0 L1192.5,435.8 L1193.0,434.6 L1193.5,435.3 L1194.0,435.6 L1194.5,434.7 L1195.0,435.7 L1195.5,435.4 L1196.0,435.5 L1196.5,434.1 L1197.0,434.0 L1197.5,434.3 L1198.0,435.6 L1198.5,434.5 L1199.0,433.6 L1199.5,434.1 L1200.0,435.3 L1200.5,434.2 L1201.0,434.2 L1201.5,436.0 L1202.0,435.4 L1202.5,434.1 L1203.0,433.6 L1203.5,436.1 L1204.0,434.4 L1204.5,434.8 L1205.0,434.8 L1205.5,434.0 L1206.0,436.0 L1206.5,435.6 L1207.0,435.0 L1207.5,434.9 L1208.0,433.7 L1208.5,435.3 L1209.0,433.6 L1209.5,434.1 L1210.0,433.8 L1210.5,435.1 L1211.0,433.6 L1211.5,434.4 L1212.0,433.7 L1212.5,434.7 L1213.0,434.8 L1213.5,434.7 L1214.0,434.8 L1214.5,435.7 L1215.0,434.4 L1215.5,433.6 L1216.0,434.7 L1216.5,435.8 L1217.0,434.8 L1217.5,434.4 L1218.0,434.9 L1218.5,433.6 L1219.0,433.6 L1219.5,434.4 L1220.0,434.0 L1220.5,435.4 L1221.0,434.5 L1221.5,435.7 L1222.0,435.8 L1222.5,434.5 L1223.0,436.1 L1223.5,435.2 L1224.0,435.0 L1224.5,435.0 L1225.0,434.4 L1225.5,434.5 L1226.0,434.3 L1226.5,434.5 L1227.0,434.4 L1227.5,434.3 L1228.0,434.3 L1228.5,434.8 L1229.0,435.1 L1229.5,434.0 L1230.0,435.3 L1230.5,435.3 L1231.0,434.4 L1231.5,435.2 L1232.0,435.1 L1232.5,435.9 L1233.0,435.0 L1233.5,435.3 L1234.0,435.1 L1234.5,435.5 L1235.0,435.4 L1235.5,435.6 L1236.0,436.0 L1236.5,435.5 L1237.0,435.0 L1237.5,434.7 L1238.0,435.7 L1238.5,435.8 L1239.0,435.3 L1239.5,435.9 L1240.0,434.8 L1240.5,436.0 L1241.0,435.9 L1241.5,434.0 L1242.0,435.6 L1242.5,434.2 L1243.0,434.2 L1243.5,434.6 L1244.0,436.1 L1244.5,434.3 L1245.0,433.9 L1245.5,433.9 L1246.0,434.0 L1246.5,434.0 L1247.0,433.9 L1247.5,435.0 L1248.0,435.0 L1248.5,436.2 L1249.0,435.6 L1249.5,436.0 L1250.0,436.1 L1250.5,436.1 L1251.0,435.2 L1251.5,433.9 L1252.0,434.8 L1252.5,434.3 L1253.0,435.9 L1253.5,434.5 L1254.0,435.4 L1254.5,435.0 L1255.0,435.2 L1255.5,434.1 L1256.0,434.2 L1256.5,435.6 L1257.0,436.1 L1257.5,435.5 L1258.0,434.5 L1258.5,434.0 L1259.0,435.1 L1259.5,435.2 L1260.0,435.3 L1260.5,434.4 L1261.0,436.2 L1261.5,434.5 L1262.0,434.0 L1262.5,435.1 L1263.0,434.3 L1263.5,436.1 L1264.0,435.0 L1264.5,435.1 L1265.0,435.2 L1265.5,434.4 L1266.0,436.0 L1266.5,434.1 L1267.0,435.0 L1267.5,435.9 L1268.0,436.0 L1268.5,435.5 L1269.0,435.8 L1269.5,436.3 L1270.0,436.2 L1270.5,435.4 L1271.0,435.0 L1271.5,435.5 L1272.0,435.8 L1272.5,435.2 L1273.0,435.9 L1273.5,436.4 L1274.0,436.7 L1274.5,436.3 L1275.0,435.6 L1275.5,436.5 L1276.0,437.4 L1276.5,437.1 L1277.0,436.0 L1277.5,436.3 L1278.0,436.7 L1278.5,436.8 L1279.0,436.9 L1279.5,437.4 L1280.0,436.9 L1280.5,437.3 L1281.0,437.3 L1281.5,438.3 L1282.0,437.9 L1282.5,438.8 L1283.0,440.0 L1283.5,440.2 L1284.0,440.2 L1284.5,440.6 L1285.0,441.0 L1285.5,440.6 L1286.0,440.8 L1286.5,440.5 L1287.0,440.3 L1287.5,440.0 L1288.0,440.0 L1288.5,439.8 L1289.0,440.2 L1289.5,440.5 L1290.0,439.9 L1290.5,439.4 L1291.0,439.3 L1291.5,440.2 L1292.0,439.4 L1292.5,439.6 L1293.0,439.9 L1293.5,439.8 L1294.0,439.8 L1294.5,440.1 L1295.0,440.0 L1295.5,439.6 L1296.0,439.4 L1296.5,439.3 L1297.0,439.5 L1297.5,439.4 L1298.0,440.3 L1298.5,439.9 L1299.0,439.7 L1299.5,439.9 L1300.0,440.1 L1300.5,439.5 L1301.0,439.4 L1301.5,439.8 L1302.0,439.7 L1302.5,440.2 L1303.0,439.5 L1303.5,439.8 L1304.0,439.1 L1304.5,440.0 L1305.0,439.8 L1305.5,439.2 L1306.0,439.7 L1306.5,439.4 L1307.0,439.4 L1307.5,439.4 L1308.0,439.1 L1308.5,440.2 L1309.0,439.2 L1309.5,440.3 L1310.0,440.2 L1310.0,449.2 L1309.5,449.1 L1309.0,450.2 L1308.5,449.2 L1308.0,450.3 L1307.5,450.0 L1307.0,450.0 L1306.5,450.0 L1306.0,449.7 L1305.5,450.2 L1305.0,449.6 L1304.5,449.4 L1304.0,450.3 L1303.5,449.6 L1303.0,449.9 L1302.5,449.2 L1302.0,449.7 L1301.5,449.6 L1301.0,450.0 L1300.5,449.9 L1300.0,449.3 L1299.5,449.5 L1299.0,449.7 L1298.5,449.5 L1298.0,449.1 L1297.5,450.0 L1297.0,449.9 L1296.5,450.1 L1296.0,450.0 L1295.5,449.8 L1295.0,449.4 L1294.5,449.3 L1294.0,449.6 L1293.5,449.6 L1293.0,449.5 L1292.5,449.8 L1292.0,450.0 L1291.5,449.2 L1291.0,450.1 L1290.5,450.0 L1290.0,449.5 L1289.5,448.9 L1289.0,449.2 L1288.5,449.6 L1288.0,449.4 L1287.5,449.4 L1287.0,449.1 L1286.5,448.9 L1286.0,448.6 L1285.5,448.8 L1285.0,448.4 L1284.5,448.8 L1284.0,449.2 L1283.5,449.2 L1283.0,449.4 L1282.5,450.6 L1282.0,451.5 L1281.5,451.1 L1281.0,452.1 L1280.5,452.1 L1280.0,452.5 L1279.5,452.0 L1279.0,452.5 L1278.5,452.6 L1278.0,452.7 L1277.5,453.1 L1277.0,453.4 L1276.5,452.3 L1276.0,452.0 L1275.5,452.9 L1275.0,453.8 L1274.5,453.1 L1274.0,452.7 L1273.5,453.0 L1273.0,453.5 L1272.5,454.2 L1272.0,453.6 L1271.5,453.9 L1271.0,454.4 L1270.5,454.0 L1270.0,453.2 L1269.5,453.1 L1269.0,453.6 L1268.5,453.9 L1268.0,453.4 L1267.5,453.5 L1267.0,454.4 L1266.5,455.3 L1266.0,453.4 L1265.5,455.0 L1265.0,454.2 L1264.5,454.3 L1264.0,454.4 L1263.5,453.3 L1263.0,455.1 L1262.5,454.3 L1262.0,455.4 L1261.5,454.9 L1261.0,453.2 L1260.5,455.0 L1260.0,454.1 L1259.5,454.2 L1259.0,454.3 L1258.5,455.4 L1258.0,454.9 L1257.5,453.9 L1257.0,453.3 L1256.5,453.8 L1256.0,455.2 L1255.5,455.3 L1255.0,454.2 L1254.5,454.4 L1254.0,454.0 L1253.5,454.9 L1253.0,453.5 L1252.5,455.1 L1252.0,454.6 L1251.5,455.5 L1251.0,454.2 L1250.5,453.3 L1250.0,453.3 L1249.5,453.4 L1249.0,453.8 L1248.5,453.2 L1248.0,454.4 L1247.5,454.4 L1247.0,455.5 L1246.5,455.4 L1246.0,455.4 L1245.5,455.5 L1245.0,455.5 L1244.5,455.1 L1244.0,453.3 L1243.5,454.8 L1243.0,455.2 L1242.5,455.2 L1242.0,453.8 L1241.5,455.4 L1241.0,453.5 L1240.5,453.4 L1240.0,454.6 L1239.5,453.5 L1239.0,454.1 L1238.5,453.6 L1238.0,453.7 L1237.5,454.7 L1237.0,454.4 L1236.5,453.9 L1236.0,453.4 L1235.5,453.8 L1235.0,454.0 L1234.5,453.9 L1234.0,454.3 L1233.5,454.1 L1233.0,454.4 L1232.5,453.5 L1232.0,454.3 L1231.5,454.2 L1231.0,455.0 L1230.5,454.1 L1230.0,454.1 L1229.5,455.4 L1229.0,454.3 L1228.5,454.6 L1228.0,455.1 L1227.5,455.1 L1227.0,455.0 L1226.5,454.9 L1226.0,455.1 L1225.5,454.9 L1225.0,455.0 L1224.5,454.4 L1224.0,454.4 L1223.5,454.2 L1223.0,453.3 L1222.5,454.9 L1222.0,453.6 L1221.5,453.7 L1221.0,454.9 L1220.5,454.0 L1220.0,455.4 L1219.5,455.0 L1219.0,455.8 L1218.5,455.8 L1218.0,454.5 L1217.5,455.0 L1217.0,454.6 L1216.5,453.6 L1216.0,454.7 L1215.5,455.8 L1215.0,455.0 L1214.5,453.7 L1214.0,454.6 L1213.5,454.7 L1213.0,454.6 L1212.5,454.7 L1212.0,455.7 L1211.5,455.0 L1211.0,455.8 L1210.5,454.3 L1210.0,455.6 L1209.5,455.3 L1209.0,455.8 L1208.5,454.1 L1208.0,455.7 L1207.5,454.5 L1207.0,454.4 L1206.5,453.8 L1206.0,453.4 L1205.5,455.4 L1205.0,454.6 L1204.5,454.6 L1204.0,455.0 L1203.5,453.3 L1203.0,455.8 L1202.5,455.3 L1202.0,454.0 L1201.5,453.4 L1201.0,455.2 L1200.5,455.2 L1200.0,454.1 L1199.5,455.3 L1199.0,455.8 L1198.5,454.9 L1198.0,453.8 L1197.5,455.1 L1197.0,455.4 L1196.5,455.3 L1196.0,453.9 L1195.5,454.0 L1195.0,453.7 L1194.5,454.7 L1194.0,453.8 L1193.5,454.1 L1193.0,454.8 L1192.5,453.6 L1192.0,454.4 L1191.5,455.7 L1191.0,454.4 L1190.5,454.7 L1190.0,454.5 L1189.5,454.5 L1189.0,453.8 L1188.5,454.0 L1188.0,453.9 L1187.5,455.8 L1187.0,454.9 L1186.5,454.6 L1186.0,455.2 L1185.5,455.6 L1185.0,454.1 L1184.5,454.2 L1184.0,455.0 L1183.5,455.7 L1183.0,454.3 L1182.5,454.4 L1182.0,455.8 L1181.5,453.7 L1181.0,455.1 L1180.5,454.4 L1180.0,455.0 L1179.5,453.7 L1179.0,453.8 L1178.5,455.2 L1178.0,455.3 L1177.5,453.7 L1177.0,454.5 L1176.5,453.6 L1176.0,454.0 L1175.5,455.2 L1175.0,453.6 L1174.5,454.9 L1174.0,454.6 L1173.5,455.5 L1173.0,454.7 L1172.5,454.8 L1172.0,455.9 L1171.5,454.3 L1171.0,455.2 L1170.5,454.4 L1170.0,455.8 L1169.5,455.2 L1169.0,453.8 L1168.5,453.6 L1168.0,454.7 L1167.5,454.7 L1167.0,454.2 L1166.5,455.3 L1166.0,455.5 L1165.5,455.1 L1165.0,455.7 L1164.5,454.1 L1164.0,456.1 L1163.5,453.7 L1163.0,455.7 L1162.5,455.7 L1162.0,454.2 L1161.5,454.9 L1161.0,455.0 L1160.5,455.5 L1160.0,454.5 L1159.5,453.8 L1159.0,456.2 L1158.5,453.9 L1158.0,455.4 L1157.5,455.5 L1157.0,455.3 L1156.5,455.5 L1156.0,456.1 L1155.5,455.2 L1155.0,455.7 L1154.5,454.6 L1154.0,454.0 L1153.5,454.1 L1153.0,453.7 L1152.5,454.8 L1152.0,456.1 L1151.5,454.2 L1151.0,453.8 L1150.5,455.4 L1150.0,454.4 L1149.5,456.2 L1149.0,454.0 L1148.5,456.2 L1148.0,456.0 L1147.5,453.8 L1147.0,454.4 L1146.5,453.7 L1146.0,453.9 L1145.5,453.9 L1145.0,455.8 L1144.5,456.3 L1144.0,455.7 L1143.5,455.1 L1143.0,454.3 L1142.5,455.6 L1142.0,456.1 L1141.5,455.5 L1141.0,455.7 L1140.5,454.3 L1140.0,454.7 L1139.5,454.4 L1139.0,456.3 L1138.5,454.7 L1138.0,456.0 L1137.5,454.9 L1137.0,454.2 L1136.5,454.2 L1136.0,453.8 L1135.5,454.5 L1135.0,454.1 L1134.5,454.0 L1134.0,456.3 L1133.5,454.1 L1133.0,453.8 L1132.5,454.4 L1132.0,454.2 L1131.5,455.5 L1131.0,455.8 L1130.5,453.9 L1130.0,455.1 L1129.5,455.5 L1129.0,455.2 L1128.5,455.5 L1128.0,454.1 L1127.5,454.1 L1127.0,455.6 L1126.5,456.0 L1126.0,453.8 L1125.5,454.1 L1125.0,454.1 L1124.5,455.0 L1124.0,454.7 L1123.5,455.4 L1123.0,454.6 L1122.5,456.2 L1122.0,456.1 L1121.5,454.4 L1121.0,455.9 L1120.5,456.5 L1120.0,455.8 L1119.5,454.8 L1119.0,456.0 L1118.5,455.0 L1118.0,455.4 L1117.5,454.2 L1117.0,453.9 L1116.5,454.3 L1116.0,454.7 L1115.5,453.2 L1115.0,455.3 L1114.5,453.6 L1114.0,454.4 L1113.5,453.4 L1113.0,452.9 L1112.5,453.3 L1112.0,453.1 L1111.5,453.4 L1111.0,453.9 L1110.5,452.6 L1110.0,453.0 L1109.5,452.9 L1109.0,453.2 L1108.5,452.7 L1108.0,451.4 L1107.5,453.1 L1107.0,451.4 L1106.5,452.7 L1106.0,451.4 L1105.5,451.9 L1105.0,452.0 L1104.5,452.0 L1104.0,451.2 L1103.5,450.7 L1103.0,451.2 L1102.5,450.8 L1102.0,450.4 L1101.5,451.6 L1101.0,450.8 L1100.5,450.1 L1100.0,450.2 L1099.5,450.1 L1099.0,450.6 L1098.5,450.5 L1098.0,451.4 L1097.5,451.3 L1097.0,450.2 L1096.5,450.3 L1096.0,451.4 L1095.5,450.7 L1095.0,450.4 L1094.5,450.5 L1094.0,450.1 L1093.5,451.1 L1093.0,450.3 L1092.5,450.1 L1092.0,451.5 L1091.5,451.4 L1091.0,450.8 L1090.5,450.1 L1090.0,451.1 L1089.5,450.1 L1089.0,450.1 L1088.5,450.7 L1088.0,450.5 L1087.5,450.4 L1087.0,450.5 L1086.5,450.4 L1086.0,450.9 L1085.5,451.7 L1085.0,450.9 L1084.5,451.0 L1084.0,451.2 L1083.5,450.4 L1083.0,450.3 L1082.5,451.5 L1082.0,450.6 L1081.5,451.4 L1081.0,451.1 L1080.5,451.7 L1080.0,451.6 L1079.5,450.5 L1079.0,450.8 L1078.5,450.2 L1078.0,450.4 L1077.5,450.6 L1077.0,451.5 L1076.5,451.7 L1076.0,451.3 L1075.5,451.7 L1075.0,450.4 L1074.5,450.9 L1074.0,451.8 L1073.5,451.7 L1073.0,451.5 L1072.5,451.3 L1072.0,450.3 L1071.5,451.6 L1071.0,451.9 L1070.5,451.4 L1070.0,450.5 L1069.5,450.6 L1069.0,450.4 L1068.5,450.3 L1068.0,451.7 L1067.5,451.0 L1067.0,450.4 L1066.5,451.9 L1066.0,451.4 L1065.5,450.3 L1065.0,450.6 L1064.5,451.4 L1064.0,451.8 L1063.5,451.0 L1063.0,450.5 L1062.5,450.7 L1062.0,451.8 L1061.5,451.1 L1061.0,451.1 L1060.5,450.4 L1060.0,450.9 L1059.5,450.6 L1059.0,452.2 L1058.5,451.2 L1058.0,451.3 L1057.5,451.9 L1057.0,451.4 L1056.5,452.8 L1056.0,451.7 L1055.5,453.3 L1055.0,451.8 L1054.5,452.0 L1054.0,452.4 L1053.5,452.8 L1053.0,452.4 L1052.5,452.9 L1052.0,453.0 L1051.5,453.0 L1051.0,453.2 L1050.5,453.7 L1050.0,453.5 L1049.5,453.8 L1049.0,455.0 L1048.5,454.6 L1048.0,453.3 L1047.5,455.1 L1047.0,454.1 L1046.5,453.1 L1046.0,453.4 L1045.5,455.2 L1045.0,453.0 L1044.5,453.3 L1044.0,454.5 L1043.5,453.2 L1043.0,454.6 L1042.5,454.7 L1042.0,454.9 L1041.5,453.6 L1041.0,454.5 L1040.5,454.1 L1040.0,454.6 L1039.5,453.7 L1039.0,453.8 L1038.5,454.7 L1038.0,453.6 L1037.5,453.7 L1037.0,453.4 L1036.5,454.7 L1036.0,455.3 L1035.5,453.1 L1035.0,454.2 L1034.5,454.2 L1034.0,453.8 L1033.5,453.8 L1033.0,454.4 L1032.5,454.7 L1032.0,454.3 L1031.5,453.1 L1031.0,453.6 L1030.5,453.2 L1030.0,455.0 L1029.5,454.6 L1029.0,454.1 L1028.5,454.7 L1028.0,455.0 L1027.5,454.2 L1027.0,455.1 L1026.5,453.3 L1026.0,453.6 L1025.5,454.8 L1025.0,453.7 L1024.5,454.4 L1024.0,454.1 L1023.5,454.2 L1023.0,453.9 L1022.5,453.0 L1022.0,452.8 L1021.5,453.2 L1021.0,453.3 L1020.5,453.5 L1020.0,454.3 L1019.5,454.8 L1019.0,455.0 L1018.5,453.1 L1018.0,453.2 L1017.5,454.3 L1017.0,454.8 L1016.5,454.4 L1016.0,453.1 L1015.5,453.1 L1015.0,453.7 L1014.5,453.2 L1014.0,453.0 L1013.5,453.6 L1013.0,454.1 L1012.5,453.5 L1012.0,454.0 L1011.5,453.0 L1011.0,454.2 L1010.5,453.0 L1010.0,453.9 L1009.5,453.3 L1009.0,454.4 L1008.5,453.1 L1008.0,453.5 L1007.5,454.3 L1007.0,454.7 L1006.5,453.7 L1006.0,454.6 L1005.5,452.9 L1005.0,454.5 L1004.5,454.9 L1004.0,454.7 L1003.5,452.9 L1003.0,452.7 L1002.5,454.4 L1002.0,453.4 L1001.5,453.6 L1001.0,454.9 L1000.5,454.0 L1000.0,454.9 L999.5,453.0 L999.0,453.6 L998.5,453.5 L998.0,453.0 L997.5,452.9 L997.0,454.2 L996.5,453.3 L996.0,454.6 L995.5,454.1 L995.0,453.5 L994.5,453.8 L994.0,453.0 L993.5,452.6 L993.0,452.8 L992.5,453.0 L992.0,454.4 L991.5,454.5 L991.0,454.4 L990.5,454.0 L990.0,454.6 L989.5,452.6 L989.0,454.4 L988.5,453.6 L988.0,453.7 L987.5,454.6 L987.0,453.3 L986.5,453.1 L986.0,453.2 L985.5,452.7 L985.0,454.0 L984.5,454.4 L984.0,453.1 L983.5,454.0 L983.0,453.0 L982.5,452.9 L982.0,453.0 L981.5,453.2 L981.0,451.9 L980.5,452.7 L980.0,452.4 L979.5,452.8 L979.0,452.0 L978.5,451.7 L978.0,451.0 L977.5,452.2 L977.0,452.5 L976.5,452.0 L976.0,451.1 L975.5,450.5 L975.0,450.4 L974.5,451.1 L974.0,451.5 L973.5,450.3 L973.0,451.4 L972.5,451.6 L972.0,451.4 L971.5,451.4 L971.0,451.2 L970.5,450.4 L970.0,450.2 L969.5,450.3 L969.0,450.8 L968.5,451.3 L968.0,451.2 L967.5,450.2 L967.0,450.4 L966.5,451.2 L966.0,450.8 L965.5,450.1 L965.0,450.8 L964.5,450.0 L964.0,451.0 L963.5,450.3 L963.0,450.9 L962.5,450.0 L962.0,449.6 L961.5,449.7 L961.0,450.1 L960.5,449.7 L960.0,450.1 L959.5,450.9 L959.0,450.4 L958.5,449.5 L958.0,449.5 L957.5,449.9 L957.0,450.7 L956.5,450.2 L956.0,449.7 L955.5,450.5 L955.0,450.5 L954.5,450.5 L954.0,449.8 L953.5,449.6 L953.0,450.9 L952.5,449.8 L952.0,450.8 L951.5,449.8 L951.0,450.5 L950.5,449.6 L950.0,450.5 L949.5,450.8 L949.0,449.9 L948.5,450.7 L948.0,450.3 L947.5,449.9 L947.0,450.4 L946.5,450.7 L946.0,450.1 L945.5,450.7 L945.0,450.4 L944.5,449.5 L944.0,449.8 L943.5,450.6 L943.0,449.7 L942.5,450.0 L942.0,450.7 L941.5,450.8 L941.0,450.6 L940.5,449.9 L940.0,450.4 L939.5,449.7 L939.0,450.0 L938.5,450.5 L938.0,449.9 L937.5,450.4 L937.0,449.6 L936.5,450.6 L936.0,450.6 L935.5,450.5 L935.0,450.3 L934.5,449.6 L934.0,450.0 L933.5,450.4 L933.0,450.1 L932.5,449.7 L932.0,450.3 L931.5,450.9 L931.0,449.8 L930.5,449.7 L930.0,450.0 L929.5,449.6 L929.0,449.6 L928.5,450.8 L928.0,450.7 L927.5,450.6 L927.0,449.7 L926.5,450.6 L926.0,450.2 L925.5,450.8 L925.0,450.2 L924.5,450.1 L924.0,450.7 L923.5,450.1 L923.0,449.9 L922.5,450.5 L922.0,450.3 L921.5,450.7 L921.0,450.3 L920.5,450.8 L920.0,449.6 L919.5,450.4 L919.0,450.4 L918.5,450.8 L918.0,449.6 L917.5,450.8 L917.0,449.7 L916.5,449.7 L916.0,450.8 L915.5,450.3 L915.0,450.0 L914.5,450.3 L914.0,450.3 L913.5,450.8 L913.0,450.7 L912.5,450.2 L912.0,450.2 L911.5,450.9 L911.0,450.6 L910.5,450.7 L910.0,450.2 L909.5,449.7 L909.0,449.7 L908.5,449.7 L908.0,450.9 L907.5,449.9 L907.0,450.6 L906.5,450.4 L906.0,450.5 L905.5,450.4 L905.0,449.6 L904.5,450.3 L904.0,450.7 L903.5,449.8 L903.0,450.2 L902.5,450.9 L902.0,450.2 L901.5,450.3 L901.0,449.9 L900.5,450.8 L900.0,449.8 L899.5,450.0 L899.0,450.7 L898.5,450.7 L898.0,450.5 L897.5,449.9 L897.0,449.6 L896.5,450.7 L896.0,449.9 L895.5,450.3 L895.0,451.0 L894.5,450.6 L894.0,449.8 L893.5,449.9 L893.0,450.4 L892.5,450.3 L892.0,450.5 L891.5,450.5 L891.0,450.2 L890.5,451.0 L890.0,450.0 L889.5,450.3 L889.0,450.6 L888.5,450.2 L888.0,450.9 L887.5,450.1 L887.0,449.7 L886.5,450.4 L886.0,449.8 L885.5,449.6 L885.0,449.9 L884.5,451.0 L884.0,450.1 L883.5,450.4 L883.0,450.9 L882.5,450.6 L882.0,450.9 L881.5,451.1 L881.0,449.9 L880.5,449.8 L880.0,450.6 L879.5,451.0 L879.0,451.0 L878.5,450.1 L878.0,450.2 L877.5,450.5 L877.0,449.8 L876.5,450.7 L876.0,449.8 L875.5,451.1 L875.0,450.5 L874.5,450.0 L874.0,451.0 L873.5,450.9 L873.0,450.9 L872.5,450.0 L872.0,450.3 L871.5,449.8 L871.0,450.9 L870.5,450.3 L870.0,449.8 L869.5,450.5 L869.0,450.1 L868.5,450.4 L868.0,451.0 L867.5,451.2 L867.0,450.6 L866.5,450.5 L866.0,450.7 L865.5,450.2 L865.0,450.0 L864.5,450.5 L864.0,449.9 L863.5,450.4 L863.0,451.1 L862.5,449.9 L862.0,451.1 L861.5,450.2 L861.0,450.7 L860.5,450.1 L860.0,451.3 L859.5,450.4 L859.0,451.3 L858.5,450.2 L858.0,450.5 L857.5,450.2 L857.0,450.9 L856.5,451.4 L856.0,451.3 L855.5,451.4 L855.0,451.1 L854.5,450.8 L854.0,450.1 L853.5,451.1 L853.0,451.4 L852.5,449.9 L852.0,450.7 L851.5,450.7 L851.0,451.4 L850.5,447.2 L850.0,447.2 L849.5,447.2 L849.0,446.9 L848.5,447.3 L848.0,447.1 L847.5,447.0 L847.0,447.0 L846.5,447.1 L846.0,446.9 L845.5,447.0 L845.0,447.3 L844.5,447.3 L844.0,447.3 L843.5,447.1 L843.0,447.4 L842.5,448.1 L842.0,447.8 L841.5,448.3 L841.0,448.3 L840.5,448.4 L840.0,448.6 L839.5,446.8 L839.0,447.1 L838.5,447.0 L838.0,446.9 L837.5,447.2 L837.0,447.5 L836.5,447.3 L836.0,447.7 L835.5,447.5 L835.0,448.5 L834.5,448.2 L834.0,448.2 L833.5,448.9 L833.0,448.7 L832.5,446.6 L832.0,446.6 L831.5,447.1 L831.0,447.3 L830.5,446.9 L830.0,447.5 L829.5,447.6 L829.0,448.1 L828.5,448.0 L828.0,448.2 L827.5,448.4 L827.0,448.3 L826.5,448.9 L826.0,448.7 L825.5,446.1 L825.0,446.4 L824.5,447.0 L824.0,447.2 L823.5,447.2 L823.0,447.3 L822.5,447.3 L822.0,448.0 L821.5,448.0 L821.0,448.5 L820.5,448.9 L820.0,449.1 L819.5,448.8 L819.0,449.2 L818.5,445.1 L818.0,445.1 L817.5,445.1 L817.0,445.1 L816.5,445.1 L816.0,445.1 L815.5,445.1 L815.0,445.1 L814.5,445.1 L814.0,445.1 L813.5,445.1 L813.0,445.1 L812.5,445.1 L812.0,445.1 L811.5,445.1 L811.0,445.1 L810.5,445.1 L810.0,445.1 L809.5,445.1 L809.0,445.1 L808.5,445.1 L808.0,445.1 L807.5,445.1 L807.0,445.1 L806.5,445.1 L806.0,445.1 L805.5,445.1 L805.0,445.1 L804.5,445.1 L804.0,445.1 L803.5,445.1 L803.0,445.1 L802.5,445.1 L802.0,445.1 L801.5,445.1 L801.0,445.1 L800.5,445.1 L800.0,445.1 L799.5,445.1 L799.0,445.1 L798.5,445.1 L798.0,445.1 L797.5,445.1 L797.0,445.1 L796.5,445.1 L796.0,445.1 L795.5,445.1 L795.0,445.1 L794.5,445.1 L794.0,445.1 L793.5,445.1 L793.0,445.1 L792.5,445.1 L792.0,445.1 L791.5,445.1 L791.0,445.1 L790.5,445.1 L790.0,445.1 L789.5,445.1 L789.0,445.1 L788.5,445.1 L788.0,445.1 L787.5,445.1 L787.0,445.1 L786.5,445.1 L786.0,445.1 L785.5,445.1 L785.0,445.1 L784.5,445.1 L784.0,445.1 L783.5,445.1 L783.0,445.1 L782.5,445.1 L782.0,445.1 L781.5,445.1 L781.0,445.1 L780.5,445.1 L780.0,445.1 L779.5,445.1 L779.0,445.1 L778.5,445.1 L778.0,445.1 L777.5,445.1 L777.0,445.1 L776.5,445.1 L776.0,445.1 L775.5,445.1 L775.0,445.1 L774.5,445.1 L774.0,445.1 L773.5,445.1 L773.0,445.1 L772.5,445.1 L772.0,445.1 L771.5,445.1 L771.0,445.1 L770.5,445.1 L770.0,445.1 L769.5,445.1 L769.0,445.1 L768.5,445.1 L768.0,445.1 L767.5,445.1 L767.0,445.1 L766.5,445.1 L766.0,445.1 L765.5,445.1 L765.0,445.1 L764.5,445.1 L764.0,445.1 L763.5,445.1 L763.0,445.1 L762.5,445.1 L762.0,445.1 L761.5,445.1 L761.0,445.1 L760.5,445.1 L760.0,445.1 L759.5,445.1 L759.0,445.1 L758.5,445.1 L758.0,445.1 L757.5,445.1 L757.0,445.1 L756.5,445.1 L756.0,445.1 L755.5,445.1 L755.0,445.1 L754.5,445.1 L754.0,445.1 L753.5,445.1 L753.0,445.1 L752.5,445.1 L752.0,445.1 L751.5,445.1 L751.0,445.1 L750.5,445.1 L750.0,445.1 L749.5,445.1 L749.0,445.1 L748.5,445.1 L748.0,445.1 L747.5,445.1 L747.0,445.1 L746.5,445.1 L746.0,445.1 L745.5,445.1 L745.0,445.1 L744.5,445.1 L744.0,445.1 L743.5,445.1 L743.0,445.1 L742.5,445.1 L742.0,445.1 L741.5,445.1 L741.0,445.1Z" fill="#2b626d"/><path d="M741.0,502.7 L741.5,502.7 L742.0,502.7 L742.5,502.7 L743.0,502.7 L743.5,502.7 L744.0,502.7 L744.5,502.7 L745.0,502.7 L745.5,502.7 L746.0,502.7 L746.5,502.7 L747.0,502.7 L747.5,502.7 L748.0,502.7 L748.5,502.7 L749.0,502.7 L749.5,502.7 L750.0,502.7 L750.5,502.7 L751.0,502.7 L751.5,502.7 L752.0,502.7 L752.5,502.7 L753.0,502.7 L753.5,502.7 L754.0,502.7 L754.5,502.7 L755.0,502.7 L755.5,502.7 L756.0,502.7 L756.5,502.7 L757.0,502.7 L757.5,502.7 L758.0,502.7 L758.5,502.2 L759.0,501.8 L759.5,502.0 L760.0,502.2 L760.5,502.5 L761.0,502.7 L761.5,502.7 L762.0,502.7 L762.5,502.7 L763.0,502.7 L763.5,502.7 L764.0,502.7 L764.5,502.7 L765.0,502.7 L765.5,502.7 L766.0,502.7 L766.5,502.7 L767.0,502.7 L767.5,502.7 L768.0,502.7 L768.5,502.0 L769.0,501.3 L769.5,501.6 L770.0,502.1 L770.5,502.3 L771.0,502.6 L771.5,502.7 L772.0,502.7 L772.5,502.7 L773.0,502.7 L773.5,502.7 L774.0,502.7 L774.5,502.7 L775.0,502.7 L775.5,502.7 L776.0,502.7 L776.5,502.7 L777.0,502.7 L777.5,502.7 L778.0,502.7 L778.5,502.7 L779.0,502.7 L779.5,502.7 L780.0,502.7 L780.5,502.7 L781.0,502.7 L781.5,502.7 L782.0,502.7 L782.5,502.7 L783.0,502.7 L783.5,502.7 L784.0,502.7 L784.5,502.7 L785.0,502.7 L785.5,502.7 L786.0,502.7 L786.5,502.7 L787.0,502.7 L787.5,502.7 L788.0,502.7 L788.5,502.7 L789.0,502.7 L789.5,502.7 L790.0,502.7 L790.5,502.7 L791.0,502.7 L791.5,502.7 L792.0,502.7 L792.5,502.7 L793.0,502.7 L793.5,502.7 L794.0,502.7 L794.5,502.7 L795.0,502.7 L795.5,502.7 L796.0,502.7 L796.5,502.7 L797.0,502.7 L797.5,502.7 L798.0,502.7 L798.5,502.7 L799.0,502.7 L799.5,502.7 L800.0,502.7 L800.5,502.2 L801.0,501.3 L801.5,501.9 L802.0,502.0 L802.5,502.4 L803.0,502.7 L803.5,502.5 L804.0,502.2 L804.5,502.1 L805.0,502.0 L805.5,501.8 L806.0,501.5 L806.5,501.4 L807.0,501.4 L807.5,501.5 L808.0,501.5 L808.5,501.5 L809.0,501.5 L809.5,501.7 L810.0,501.4 L810.5,502.1 L811.0,502.7 L811.5,502.7 L812.0,502.7 L812.5,502.7 L813.0,502.7 L813.5,502.7 L814.0,502.7 L814.5,502.7 L815.0,502.7 L815.5,502.7 L816.0,502.7 L816.5,502.7 L817.0,502.7 L817.5,502.7 L818.0,502.7 L818.5,502.7 L819.0,502.7 L819.5,502.7 L820.0,502.7 L820.5,502.7 L821.0,502.7 L821.5,502.7 L822.0,502.7 L822.5,502.7 L823.0,502.7 L823.5,502.7 L824.0,502.7 L824.5,502.7 L825.0,502.7 L825.5,502.7 L826.0,502.7 L826.5,502.7 L827.0,502.7 L827.5,502.7 L828.0,502.7 L828.5,502.7 L829.0,502.7 L829.5,502.7 L830.0,502.7 L830.5,502.7 L831.0,502.7 L831.5,502.7 L832.0,502.7 L832.5,502.7 L833.0,502.7 L833.5,502.7 L834.0,502.7 L834.5,502.7 L835.0,502.7 L835.5,502.7 L836.0,502.7 L836.5,502.7 L837.0,502.7 L837.5,502.7 L838.0,502.7 L838.5,502.7 L839.0,502.7 L839.5,502.7 L840.0,502.7 L840.5,502.7 L841.0,502.7 L841.5,502.7 L842.0,502.7 L842.5,502.7 L843.0,502.7 L843.5,502.7 L844.0,502.7 L844.5,502.7 L845.0,502.7 L845.5,502.7 L846.0,502.7 L846.5,502.7 L847.0,502.7 L847.5,502.7 L848.0,502.7 L848.5,502.7 L849.0,502.7 L849.5,502.7 L850.0,502.7 L850.5,502.7 L851.0,502.7 L851.5,502.7 L852.0,502.7 L852.5,502.7 L853.0,502.7 L853.5,502.7 L854.0,502.7 L854.5,502.7 L855.0,502.7 L855.5,502.7 L856.0,502.7 L856.5,502.7 L857.0,502.7 L857.5,502.7 L858.0,502.7 L858.5,502.7 L859.0,502.7 L859.5,502.7 L860.0,502.7 L860.5,502.7 L861.0,502.7 L861.5,502.7 L862.0,502.7 L862.5,502.7 L863.0,502.7 L863.5,502.7 L864.0,502.7 L864.5,502.7 L865.0,502.7 L865.5,502.7 L866.0,502.7 L866.5,502.7 L867.0,502.7 L867.5,502.7 L868.0,502.7 L868.5,502.7 L869.0,502.7 L869.5,502.7 L870.0,502.7 L870.5,502.7 L871.0,502.7 L871.5,502.7 L872.0,502.7 L872.5,502.7 L873.0,502.7 L873.5,502.7 L874.0,502.7 L874.5,502.7 L875.0,502.7 L875.5,502.7 L876.0,502.7 L876.5,502.7 L877.0,502.7 L877.5,502.7 L878.0,502.7 L878.5,502.7 L879.0,502.7 L879.5,502.7 L880.0,502.7 L880.5,502.7 L881.0,502.7 L881.5,502.7 L882.0,502.7 L882.5,502.7 L883.0,502.7 L883.5,502.7 L884.0,502.7 L884.5,502.7 L885.0,502.7 L885.5,502.7 L886.0,502.7 L886.5,502.7 L887.0,502.7 L887.5,502.7 L888.0,502.7 L888.5,502.7 L889.0,502.7 L889.5,502.7 L890.0,502.7 L890.5,502.7 L891.0,502.7 L891.5,502.7 L892.0,502.7 L892.5,501.9 L893.0,501.3 L893.5,501.3 L894.0,501.5 L894.5,501.4 L895.0,501.4 L895.5,501.4 L896.0,501.4 L896.5,501.4 L897.0,501.4 L897.5,501.4 L898.0,501.7 L898.5,501.4 L899.0,501.5 L899.5,501.7 L900.0,501.6 L900.5,501.5 L901.0,501.7 L901.5,501.4 L902.0,501.6 L902.5,501.6 L903.0,501.4 L903.5,501.5 L904.0,501.2 L904.5,501.4 L905.0,501.2 L905.5,501.4 L906.0,501.3 L906.5,501.5 L907.0,501.4 L907.5,501.1 L908.0,501.5 L908.5,501.5 L909.0,501.3 L909.5,501.5 L910.0,501.5 L910.5,501.5 L911.0,501.4 L911.5,501.5 L912.0,501.5 L912.5,501.5 L913.0,501.6 L913.5,501.6 L914.0,501.3 L914.5,501.5 L915.0,501.5 L915.5,501.5 L916.0,501.5 L916.5,501.6 L917.0,501.5 L917.5,501.7 L918.0,501.5 L918.5,502.2 L919.0,502.7 L919.5,502.7 L920.0,502.7 L920.5,502.7 L921.0,502.7 L921.5,502.7 L922.0,502.7 L922.5,502.7 L923.0,502.7 L923.5,502.7 L924.0,502.7 L924.5,502.7 L925.0,502.7 L925.5,502.7 L926.0,502.7 L926.5,502.7 L927.0,502.7 L927.5,502.7 L928.0,502.7 L928.5,502.7 L929.0,502.7 L929.5,502.7 L930.0,502.7 L930.5,502.7 L931.0,502.7 L931.5,502.7 L932.0,502.7 L932.5,502.7 L933.0,502.7 L933.5,502.7 L934.0,502.7 L934.5,502.7 L935.0,502.7 L935.5,502.7 L936.0,502.7 L936.5,502.7 L937.0,502.7 L937.5,502.7 L938.0,502.7 L938.5,502.7 L939.0,502.7 L939.5,502.7 L940.0,502.7 L940.5,502.7 L941.0,502.7 L941.5,502.7 L942.0,502.7 L942.5,502.7 L943.0,502.7 L943.5,502.7 L944.0,502.7 L944.5,502.7 L945.0,502.7 L945.5,502.7 L946.0,502.7 L946.5,502.7 L947.0,502.7 L947.5,502.7 L948.0,502.7 L948.5,502.0 L949.0,500.9 L949.5,501.0 L950.0,501.2 L950.5,501.3 L951.0,501.3 L951.5,501.1 L952.0,501.1 L952.5,501.2 L953.0,501.3 L953.5,501.4 L954.0,501.3 L954.5,501.2 L955.0,501.4 L955.5,501.5 L956.0,501.5 L956.5,501.5 L957.0,501.4 L957.5,501.5 L958.0,501.3 L958.5,502.0 L959.0,502.5 L959.5,502.5 L960.0,502.4 L960.5,502.4 L961.0,502.3 L961.5,502.3 L962.0,502.2 L962.5,502.2 L963.0,502.3 L963.5,502.0 L964.0,502.2 L964.5,501.9 L965.0,502.0 L965.5,502.0 L966.0,501.8 L966.5,501.8 L967.0,501.6 L967.5,501.6 L968.0,501.6 L968.5,501.4 L969.0,501.3 L969.5,501.2 L970.0,501.5 L970.5,501.3 L971.0,501.1 L971.5,501.3 L972.0,501.2 L972.5,500.9 L973.0,500.9 L973.5,500.6 L974.0,500.9 L974.5,500.9 L975.0,500.4 L975.5,500.5 L976.0,500.5 L976.5,500.7 L977.0,500.8 L977.5,500.8 L978.0,500.3 L978.5,500.2 L979.0,500.6 L979.5,500.8 L980.0,500.4 L980.5,500.6 L981.0,500.8 L981.5,500.3 L982.0,500.5 L982.5,500.5 L983.0,500.8 L983.5,500.6 L984.0,500.8 L984.5,500.8 L985.0,500.7 L985.5,500.8 L986.0,500.5 L986.5,501.3 L987.0,501.7 L987.5,502.1 L988.0,502.5 L988.5,502.5 L989.0,502.5 L989.5,502.5 L990.0,502.5 L990.5,502.4 L991.0,502.5 L991.5,502.5 L992.0,502.5 L992.5,502.5 L993.0,502.4 L993.5,502.5 L994.0,502.4 L994.5,502.4 L995.0,502.4 L995.5,502.4 L996.0,502.4 L996.5,502.4 L997.0,502.5 L997.5,502.5 L998.0,502.5 L998.5,502.5 L999.0,502.5 L999.5,502.5 L1000.0,502.4 L1000.5,502.4 L1001.0,502.5 L1001.5,502.4 L1002.0,502.4 L1002.5,502.4 L1003.0,502.4 L1003.5,502.4 L1004.0,502.4 L1004.5,502.5 L1005.0,502.5 L1005.5,502.4 L1006.0,502.5 L1006.5,502.5 L1007.0,502.5 L1007.5,502.5 L1008.0,502.5 L1008.5,502.5 L1009.0,502.5 L1009.5,502.4 L1010.0,502.5 L1010.5,502.5 L1011.0,502.4 L1011.5,502.5 L1012.0,502.5 L1012.5,502.5 L1013.0,502.4 L1013.5,502.5 L1014.0,502.5 L1014.5,502.4 L1015.0,502.4 L1015.5,502.5 L1016.0,502.5 L1016.5,502.5 L1017.0,502.4 L1017.5,502.4 L1018.0,502.5 L1018.5,502.5 L1019.0,502.5 L1019.5,502.4 L1020.0,502.5 L1020.5,502.5 L1021.0,502.4 L1021.5,502.4 L1022.0,502.4 L1022.5,502.4 L1023.0,502.4 L1023.5,502.4 L1024.0,502.5 L1024.5,502.5 L1025.0,502.5 L1025.5,502.4 L1026.0,502.4 L1026.5,502.5 L1027.0,502.4 L1027.5,502.5 L1028.0,502.4 L1028.5,502.4 L1029.0,502.5 L1029.5,502.5 L1030.0,502.5 L1030.5,502.5 L1031.0,502.4 L1031.5,502.5 L1032.0,502.4 L1032.5,502.5 L1033.0,502.4 L1033.5,502.4 L1034.0,502.4 L1034.5,502.4 L1035.0,502.4 L1035.5,502.5 L1036.0,502.5 L1036.5,502.5 L1037.0,502.5 L1037.5,502.5 L1038.0,502.5 L1038.5,502.4 L1039.0,502.5 L1039.5,502.5 L1040.0,502.5 L1040.5,502.5 L1041.0,502.5 L1041.5,502.4 L1042.0,502.4 L1042.5,502.5 L1043.0,502.5 L1043.5,502.4 L1044.0,502.5 L1044.5,502.5 L1045.0,502.4 L1045.5,502.5 L1046.0,502.4 L1046.5,502.5 L1047.0,502.5 L1047.5,502.4 L1048.0,502.4 L1048.5,502.5 L1049.0,502.5 L1049.5,502.4 L1050.0,502.5 L1050.5,502.4 L1051.0,502.4 L1051.5,502.5 L1052.0,502.5 L1052.5,502.5 L1053.0,502.4 L1053.5,502.5 L1054.0,502.5 L1054.5,502.5 L1055.0,502.4 L1055.5,502.4 L1056.0,502.4 L1056.5,502.4 L1057.0,502.5 L1057.5,502.5 L1058.0,502.5 L1058.5,502.4 L1059.0,502.4 L1059.5,502.5 L1060.0,502.4 L1060.5,502.5 L1061.0,502.5 L1061.5,502.5 L1062.0,502.4 L1062.5,502.4 L1063.0,502.5 L1063.5,502.4 L1064.0,502.4 L1064.5,502.5 L1065.0,502.4 L1065.5,502.5 L1066.0,502.5 L1066.5,502.5 L1067.0,502.5 L1067.5,502.4 L1068.0,502.5 L1068.5,502.5 L1069.0,502.5 L1069.5,502.4 L1070.0,502.5 L1070.5,502.2 L1071.0,502.1 L1071.5,501.9 L1072.0,502.0 L1072.5,501.9 L1073.0,501.9 L1073.5,501.9 L1074.0,501.9 L1074.5,502.0 L1075.0,501.8 L1075.5,501.9 L1076.0,501.8 L1076.5,502.0 L1077.0,501.9 L1077.5,501.8 L1078.0,501.9 L1078.5,502.0 L1079.0,502.0 L1079.5,501.9 L1080.0,501.8 L1080.5,501.8 L1081.0,501.9 L1081.5,502.1 L1082.0,502.1 L1082.5,502.0 L1083.0,501.9 L1083.5,502.1 L1084.0,502.1 L1084.5,502.0 L1085.0,501.9 L1085.5,502.0 L1086.0,502.1 L1086.5,501.9 L1087.0,502.1 L1087.5,502.0 L1088.0,502.1 L1088.5,501.9 L1089.0,502.1 L1089.5,502.0 L1090.0,502.0 L1090.5,501.8 L1091.0,501.7 L1091.5,501.8 L1092.0,501.5 L1092.5,501.4 L1093.0,501.6 L1093.5,501.5 L1094.0,501.4 L1094.5,501.2 L1095.0,500.8 L1095.5,501.1 L1096.0,500.9 L1096.5,500.8 L1097.0,500.9 L1097.5,500.6 L1098.0,500.9 L1098.5,500.5 L1099.0,500.4 L1099.5,500.4 L1100.0,500.2 L1100.5,500.3 L1101.0,500.4 L1101.5,500.1 L1102.0,500.2 L1102.5,500.0 L1103.0,500.0 L1103.5,500.4 L1104.0,499.7 L1104.5,500.0 L1105.0,499.6 L1105.5,500.2 L1106.0,500.0 L1106.5,499.7 L1107.0,500.1 L1107.5,499.9 L1108.0,499.8 L1108.5,500.1 L1109.0,500.1 L1109.5,499.8 L1110.0,500.1 L1110.5,500.0 L1111.0,499.9 L1111.5,499.9 L1112.0,500.4 L1112.5,500.0 L1113.0,500.1 L1113.5,500.0 L1114.0,500.0 L1114.5,500.5 L1115.0,500.6 L1115.5,500.3 L1116.0,500.3 L1116.5,500.2 L1117.0,500.4 L1117.5,500.3 L1118.0,500.0 L1118.5,500.0 L1119.0,499.9 L1119.5,498.3 L1120.0,495.5 L1120.5,496.1 L1121.0,496.2 L1121.5,495.9 L1122.0,494.9 L1122.5,495.4 L1123.0,495.6 L1123.5,495.6 L1124.0,494.7 L1124.5,495.0 L1125.0,495.2 L1125.5,494.8 L1126.0,495.8 L1126.5,496.2 L1127.0,495.7 L1127.5,495.9 L1128.0,494.8 L1128.5,495.9 L1129.0,494.9 L1129.5,495.7 L1130.0,494.9 L1130.5,495.7 L1131.0,495.1 L1131.5,494.9 L1132.0,496.3 L1132.5,495.0 L1133.0,496.3 L1133.5,495.0 L1134.0,496.3 L1134.5,496.6 L1135.0,495.1 L1135.5,495.3 L1136.0,495.6 L1136.5,496.1 L1137.0,495.9 L1137.5,495.4 L1138.0,496.6 L1138.5,495.4 L1139.0,495.6 L1139.5,496.4 L1140.0,495.7 L1140.5,495.6 L1141.0,496.5 L1141.5,496.8 L1142.0,496.5 L1142.5,496.8 L1143.0,495.9 L1143.5,497.2 L1144.0,495.9 L1144.5,496.7 L1145.0,497.1 L1145.5,497.1 L1146.0,496.3 L1146.5,496.8 L1147.0,497.4 L1147.5,497.0 L1148.0,497.6 L1148.5,496.8 L1149.0,496.8 L1149.5,496.4 L1150.0,497.4 L1150.5,496.7 L1151.0,497.8 L1151.5,496.6 L1152.0,497.1 L1152.5,496.5 L1153.0,497.0 L1153.5,497.0 L1154.0,497.2 L1154.5,496.6 L1155.0,496.7 L1155.5,497.1 L1156.0,497.8 L1156.5,497.0 L1157.0,497.8 L1157.5,497.8 L1158.0,497.3 L1158.5,497.3 L1159.0,497.1 L1159.5,497.5 L1160.0,497.1 L1160.5,496.9 L1161.0,496.8 L1161.5,497.9 L1162.0,496.9 L1162.5,497.6 L1163.0,498.2 L1163.5,497.8 L1164.0,497.9 L1164.5,497.6 L1165.0,497.3 L1165.5,497.0 L1166.0,497.8 L1166.5,497.9 L1167.0,497.4 L1167.5,498.2 L1168.0,497.9 L1168.5,497.3 L1169.0,497.3 L1169.5,498.0 L1170.0,497.4 L1170.5,498.4 L1171.0,498.3 L1171.5,497.2 L1172.0,498.4 L1172.5,497.5 L1173.0,497.6 L1173.5,497.8 L1174.0,498.3 L1174.5,497.3 L1175.0,497.4 L1175.5,498.2 L1176.0,497.9 L1176.5,497.9 L1177.0,497.7 L1177.5,498.5 L1178.0,497.6 L1178.5,498.6 L1179.0,497.9 L1179.5,498.0 L1180.0,498.1 L1180.5,498.1 L1181.0,497.6 L1181.5,498.7 L1182.0,498.5 L1182.5,497.8 L1183.0,498.5 L1183.5,498.8 L1184.0,497.9 L1184.5,498.0 L1185.0,498.8 L1185.5,498.3 L1186.0,498.4 L1186.5,498.9 L1187.0,498.3 L1187.5,498.1 L1188.0,498.8 L1188.5,498.8 L1189.0,498.8 L1189.5,498.1 L1190.0,498.6 L1190.5,498.9 L1191.0,498.2 L1191.5,498.9 L1192.0,498.8 L1192.5,498.8 L1193.0,498.7 L1193.5,498.7 L1194.0,498.6 L1194.5,498.5 L1195.0,498.8 L1195.5,498.4 L1196.0,499.0 L1196.5,498.6 L1197.0,499.0 L1197.5,498.3 L1198.0,498.2 L1198.5,498.3 L1199.0,498.3 L1199.5,498.4 L1200.0,498.6 L1200.5,498.4 L1201.0,499.0 L1201.5,498.7 L1202.0,499.3 L1202.5,498.4 L1203.0,499.1 L1203.5,499.1 L1204.0,499.0 L1204.5,499.1 L1205.0,499.0 L1205.5,498.4 L1206.0,499.3 L1206.5,498.9 L1207.0,499.0 L1207.5,499.0 L1208.0,499.2 L1208.5,498.6 L1209.0,498.9 L1209.5,499.0 L1210.0,499.4 L1210.5,498.6 L1211.0,499.2 L1211.5,498.7 L1212.0,499.3 L1212.5,499.1 L1213.0,499.4 L1213.5,498.8 L1214.0,499.3 L1214.5,499.1 L1215.0,499.5 L1215.5,499.5 L1216.0,499.4 L1216.5,499.3 L1217.0,499.7 L1217.5,499.0 L1218.0,498.8 L1218.5,499.5 L1219.0,498.9 L1219.5,498.9 L1220.0,499.5 L1220.5,499.6 L1221.0,499.2 L1221.5,499.0 L1222.0,499.4 L1222.5,499.3 L1223.0,499.8 L1223.5,499.6 L1224.0,499.5 L1224.5,499.8 L1225.0,499.3 L1225.5,499.3 L1226.0,499.5 L1226.5,499.8 L1227.0,499.9 L1227.5,499.7 L1228.0,500.2 L1228.5,499.7 L1229.0,499.9 L1229.5,500.1 L1230.0,500.0 L1230.5,500.6 L1231.0,500.7 L1231.5,500.3 L1232.0,500.8 L1232.5,500.6 L1233.0,500.9 L1233.5,500.8 L1234.0,501.1 L1234.5,501.2 L1235.0,501.0 L1235.5,501.2 L1236.0,501.2 L1236.5,501.1 L1237.0,501.3 L1237.5,501.0 L1238.0,501.0 L1238.5,501.0 L1239.0,501.1 L1239.5,501.2 L1240.0,501.3 L1240.5,501.1 L1241.0,501.5 L1241.5,501.2 L1242.0,501.1 L1242.5,501.4 L1243.0,501.5 L1243.5,501.5 L1244.0,501.3 L1244.5,501.4 L1245.0,501.4 L1245.5,501.5 L1246.0,501.6 L1246.5,501.7 L1247.0,501.6 L1247.5,501.5 L1248.0,501.5 L1248.5,501.7 L1249.0,501.5 L1249.5,501.6 L1250.0,501.6 L1250.5,501.8 L1251.0,501.7 L1251.5,501.7 L1252.0,501.5 L1252.5,501.6 L1253.0,501.6 L1253.5,501.7 L1254.0,501.6 L1254.5,501.8 L1255.0,501.7 L1255.5,501.6 L1256.0,501.7 L1256.5,501.5 L1257.0,501.4 L1257.5,501.4 L1258.0,501.5 L1258.5,501.6 L1259.0,501.6 L1259.5,501.3 L1260.0,501.6 L1260.5,501.3 L1261.0,501.3 L1261.5,501.5 L1262.0,501.6 L1262.5,501.6 L1263.0,501.7 L1263.5,501.7 L1264.0,501.3 L1264.5,501.3 L1265.0,501.4 L1265.5,501.6 L1266.0,501.6 L1266.5,501.3 L1267.0,501.3 L1267.5,501.4 L1268.0,501.3 L1268.5,501.4 L1269.0,501.4 L1269.5,501.5 L1270.0,501.2 L1270.5,501.4 L1271.0,501.2 L1271.5,501.4 L1272.0,501.4 L1272.5,501.5 L1273.0,501.3 L1273.5,501.2 L1274.0,501.2 L1274.5,501.2 L1275.0,501.3 L1275.5,501.5 L1276.0,501.2 L1276.5,501.3 L1277.0,501.4 L1277.5,501.2 L1278.0,501.3 L1278.5,501.3 L1279.0,501.1 L1279.5,501.0 L1280.0,501.5 L1280.5,501.2 L1281.0,501.3 L1281.5,501.3 L1282.0,501.3 L1282.5,501.2 L1283.0,501.4 L1283.5,501.5 L1284.0,501.4 L1284.5,501.3 L1285.0,501.6 L1285.5,501.4 L1286.0,501.6 L1286.5,501.5 L1287.0,501.6 L1287.5,501.4 L1288.0,501.3 L1288.5,501.7 L1289.0,501.4 L1289.5,501.4 L1290.0,501.7 L1290.5,501.6 L1291.0,501.7 L1291.5,501.7 L1292.0,501.6 L1292.5,501.8 L1293.0,501.8 L1293.5,501.5 L1294.0,501.5 L1294.5,501.5 L1295.0,501.5 L1295.5,501.7 L1296.0,501.5 L1296.5,501.8 L1297.0,501.5 L1297.5,501.6 L1298.0,501.5 L1298.5,501.5 L1299.0,501.6 L1299.5,501.6 L1300.0,501.6 L1300.5,501.4 L1301.0,501.7 L1301.5,501.6 L1302.0,501.4 L1302.5,501.7 L1303.0,501.4 L1303.5,501.3 L1304.0,501.3 L1304.5,501.5 L1305.0,501.6 L1305.5,501.6 L1306.0,501.6 L1306.5,501.7 L1307.0,501.4 L1307.5,501.3 L1308.0,501.4 L1308.5,501.4 L1309.0,501.5 L1309.5,501.4 L1310.0,501.6 L1310.0,504.5 L1309.5,504.7 L1309.0,504.6 L1308.5,504.7 L1308.0,504.7 L1307.5,504.8 L1307.0,504.7 L1306.5,504.4 L1306.0,504.5 L1305.5,504.5 L1305.0,504.5 L1304.5,504.6 L1304.0,504.8 L1303.5,504.8 L1303.0,504.7 L1302.5,504.4 L1302.0,504.7 L1301.5,504.5 L1301.0,504.4 L1300.5,504.7 L1300.0,504.5 L1299.5,504.5 L1299.0,504.5 L1298.5,504.6 L1298.0,504.6 L1297.5,504.5 L1297.0,504.6 L1296.5,504.3 L1296.0,504.6 L1295.5,504.4 L1295.0,504.6 L1294.5,504.6 L1294.0,504.6 L1293.5,504.6 L1293.0,504.3 L1292.5,504.3 L1292.0,504.5 L1291.5,504.4 L1291.0,504.4 L1290.5,504.5 L1290.0,504.4 L1289.5,504.7 L1289.0,504.7 L1288.5,504.4 L1288.0,504.8 L1287.5,504.7 L1287.0,504.5 L1286.5,504.6 L1286.0,504.5 L1285.5,504.7 L1285.0,504.5 L1284.5,504.8 L1284.0,504.7 L1283.5,504.6 L1283.0,504.7 L1282.5,504.9 L1282.0,504.8 L1281.5,504.8 L1281.0,504.8 L1280.5,504.9 L1280.0,504.6 L1279.5,505.1 L1279.0,505.0 L1278.5,504.8 L1278.0,504.8 L1277.5,504.9 L1277.0,504.7 L1276.5,504.8 L1276.0,504.9 L1275.5,504.6 L1275.0,504.8 L1274.5,504.9 L1274.0,504.9 L1273.5,504.9 L1273.0,504.8 L1272.5,504.6 L1272.0,504.7 L1271.5,504.7 L1271.0,504.9 L1270.5,504.7 L1270.0,504.9 L1269.5,504.6 L1269.0,504.7 L1268.5,504.7 L1268.0,504.8 L1267.5,504.7 L1267.0,504.8 L1266.5,504.8 L1266.0,504.5 L1265.5,504.5 L1265.0,504.7 L1264.5,504.8 L1264.0,504.8 L1263.5,504.4 L1263.0,504.4 L1262.5,504.5 L1262.0,504.5 L1261.5,504.6 L1261.0,504.8 L1260.5,504.8 L1260.0,504.5 L1259.5,504.8 L1259.0,504.5 L1258.5,504.5 L1258.0,504.6 L1257.5,504.7 L1257.0,504.7 L1256.5,504.6 L1256.0,504.4 L1255.5,504.5 L1255.0,504.4 L1254.5,504.3 L1254.0,504.5 L1253.5,504.4 L1253.0,504.5 L1252.5,504.5 L1252.0,504.6 L1251.5,504.4 L1251.0,504.4 L1250.5,504.3 L1250.0,504.5 L1249.5,504.5 L1249.0,504.6 L1248.5,504.4 L1248.0,504.6 L1247.5,504.6 L1247.0,504.5 L1246.5,504.4 L1246.0,504.5 L1245.5,504.6 L1245.0,504.7 L1244.5,504.7 L1244.0,504.8 L1243.5,504.6 L1243.0,504.6 L1242.5,504.7 L1242.0,505.0 L1241.5,504.9 L1241.0,504.6 L1240.5,505.0 L1240.0,504.8 L1239.5,504.9 L1239.0,505.0 L1238.5,505.1 L1238.0,505.1 L1237.5,505.1 L1237.0,504.8 L1236.5,505.0 L1236.0,504.9 L1235.5,504.9 L1235.0,505.1 L1234.5,504.9 L1234.0,505.0 L1233.5,505.3 L1233.0,505.2 L1232.5,505.5 L1232.0,505.3 L1231.5,505.8 L1231.0,505.4 L1230.5,505.5 L1230.0,506.1 L1229.5,506.0 L1229.0,506.2 L1228.5,506.4 L1228.0,505.9 L1227.5,506.4 L1227.0,506.2 L1226.5,506.3 L1226.0,506.6 L1225.5,506.8 L1225.0,506.8 L1224.5,506.3 L1224.0,506.6 L1223.5,506.5 L1223.0,506.3 L1222.5,506.8 L1222.0,506.7 L1221.5,507.1 L1221.0,506.9 L1220.5,506.5 L1220.0,506.6 L1219.5,507.2 L1219.0,507.2 L1218.5,506.6 L1218.0,507.3 L1217.5,507.1 L1217.0,506.4 L1216.5,506.8 L1216.0,506.7 L1215.5,506.6 L1215.0,506.6 L1214.5,507.0 L1214.0,506.8 L1213.5,507.3 L1213.0,506.7 L1212.5,507.0 L1212.0,506.8 L1211.5,507.4 L1211.0,506.9 L1210.5,507.5 L1210.0,506.7 L1209.5,507.1 L1209.0,507.2 L1208.5,507.5 L1208.0,506.9 L1207.5,507.1 L1207.0,507.1 L1206.5,507.2 L1206.0,506.8 L1205.5,507.7 L1205.0,507.1 L1204.5,507.0 L1204.0,507.1 L1203.5,507.0 L1203.0,507.0 L1202.5,507.7 L1202.0,506.8 L1201.5,507.4 L1201.0,507.1 L1200.5,507.7 L1200.0,507.5 L1199.5,507.7 L1199.0,507.8 L1198.5,507.8 L1198.0,507.9 L1197.5,507.8 L1197.0,507.1 L1196.5,507.5 L1196.0,507.1 L1195.5,507.7 L1195.0,507.3 L1194.5,507.6 L1194.0,507.5 L1193.5,507.4 L1193.0,507.4 L1192.5,507.3 L1192.0,507.3 L1191.5,507.2 L1191.0,507.9 L1190.5,507.2 L1190.0,507.5 L1189.5,508.0 L1189.0,507.3 L1188.5,507.3 L1188.0,507.3 L1187.5,508.0 L1187.0,507.8 L1186.5,507.2 L1186.0,507.7 L1185.5,507.8 L1185.0,507.3 L1184.5,508.1 L1184.0,508.2 L1183.5,507.3 L1183.0,507.6 L1182.5,508.3 L1182.0,507.6 L1181.5,507.4 L1181.0,508.5 L1180.5,508.0 L1180.0,508.0 L1179.5,508.1 L1179.0,508.2 L1178.5,507.5 L1178.0,508.5 L1177.5,507.6 L1177.0,508.4 L1176.5,508.2 L1176.0,508.2 L1175.5,507.9 L1175.0,508.7 L1174.5,508.8 L1174.0,507.8 L1173.5,508.3 L1173.0,508.5 L1172.5,508.6 L1172.0,507.7 L1171.5,508.9 L1171.0,507.8 L1170.5,507.7 L1170.0,508.7 L1169.5,508.1 L1169.0,508.8 L1168.5,508.8 L1168.0,508.2 L1167.5,507.9 L1167.0,508.7 L1166.5,508.2 L1166.0,508.3 L1165.5,509.1 L1165.0,508.8 L1164.5,508.5 L1164.0,508.2 L1163.5,508.3 L1163.0,507.9 L1162.5,508.5 L1162.0,509.2 L1161.5,508.2 L1161.0,509.3 L1160.5,509.2 L1160.0,509.0 L1159.5,508.6 L1159.0,509.0 L1158.5,508.8 L1158.0,508.8 L1157.5,508.3 L1157.0,508.3 L1156.5,509.1 L1156.0,508.3 L1155.5,509.0 L1155.0,509.4 L1154.5,509.5 L1154.0,508.9 L1153.5,509.1 L1153.0,509.1 L1152.5,509.6 L1152.0,509.0 L1151.5,509.5 L1151.0,508.3 L1150.5,509.4 L1150.0,508.7 L1149.5,509.7 L1149.0,509.3 L1148.5,509.3 L1148.0,508.5 L1147.5,509.1 L1147.0,508.7 L1146.5,509.3 L1146.0,509.8 L1145.5,509.0 L1145.0,509.0 L1144.5,509.4 L1144.0,510.2 L1143.5,508.9 L1143.0,510.2 L1142.5,509.3 L1142.0,509.6 L1141.5,509.3 L1141.0,509.6 L1140.5,510.5 L1140.0,510.4 L1139.5,509.7 L1139.0,510.5 L1138.5,510.7 L1138.0,509.5 L1137.5,510.7 L1137.0,510.2 L1136.5,510.0 L1136.0,510.5 L1135.5,510.8 L1135.0,511.0 L1134.5,509.5 L1134.0,509.8 L1133.5,511.1 L1133.0,509.8 L1132.5,511.1 L1132.0,509.8 L1131.5,511.2 L1131.0,511.0 L1130.5,510.4 L1130.0,511.2 L1129.5,510.4 L1129.0,511.2 L1128.5,510.2 L1128.0,511.3 L1127.5,510.2 L1127.0,510.4 L1126.5,509.9 L1126.0,510.3 L1125.5,511.3 L1125.0,510.9 L1124.5,511.1 L1124.0,511.4 L1123.5,510.5 L1123.0,510.5 L1122.5,510.7 L1122.0,511.2 L1121.5,510.2 L1121.0,509.9 L1120.5,510.0 L1120.0,510.6 L1119.5,507.8 L1119.0,506.2 L1118.5,506.1 L1118.0,506.1 L1117.5,505.8 L1117.0,505.7 L1116.5,505.9 L1116.0,505.8 L1115.5,505.8 L1115.0,505.5 L1114.5,505.6 L1114.0,506.1 L1113.5,506.1 L1113.0,506.0 L1112.5,506.1 L1112.0,505.7 L1111.5,506.2 L1111.0,506.2 L1110.5,506.1 L1110.0,506.0 L1109.5,506.3 L1109.0,506.0 L1108.5,506.0 L1108.0,506.3 L1107.5,506.2 L1107.0,506.0 L1106.5,506.4 L1106.0,506.1 L1105.5,505.9 L1105.0,506.5 L1104.5,506.1 L1104.0,506.4 L1103.5,505.7 L1103.0,506.1 L1102.5,506.1 L1102.0,505.9 L1101.5,506.0 L1101.0,505.7 L1100.5,505.8 L1100.0,505.9 L1099.5,505.7 L1099.0,505.7 L1098.5,505.6 L1098.0,505.2 L1097.5,505.5 L1097.0,505.2 L1096.5,505.3 L1096.0,505.2 L1095.5,505.0 L1095.0,505.3 L1094.5,504.9 L1094.0,504.7 L1093.5,504.6 L1093.0,504.5 L1092.5,504.7 L1092.0,504.6 L1091.5,504.3 L1091.0,504.4 L1090.5,504.3 L1090.0,504.1 L1089.5,504.1 L1089.0,504.0 L1088.5,504.2 L1088.0,504.0 L1087.5,504.1 L1087.0,504.0 L1086.5,504.2 L1086.0,504.0 L1085.5,504.1 L1085.0,504.2 L1084.5,504.1 L1084.0,504.0 L1083.5,504.0 L1083.0,504.2 L1082.5,504.1 L1082.0,504.0 L1081.5,504.0 L1081.0,504.2 L1080.5,504.3 L1080.0,504.3 L1079.5,504.2 L1079.0,504.1 L1078.5,504.1 L1078.0,504.2 L1077.5,504.3 L1077.0,504.2 L1076.5,504.1 L1076.0,504.3 L1075.5,504.2 L1075.0,504.3 L1074.5,504.1 L1074.0,504.2 L1073.5,504.2 L1073.0,504.2 L1072.5,504.2 L1072.0,504.1 L1071.5,504.2 L1071.0,504.0 L1070.5,503.9 L1070.0,503.6 L1069.5,503.7 L1069.0,503.6 L1068.5,503.6 L1068.0,503.6 L1067.5,503.7 L1067.0,503.6 L1066.5,503.6 L1066.0,503.6 L1065.5,503.6 L1065.0,503.7 L1064.5,503.6 L1064.0,503.7 L1063.5,503.7 L1063.0,503.6 L1062.5,503.7 L1062.0,503.7 L1061.5,503.6 L1061.0,503.6 L1060.5,503.6 L1060.0,503.7 L1059.5,503.6 L1059.0,503.7 L1058.5,503.7 L1058.0,503.6 L1057.5,503.6 L1057.0,503.6 L1056.5,503.7 L1056.0,503.7 L1055.5,503.7 L1055.0,503.7 L1054.5,503.6 L1054.0,503.6 L1053.5,503.6 L1053.0,503.7 L1052.5,503.6 L1052.0,503.6 L1051.5,503.6 L1051.0,503.7 L1050.5,503.7 L1050.0,503.6 L1049.5,503.7 L1049.0,503.6 L1048.5,503.6 L1048.0,503.7 L1047.5,503.7 L1047.0,503.6 L1046.5,503.6 L1046.0,503.7 L1045.5,503.6 L1045.0,503.7 L1044.5,503.6 L1044.0,503.6 L1043.5,503.7 L1043.0,503.6 L1042.5,503.6 L1042.0,503.7 L1041.5,503.7 L1041.0,503.6 L1040.5,503.6 L1040.0,503.6 L1039.5,503.6 L1039.0,503.6 L1038.5,503.7 L1038.0,503.6 L1037.5,503.6 L1037.0,503.6 L1036.5,503.6 L1036.0,503.6 L1035.5,503.6 L1035.0,503.7 L1034.5,503.7 L1034.0,503.7 L1033.5,503.7 L1033.0,503.7 L1032.5,503.6 L1032.0,503.7 L1031.5,503.6 L1031.0,503.7 L1030.5,503.6 L1030.0,503.6 L1029.5,503.6 L1029.0,503.6 L1028.5,503.7 L1028.0,503.7 L1027.5,503.6 L1027.0,503.7 L1026.5,503.6 L1026.0,503.7 L1025.5,503.7 L1025.0,503.6 L1024.5,503.6 L1024.0,503.6 L1023.5,503.7 L1023.0,503.7 L1022.5,503.7 L1022.0,503.7 L1021.5,503.7 L1021.0,503.7 L1020.5,503.6 L1020.0,503.6 L1019.5,503.7 L1019.0,503.6 L1018.5,503.6 L1018.0,503.6 L1017.5,503.7 L1017.0,503.7 L1016.5,503.6 L1016.0,503.6 L1015.5,503.6 L1015.0,503.7 L1014.5,503.7 L1014.0,503.6 L1013.5,503.6 L1013.0,503.7 L1012.5,503.6 L1012.0,503.6 L1011.5,503.6 L1011.0,503.7 L1010.5,503.6 L1010.0,503.6 L1009.5,503.7 L1009.0,503.6 L1008.5,503.6 L1008.0,503.6 L1007.5,503.6 L1007.0,503.6 L1006.5,503.6 L1006.0,503.6 L1005.5,503.7 L1005.0,503.6 L1004.5,503.6 L1004.0,503.7 L1003.5,503.7 L1003.0,503.7 L1002.5,503.7 L1002.0,503.7 L1001.5,503.7 L1001.0,503.6 L1000.5,503.7 L1000.0,503.7 L999.5,503.6 L999.0,503.6 L998.5,503.6 L998.0,503.6 L997.5,503.6 L997.0,503.6 L996.5,503.7 L996.0,503.7 L995.5,503.7 L995.0,503.7 L994.5,503.7 L994.0,503.7 L993.5,503.6 L993.0,503.7 L992.5,503.6 L992.0,503.6 L991.5,503.6 L991.0,503.6 L990.5,503.7 L990.0,503.6 L989.5,503.6 L989.0,503.6 L988.5,503.6 L988.0,503.6 L987.5,504.0 L987.0,504.4 L986.5,504.8 L986.0,505.6 L985.5,505.3 L985.0,505.4 L984.5,505.3 L984.0,505.3 L983.5,505.5 L983.0,505.3 L982.5,505.6 L982.0,505.6 L981.5,505.8 L981.0,505.3 L980.5,505.5 L980.0,505.7 L979.5,505.3 L979.0,505.5 L978.5,505.9 L978.0,505.8 L977.5,505.3 L977.0,505.3 L976.5,505.4 L976.0,505.6 L975.5,505.6 L975.0,505.7 L974.5,505.2 L974.0,505.2 L973.5,505.5 L973.0,505.2 L972.5,505.2 L972.0,504.9 L971.5,504.8 L971.0,505.0 L970.5,504.8 L970.0,504.6 L969.5,504.9 L969.0,504.8 L968.5,504.7 L968.0,504.5 L967.5,504.5 L967.0,504.5 L966.5,504.3 L966.0,504.3 L965.5,504.1 L965.0,504.1 L964.5,504.2 L964.0,503.9 L963.5,504.1 L963.0,503.8 L962.5,503.9 L962.0,503.9 L961.5,503.8 L961.0,503.8 L960.5,503.7 L960.0,503.7 L959.5,503.6 L959.0,503.6 L958.5,504.1 L958.0,504.8 L957.5,504.6 L957.0,504.7 L956.5,504.6 L956.0,504.6 L955.5,504.6 L955.0,504.7 L954.5,504.9 L954.0,504.8 L953.5,504.7 L953.0,504.8 L952.5,504.9 L952.0,505.0 L951.5,505.0 L951.0,504.8 L950.5,504.8 L950.0,504.9 L949.5,505.1 L949.0,505.2 L948.5,504.1 L948.0,503.4 L947.5,503.4 L947.0,503.4 L946.5,503.4 L946.0,503.4 L945.5,503.4 L945.0,503.4 L944.5,503.4 L944.0,503.4 L943.5,503.4 L943.0,503.4 L942.5,503.4 L942.0,503.4 L941.5,503.4 L941.0,503.4 L940.5,503.4 L940.0,503.4 L939.5,503.4 L939.0,503.4 L938.5,503.4 L938.0,503.4 L937.5,503.4 L937.0,503.4 L936.5,503.4 L936.0,503.4 L935.5,503.4 L935.0,503.4 L934.5,503.4 L934.0,503.4 L933.5,503.4 L933.0,503.4 L932.5,503.4 L932.0,503.4 L931.5,503.4 L931.0,503.4 L930.5,503.4 L930.0,503.4 L929.5,503.4 L929.0,503.4 L928.5,503.4 L928.0,503.4 L927.5,503.4 L927.0,503.4 L926.5,503.4 L926.0,503.4 L925.5,503.4 L925.0,503.4 L924.5,503.4 L924.0,503.4 L923.5,503.4 L923.0,503.4 L922.5,503.4 L922.0,503.4 L921.5,503.4 L921.0,503.4 L920.5,503.4 L920.0,503.4 L919.5,503.4 L919.0,503.4 L918.5,503.9 L918.0,504.6 L917.5,504.4 L917.0,504.6 L916.5,504.5 L916.0,504.6 L915.5,504.6 L915.0,504.6 L914.5,504.6 L914.0,504.8 L913.5,504.5 L913.0,504.5 L912.5,504.6 L912.0,504.6 L911.5,504.6 L911.0,504.7 L910.5,504.6 L910.0,504.6 L909.5,504.6 L909.0,504.8 L908.5,504.6 L908.0,504.6 L907.5,505.0 L907.0,504.7 L906.5,504.6 L906.0,504.8 L905.5,504.7 L905.0,504.9 L904.5,504.7 L904.0,504.9 L903.5,504.6 L903.0,504.7 L902.5,504.5 L902.0,504.5 L901.5,504.7 L901.0,504.4 L900.5,504.6 L900.0,504.5 L899.5,504.4 L899.0,504.6 L898.5,504.7 L898.0,504.4 L897.5,504.7 L897.0,504.7 L896.5,504.7 L896.0,504.7 L895.5,504.7 L895.0,504.7 L894.5,504.7 L894.0,504.6 L893.5,504.8 L893.0,504.8 L892.5,504.2 L892.0,503.4 L891.5,503.4 L891.0,503.4 L890.5,503.4 L890.0,503.4 L889.5,503.4 L889.0,503.4 L888.5,503.4 L888.0,503.4 L887.5,503.4 L887.0,503.4 L886.5,503.4 L886.0,503.4 L885.5,503.4 L885.0,503.4 L884.5,503.4 L884.0,503.4 L883.5,503.4 L883.0,503.4 L882.5,503.4 L882.0,503.4 L881.5,503.4 L881.0,503.4 L880.5,503.4 L880.0,503.4 L879.5,503.4 L879.0,503.4 L878.5,503.4 L878.0,503.4 L877.5,503.4 L877.0,503.4 L876.5,503.4 L876.0,503.4 L875.5,503.4 L875.0,503.4 L874.5,503.4 L874.0,503.4 L873.5,503.4 L873.0,503.4 L872.5,503.4 L872.0,503.4 L871.5,503.4 L871.0,503.4 L870.5,503.4 L870.0,503.4 L869.5,503.4 L869.0,503.4 L868.5,503.4 L868.0,503.4 L867.5,503.4 L867.0,503.4 L866.5,503.4 L866.0,503.4 L865.5,503.4 L865.0,503.4 L864.5,503.4 L864.0,503.4 L863.5,503.4 L863.0,503.4 L862.5,503.4 L862.0,503.4 L861.5,503.4 L861.0,503.4 L860.5,503.4 L860.0,503.4 L859.5,503.4 L859.0,503.4 L858.5,503.4 L858.0,503.4 L857.5,503.4 L857.0,503.4 L856.5,503.4 L856.0,503.4 L855.5,503.4 L855.0,503.4 L854.5,503.4 L854.0,503.4 L853.5,503.4 L853.0,503.4 L852.5,503.4 L852.0,503.4 L851.5,503.4 L851.0,503.4 L850.5,503.4 L850.0,503.4 L849.5,503.4 L849.0,503.4 L848.5,503.4 L848.0,503.4 L847.5,503.4 L847.0,503.4 L846.5,503.4 L846.0,503.4 L845.5,503.4 L845.0,503.4 L844.5,503.4 L844.0,503.4 L843.5,503.4 L843.0,503.4 L842.5,503.4 L842.0,503.4 L841.5,503.4 L841.0,503.4 L840.5,503.4 L840.0,503.4 L839.5,503.4 L839.0,503.4 L838.5,503.4 L838.0,503.4 L837.5,503.4 L837.0,503.4 L836.5,503.4 L836.0,503.4 L835.5,503.4 L835.0,503.4 L834.5,503.4 L834.0,503.4 L833.5,503.4 L833.0,503.4 L832.5,503.4 L832.0,503.4 L831.5,503.4 L831.0,503.4 L830.5,503.4 L830.0,503.4 L829.5,503.4 L829.0,503.4 L828.5,503.4 L828.0,503.4 L827.5,503.4 L827.0,503.4 L826.5,503.4 L826.0,503.4 L825.5,503.4 L825.0,503.4 L824.5,503.4 L824.0,503.4 L823.5,503.4 L823.0,503.4 L822.5,503.4 L822.0,503.4 L821.5,503.4 L821.0,503.4 L820.5,503.4 L820.0,503.4 L819.5,503.4 L819.0,503.4 L818.5,503.4 L818.0,503.4 L817.5,503.4 L817.0,503.4 L816.5,503.4 L816.0,503.4 L815.5,503.4 L815.0,503.4 L814.5,503.4 L814.0,503.4 L813.5,503.4 L813.0,503.4 L812.5,503.4 L812.0,503.4 L811.5,503.4 L811.0,503.4 L810.5,504.0 L810.0,504.7 L809.5,504.4 L809.0,504.6 L808.5,504.6 L808.0,504.6 L807.5,504.6 L807.0,504.7 L806.5,504.7 L806.0,504.6 L805.5,504.3 L805.0,504.1 L804.5,504.0 L804.0,503.9 L803.5,503.6 L803.0,503.4 L802.5,503.7 L802.0,504.1 L801.5,504.2 L801.0,504.8 L800.5,503.9 L800.0,503.4 L799.5,503.4 L799.0,503.4 L798.5,503.4 L798.0,503.4 L797.5,503.4 L797.0,503.4 L796.5,503.4 L796.0,503.4 L795.5,503.4 L795.0,503.4 L794.5,503.4 L794.0,503.4 L793.5,503.4 L793.0,503.4 L792.5,503.4 L792.0,503.4 L791.5,503.4 L791.0,503.4 L790.5,503.4 L790.0,503.4 L789.5,503.4 L789.0,503.4 L788.5,503.4 L788.0,503.4 L787.5,503.4 L787.0,503.4 L786.5,503.4 L786.0,503.4 L785.5,503.4 L785.0,503.4 L784.5,503.4 L784.0,503.4 L783.5,503.4 L783.0,503.4 L782.5,503.4 L782.0,503.4 L781.5,503.4 L781.0,503.4 L780.5,503.4 L780.0,503.4 L779.5,503.4 L779.0,503.4 L778.5,503.4 L778.0,503.4 L777.5,503.4 L777.0,503.4 L776.5,503.4 L776.0,503.4 L775.5,503.4 L775.0,503.4 L774.5,503.4 L774.0,503.4 L773.5,503.4 L773.0,503.4 L772.5,503.4 L772.0,503.4 L771.5,503.4 L771.0,503.5 L770.5,503.8 L770.0,504.0 L769.5,504.5 L769.0,504.8 L768.5,504.1 L768.0,503.4 L767.5,503.4 L767.0,503.4 L766.5,503.4 L766.0,503.4 L765.5,503.4 L765.0,503.4 L764.5,503.4 L764.0,503.4 L763.5,503.4 L763.0,503.4 L762.5,503.4 L762.0,503.4 L761.5,503.4 L761.0,503.4 L760.5,503.6 L760.0,503.9 L759.5,504.1 L759.0,504.3 L758.5,503.9 L758.0,503.4 L757.5,503.4 L757.0,503.4 L756.5,503.4 L756.0,503.4 L755.5,503.4 L755.0,503.4 L754.5,503.4 L754.0,503.4 L753.5,503.4 L753.0,503.4 L752.5,503.4 L752.0,503.4 L751.5,503.4 L751.0,503.4 L750.5,503.4 L750.0,503.4 L749.5,503.4 L749.0,503.4 L748.5,503.4 L748.0,503.4 L747.5,503.4 L747.0,503.4 L746.5,503.4 L746.0,503.4 L745.5,503.4 L745.0,503.4 L744.5,503.4 L744.0,503.4 L743.5,503.4 L743.0,503.4 L742.5,503.4 L742.0,503.4 L741.5,503.4 L741.0,503.4Z" fill="#3d6874"/><path d="M741.0,561.0 L741.5,561.0 L742.0,561.0 L742.5,561.0 L743.0,561.0 L743.5,561.0 L744.0,561.0 L744.5,561.0 L745.0,561.0 L745.5,561.0 L746.0,561.0 L746.5,561.0 L747.0,561.0 L747.5,561.0 L748.0,561.0 L748.5,561.0 L749.0,561.0 L749.5,561.0 L750.0,561.0 L750.5,561.0 L751.0,561.0 L751.5,561.0 L752.0,561.0 L752.5,559.6 L753.0,558.2 L753.5,558.1 L754.0,558.3 L754.5,558.5 L755.0,558.4 L755.5,558.3 L756.0,558.3 L756.5,558.5 L757.0,558.8 L757.5,558.2 L758.0,558.0 L758.5,558.8 L759.0,558.4 L759.5,558.2 L760.0,558.2 L760.5,558.8 L761.0,558.8 L761.5,558.7 L762.0,558.1 L762.5,558.6 L763.0,558.2 L763.5,558.6 L764.0,558.4 L764.5,558.5 L765.0,558.2 L765.5,558.8 L766.0,558.7 L766.5,558.8 L767.0,558.7 L767.5,558.6 L768.0,558.5 L768.5,558.1 L769.0,558.6 L769.5,558.5 L770.0,558.5 L770.5,558.4 L771.0,558.4 L771.5,558.1 L772.0,558.8 L772.5,558.2 L773.0,558.5 L773.5,558.8 L774.0,558.3 L774.5,558.1 L775.0,558.3 L775.5,558.6 L776.0,558.1 L776.5,558.5 L777.0,558.4 L777.5,558.7 L778.0,558.5 L778.5,558.1 L779.0,558.5 L779.5,558.2 L780.0,558.2 L780.5,558.3 L781.0,558.4 L781.5,558.3 L782.0,558.6 L782.5,558.5 L783.0,558.5 L783.5,558.7 L784.0,558.7 L784.5,558.6 L785.0,558.4 L785.5,558.3 L786.0,558.3 L786.5,558.9 L787.0,558.3 L787.5,558.2 L788.0,558.6 L788.5,558.5 L789.0,558.7 L789.5,558.3 L790.0,558.9 L790.5,558.6 L791.0,558.6 L791.5,558.6 L792.0,558.8 L792.5,558.2 L793.0,558.5 L793.5,558.8 L794.0,558.3 L794.5,558.2 L795.0,558.9 L795.5,558.9 L796.0,558.5 L796.5,558.8 L797.0,558.8 L797.5,558.9 L798.0,558.4 L798.5,558.7 L799.0,558.6 L799.5,558.7 L800.0,558.7 L800.5,558.4 L801.0,558.6 L801.5,558.4 L802.0,558.5 L802.5,558.3 L803.0,558.5 L803.5,558.6 L804.0,558.7 L804.5,558.9 L805.0,558.9 L805.5,558.7 L806.0,558.9 L806.5,558.5 L807.0,558.8 L807.5,558.6 L808.0,558.9 L808.5,558.8 L809.0,559.0 L809.5,558.5 L810.0,558.7 L810.5,558.7 L811.0,558.6 L811.5,558.5 L812.0,558.3 L812.5,558.8 L813.0,558.3 L813.5,558.7 L814.0,558.6 L814.5,558.8 L815.0,558.9 L815.5,558.2 L816.0,558.3 L816.5,558.9 L817.0,558.6 L817.5,558.2 L818.0,558.3 L818.5,558.5 L819.0,558.4 L819.5,558.9 L820.0,558.6 L820.5,558.8 L821.0,558.8 L821.5,558.6 L822.0,558.2 L822.5,558.7 L823.0,558.6 L823.5,558.3 L824.0,558.7 L824.5,558.7 L825.0,558.2 L825.5,558.4 L826.0,558.5 L826.5,558.9 L827.0,558.5 L827.5,558.5 L828.0,558.7 L828.5,558.7 L829.0,558.3 L829.5,558.2 L830.0,558.8 L830.5,558.3 L831.0,558.7 L831.5,558.8 L832.0,558.3 L832.5,558.5 L833.0,558.7 L833.5,558.6 L834.0,558.1 L834.5,558.4 L835.0,558.3 L835.5,558.2 L836.0,558.8 L836.5,558.6 L837.0,558.4 L837.5,558.4 L838.0,558.3 L838.5,558.7 L839.0,558.7 L839.5,558.2 L840.0,558.5 L840.5,558.2 L841.0,558.2 L841.5,558.3 L842.0,558.1 L842.5,558.1 L843.0,558.2 L843.5,558.1 L844.0,558.2 L844.5,557.7 L845.0,558.1 L845.5,558.3 L846.0,557.7 L846.5,557.7 L847.0,557.6 L847.5,557.8 L848.0,557.3 L848.5,557.3 L849.0,557.9 L849.5,557.1 L850.0,557.9 L850.5,557.2 L851.0,557.0 L851.5,557.8 L852.0,557.1 L852.5,557.0 L853.0,557.1 L853.5,556.8 L854.0,556.4 L854.5,556.8 L855.0,556.6 L855.5,557.3 L856.0,555.9 L856.5,556.2 L857.0,555.8 L857.5,556.4 L858.0,555.1 L858.5,556.0 L859.0,556.3 L859.5,555.8 L860.0,555.2 L860.5,555.5 L861.0,555.4 L861.5,554.0 L862.0,553.9 L862.5,554.3 L863.0,555.2 L863.5,555.6 L864.0,555.8 L864.5,556.4 L865.0,557.5 L865.5,557.1 L866.0,557.6 L866.5,557.8 L867.0,557.5 L867.5,557.4 L868.0,558.1 L868.5,557.4 L869.0,558.0 L869.5,558.0 L870.0,557.6 L870.5,558.1 L871.0,557.6 L871.5,557.9 L872.0,557.3 L872.5,557.8 L873.0,557.3 L873.5,557.4 L874.0,557.3 L874.5,557.7 L875.0,557.6 L875.5,557.9 L876.0,557.6 L876.5,557.1 L877.0,557.7 L877.5,557.5 L878.0,557.2 L878.5,557.7 L879.0,557.0 L879.5,557.7 L880.0,557.1 L880.5,557.3 L881.0,557.8 L881.5,556.8 L882.0,557.5 L882.5,556.9 L883.0,557.6 L883.5,556.8 L884.0,557.1 L884.5,557.7 L885.0,557.8 L885.5,557.5 L886.0,557.3 L886.5,557.7 L887.0,557.5 L887.5,557.7 L888.0,557.1 L888.5,557.6 L889.0,557.3 L889.5,557.7 L890.0,558.1 L890.5,557.4 L891.0,557.3 L891.5,557.9 L892.0,557.6 L892.5,557.6 L893.0,557.8 L893.5,557.7 L894.0,557.6 L894.5,557.9 L895.0,558.0 L895.5,557.5 L896.0,558.0 L896.5,558.3 L897.0,557.6 L897.5,557.7 L898.0,557.5 L898.5,558.0 L899.0,557.8 L899.5,558.3 L900.0,557.9 L900.5,557.7 L901.0,557.7 L901.5,558.0 L902.0,557.8 L902.5,558.1 L903.0,557.9 L903.5,558.4 L904.0,558.2 L904.5,558.3 L905.0,558.4 L905.5,557.8 L906.0,557.8 L906.5,557.8 L907.0,557.5 L907.5,557.9 L908.0,558.4 L908.5,558.4 L909.0,557.5 L909.5,558.2 L910.0,558.1 L910.5,557.6 L911.0,557.4 L911.5,557.5 L912.0,557.7 L912.5,558.3 L913.0,558.2 L913.5,558.0 L914.0,557.5 L914.5,558.3 L915.0,558.1 L915.5,558.3 L916.0,558.3 L916.5,557.6 L917.0,557.9 L917.5,557.8 L918.0,557.8 L918.5,557.7 L919.0,557.7 L919.5,557.8 L920.0,558.2 L920.5,557.8 L921.0,558.0 L921.5,557.6 L922.0,557.3 L922.5,557.4 L923.0,557.8 L923.5,557.9 L924.0,557.5 L924.5,557.6 L925.0,557.5 L925.5,557.4 L926.0,557.6 L926.5,558.1 L927.0,557.6 L927.5,557.5 L928.0,558.2 L928.5,557.2 L929.0,557.9 L929.5,558.2 L930.0,557.6 L930.5,557.6 L931.0,557.7 L931.5,557.9 L932.0,557.4 L932.5,557.7 L933.0,557.6 L933.5,558.1 L934.0,558.2 L934.5,557.8 L935.0,557.4 L935.5,557.2 L936.0,558.1 L936.5,558.0 L937.0,557.3 L937.5,557.5 L938.0,557.1 L938.5,557.9 L939.0,557.5 L939.5,557.9 L940.0,557.9 L940.5,557.8 L941.0,557.5 L941.5,558.1 L942.0,558.0 L942.5,558.0 L943.0,557.3 L943.5,557.6 L944.0,557.8 L944.5,557.3 L945.0,558.1 L945.5,557.2 L946.0,557.8 L946.5,557.0 L947.0,557.0 L947.5,557.1 L948.0,557.2 L948.5,557.9 L949.0,557.7 L949.5,557.7 L950.0,557.3 L950.5,557.8 L951.0,557.5 L951.5,557.9 L952.0,557.0 L952.5,557.5 L953.0,558.0 L953.5,557.0 L954.0,557.1 L954.5,557.2 L955.0,557.1 L955.5,557.5 L956.0,557.8 L956.5,557.7 L957.0,557.8 L957.5,557.0 L958.0,557.9 L958.5,557.7 L959.0,557.7 L959.5,557.4 L960.0,557.6 L960.5,558.0 L961.0,557.3 L961.5,557.7 L962.0,557.3 L962.5,557.2 L963.0,557.2 L963.5,557.8 L964.0,557.5 L964.5,557.3 L965.0,557.9 L965.5,557.4 L966.0,557.0 L966.5,557.5 L967.0,557.8 L967.5,557.5 L968.0,557.2 L968.5,557.7 L969.0,557.4 L969.5,557.4 L970.0,556.9 L970.5,557.3 L971.0,556.9 L971.5,556.9 L972.0,557.8 L972.5,557.9 L973.0,557.3 L973.5,557.9 L974.0,557.8 L974.5,557.4 L975.0,557.2 L975.5,557.5 L976.0,557.3 L976.5,557.2 L977.0,556.3 L977.5,556.8 L978.0,556.8 L978.5,556.2 L979.0,555.0 L979.5,554.9 L980.0,555.8 L980.5,555.6 L981.0,554.5 L981.5,555.4 L982.0,554.3 L982.5,553.3 L983.0,555.1 L983.5,553.2 L984.0,553.6 L984.5,554.2 L985.0,553.3 L985.5,552.5 L986.0,554.1 L986.5,553.1 L987.0,552.0 L987.5,554.2 L988.0,553.0 L988.5,553.3 L989.0,552.0 L989.5,553.1 L990.0,553.6 L990.5,552.2 L991.0,551.4 L991.5,551.3 L992.0,553.5 L992.5,551.6 L993.0,552.4 L993.5,551.8 L994.0,552.5 L994.5,553.1 L995.0,551.9 L995.5,552.8 L996.0,552.3 L996.5,552.4 L997.0,553.4 L997.5,553.4 L998.0,551.8 L998.5,553.3 L999.0,553.5 L999.5,551.8 L1000.0,551.7 L1000.5,551.4 L1001.0,551.4 L1001.5,551.9 L1002.0,552.8 L1002.5,551.2 L1003.0,551.7 L1003.5,552.7 L1004.0,552.5 L1004.5,551.7 L1005.0,553.1 L1005.5,551.3 L1006.0,553.4 L1006.5,552.3 L1007.0,552.3 L1007.5,552.5 L1008.0,553.5 L1008.5,552.9 L1009.0,552.3 L1009.5,552.9 L1010.0,552.2 L1010.5,552.3 L1011.0,551.2 L1011.5,552.0 L1012.0,551.2 L1012.5,553.2 L1013.0,551.6 L1013.5,552.1 L1014.0,552.8 L1014.5,551.3 L1015.0,552.0 L1015.5,551.9 L1016.0,552.9 L1016.5,552.5 L1017.0,552.5 L1017.5,551.7 L1018.0,551.2 L1018.5,553.2 L1019.0,550.9 L1019.5,552.6 L1020.0,553.2 L1020.5,551.2 L1021.0,552.6 L1021.5,552.7 L1022.0,552.3 L1022.5,552.4 L1023.0,552.4 L1023.5,551.7 L1024.0,550.9 L1024.5,551.1 L1025.0,551.6 L1025.5,552.9 L1026.0,552.8 L1026.5,552.7 L1027.0,552.5 L1027.5,552.1 L1028.0,553.0 L1028.5,551.5 L1029.0,551.4 L1029.5,551.9 L1030.0,550.8 L1030.5,551.6 L1031.0,552.5 L1031.5,551.0 L1032.0,552.0 L1032.5,550.9 L1033.0,551.1 L1033.5,551.7 L1034.0,551.0 L1034.5,551.5 L1035.0,552.3 L1035.5,553.2 L1036.0,552.7 L1036.5,551.5 L1037.0,551.4 L1037.5,552.6 L1038.0,552.9 L1038.5,551.9 L1039.0,553.1 L1039.5,551.7 L1040.0,552.2 L1040.5,552.7 L1041.0,552.1 L1041.5,551.6 L1042.0,553.1 L1042.5,553.0 L1043.0,553.0 L1043.5,552.5 L1044.0,552.3 L1044.5,551.4 L1045.0,551.5 L1045.5,552.0 L1046.0,553.1 L1046.5,553.0 L1047.0,551.8 L1047.5,551.2 L1048.0,551.7 L1048.5,552.0 L1049.0,551.9 L1049.5,552.7 L1050.0,551.8 L1050.5,552.4 L1051.0,551.5 L1051.5,550.8 L1052.0,552.3 L1052.5,553.0 L1053.0,552.1 L1053.5,551.7 L1054.0,552.6 L1054.5,550.7 L1055.0,552.1 L1055.5,553.2 L1056.0,552.1 L1056.5,553.5 L1057.0,552.3 L1057.5,553.8 L1058.0,553.8 L1058.5,554.1 L1059.0,553.1 L1059.5,553.3 L1060.0,554.3 L1060.5,554.7 L1061.0,555.7 L1061.5,556.0 L1062.0,556.0 L1062.5,555.3 L1063.0,554.7 L1063.5,555.4 L1064.0,556.3 L1064.5,555.6 L1065.0,554.9 L1065.5,555.3 L1066.0,555.4 L1066.5,555.1 L1067.0,555.4 L1067.5,555.6 L1068.0,555.0 L1068.5,555.9 L1069.0,555.1 L1069.5,555.4 L1070.0,555.3 L1070.5,556.4 L1071.0,556.3 L1071.5,555.5 L1072.0,556.2 L1072.5,555.4 L1073.0,556.4 L1073.5,555.4 L1074.0,555.7 L1074.5,556.3 L1075.0,555.4 L1075.5,556.0 L1076.0,555.5 L1076.5,556.8 L1077.0,556.0 L1077.5,556.5 L1078.0,556.7 L1078.5,556.9 L1079.0,556.3 L1079.5,556.3 L1080.0,556.8 L1080.5,556.8 L1081.0,556.5 L1081.5,556.5 L1082.0,556.7 L1082.5,556.9 L1083.0,557.1 L1083.5,557.2 L1084.0,556.7 L1084.5,557.2 L1085.0,556.4 L1085.5,557.1 L1086.0,556.5 L1086.5,556.7 L1087.0,556.1 L1087.5,557.0 L1088.0,556.2 L1088.5,556.5 L1089.0,557.1 L1089.5,557.0 L1090.0,556.6 L1090.5,557.2 L1091.0,556.6 L1091.5,556.7 L1092.0,556.6 L1092.5,557.1 L1093.0,556.1 L1093.5,557.0 L1094.0,555.8 L1094.5,556.5 L1095.0,556.8 L1095.5,556.5 L1096.0,556.9 L1096.5,556.2 L1097.0,556.3 L1097.5,556.7 L1098.0,556.2 L1098.5,556.3 L1099.0,556.1 L1099.5,556.4 L1100.0,555.2 L1100.5,555.9 L1101.0,556.2 L1101.5,554.9 L1102.0,554.7 L1102.5,554.6 L1103.0,556.0 L1103.5,555.5 L1104.0,554.9 L1104.5,555.1 L1105.0,553.8 L1105.5,553.9 L1106.0,554.7 L1106.5,553.8 L1107.0,553.9 L1107.5,553.8 L1108.0,553.0 L1108.5,553.4 L1109.0,552.6 L1109.5,554.3 L1110.0,552.6 L1110.5,553.9 L1111.0,553.1 L1111.5,553.2 L1112.0,552.8 L1112.5,553.4 L1113.0,552.4 L1113.5,552.9 L1114.0,554.1 L1114.5,554.1 L1115.0,553.7 L1115.5,553.6 L1116.0,553.4 L1116.5,552.2 L1117.0,553.9 L1117.5,554.2 L1118.0,553.7 L1118.5,554.0 L1119.0,553.5 L1119.5,553.1 L1120.0,552.3 L1120.5,553.5 L1121.0,552.8 L1121.5,553.0 L1122.0,554.3 L1122.5,552.3 L1123.0,554.2 L1123.5,552.3 L1124.0,552.4 L1124.5,552.7 L1125.0,553.7 L1125.5,552.8 L1126.0,552.7 L1126.5,552.2 L1127.0,553.4 L1127.5,553.7 L1128.0,553.1 L1128.5,553.0 L1129.0,552.4 L1129.5,553.0 L1130.0,552.2 L1130.5,554.2 L1131.0,552.8 L1131.5,553.1 L1132.0,552.3 L1132.5,554.1 L1133.0,554.0 L1133.5,552.2 L1134.0,554.2 L1134.5,552.0 L1135.0,553.8 L1135.5,553.2 L1136.0,554.2 L1136.5,554.2 L1137.0,553.7 L1137.5,553.5 L1138.0,553.8 L1138.5,553.1 L1139.0,553.8 L1139.5,553.1 L1140.0,552.8 L1140.5,553.3 L1141.0,552.3 L1141.5,552.0 L1142.0,551.9 L1142.5,552.7 L1143.0,553.5 L1143.5,553.6 L1144.0,553.0 L1144.5,552.6 L1145.0,552.0 L1145.5,552.2 L1146.0,553.2 L1146.5,552.7 L1147.0,552.8 L1147.5,553.9 L1148.0,552.3 L1148.5,552.2 L1149.0,553.6 L1149.5,551.9 L1150.0,553.6 L1150.5,552.1 L1151.0,553.5 L1151.5,552.2 L1152.0,552.4 L1152.5,552.3 L1153.0,552.6 L1153.5,552.1 L1154.0,553.7 L1154.5,552.9 L1155.0,552.5 L1155.5,551.8 L1156.0,553.9 L1156.5,552.2 L1157.0,551.9 L1157.5,554.0 L1158.0,553.0 L1158.5,553.3 L1159.0,552.0 L1159.5,552.2 L1160.0,553.4 L1160.5,552.6 L1161.0,553.0 L1161.5,551.9 L1162.0,552.7 L1162.5,553.6 L1163.0,552.4 L1163.5,553.5 L1164.0,552.6 L1164.5,552.5 L1165.0,554.2 L1165.5,552.4 L1166.0,552.6 L1166.5,553.1 L1167.0,554.1 L1167.5,552.5 L1168.0,553.5 L1168.5,553.8 L1169.0,553.5 L1169.5,553.8 L1170.0,553.7 L1170.5,553.9 L1171.0,552.1 L1171.5,552.1 L1172.0,552.7 L1172.5,552.9 L1173.0,552.3 L1173.5,553.0 L1174.0,552.0 L1174.5,552.4 L1175.0,552.4 L1175.5,552.1 L1176.0,552.2 L1176.5,554.0 L1177.0,552.4 L1177.5,554.1 L1178.0,552.7 L1178.5,553.0 L1179.0,553.3 L1179.5,552.8 L1180.0,553.2 L1180.5,554.2 L1181.0,552.4 L1181.5,553.6 L1182.0,553.0 L1182.5,553.5 L1183.0,552.4 L1183.5,552.5 L1184.0,553.6 L1184.5,552.3 L1185.0,552.5 L1185.5,553.2 L1186.0,554.3 L1186.5,553.4 L1187.0,553.4 L1187.5,554.0 L1188.0,552.6 L1188.5,552.4 L1189.0,553.2 L1189.5,552.2 L1190.0,552.6 L1190.5,553.8 L1191.0,554.1 L1191.5,553.9 L1192.0,553.0 L1192.5,554.1 L1193.0,554.0 L1193.5,553.2 L1194.0,552.3 L1194.5,553.4 L1195.0,553.5 L1195.5,553.0 L1196.0,554.3 L1196.5,554.1 L1197.0,552.4 L1197.5,554.4 L1198.0,552.8 L1198.5,552.8 L1199.0,552.6 L1199.5,552.9 L1200.0,553.7 L1200.5,552.5 L1201.0,554.4 L1201.5,554.2 L1202.0,552.4 L1202.5,552.6 L1203.0,553.5 L1203.5,552.5 L1204.0,554.3 L1204.5,554.5 L1205.0,553.7 L1205.5,553.7 L1206.0,553.8 L1206.5,552.6 L1207.0,554.3 L1207.5,552.4 L1208.0,553.3 L1208.5,553.3 L1209.0,552.3 L1209.5,554.2 L1210.0,553.9 L1210.5,552.8 L1211.0,553.4 L1211.5,552.5 L1212.0,553.9 L1212.5,554.1 L1213.0,552.6 L1213.5,553.1 L1214.0,553.9 L1214.5,553.3 L1215.0,553.3 L1215.5,553.1 L1216.0,552.5 L1216.5,552.2 L1217.0,552.6 L1217.5,553.0 L1218.0,552.6 L1218.5,552.3 L1219.0,552.8 L1219.5,554.0 L1220.0,554.3 L1220.5,552.3 L1221.0,552.1 L1221.5,553.8 L1222.0,553.5 L1222.5,553.4 L1223.0,553.0 L1223.5,554.3 L1224.0,553.9 L1224.5,553.9 L1225.0,553.6 L1225.5,553.4 L1226.0,553.5 L1226.5,553.1 L1227.0,553.3 L1227.5,553.7 L1228.0,553.5 L1228.5,553.4 L1229.0,553.6 L1229.5,552.8 L1230.0,553.8 L1230.5,552.1 L1231.0,553.8 L1231.5,553.7 L1232.0,552.8 L1232.5,554.1 L1233.0,554.1 L1233.5,552.2 L1234.0,553.5 L1234.5,552.6 L1235.0,552.9 L1235.5,553.8 L1236.0,553.0 L1236.5,553.0 L1237.0,553.0 L1237.5,553.6 L1238.0,552.1 L1238.5,554.1 L1239.0,552.7 L1239.5,553.3 L1240.0,553.5 L1240.5,552.8 L1241.0,552.4 L1241.5,553.9 L1242.0,552.4 L1242.5,553.4 L1243.0,551.9 L1243.5,552.9 L1244.0,551.8 L1244.5,553.1 L1245.0,552.0 L1245.5,552.0 L1246.0,552.2 L1246.5,553.2 L1247.0,554.0 L1247.5,552.4 L1248.0,553.4 L1248.5,552.3 L1249.0,553.8 L1249.5,552.9 L1250.0,553.0 L1250.5,553.2 L1251.0,552.2 L1251.5,552.8 L1252.0,552.7 L1252.5,553.3 L1253.0,552.2 L1253.5,553.7 L1254.0,553.4 L1254.5,553.0 L1255.0,552.7 L1255.5,552.2 L1256.0,553.9 L1256.5,553.2 L1257.0,553.3 L1257.5,554.0 L1258.0,554.0 L1258.5,553.9 L1259.0,553.1 L1259.5,551.8 L1260.0,552.3 L1260.5,553.0 L1261.0,553.3 L1261.5,552.1 L1262.0,552.9 L1262.5,552.9 L1263.0,554.0 L1263.5,552.8 L1264.0,552.8 L1264.5,552.6 L1265.0,553.8 L1265.5,553.4 L1266.0,553.4 L1266.5,554.0 L1267.0,553.2 L1267.5,553.4 L1268.0,553.8 L1268.5,552.8 L1269.0,553.3 L1269.5,553.8 L1270.0,552.8 L1270.5,552.2 L1271.0,553.8 L1271.5,553.0 L1272.0,553.9 L1272.5,552.3 L1273.0,553.2 L1273.5,551.8 L1274.0,552.0 L1274.5,552.6 L1275.0,552.6 L1275.5,552.8 L1276.0,552.8 L1276.5,551.7 L1277.0,553.2 L1277.5,553.4 L1278.0,552.8 L1278.5,554.1 L1279.0,553.3 L1279.5,552.3 L1280.0,552.7 L1280.5,552.5 L1281.0,552.8 L1281.5,553.9 L1282.0,552.7 L1282.5,551.9 L1283.0,552.4 L1283.5,553.5 L1284.0,552.2 L1284.5,553.1 L1285.0,553.7 L1285.5,554.0 L1286.0,554.0 L1286.5,552.3 L1287.0,553.2 L1287.5,553.6 L1288.0,554.0 L1288.5,554.0 L1289.0,554.1 L1289.5,554.0 L1290.0,552.0 L1290.5,551.9 L1291.0,553.7 L1291.5,553.1 L1292.0,553.6 L1292.5,553.2 L1293.0,551.8 L1293.5,552.4 L1294.0,552.6 L1294.5,553.3 L1295.0,552.0 L1295.5,553.5 L1296.0,551.7 L1296.5,553.6 L1297.0,551.9 L1297.5,552.2 L1298.0,552.7 L1298.5,551.9 L1299.0,553.3 L1299.5,552.5 L1300.0,552.2 L1300.5,553.4 L1301.0,552.6 L1301.5,553.1 L1302.0,552.0 L1302.5,551.9 L1303.0,552.0 L1303.5,552.1 L1304.0,552.0 L1304.5,552.2 L1305.0,553.6 L1305.5,552.9 L1306.0,554.0 L1306.5,553.9 L1307.0,552.9 L1307.5,553.7 L1308.0,554.1 L1308.5,553.9 L1309.0,553.2 L1309.5,553.1 L1310.0,553.4 L1310.0,569.4 L1309.5,569.7 L1309.0,569.6 L1308.5,568.9 L1308.0,568.7 L1307.5,569.1 L1307.0,569.9 L1306.5,568.9 L1306.0,568.8 L1305.5,569.9 L1305.0,569.2 L1304.5,570.6 L1304.0,570.8 L1303.5,570.7 L1303.0,570.8 L1302.5,570.9 L1302.0,570.8 L1301.5,569.7 L1301.0,570.2 L1300.5,569.4 L1300.0,570.6 L1299.5,570.3 L1299.0,569.5 L1298.5,570.9 L1298.0,570.1 L1297.5,570.6 L1297.0,570.9 L1296.5,569.2 L1296.0,571.1 L1295.5,569.3 L1295.0,570.8 L1294.5,569.5 L1294.0,570.2 L1293.5,570.4 L1293.0,571.0 L1292.5,569.6 L1292.0,569.2 L1291.5,569.7 L1291.0,569.1 L1290.5,570.9 L1290.0,570.8 L1289.5,568.8 L1289.0,568.7 L1288.5,568.8 L1288.0,568.8 L1287.5,569.2 L1287.0,569.6 L1286.5,570.5 L1286.0,568.8 L1285.5,568.8 L1285.0,569.1 L1284.5,569.7 L1284.0,570.6 L1283.5,569.3 L1283.0,570.4 L1282.5,570.9 L1282.0,570.1 L1281.5,568.9 L1281.0,570.0 L1280.5,570.3 L1280.0,570.1 L1279.5,570.5 L1279.0,569.5 L1278.5,568.7 L1278.0,570.0 L1277.5,569.4 L1277.0,569.6 L1276.5,571.1 L1276.0,570.0 L1275.5,570.0 L1275.0,570.2 L1274.5,570.2 L1274.0,570.8 L1273.5,571.0 L1273.0,569.6 L1272.5,570.5 L1272.0,568.9 L1271.5,569.8 L1271.0,569.0 L1270.5,570.6 L1270.0,570.0 L1269.5,569.0 L1269.0,569.5 L1268.5,570.0 L1268.0,569.0 L1267.5,569.4 L1267.0,569.6 L1266.5,568.8 L1266.0,569.4 L1265.5,569.4 L1265.0,569.0 L1264.5,570.2 L1264.0,570.0 L1263.5,570.0 L1263.0,568.8 L1262.5,569.9 L1262.0,569.9 L1261.5,570.7 L1261.0,569.5 L1260.5,569.8 L1260.0,570.5 L1259.5,571.0 L1259.0,569.7 L1258.5,568.9 L1258.0,568.8 L1257.5,568.8 L1257.0,569.5 L1256.5,569.6 L1256.0,568.9 L1255.5,570.6 L1255.0,570.1 L1254.5,569.8 L1254.0,569.4 L1253.5,569.1 L1253.0,570.6 L1252.5,569.5 L1252.0,570.1 L1251.5,570.0 L1251.0,570.6 L1250.5,569.6 L1250.0,569.8 L1249.5,569.9 L1249.0,569.0 L1248.5,570.5 L1248.0,569.4 L1247.5,570.4 L1247.0,568.8 L1246.5,569.6 L1246.0,570.6 L1245.5,570.8 L1245.0,570.8 L1244.5,569.7 L1244.0,571.0 L1243.5,569.9 L1243.0,570.9 L1242.5,569.4 L1242.0,570.4 L1241.5,568.9 L1241.0,570.4 L1240.5,570.0 L1240.0,569.3 L1239.5,569.5 L1239.0,570.1 L1238.5,568.7 L1238.0,570.7 L1237.5,569.2 L1237.0,569.8 L1236.5,569.8 L1236.0,569.8 L1235.5,569.0 L1235.0,569.9 L1234.5,570.2 L1234.0,569.3 L1233.5,570.6 L1233.0,568.7 L1232.5,568.7 L1232.0,570.0 L1231.5,569.1 L1231.0,569.0 L1230.5,570.7 L1230.0,569.0 L1229.5,570.0 L1229.0,569.2 L1228.5,569.4 L1228.0,569.3 L1227.5,569.1 L1227.0,569.5 L1226.5,569.7 L1226.0,569.3 L1225.5,569.4 L1225.0,569.2 L1224.5,568.9 L1224.0,568.9 L1223.5,568.5 L1223.0,569.8 L1222.5,569.4 L1222.0,569.3 L1221.5,569.0 L1221.0,570.7 L1220.5,570.5 L1220.0,568.5 L1219.5,568.8 L1219.0,570.0 L1218.5,570.5 L1218.0,570.2 L1217.5,569.8 L1217.0,570.2 L1216.5,570.6 L1216.0,570.3 L1215.5,569.7 L1215.0,569.5 L1214.5,569.5 L1214.0,568.9 L1213.5,569.7 L1213.0,570.2 L1212.5,568.7 L1212.0,568.9 L1211.5,570.3 L1211.0,569.4 L1210.5,570.0 L1210.0,568.9 L1209.5,568.6 L1209.0,570.5 L1208.5,569.5 L1208.0,569.5 L1207.5,570.4 L1207.0,568.5 L1206.5,570.2 L1206.0,569.0 L1205.5,569.1 L1205.0,569.1 L1204.5,568.3 L1204.0,568.5 L1203.5,570.3 L1203.0,569.3 L1202.5,570.2 L1202.0,570.4 L1201.5,568.6 L1201.0,568.4 L1200.5,570.3 L1200.0,569.1 L1199.5,569.9 L1199.0,570.2 L1198.5,570.0 L1198.0,570.0 L1197.5,568.4 L1197.0,570.4 L1196.5,568.7 L1196.0,568.5 L1195.5,569.8 L1195.0,569.3 L1194.5,569.4 L1194.0,570.5 L1193.5,569.6 L1193.0,568.8 L1192.5,568.7 L1192.0,569.8 L1191.5,568.9 L1191.0,568.7 L1190.5,569.0 L1190.0,570.2 L1189.5,570.6 L1189.0,569.6 L1188.5,570.4 L1188.0,570.2 L1187.5,568.8 L1187.0,569.4 L1186.5,569.4 L1186.0,568.5 L1185.5,569.6 L1185.0,570.3 L1184.5,570.5 L1184.0,569.2 L1183.5,570.3 L1183.0,570.4 L1182.5,569.3 L1182.0,569.8 L1181.5,569.2 L1181.0,570.4 L1180.5,568.6 L1180.0,569.6 L1179.5,570.0 L1179.0,569.5 L1178.5,569.8 L1178.0,570.1 L1177.5,568.7 L1177.0,570.4 L1176.5,568.8 L1176.0,570.6 L1175.5,570.7 L1175.0,570.4 L1174.5,570.4 L1174.0,570.8 L1173.5,569.8 L1173.0,570.5 L1172.5,569.9 L1172.0,570.1 L1171.5,570.7 L1171.0,570.7 L1170.5,568.9 L1170.0,569.1 L1169.5,569.0 L1169.0,569.3 L1168.5,569.0 L1168.0,569.3 L1167.5,570.3 L1167.0,568.7 L1166.5,569.7 L1166.0,570.2 L1165.5,570.4 L1165.0,568.6 L1164.5,570.3 L1164.0,570.2 L1163.5,569.3 L1163.0,570.4 L1162.5,569.2 L1162.0,570.1 L1161.5,570.9 L1161.0,569.8 L1160.5,570.2 L1160.0,569.4 L1159.5,570.6 L1159.0,570.8 L1158.5,569.5 L1158.0,569.8 L1157.5,568.8 L1157.0,570.9 L1156.5,570.6 L1156.0,568.9 L1155.5,571.0 L1155.0,570.3 L1154.5,569.9 L1154.0,569.1 L1153.5,570.7 L1153.0,570.2 L1152.5,570.5 L1152.0,570.4 L1151.5,570.6 L1151.0,569.3 L1150.5,570.7 L1150.0,569.2 L1149.5,570.9 L1149.0,569.2 L1148.5,570.6 L1148.0,570.5 L1147.5,568.9 L1147.0,570.0 L1146.5,570.1 L1146.0,569.6 L1145.5,570.6 L1145.0,570.8 L1144.5,570.2 L1144.0,569.8 L1143.5,569.2 L1143.0,569.3 L1142.5,570.1 L1142.0,570.9 L1141.5,570.8 L1141.0,570.5 L1140.5,569.5 L1140.0,570.0 L1139.5,569.7 L1139.0,569.0 L1138.5,569.7 L1138.0,569.0 L1137.5,569.3 L1137.0,569.1 L1136.5,568.6 L1136.0,568.6 L1135.5,569.6 L1135.0,569.0 L1134.5,570.8 L1134.0,568.6 L1133.5,570.6 L1133.0,568.8 L1132.5,568.7 L1132.0,570.5 L1131.5,569.7 L1131.0,570.0 L1130.5,568.6 L1130.0,570.6 L1129.5,569.8 L1129.0,570.4 L1128.5,569.8 L1128.0,569.7 L1127.5,569.1 L1127.0,569.4 L1126.5,570.6 L1126.0,570.1 L1125.5,570.0 L1125.0,569.1 L1124.5,570.1 L1124.0,570.4 L1123.5,570.5 L1123.0,568.6 L1122.5,570.5 L1122.0,568.5 L1121.5,569.8 L1121.0,570.0 L1120.5,569.3 L1120.0,570.5 L1119.5,569.7 L1119.0,569.3 L1118.5,568.8 L1118.0,569.1 L1117.5,568.6 L1117.0,568.9 L1116.5,570.6 L1116.0,569.4 L1115.5,569.2 L1115.0,569.1 L1114.5,568.7 L1114.0,568.7 L1113.5,569.9 L1113.0,570.4 L1112.5,569.4 L1112.0,570.0 L1111.5,569.6 L1111.0,569.7 L1110.5,568.9 L1110.0,570.2 L1109.5,568.5 L1109.0,570.2 L1108.5,569.4 L1108.0,569.8 L1107.5,569.0 L1107.0,568.9 L1106.5,569.0 L1106.0,568.1 L1105.5,568.9 L1105.0,569.0 L1104.5,567.7 L1104.0,567.9 L1103.5,567.3 L1103.0,566.8 L1102.5,568.2 L1102.0,568.1 L1101.5,567.9 L1101.0,566.6 L1100.5,566.9 L1100.0,567.6 L1099.5,566.4 L1099.0,566.7 L1098.5,566.5 L1098.0,566.6 L1097.5,566.1 L1097.0,566.5 L1096.5,566.6 L1096.0,565.9 L1095.5,566.3 L1095.0,566.0 L1094.5,566.3 L1094.0,567.0 L1093.5,565.8 L1093.0,566.7 L1092.5,565.7 L1092.0,566.2 L1091.5,566.1 L1091.0,566.2 L1090.5,565.6 L1090.0,566.2 L1089.5,565.8 L1089.0,565.7 L1088.5,566.3 L1088.0,566.6 L1087.5,565.8 L1087.0,566.7 L1086.5,566.1 L1086.0,566.3 L1085.5,565.7 L1085.0,566.4 L1084.5,565.6 L1084.0,566.1 L1083.5,565.6 L1083.0,565.7 L1082.5,565.9 L1082.0,566.1 L1081.5,566.3 L1081.0,566.3 L1080.5,566.0 L1080.0,566.0 L1079.5,566.5 L1079.0,566.5 L1078.5,565.9 L1078.0,566.1 L1077.5,566.3 L1077.0,566.8 L1076.5,566.0 L1076.0,567.3 L1075.5,566.8 L1075.0,567.4 L1074.5,566.5 L1074.0,567.1 L1073.5,567.4 L1073.0,566.4 L1072.5,567.4 L1072.0,566.6 L1071.5,567.3 L1071.0,566.5 L1070.5,566.4 L1070.0,567.5 L1069.5,567.4 L1069.0,567.7 L1068.5,566.9 L1068.0,567.8 L1067.5,567.2 L1067.0,567.4 L1066.5,567.7 L1066.0,567.4 L1065.5,567.5 L1065.0,567.9 L1064.5,567.2 L1064.0,566.5 L1063.5,567.4 L1063.0,568.1 L1062.5,567.5 L1062.0,566.8 L1061.5,566.8 L1061.0,567.1 L1060.5,568.1 L1060.0,568.5 L1059.5,569.5 L1059.0,569.7 L1058.5,568.7 L1058.0,569.0 L1057.5,569.0 L1057.0,570.5 L1056.5,569.3 L1056.0,570.7 L1055.5,569.6 L1055.0,570.7 L1054.5,572.1 L1054.0,570.2 L1053.5,571.1 L1053.0,570.7 L1052.5,569.8 L1052.0,570.5 L1051.5,572.0 L1051.0,571.3 L1050.5,570.4 L1050.0,571.0 L1049.5,570.1 L1049.0,570.9 L1048.5,570.8 L1048.0,571.1 L1047.5,571.6 L1047.0,571.0 L1046.5,569.8 L1046.0,569.7 L1045.5,570.8 L1045.0,571.3 L1044.5,571.4 L1044.0,570.5 L1043.5,570.3 L1043.0,569.8 L1042.5,569.8 L1042.0,569.7 L1041.5,571.2 L1041.0,570.7 L1040.5,570.1 L1040.0,570.6 L1039.5,571.1 L1039.0,569.7 L1038.5,570.9 L1038.0,569.9 L1037.5,570.2 L1037.0,571.4 L1036.5,571.3 L1036.0,570.1 L1035.5,569.6 L1035.0,570.5 L1034.5,571.3 L1034.0,571.8 L1033.5,571.1 L1033.0,571.7 L1032.5,571.9 L1032.0,570.8 L1031.5,571.8 L1031.0,570.3 L1030.5,571.2 L1030.0,572.0 L1029.5,570.9 L1029.0,571.4 L1028.5,571.3 L1028.0,569.8 L1027.5,570.7 L1027.0,570.3 L1026.5,570.1 L1026.0,570.0 L1025.5,569.9 L1025.0,571.2 L1024.5,571.7 L1024.0,571.9 L1023.5,571.1 L1023.0,570.4 L1022.5,570.4 L1022.0,570.5 L1021.5,570.1 L1021.0,570.2 L1020.5,571.6 L1020.0,569.6 L1019.5,570.2 L1019.0,571.9 L1018.5,569.6 L1018.0,571.6 L1017.5,571.1 L1017.0,570.3 L1016.5,570.3 L1016.0,569.9 L1015.5,570.9 L1015.0,570.8 L1014.5,571.5 L1014.0,570.0 L1013.5,570.7 L1013.0,571.2 L1012.5,569.6 L1012.0,571.6 L1011.5,570.8 L1011.0,571.6 L1010.5,570.5 L1010.0,570.6 L1009.5,569.9 L1009.0,570.5 L1008.5,569.9 L1008.0,569.3 L1007.5,570.3 L1007.0,570.5 L1006.5,570.5 L1006.0,569.4 L1005.5,571.5 L1005.0,569.7 L1004.5,571.1 L1004.0,570.3 L1003.5,570.1 L1003.0,571.1 L1002.5,571.6 L1002.0,570.0 L1001.5,570.9 L1001.0,571.4 L1000.5,571.4 L1000.0,571.1 L999.5,571.0 L999.0,569.3 L998.5,569.5 L998.0,571.0 L997.5,569.4 L997.0,569.4 L996.5,570.4 L996.0,570.5 L995.5,570.0 L995.0,570.9 L994.5,569.7 L994.0,570.3 L993.5,571.0 L993.0,570.4 L992.5,571.2 L992.0,569.3 L991.5,571.5 L991.0,571.4 L990.5,570.6 L990.0,569.2 L989.5,569.7 L989.0,570.8 L988.5,569.5 L988.0,569.8 L987.5,568.6 L987.0,570.8 L986.5,569.7 L986.0,568.7 L985.5,570.3 L985.0,569.5 L984.5,568.6 L984.0,569.2 L983.5,569.6 L983.0,567.7 L982.5,569.5 L982.0,568.5 L981.5,567.4 L981.0,568.3 L980.5,567.2 L980.0,567.0 L979.5,567.9 L979.0,567.8 L978.5,566.6 L978.0,566.0 L977.5,566.0 L977.0,566.5 L976.5,565.6 L976.0,565.5 L975.5,565.3 L975.0,565.6 L974.5,565.4 L974.0,565.0 L973.5,564.9 L973.0,565.5 L972.5,564.9 L972.0,565.0 L971.5,565.9 L971.0,565.9 L970.5,565.5 L970.0,565.9 L969.5,565.4 L969.0,565.4 L968.5,565.1 L968.0,565.6 L967.5,565.3 L967.0,565.0 L966.5,565.3 L966.0,565.8 L965.5,565.4 L965.0,564.9 L964.5,565.5 L964.0,565.3 L963.5,565.0 L963.0,565.6 L962.5,565.6 L962.0,565.5 L961.5,565.1 L961.0,565.5 L960.5,564.8 L960.0,565.2 L959.5,565.4 L959.0,565.1 L958.5,565.1 L958.0,564.9 L957.5,565.8 L957.0,565.0 L956.5,565.1 L956.0,565.0 L955.5,565.3 L955.0,565.7 L954.5,565.6 L954.0,565.7 L953.5,565.8 L953.0,564.8 L952.5,565.3 L952.0,565.8 L951.5,564.9 L951.0,565.3 L950.5,565.0 L950.0,565.5 L949.5,565.1 L949.0,565.1 L948.5,564.9 L948.0,565.6 L947.5,565.7 L947.0,565.8 L946.5,565.8 L946.0,565.0 L945.5,565.6 L945.0,564.7 L944.5,565.5 L944.0,565.0 L943.5,565.2 L943.0,565.5 L942.5,564.8 L942.0,564.8 L941.5,564.7 L941.0,565.3 L940.5,565.0 L940.0,564.9 L939.5,564.9 L939.0,565.3 L938.5,564.9 L938.0,565.7 L937.5,565.3 L937.0,565.5 L936.5,564.8 L936.0,564.7 L935.5,565.6 L935.0,565.4 L934.5,565.0 L934.0,564.6 L933.5,564.7 L933.0,565.2 L932.5,565.1 L932.0,565.4 L931.5,564.9 L931.0,565.1 L930.5,565.2 L930.0,565.2 L929.5,564.6 L929.0,564.9 L928.5,565.6 L928.0,564.6 L927.5,565.3 L927.0,565.2 L926.5,564.7 L926.0,565.2 L925.5,565.4 L925.0,565.3 L924.5,565.2 L924.0,565.3 L923.5,564.9 L923.0,565.0 L922.5,565.4 L922.0,565.5 L921.5,565.2 L921.0,564.8 L920.5,565.0 L920.0,564.6 L919.5,565.0 L919.0,565.1 L918.5,565.1 L918.0,565.0 L917.5,565.0 L917.0,564.9 L916.5,565.2 L916.0,564.5 L915.5,564.5 L915.0,564.7 L914.5,564.5 L914.0,565.3 L913.5,564.8 L913.0,564.6 L912.5,564.5 L912.0,565.1 L911.5,565.3 L911.0,565.4 L910.5,565.2 L910.0,564.7 L909.5,564.6 L909.0,565.3 L908.5,564.4 L908.0,564.4 L907.5,564.9 L907.0,565.3 L906.5,565.0 L906.0,565.0 L905.5,565.0 L905.0,564.4 L904.5,564.5 L904.0,564.6 L903.5,564.4 L903.0,564.9 L902.5,564.7 L902.0,565.0 L901.5,564.8 L901.0,565.1 L900.5,565.1 L900.0,564.9 L899.5,564.5 L899.0,565.0 L898.5,564.8 L898.0,565.3 L897.5,565.1 L897.0,565.2 L896.5,564.5 L896.0,564.8 L895.5,565.3 L895.0,564.8 L894.5,564.9 L894.0,565.2 L893.5,565.1 L893.0,565.0 L892.5,565.2 L892.0,565.2 L891.5,564.9 L891.0,565.5 L890.5,565.4 L890.0,564.7 L889.5,565.1 L889.0,565.5 L888.5,565.2 L888.0,565.7 L887.5,565.1 L887.0,565.3 L886.5,565.1 L886.0,565.5 L885.5,565.3 L885.0,565.0 L884.5,565.1 L884.0,565.7 L883.5,566.0 L883.0,565.2 L882.5,565.9 L882.0,565.3 L881.5,566.0 L881.0,565.0 L880.5,565.5 L880.0,565.7 L879.5,565.1 L879.0,565.8 L878.5,565.1 L878.0,565.6 L877.5,565.3 L877.0,565.1 L876.5,565.7 L876.0,565.2 L875.5,564.9 L875.0,565.2 L874.5,565.1 L874.0,565.5 L873.5,565.4 L873.0,565.5 L872.5,565.0 L872.0,565.5 L871.5,564.9 L871.0,565.2 L870.5,564.7 L870.0,565.2 L869.5,564.8 L869.0,564.8 L868.5,565.4 L868.0,564.7 L867.5,565.4 L867.0,565.3 L866.5,565.0 L866.0,565.2 L865.5,565.7 L865.0,565.3 L864.5,566.4 L864.0,567.0 L863.5,567.2 L863.0,567.6 L862.5,568.5 L862.0,568.9 L861.5,568.8 L861.0,567.4 L860.5,567.3 L860.0,567.6 L859.5,567.0 L859.0,566.5 L858.5,566.8 L858.0,567.7 L857.5,566.4 L857.0,567.0 L856.5,566.6 L856.0,566.9 L855.5,565.5 L855.0,566.2 L854.5,566.0 L854.0,566.4 L853.5,566.0 L853.0,565.7 L852.5,565.8 L852.0,565.7 L851.5,565.0 L851.0,565.8 L850.5,565.6 L850.0,564.9 L849.5,565.7 L849.0,564.9 L848.5,565.5 L848.0,565.5 L847.5,565.0 L847.0,565.2 L846.5,565.1 L846.0,565.1 L845.5,564.5 L845.0,564.7 L844.5,565.1 L844.0,564.6 L843.5,564.7 L843.0,564.6 L842.5,564.7 L842.0,564.7 L841.5,564.5 L841.0,564.6 L840.5,564.6 L840.0,564.3 L839.5,564.6 L839.0,564.1 L838.5,564.1 L838.0,564.5 L837.5,564.4 L837.0,564.4 L836.5,564.2 L836.0,564.0 L835.5,564.6 L835.0,564.5 L834.5,564.4 L834.0,564.7 L833.5,564.2 L833.0,564.1 L832.5,564.3 L832.0,564.5 L831.5,564.0 L831.0,564.1 L830.5,564.5 L830.0,564.0 L829.5,564.6 L829.0,564.5 L828.5,564.1 L828.0,564.1 L827.5,564.3 L827.0,564.3 L826.5,563.9 L826.0,564.3 L825.5,564.4 L825.0,564.6 L824.5,564.1 L824.0,564.1 L823.5,564.5 L823.0,564.2 L822.5,564.1 L822.0,564.6 L821.5,564.2 L821.0,564.0 L820.5,564.0 L820.0,564.2 L819.5,563.9 L819.0,564.4 L818.5,564.3 L818.0,564.5 L817.5,564.6 L817.0,564.2 L816.5,563.9 L816.0,564.5 L815.5,564.6 L815.0,563.9 L814.5,564.0 L814.0,564.2 L813.5,564.1 L813.0,564.5 L812.5,564.0 L812.0,564.5 L811.5,564.3 L811.0,564.2 L810.5,564.1 L810.0,564.1 L809.5,564.3 L809.0,563.8 L808.5,564.0 L808.0,563.9 L807.5,564.2 L807.0,564.0 L806.5,564.3 L806.0,563.9 L805.5,564.1 L805.0,563.9 L804.5,563.9 L804.0,564.1 L803.5,564.2 L803.0,564.3 L802.5,564.5 L802.0,564.3 L801.5,564.4 L801.0,564.2 L800.5,564.4 L800.0,564.1 L799.5,564.1 L799.0,564.2 L798.5,564.1 L798.0,564.4 L797.5,563.9 L797.0,564.0 L796.5,564.0 L796.0,564.3 L795.5,563.9 L795.0,563.9 L794.5,564.6 L794.0,564.5 L793.5,564.0 L793.0,564.3 L792.5,564.6 L792.0,564.0 L791.5,564.2 L791.0,564.2 L790.5,564.2 L790.0,563.9 L789.5,564.5 L789.0,564.1 L788.5,564.3 L788.0,564.2 L787.5,564.6 L787.0,564.5 L786.5,563.9 L786.0,564.5 L785.5,564.5 L785.0,564.4 L784.5,564.2 L784.0,564.1 L783.5,564.1 L783.0,564.3 L782.5,564.3 L782.0,564.2 L781.5,564.5 L781.0,564.4 L780.5,564.5 L780.0,564.6 L779.5,564.6 L779.0,564.3 L778.5,564.7 L778.0,564.3 L777.5,564.1 L777.0,564.4 L776.5,564.3 L776.0,564.7 L775.5,564.2 L775.0,564.5 L774.5,564.7 L774.0,564.5 L773.5,564.0 L773.0,564.3 L772.5,564.6 L772.0,564.0 L771.5,564.7 L771.0,564.4 L770.5,564.4 L770.0,564.3 L769.5,564.3 L769.0,564.2 L768.5,564.7 L768.0,564.3 L767.5,564.2 L767.0,564.1 L766.5,564.0 L766.0,564.1 L765.5,564.0 L765.0,564.6 L764.5,564.3 L764.0,564.4 L763.5,564.2 L763.0,564.6 L762.5,564.2 L762.0,564.7 L761.5,564.1 L761.0,564.0 L760.5,564.0 L760.0,564.6 L759.5,564.6 L759.0,564.4 L758.5,564.0 L758.0,564.8 L757.5,564.6 L757.0,564.0 L756.5,564.3 L756.0,564.5 L755.5,564.5 L755.0,564.4 L754.5,564.3 L754.0,564.5 L753.5,564.7 L753.0,564.6 L752.5,563.2 L752.0,561.8 L751.5,561.8 L751.0,561.8 L750.5,561.8 L750.0,561.8 L749.5,561.8 L749.0,561.8 L748.5,561.8 L748.0,561.8 L747.5,561.8 L747.0,561.8 L746.5,561.8 L746.0,561.8 L745.5,561.8 L745.0,561.8 L744.5,561.8 L744.0,561.8 L743.5,561.8 L743.0,561.8 L742.5,561.8 L742.0,561.8 L741.5,561.8 L741.0,561.8Z" fill="#537a78"/><path d="M741.0,619.4 L741.5,619.4 L742.0,619.4 L742.5,619.4 L743.0,619.4 L743.5,619.4 L744.0,619.4 L744.5,619.4 L745.0,619.4 L745.5,619.4 L746.0,619.4 L746.5,619.4 L747.0,619.4 L747.5,619.4 L748.0,619.4 L748.5,619.4 L749.0,619.4 L749.5,619.4 L750.0,619.4 L750.5,619.4 L751.0,619.4 L751.5,619.4 L752.0,619.4 L752.5,619.1 L753.0,618.9 L753.5,618.7 L754.0,619.0 L754.5,618.7 L755.0,619.0 L755.5,619.0 L756.0,618.7 L756.5,619.0 L757.0,618.8 L757.5,618.7 L758.0,618.8 L758.5,619.0 L759.0,618.8 L759.5,618.8 L760.0,619.0 L760.5,618.7 L761.0,618.7 L761.5,618.8 L762.0,618.9 L762.5,619.0 L763.0,618.9 L763.5,618.9 L764.0,619.0 L764.5,619.0 L765.0,618.9 L765.5,618.9 L766.0,618.8 L766.5,618.7 L767.0,618.7 L767.5,618.9 L768.0,618.7 L768.5,619.0 L769.0,619.0 L769.5,618.8 L770.0,618.8 L770.5,618.9 L771.0,618.8 L771.5,618.8 L772.0,618.7 L772.5,618.7 L773.0,619.0 L773.5,618.8 L774.0,619.0 L774.5,619.0 L775.0,619.0 L775.5,618.8 L776.0,618.8 L776.5,618.7 L777.0,618.7 L777.5,618.7 L778.0,619.0 L778.5,618.7 L779.0,619.0 L779.5,618.7 L780.0,618.7 L780.5,619.0 L781.0,618.7 L781.5,618.8 L782.0,618.7 L782.5,618.9 L783.0,618.9 L783.5,618.9 L784.0,618.8 L784.5,618.8 L785.0,618.9 L785.5,618.9 L786.0,618.7 L786.5,618.9 L787.0,619.0 L787.5,618.9 L788.0,619.0 L788.5,619.0 L789.0,618.9 L789.5,618.7 L790.0,618.8 L790.5,618.8 L791.0,618.7 L791.5,618.9 L792.0,619.0 L792.5,619.0 L793.0,618.9 L793.5,618.8 L794.0,618.8 L794.5,618.8 L795.0,618.8 L795.5,618.8 L796.0,618.8 L796.5,619.0 L797.0,618.8 L797.5,618.7 L798.0,619.0 L798.5,619.0 L799.0,618.8 L799.5,619.0 L800.0,619.0 L800.5,618.9 L801.0,618.9 L801.5,619.0 L802.0,618.9 L802.5,618.8 L803.0,618.9 L803.5,618.7 L804.0,618.7 L804.5,618.7 L805.0,619.0 L805.5,618.9 L806.0,619.0 L806.5,619.0 L807.0,618.9 L807.5,618.8 L808.0,618.7 L808.5,618.8 L809.0,618.8 L809.5,618.7 L810.0,618.7 L810.5,618.9 L811.0,618.8 L811.5,618.7 L812.0,618.9 L812.5,618.8 L813.0,618.9 L813.5,618.9 L814.0,618.9 L814.5,618.8 L815.0,619.0 L815.5,618.8 L816.0,618.8 L816.5,618.7 L817.0,619.0 L817.5,618.9 L818.0,618.7 L818.5,618.7 L819.0,618.9 L819.5,619.0 L820.0,618.7 L820.5,618.8 L821.0,618.9 L821.5,618.8 L822.0,619.0 L822.5,618.9 L823.0,618.9 L823.5,618.7 L824.0,619.0 L824.5,619.0 L825.0,619.0 L825.5,618.8 L826.0,618.7 L826.5,618.7 L827.0,618.9 L827.5,618.7 L828.0,618.7 L828.5,619.0 L829.0,618.8 L829.5,619.0 L830.0,618.9 L830.5,618.8 L831.0,618.9 L831.5,618.8 L832.0,619.0 L832.5,618.8 L833.0,618.9 L833.5,618.8 L834.0,618.8 L834.5,618.7 L835.0,618.8 L835.5,618.7 L836.0,618.8 L836.5,618.8 L837.0,618.9 L837.5,618.9 L838.0,619.0 L838.5,618.7 L839.0,619.0 L839.5,618.9 L840.0,618.8 L840.5,619.0 L841.0,619.0 L841.5,618.7 L842.0,618.9 L842.5,618.9 L843.0,618.7 L843.5,618.8 L844.0,618.7 L844.5,618.8 L845.0,618.8 L845.5,618.9 L846.0,618.8 L846.5,618.8 L847.0,618.7 L847.5,618.9 L848.0,618.7 L848.5,618.8 L849.0,618.8 L849.5,618.8 L850.0,618.7 L850.5,619.0 L851.0,619.0 L851.5,619.0 L852.0,618.7 L852.5,618.9 L853.0,619.0 L853.5,618.9 L854.0,618.8 L854.5,619.0 L855.0,618.7 L855.5,619.0 L856.0,618.8 L856.5,618.8 L857.0,618.8 L857.5,619.0 L858.0,618.7 L858.5,619.0 L859.0,618.9 L859.5,618.8 L860.0,619.0 L860.5,618.7 L861.0,618.7 L861.5,618.9 L862.0,619.0 L862.5,618.9 L863.0,618.9 L863.5,618.7 L864.0,619.0 L864.5,619.0 L865.0,618.9 L865.5,618.7 L866.0,618.9 L866.5,618.7 L867.0,618.8 L867.5,618.9 L868.0,618.7 L868.5,618.7 L869.0,618.7 L869.5,618.7 L870.0,618.9 L870.5,618.8 L871.0,618.8 L871.5,619.0 L872.0,618.9 L872.5,618.9 L873.0,618.7 L873.5,619.0 L874.0,618.8 L874.5,618.8 L875.0,619.0 L875.5,618.7 L876.0,618.8 L876.5,618.9 L877.0,618.9 L877.5,618.9 L878.0,618.9 L878.5,618.7 L879.0,618.8 L879.5,618.7 L880.0,618.9 L880.5,618.8 L881.0,618.7 L881.5,618.7 L882.0,618.9 L882.5,619.0 L883.0,618.8 L883.5,618.7 L884.0,618.9 L884.5,618.2 L885.0,617.9 L885.5,617.2 L886.0,617.3 L886.5,617.0 L887.0,616.8 L887.5,616.8 L888.0,616.9 L888.5,616.8 L889.0,616.7 L889.5,616.7 L890.0,617.4 L890.5,617.1 L891.0,616.8 L891.5,617.6 L892.0,617.1 L892.5,617.0 L893.0,617.3 L893.5,617.7 L894.0,617.2 L894.5,617.3 L895.0,617.5 L895.5,617.5 L896.0,617.2 L896.5,616.8 L897.0,616.8 L897.5,617.7 L898.0,617.4 L898.5,617.7 L899.0,617.6 L899.5,617.3 L900.0,617.4 L900.5,617.6 L901.0,616.8 L901.5,616.9 L902.0,617.3 L902.5,617.2 L903.0,617.3 L903.5,617.5 L904.0,617.2 L904.5,616.8 L905.0,617.3 L905.5,617.4 L906.0,617.8 L906.5,616.9 L907.0,617.7 L907.5,617.3 L908.0,617.5 L908.5,617.2 L909.0,617.6 L909.5,617.5 L910.0,617.7 L910.5,617.7 L911.0,616.9 L911.5,617.8 L912.0,617.0 L912.5,617.2 L913.0,616.9 L913.5,617.2 L914.0,617.3 L914.5,617.2 L915.0,617.8 L915.5,617.4 L916.0,617.3 L916.5,618.1 L917.0,618.2 L917.5,618.4 L918.0,618.6 L918.5,618.6 L919.0,618.7 L919.5,618.5 L920.0,618.8 L920.5,618.9 L921.0,618.9 L921.5,618.9 L922.0,618.7 L922.5,618.9 L923.0,618.7 L923.5,618.6 L924.0,618.7 L924.5,618.7 L925.0,618.6 L925.5,618.9 L926.0,618.7 L926.5,618.8 L927.0,618.5 L927.5,618.7 L928.0,618.6 L928.5,618.7 L929.0,618.7 L929.5,618.9 L930.0,618.8 L930.5,618.8 L931.0,618.6 L931.5,618.6 L932.0,618.7 L932.5,618.8 L933.0,618.9 L933.5,618.5 L934.0,618.6 L934.5,618.6 L935.0,618.6 L935.5,618.6 L936.0,618.5 L936.5,618.7 L937.0,618.8 L937.5,618.5 L938.0,618.6 L938.5,618.6 L939.0,618.8 L939.5,618.7 L940.0,618.4 L940.5,618.6 L941.0,618.8 L941.5,618.5 L942.0,618.8 L942.5,618.7 L943.0,618.5 L943.5,618.6 L944.0,618.6 L944.5,618.5 L945.0,618.5 L945.5,618.6 L946.0,618.7 L946.5,618.7 L947.0,618.8 L947.5,618.6 L948.0,618.4 L948.5,618.8 L949.0,618.7 L949.5,618.4 L950.0,618.7 L950.5,618.5 L951.0,618.6 L951.5,618.4 L952.0,618.3 L952.5,618.5 L953.0,618.4 L953.5,618.2 L954.0,618.1 L954.5,618.2 L955.0,618.3 L955.5,618.5 L956.0,618.1 L956.5,617.9 L957.0,618.1 L957.5,618.4 L958.0,617.9 L958.5,618.3 L959.0,617.8 L959.5,617.7 L960.0,618.2 L960.5,618.0 L961.0,618.3 L961.5,618.3 L962.0,618.0 L962.5,617.7 L963.0,617.8 L963.5,617.4 L964.0,618.1 L964.5,617.5 L965.0,617.8 L965.5,618.1 L966.0,618.2 L966.5,617.6 L967.0,617.7 L967.5,617.6 L968.0,618.2 L968.5,617.5 L969.0,617.9 L969.5,617.7 L970.0,618.0 L970.5,617.7 L971.0,618.0 L971.5,617.6 L972.0,617.8 L972.5,618.0 L973.0,618.3 L973.5,618.1 L974.0,618.3 L974.5,618.3 L975.0,618.0 L975.5,618.1 L976.0,618.2 L976.5,618.4 L977.0,618.2 L977.5,618.2 L978.0,618.3 L978.5,617.9 L979.0,618.1 L979.5,618.1 L980.0,618.0 L980.5,618.5 L981.0,618.3 L981.5,618.0 L982.0,618.1 L982.5,618.1 L983.0,618.2 L983.5,618.4 L984.0,618.1 L984.5,618.3 L985.0,618.1 L985.5,618.3 L986.0,618.4 L986.5,618.2 L987.0,618.3 L987.5,618.5 L988.0,618.7 L988.5,618.2 L989.0,618.2 L989.5,618.6 L990.0,618.6 L990.5,618.3 L991.0,618.5 L991.5,618.6 L992.0,618.6 L992.5,618.6 L993.0,618.4 L993.5,618.3 L994.0,618.6 L994.5,618.7 L995.0,618.8 L995.5,618.4 L996.0,618.8 L996.5,618.6 L997.0,618.6 L997.5,618.7 L998.0,618.8 L998.5,618.5 L999.0,618.6 L999.5,618.6 L1000.0,618.9 L1000.5,618.7 L1001.0,618.9 L1001.5,618.6 L1002.0,618.8 L1002.5,618.9 L1003.0,618.9 L1003.5,618.7 L1004.0,618.8 L1004.5,618.8 L1005.0,618.8 L1005.5,618.7 L1006.0,618.6 L1006.5,618.6 L1007.0,618.9 L1007.5,618.7 L1008.0,618.9 L1008.5,618.9 L1009.0,618.6 L1009.5,618.7 L1010.0,618.8 L1010.5,618.6 L1011.0,618.8 L1011.5,618.7 L1012.0,618.7 L1012.5,618.7 L1013.0,618.7 L1013.5,618.9 L1014.0,618.8 L1014.5,618.6 L1015.0,618.6 L1015.5,618.7 L1016.0,618.8 L1016.5,618.9 L1017.0,618.5 L1017.5,618.6 L1018.0,618.8 L1018.5,618.9 L1019.0,618.6 L1019.5,618.6 L1020.0,618.8 L1020.5,618.9 L1021.0,618.6 L1021.5,618.9 L1022.0,618.6 L1022.5,618.7 L1023.0,618.6 L1023.5,618.7 L1024.0,618.6 L1024.5,618.7 L1025.0,618.6 L1025.5,618.7 L1026.0,618.6 L1026.5,618.6 L1027.0,618.9 L1027.5,618.9 L1028.0,618.7 L1028.5,618.5 L1029.0,618.8 L1029.5,618.8 L1030.0,618.7 L1030.5,618.7 L1031.0,618.5 L1031.5,618.6 L1032.0,618.9 L1032.5,618.6 L1033.0,618.7 L1033.5,618.7 L1034.0,618.7 L1034.5,618.6 L1035.0,618.5 L1035.5,618.6 L1036.0,618.6 L1036.5,618.6 L1037.0,618.7 L1037.5,618.4 L1038.0,618.6 L1038.5,618.7 L1039.0,618.8 L1039.5,618.6 L1040.0,618.4 L1040.5,618.5 L1041.0,618.7 L1041.5,618.8 L1042.0,618.8 L1042.5,618.4 L1043.0,618.5 L1043.5,618.7 L1044.0,618.5 L1044.5,618.7 L1045.0,618.5 L1045.5,618.7 L1046.0,618.5 L1046.5,618.5 L1047.0,618.5 L1047.5,618.5 L1048.0,618.8 L1048.5,618.4 L1049.0,618.5 L1049.5,618.4 L1050.0,618.5 L1050.5,618.6 L1051.0,618.5 L1051.5,618.7 L1052.0,618.5 L1052.5,618.5 L1053.0,618.7 L1053.5,618.7 L1054.0,618.6 L1054.5,618.4 L1055.0,618.7 L1055.5,618.7 L1056.0,618.5 L1056.5,618.5 L1057.0,618.8 L1057.5,618.7 L1058.0,618.8 L1058.5,618.7 L1059.0,618.5 L1059.5,618.5 L1060.0,618.4 L1060.5,618.4 L1061.0,618.8 L1061.5,618.5 L1062.0,618.4 L1062.5,618.8 L1063.0,618.6 L1063.5,618.6 L1064.0,618.7 L1064.5,618.6 L1065.0,618.8 L1065.5,618.6 L1066.0,618.5 L1066.5,618.4 L1067.0,618.6 L1067.5,618.8 L1068.0,618.5 L1068.5,618.6 L1069.0,618.7 L1069.5,618.4 L1070.0,618.4 L1070.5,618.4 L1071.0,618.8 L1071.5,618.5 L1072.0,618.8 L1072.5,618.5 L1073.0,618.6 L1073.5,618.7 L1074.0,618.7 L1074.5,618.5 L1075.0,618.7 L1075.5,618.5 L1076.0,618.7 L1076.5,618.8 L1077.0,618.8 L1077.5,618.4 L1078.0,618.4 L1078.5,618.7 L1079.0,618.6 L1079.5,618.6 L1080.0,618.3 L1080.5,618.5 L1081.0,618.6 L1081.5,618.7 L1082.0,618.5 L1082.5,618.4 L1083.0,618.5 L1083.5,618.5 L1084.0,618.1 L1084.5,618.5 L1085.0,618.5 L1085.5,618.4 L1086.0,618.4 L1086.5,618.2 L1087.0,618.5 L1087.5,618.5 L1088.0,618.2 L1088.5,618.3 L1089.0,618.3 L1089.5,618.3 L1090.0,618.1 L1090.5,618.2 L1091.0,617.9 L1091.5,618.1 L1092.0,617.7 L1092.5,617.9 L1093.0,618.1 L1093.5,617.5 L1094.0,618.0 L1094.5,617.7 L1095.0,617.9 L1095.5,617.8 L1096.0,617.4 L1096.5,617.6 L1097.0,617.4 L1097.5,617.7 L1098.0,617.8 L1098.5,617.2 L1099.0,617.8 L1099.5,617.9 L1100.0,617.3 L1100.5,617.6 L1101.0,617.6 L1101.5,617.5 L1102.0,617.7 L1102.5,617.5 L1103.0,618.0 L1103.5,617.5 L1104.0,617.4 L1104.5,617.7 L1105.0,617.7 L1105.5,618.1 L1106.0,618.1 L1106.5,617.3 L1107.0,617.8 L1107.5,617.7 L1108.0,618.2 L1108.5,617.5 L1109.0,618.2 L1109.5,618.0 L1110.0,617.8 L1110.5,618.0 L1111.0,618.0 L1111.5,617.8 L1112.0,617.7 L1112.5,617.6 L1113.0,617.7 L1113.5,617.9 L1114.0,618.1 L1114.5,617.8 L1115.0,617.6 L1115.5,617.9 L1116.0,618.2 L1116.5,618.0 L1117.0,617.9 L1117.5,617.9 L1118.0,617.8 L1118.5,618.1 L1119.0,618.1 L1119.5,618.1 L1120.0,617.9 L1120.5,617.9 L1121.0,618.4 L1121.5,618.1 L1122.0,618.0 L1122.5,618.3 L1123.0,618.2 L1123.5,618.0 L1124.0,617.9 L1124.5,618.1 L1125.0,618.2 L1125.5,618.2 L1126.0,618.2 L1126.5,618.2 L1127.0,618.4 L1127.5,618.3 L1128.0,618.3 L1128.5,618.3 L1129.0,618.4 L1129.5,618.4 L1130.0,618.3 L1130.5,618.2 L1131.0,618.6 L1131.5,618.6 L1132.0,618.6 L1132.5,618.1 L1133.0,618.1 L1133.5,618.3 L1134.0,618.4 L1134.5,618.6 L1135.0,618.1 L1135.5,618.3 L1136.0,618.6 L1136.5,618.3 L1137.0,618.3 L1137.5,618.1 L1138.0,618.4 L1138.5,618.0 L1139.0,618.4 L1139.5,618.1 L1140.0,618.3 L1140.5,618.2 L1141.0,618.3 L1141.5,618.4 L1142.0,618.0 L1142.5,618.4 L1143.0,617.9 L1143.5,618.4 L1144.0,618.4 L1144.5,618.1 L1145.0,618.4 L1145.5,618.0 L1146.0,617.9 L1146.5,617.9 L1147.0,618.4 L1147.5,618.0 L1148.0,618.2 L1148.5,618.2 L1149.0,617.9 L1149.5,618.4 L1150.0,618.1 L1150.5,618.1 L1151.0,618.1 L1151.5,618.1 L1152.0,617.8 L1152.5,618.0 L1153.0,618.3 L1153.5,618.1 L1154.0,618.2 L1154.5,618.2 L1155.0,618.0 L1155.5,618.2 L1156.0,617.9 L1156.5,617.7 L1157.0,618.2 L1157.5,617.7 L1158.0,618.1 L1158.5,617.9 L1159.0,618.2 L1159.5,617.6 L1160.0,618.1 L1160.5,617.9 L1161.0,617.6 L1161.5,618.0 L1162.0,618.3 L1162.5,617.9 L1163.0,617.9 L1163.5,617.6 L1164.0,618.3 L1164.5,617.7 L1165.0,618.3 L1165.5,618.1 L1166.0,617.8 L1166.5,617.9 L1167.0,617.9 L1167.5,618.3 L1168.0,618.1 L1168.5,617.9 L1169.0,618.2 L1169.5,617.9 L1170.0,618.3 L1170.5,618.1 L1171.0,617.9 L1171.5,617.7 L1172.0,618.3 L1172.5,617.8 L1173.0,618.1 L1173.5,618.0 L1174.0,618.0 L1174.5,618.0 L1175.0,618.1 L1175.5,618.1 L1176.0,618.3 L1176.5,617.7 L1177.0,618.1 L1177.5,618.1 L1178.0,618.2 L1178.5,618.2 L1179.0,618.0 L1179.5,618.2 L1180.0,618.3 L1180.5,617.9 L1181.0,618.3 L1181.5,618.0 L1182.0,618.0 L1182.5,618.0 L1183.0,617.8 L1183.5,618.1 L1184.0,618.3 L1184.5,618.1 L1185.0,618.1 L1185.5,617.8 L1186.0,617.8 L1186.5,617.9 L1187.0,618.0 L1187.5,618.0 L1188.0,617.8 L1188.5,618.0 L1189.0,618.0 L1189.5,618.2 L1190.0,618.1 L1190.5,618.3 L1191.0,617.8 L1191.5,617.9 L1192.0,617.9 L1192.5,618.1 L1193.0,618.2 L1193.5,618.2 L1194.0,617.8 L1194.5,618.3 L1195.0,618.1 L1195.5,617.9 L1196.0,618.0 L1196.5,618.2 L1197.0,618.3 L1197.5,617.9 L1198.0,618.1 L1198.5,618.3 L1199.0,617.9 L1199.5,618.1 L1200.0,618.3 L1200.5,618.1 L1201.0,617.9 L1201.5,618.1 L1202.0,617.9 L1202.5,618.1 L1203.0,617.8 L1203.5,617.9 L1204.0,618.1 L1204.5,618.1 L1205.0,617.9 L1205.5,618.1 L1206.0,618.1 L1206.5,618.1 L1207.0,618.0 L1207.5,618.2 L1208.0,618.3 L1208.5,618.2 L1209.0,618.4 L1209.5,617.9 L1210.0,618.2 L1210.5,618.0 L1211.0,618.4 L1211.5,617.8 L1212.0,617.9 L1212.5,618.2 L1213.0,618.2 L1213.5,618.2 L1214.0,618.0 L1214.5,617.7 L1215.0,618.1 L1215.5,618.3 L1216.0,617.8 L1216.5,618.3 L1217.0,617.7 L1217.5,617.8 L1218.0,618.2 L1218.5,618.2 L1219.0,618.0 L1219.5,618.2 L1220.0,617.7 L1220.5,618.0 L1221.0,617.9 L1221.5,618.0 L1222.0,618.2 L1222.5,618.2 L1223.0,618.2 L1223.5,617.8 L1224.0,618.2 L1224.5,617.8 L1225.0,618.1 L1225.5,618.0 L1226.0,618.2 L1226.5,618.1 L1227.0,618.1 L1227.5,617.8 L1228.0,617.9 L1228.5,618.2 L1229.0,618.2 L1229.5,618.0 L1230.0,617.9 L1230.5,617.7 L1231.0,617.7 L1231.5,618.3 L1232.0,617.9 L1232.5,617.8 L1233.0,618.2 L1233.5,617.9 L1234.0,618.0 L1234.5,618.1 L1235.0,617.9 L1235.5,617.8 L1236.0,618.0 L1236.5,617.7 L1237.0,618.2 L1237.5,617.8 L1238.0,617.9 L1238.5,617.7 L1239.0,617.7 L1239.5,618.2 L1240.0,617.6 L1240.5,617.6 L1241.0,617.8 L1241.5,617.6 L1242.0,617.9 L1242.5,617.9 L1243.0,617.6 L1243.5,617.9 L1244.0,617.5 L1244.5,618.0 L1245.0,618.0 L1245.5,618.0 L1246.0,617.5 L1246.5,617.5 L1247.0,618.0 L1247.5,617.7 L1248.0,618.2 L1248.5,617.9 L1249.0,618.2 L1249.5,617.9 L1250.0,618.0 L1250.5,617.5 L1251.0,618.0 L1251.5,618.0 L1252.0,617.8 L1252.5,617.6 L1253.0,617.6 L1253.5,617.7 L1254.0,617.9 L1254.5,617.5 L1255.0,617.9 L1255.5,617.5 L1256.0,617.4 L1256.5,617.8 L1257.0,617.9 L1257.5,617.7 L1258.0,617.6 L1258.5,617.5 L1259.0,617.5 L1259.5,617.9 L1260.0,617.4 L1260.5,617.5 L1261.0,617.4 L1261.5,617.8 L1262.0,617.8 L1262.5,618.0 L1263.0,617.6 L1263.5,617.6 L1264.0,617.4 L1264.5,617.8 L1265.0,617.5 L1265.5,618.1 L1266.0,617.7 L1266.5,618.0 L1267.0,617.7 L1267.5,617.9 L1268.0,617.6 L1268.5,617.4 L1269.0,617.5 L1269.5,617.4 L1270.0,617.9 L1270.5,617.6 L1271.0,617.5 L1271.5,617.5 L1272.0,617.8 L1272.5,617.8 L1273.0,618.0 L1273.5,618.0 L1274.0,617.9 L1274.5,617.6 L1275.0,617.7 L1275.5,618.1 L1276.0,617.4 L1276.5,617.6 L1277.0,617.9 L1277.5,617.7 L1278.0,617.4 L1278.5,618.0 L1279.0,617.9 L1279.5,617.7 L1280.0,617.4 L1280.5,617.7 L1281.0,617.3 L1281.5,617.4 L1282.0,617.5 L1282.5,618.1 L1283.0,617.5 L1283.5,617.7 L1284.0,617.3 L1284.5,617.4 L1285.0,617.7 L1285.5,617.3 L1286.0,617.5 L1286.5,617.3 L1287.0,617.4 L1287.5,617.2 L1288.0,617.3 L1288.5,617.6 L1289.0,618.0 L1289.5,617.2 L1290.0,617.7 L1290.5,617.8 L1291.0,617.9 L1291.5,618.0 L1292.0,617.3 L1292.5,617.5 L1293.0,617.5 L1293.5,617.4 L1294.0,617.4 L1294.5,617.5 L1295.0,617.7 L1295.5,617.9 L1296.0,617.4 L1296.5,618.0 L1297.0,617.4 L1297.5,618.0 L1298.0,617.5 L1298.5,617.5 L1299.0,617.2 L1299.5,617.3 L1300.0,617.9 L1300.5,617.5 L1301.0,617.3 L1301.5,617.8 L1302.0,617.7 L1302.5,617.8 L1303.0,617.8 L1303.5,617.5 L1304.0,617.6 L1304.5,617.4 L1305.0,617.2 L1305.5,617.4 L1306.0,617.4 L1306.5,617.2 L1307.0,617.8 L1307.5,618.0 L1308.0,617.5 L1308.5,617.2 L1309.0,617.4 L1309.5,617.4 L1310.0,617.6 L1310.0,621.9 L1309.5,622.1 L1309.0,622.1 L1308.5,622.3 L1308.0,622.0 L1307.5,621.5 L1307.0,621.7 L1306.5,622.3 L1306.0,622.1 L1305.5,622.1 L1305.0,622.3 L1304.5,622.1 L1304.0,621.9 L1303.5,622.0 L1303.0,621.7 L1302.5,621.7 L1302.0,621.8 L1301.5,621.7 L1301.0,622.2 L1300.5,622.0 L1300.0,621.6 L1299.5,622.2 L1299.0,622.3 L1298.5,622.0 L1298.0,622.0 L1297.5,621.5 L1297.0,622.1 L1296.5,621.5 L1296.0,622.1 L1295.5,621.6 L1295.0,621.8 L1294.5,622.0 L1294.0,622.1 L1293.5,622.1 L1293.0,622.0 L1292.5,622.0 L1292.0,622.2 L1291.5,621.5 L1291.0,621.6 L1290.5,621.7 L1290.0,621.8 L1289.5,622.3 L1289.0,621.5 L1288.5,621.9 L1288.0,622.2 L1287.5,622.3 L1287.0,622.1 L1286.5,622.2 L1286.0,622.0 L1285.5,622.2 L1285.0,621.8 L1284.5,622.1 L1284.0,622.2 L1283.5,621.8 L1283.0,622.0 L1282.5,621.4 L1282.0,622.0 L1281.5,622.1 L1281.0,622.2 L1280.5,621.8 L1280.0,622.1 L1279.5,621.8 L1279.0,621.6 L1278.5,621.5 L1278.0,622.1 L1277.5,621.8 L1277.0,621.6 L1276.5,621.9 L1276.0,622.1 L1275.5,621.4 L1275.0,621.8 L1274.5,621.9 L1274.0,621.6 L1273.5,621.5 L1273.0,621.5 L1272.5,621.7 L1272.0,621.7 L1271.5,622.0 L1271.0,622.0 L1270.5,621.9 L1270.0,621.6 L1269.5,622.1 L1269.0,622.0 L1268.5,622.1 L1268.0,621.9 L1267.5,621.6 L1267.0,621.8 L1266.5,621.5 L1266.0,621.8 L1265.5,621.4 L1265.0,622.0 L1264.5,621.7 L1264.0,622.1 L1263.5,621.9 L1263.0,621.9 L1262.5,621.5 L1262.0,621.7 L1261.5,621.7 L1261.0,622.1 L1260.5,622.0 L1260.0,622.1 L1259.5,621.6 L1259.0,622.0 L1258.5,622.0 L1258.0,621.9 L1257.5,621.8 L1257.0,621.6 L1256.5,621.7 L1256.0,622.1 L1255.5,622.0 L1255.0,621.6 L1254.5,622.0 L1254.0,621.6 L1253.5,621.8 L1253.0,621.9 L1252.5,621.9 L1252.0,621.7 L1251.5,621.5 L1251.0,621.5 L1250.5,622.0 L1250.0,621.5 L1249.5,621.6 L1249.0,621.3 L1248.5,621.6 L1248.0,621.3 L1247.5,621.8 L1247.0,621.5 L1246.5,622.0 L1246.0,622.0 L1245.5,621.5 L1245.0,621.5 L1244.5,621.5 L1244.0,622.0 L1243.5,621.6 L1243.0,621.9 L1242.5,621.6 L1242.0,621.6 L1241.5,621.9 L1241.0,621.7 L1240.5,621.9 L1240.0,621.9 L1239.5,621.3 L1239.0,621.8 L1238.5,621.8 L1238.0,621.6 L1237.5,621.7 L1237.0,621.3 L1236.5,621.8 L1236.0,621.5 L1235.5,621.7 L1235.0,621.6 L1234.5,621.4 L1234.0,621.5 L1233.5,621.6 L1233.0,621.3 L1232.5,621.7 L1232.0,621.6 L1231.5,621.2 L1231.0,621.8 L1230.5,621.8 L1230.0,621.6 L1229.5,621.5 L1229.0,621.3 L1228.5,621.3 L1228.0,621.6 L1227.5,621.7 L1227.0,621.4 L1226.5,621.4 L1226.0,621.3 L1225.5,621.5 L1225.0,621.4 L1224.5,621.7 L1224.0,621.3 L1223.5,621.7 L1223.0,621.3 L1222.5,621.3 L1222.0,621.3 L1221.5,621.5 L1221.0,621.6 L1220.5,621.5 L1220.0,621.8 L1219.5,621.3 L1219.0,621.5 L1218.5,621.3 L1218.0,621.3 L1217.5,621.7 L1217.0,621.8 L1216.5,621.2 L1216.0,621.7 L1215.5,621.2 L1215.0,621.4 L1214.5,621.8 L1214.0,621.5 L1213.5,621.3 L1213.0,621.3 L1212.5,621.3 L1212.0,621.6 L1211.5,621.7 L1211.0,621.1 L1210.5,621.5 L1210.0,621.3 L1209.5,621.6 L1209.0,621.1 L1208.5,621.3 L1208.0,621.2 L1207.5,621.3 L1207.0,621.5 L1206.5,621.4 L1206.0,621.4 L1205.5,621.4 L1205.0,621.6 L1204.5,621.4 L1204.0,621.4 L1203.5,621.6 L1203.0,621.7 L1202.5,621.4 L1202.0,621.6 L1201.5,621.4 L1201.0,621.6 L1200.5,621.4 L1200.0,621.2 L1199.5,621.4 L1199.0,621.6 L1198.5,621.2 L1198.0,621.4 L1197.5,621.6 L1197.0,621.2 L1196.5,621.3 L1196.0,621.5 L1195.5,621.6 L1195.0,621.4 L1194.5,621.2 L1194.0,621.7 L1193.5,621.3 L1193.0,621.3 L1192.5,621.4 L1192.0,621.6 L1191.5,621.6 L1191.0,621.7 L1190.5,621.2 L1190.0,621.4 L1189.5,621.3 L1189.0,621.5 L1188.5,621.5 L1188.0,621.7 L1187.5,621.5 L1187.0,621.5 L1186.5,621.6 L1186.0,621.7 L1185.5,621.7 L1185.0,621.4 L1184.5,621.4 L1184.0,621.2 L1183.5,621.4 L1183.0,621.7 L1182.5,621.5 L1182.0,621.5 L1181.5,621.5 L1181.0,621.2 L1180.5,621.6 L1180.0,621.2 L1179.5,621.3 L1179.0,621.5 L1178.5,621.3 L1178.0,621.3 L1177.5,621.4 L1177.0,621.4 L1176.5,621.8 L1176.0,621.2 L1175.5,621.4 L1175.0,621.4 L1174.5,621.5 L1174.0,621.5 L1173.5,621.5 L1173.0,621.4 L1172.5,621.7 L1172.0,621.2 L1171.5,621.8 L1171.0,621.6 L1170.5,621.4 L1170.0,621.2 L1169.5,621.6 L1169.0,621.3 L1168.5,621.6 L1168.0,621.4 L1167.5,621.2 L1167.0,621.6 L1166.5,621.6 L1166.0,621.7 L1165.5,621.4 L1165.0,621.2 L1164.5,621.8 L1164.0,621.2 L1163.5,621.9 L1163.0,621.6 L1162.5,621.6 L1162.0,621.2 L1161.5,621.5 L1161.0,621.9 L1160.5,621.6 L1160.0,621.4 L1159.5,621.9 L1159.0,621.3 L1158.5,621.6 L1158.0,621.4 L1157.5,621.8 L1157.0,621.3 L1156.5,621.8 L1156.0,621.6 L1155.5,621.3 L1155.0,621.5 L1154.5,621.3 L1154.0,621.3 L1153.5,621.4 L1153.0,621.2 L1152.5,621.5 L1152.0,621.7 L1151.5,621.4 L1151.0,621.4 L1150.5,621.4 L1150.0,621.4 L1149.5,621.1 L1149.0,621.6 L1148.5,621.3 L1148.0,621.3 L1147.5,621.5 L1147.0,621.1 L1146.5,621.6 L1146.0,621.6 L1145.5,621.5 L1145.0,621.1 L1144.5,621.4 L1144.0,621.1 L1143.5,621.1 L1143.0,621.6 L1142.5,621.1 L1142.0,621.5 L1141.5,621.1 L1141.0,621.2 L1140.5,621.3 L1140.0,621.2 L1139.5,621.4 L1139.0,621.1 L1138.5,621.5 L1138.0,621.1 L1137.5,621.4 L1137.0,621.2 L1136.5,621.2 L1136.0,620.9 L1135.5,621.2 L1135.0,621.4 L1134.5,620.9 L1134.0,621.1 L1133.5,621.2 L1133.0,621.4 L1132.5,621.4 L1132.0,620.9 L1131.5,620.9 L1131.0,620.9 L1130.5,621.3 L1130.0,621.2 L1129.5,621.1 L1129.0,621.1 L1128.5,621.2 L1128.0,621.2 L1127.5,621.2 L1127.0,621.1 L1126.5,621.3 L1126.0,621.3 L1125.5,621.3 L1125.0,621.3 L1124.5,621.4 L1124.0,621.6 L1123.5,621.5 L1123.0,621.3 L1122.5,621.2 L1122.0,621.5 L1121.5,621.4 L1121.0,621.1 L1120.5,621.6 L1120.0,621.6 L1119.5,621.4 L1119.0,621.4 L1118.5,621.4 L1118.0,621.7 L1117.5,621.6 L1117.0,621.6 L1116.5,621.5 L1116.0,621.3 L1115.5,621.6 L1115.0,621.9 L1114.5,621.7 L1114.0,621.4 L1113.5,621.6 L1113.0,621.8 L1112.5,621.9 L1112.0,621.8 L1111.5,621.7 L1111.0,621.5 L1110.5,621.5 L1110.0,621.7 L1109.5,621.5 L1109.0,621.3 L1108.5,622.0 L1108.0,621.3 L1107.5,621.8 L1107.0,621.7 L1106.5,622.2 L1106.0,621.4 L1105.5,621.4 L1105.0,621.8 L1104.5,621.8 L1104.0,622.1 L1103.5,622.0 L1103.0,621.5 L1102.5,622.0 L1102.0,621.8 L1101.5,622.0 L1101.0,621.9 L1100.5,621.9 L1100.0,622.2 L1099.5,621.6 L1099.0,621.7 L1098.5,622.3 L1098.0,621.7 L1097.5,621.8 L1097.0,622.1 L1096.5,621.9 L1096.0,622.1 L1095.5,621.7 L1095.0,621.6 L1094.5,621.8 L1094.0,621.5 L1093.5,622.0 L1093.0,621.4 L1092.5,621.6 L1092.0,621.8 L1091.5,621.4 L1091.0,621.6 L1090.5,621.3 L1090.0,621.4 L1089.5,621.2 L1089.0,621.2 L1088.5,621.2 L1088.0,621.3 L1087.5,621.0 L1087.0,621.0 L1086.5,621.3 L1086.0,621.1 L1085.5,621.1 L1085.0,621.0 L1084.5,621.0 L1084.0,621.4 L1083.5,621.0 L1083.0,621.0 L1082.5,621.1 L1082.0,621.0 L1081.5,620.8 L1081.0,620.9 L1080.5,621.0 L1080.0,621.2 L1079.5,620.9 L1079.0,620.9 L1078.5,620.8 L1078.0,621.1 L1077.5,621.1 L1077.0,620.7 L1076.5,620.7 L1076.0,620.8 L1075.5,621.0 L1075.0,620.8 L1074.5,621.0 L1074.0,620.8 L1073.5,620.8 L1073.0,620.9 L1072.5,621.0 L1072.0,620.7 L1071.5,621.0 L1071.0,620.7 L1070.5,621.1 L1070.0,621.1 L1069.5,621.1 L1069.0,620.8 L1068.5,620.9 L1068.0,621.0 L1067.5,620.7 L1067.0,620.9 L1066.5,621.1 L1066.0,621.0 L1065.5,620.9 L1065.0,620.7 L1064.5,620.9 L1064.0,620.8 L1063.5,620.9 L1063.0,620.9 L1062.5,620.7 L1062.0,621.1 L1061.5,621.0 L1061.0,620.7 L1060.5,621.1 L1060.0,621.1 L1059.5,621.0 L1059.0,621.0 L1058.5,620.8 L1058.0,620.7 L1057.5,620.8 L1057.0,620.7 L1056.5,621.0 L1056.0,621.0 L1055.5,620.8 L1055.0,620.8 L1054.5,621.1 L1054.0,620.9 L1053.5,620.8 L1053.0,620.8 L1052.5,621.0 L1052.0,621.0 L1051.5,620.8 L1051.0,621.0 L1050.5,620.9 L1050.0,621.0 L1049.5,621.1 L1049.0,621.0 L1048.5,621.1 L1048.0,620.7 L1047.5,621.0 L1047.0,621.0 L1046.5,621.0 L1046.0,621.0 L1045.5,620.8 L1045.0,621.0 L1044.5,620.8 L1044.0,621.0 L1043.5,620.8 L1043.0,621.0 L1042.5,621.1 L1042.0,620.7 L1041.5,620.7 L1041.0,620.8 L1040.5,621.0 L1040.0,621.1 L1039.5,620.9 L1039.0,620.7 L1038.5,620.8 L1038.0,620.9 L1037.5,621.1 L1037.0,620.8 L1036.5,620.9 L1036.0,620.9 L1035.5,620.9 L1035.0,621.0 L1034.5,620.9 L1034.0,620.8 L1033.5,620.8 L1033.0,620.8 L1032.5,620.9 L1032.0,620.6 L1031.5,620.9 L1031.0,621.0 L1030.5,620.8 L1030.0,620.8 L1029.5,620.7 L1029.0,620.7 L1028.5,621.0 L1028.0,620.8 L1027.5,620.6 L1027.0,620.6 L1026.5,620.9 L1026.0,620.9 L1025.5,620.8 L1025.0,620.9 L1024.5,620.8 L1024.0,620.9 L1023.5,620.8 L1023.0,620.9 L1022.5,620.8 L1022.0,620.9 L1021.5,620.6 L1021.0,620.9 L1020.5,620.6 L1020.0,620.7 L1019.5,620.9 L1019.0,620.9 L1018.5,620.6 L1018.0,620.7 L1017.5,620.9 L1017.0,621.0 L1016.5,620.6 L1016.0,620.7 L1015.5,620.8 L1015.0,620.9 L1014.5,620.9 L1014.0,620.7 L1013.5,620.6 L1013.0,620.8 L1012.5,620.8 L1012.0,620.8 L1011.5,620.8 L1011.0,620.7 L1010.5,620.9 L1010.0,620.7 L1009.5,620.8 L1009.0,620.9 L1008.5,620.6 L1008.0,620.6 L1007.5,620.8 L1007.0,620.6 L1006.5,620.9 L1006.0,620.9 L1005.5,620.8 L1005.0,620.7 L1004.5,620.7 L1004.0,620.7 L1003.5,620.8 L1003.0,620.6 L1002.5,620.6 L1002.0,620.7 L1001.5,620.9 L1001.0,620.6 L1000.5,620.8 L1000.0,620.6 L999.5,620.9 L999.0,620.9 L998.5,621.0 L998.0,620.7 L997.5,620.8 L997.0,620.9 L996.5,620.9 L996.0,620.7 L995.5,621.1 L995.0,620.7 L994.5,620.8 L994.0,620.9 L993.5,621.2 L993.0,621.1 L992.5,620.9 L992.0,620.9 L991.5,620.9 L991.0,621.0 L990.5,621.2 L990.0,620.9 L989.5,620.9 L989.0,621.3 L988.5,621.3 L988.0,620.8 L987.5,621.0 L987.0,621.2 L986.5,621.3 L986.0,621.1 L985.5,621.2 L985.0,621.4 L984.5,621.2 L984.0,621.4 L983.5,621.1 L983.0,621.3 L982.5,621.4 L982.0,621.4 L981.5,621.5 L981.0,621.2 L980.5,621.0 L980.0,621.5 L979.5,621.4 L979.0,621.4 L978.5,621.6 L978.0,621.2 L977.5,621.3 L977.0,621.3 L976.5,621.1 L976.0,621.3 L975.5,621.4 L975.0,621.5 L974.5,621.2 L974.0,621.2 L973.5,621.4 L973.0,621.2 L972.5,621.5 L972.0,621.7 L971.5,621.9 L971.0,621.5 L970.5,621.8 L970.0,621.5 L969.5,621.8 L969.0,621.6 L968.5,622.0 L968.0,621.3 L967.5,621.9 L967.0,621.8 L966.5,621.9 L966.0,621.3 L965.5,621.4 L965.0,621.7 L964.5,622.0 L964.0,621.4 L963.5,622.1 L963.0,621.7 L962.5,621.8 L962.0,621.5 L961.5,621.2 L961.0,621.2 L960.5,621.5 L960.0,621.3 L959.5,621.8 L959.0,621.7 L958.5,621.2 L958.0,621.6 L957.5,621.1 L957.0,621.4 L956.5,621.6 L956.0,621.4 L955.5,621.0 L955.0,621.2 L954.5,621.3 L954.0,621.4 L953.5,621.3 L953.0,621.1 L952.5,621.0 L952.0,621.2 L951.5,621.1 L951.0,620.9 L950.5,621.0 L950.0,620.8 L949.5,621.1 L949.0,620.8 L948.5,620.7 L948.0,621.1 L947.5,620.9 L947.0,620.7 L946.5,620.8 L946.0,620.8 L945.5,620.9 L945.0,621.0 L944.5,621.0 L944.0,620.9 L943.5,620.9 L943.0,621.0 L942.5,620.8 L942.0,620.7 L941.5,621.0 L941.0,620.7 L940.5,620.9 L940.0,621.1 L939.5,620.8 L939.0,620.7 L938.5,620.9 L938.0,620.9 L937.5,621.0 L937.0,620.7 L936.5,620.8 L936.0,621.0 L935.5,620.9 L935.0,620.9 L934.5,620.9 L934.0,620.9 L933.5,621.0 L933.0,620.6 L932.5,620.7 L932.0,620.8 L931.5,620.9 L931.0,620.9 L930.5,620.7 L930.0,620.7 L929.5,620.6 L929.0,620.8 L928.5,620.8 L928.0,620.9 L927.5,620.8 L927.0,621.0 L926.5,620.7 L926.0,620.8 L925.5,620.6 L925.0,620.9 L924.5,620.8 L924.0,620.8 L923.5,620.9 L923.0,620.8 L922.5,620.6 L922.0,620.8 L921.5,620.6 L921.0,620.6 L920.5,620.6 L920.0,620.7 L919.5,621.0 L919.0,620.8 L918.5,620.9 L918.0,620.9 L917.5,621.1 L917.0,621.3 L916.5,621.4 L916.0,622.2 L915.5,622.1 L915.0,621.7 L914.5,622.3 L914.0,622.2 L913.5,622.3 L913.0,622.6 L912.5,622.3 L912.0,622.5 L911.5,621.7 L911.0,622.6 L910.5,621.8 L910.0,621.8 L909.5,622.0 L909.0,621.9 L908.5,622.3 L908.0,622.0 L907.5,622.2 L907.0,621.8 L906.5,622.6 L906.0,621.7 L905.5,622.1 L905.0,622.2 L904.5,622.7 L904.0,622.3 L903.5,622.0 L903.0,622.2 L902.5,622.3 L902.0,622.2 L901.5,622.6 L901.0,622.7 L900.5,621.9 L900.0,622.1 L899.5,622.2 L899.0,621.9 L898.5,621.8 L898.0,622.1 L897.5,621.8 L897.0,622.7 L896.5,622.7 L896.0,622.3 L895.5,622.0 L895.0,622.0 L894.5,622.2 L894.0,622.3 L893.5,621.8 L893.0,622.2 L892.5,622.5 L892.0,622.4 L891.5,621.9 L891.0,622.7 L890.5,622.4 L890.0,622.1 L889.5,622.8 L889.0,622.8 L888.5,622.7 L888.0,622.6 L887.5,622.7 L887.0,622.7 L886.5,622.5 L886.0,622.2 L885.5,622.3 L885.0,621.6 L884.5,621.3 L884.0,620.6 L883.5,620.8 L883.0,620.7 L882.5,620.5 L882.0,620.6 L881.5,620.8 L881.0,620.8 L880.5,620.7 L880.0,620.6 L879.5,620.8 L879.0,620.7 L878.5,620.8 L878.0,620.6 L877.5,620.6 L877.0,620.6 L876.5,620.6 L876.0,620.7 L875.5,620.8 L875.0,620.5 L874.5,620.7 L874.0,620.7 L873.5,620.5 L873.0,620.8 L872.5,620.6 L872.0,620.6 L871.5,620.5 L871.0,620.7 L870.5,620.7 L870.0,620.6 L869.5,620.8 L869.0,620.8 L868.5,620.8 L868.0,620.8 L867.5,620.6 L867.0,620.7 L866.5,620.8 L866.0,620.6 L865.5,620.8 L865.0,620.6 L864.5,620.5 L864.0,620.5 L863.5,620.8 L863.0,620.6 L862.5,620.6 L862.0,620.5 L861.5,620.6 L861.0,620.8 L860.5,620.8 L860.0,620.5 L859.5,620.7 L859.0,620.6 L858.5,620.5 L858.0,620.8 L857.5,620.5 L857.0,620.7 L856.5,620.7 L856.0,620.7 L855.5,620.5 L855.0,620.8 L854.5,620.5 L854.0,620.7 L853.5,620.6 L853.0,620.5 L852.5,620.6 L852.0,620.8 L851.5,620.5 L851.0,620.5 L850.5,620.5 L850.0,620.8 L849.5,620.7 L849.0,620.7 L848.5,620.7 L848.0,620.8 L847.5,620.6 L847.0,620.8 L846.5,620.7 L846.0,620.7 L845.5,620.6 L845.0,620.7 L844.5,620.7 L844.0,620.8 L843.5,620.7 L843.0,620.8 L842.5,620.6 L842.0,620.6 L841.5,620.8 L841.0,620.5 L840.5,620.5 L840.0,620.7 L839.5,620.6 L839.0,620.5 L838.5,620.8 L838.0,620.5 L837.5,620.6 L837.0,620.6 L836.5,620.7 L836.0,620.7 L835.5,620.8 L835.0,620.7 L834.5,620.8 L834.0,620.7 L833.5,620.7 L833.0,620.6 L832.5,620.7 L832.0,620.5 L831.5,620.7 L831.0,620.6 L830.5,620.7 L830.0,620.6 L829.5,620.5 L829.0,620.7 L828.5,620.5 L828.0,620.8 L827.5,620.8 L827.0,620.6 L826.5,620.8 L826.0,620.8 L825.5,620.7 L825.0,620.5 L824.5,620.5 L824.0,620.5 L823.5,620.8 L823.0,620.6 L822.5,620.6 L822.0,620.5 L821.5,620.7 L821.0,620.6 L820.5,620.7 L820.0,620.8 L819.5,620.5 L819.0,620.6 L818.5,620.8 L818.0,620.8 L817.5,620.6 L817.0,620.5 L816.5,620.8 L816.0,620.7 L815.5,620.7 L815.0,620.5 L814.5,620.7 L814.0,620.6 L813.5,620.6 L813.0,620.6 L812.5,620.7 L812.0,620.6 L811.5,620.8 L811.0,620.7 L810.5,620.6 L810.0,620.8 L809.5,620.8 L809.0,620.7 L808.5,620.7 L808.0,620.8 L807.5,620.7 L807.0,620.6 L806.5,620.5 L806.0,620.5 L805.5,620.6 L805.0,620.5 L804.5,620.8 L804.0,620.8 L803.5,620.8 L803.0,620.6 L802.5,620.7 L802.0,620.6 L801.5,620.5 L801.0,620.6 L800.5,620.6 L800.0,620.5 L799.5,620.5 L799.0,620.7 L798.5,620.5 L798.0,620.5 L797.5,620.8 L797.0,620.7 L796.5,620.5 L796.0,620.7 L795.5,620.7 L795.0,620.7 L794.5,620.7 L794.0,620.7 L793.5,620.7 L793.0,620.6 L792.5,620.5 L792.0,620.5 L791.5,620.6 L791.0,620.8 L790.5,620.7 L790.0,620.7 L789.5,620.8 L789.0,620.6 L788.5,620.5 L788.0,620.5 L787.5,620.6 L787.0,620.5 L786.5,620.6 L786.0,620.8 L785.5,620.6 L785.0,620.6 L784.5,620.7 L784.0,620.7 L783.5,620.6 L783.0,620.6 L782.5,620.6 L782.0,620.8 L781.5,620.7 L781.0,620.8 L780.5,620.5 L780.0,620.8 L779.5,620.8 L779.0,620.5 L778.5,620.8 L778.0,620.5 L777.5,620.8 L777.0,620.8 L776.5,620.8 L776.0,620.7 L775.5,620.7 L775.0,620.5 L774.5,620.5 L774.0,620.5 L773.5,620.7 L773.0,620.5 L772.5,620.8 L772.0,620.8 L771.5,620.7 L771.0,620.7 L770.5,620.6 L770.0,620.7 L769.5,620.7 L769.0,620.5 L768.5,620.5 L768.0,620.8 L767.5,620.6 L767.0,620.8 L766.5,620.8 L766.0,620.7 L765.5,620.6 L765.0,620.6 L764.5,620.5 L764.0,620.5 L763.5,620.6 L763.0,620.6 L762.5,620.5 L762.0,620.6 L761.5,620.7 L761.0,620.8 L760.5,620.8 L760.0,620.5 L759.5,620.7 L759.0,620.7 L758.5,620.5 L758.0,620.7 L757.5,620.8 L757.0,620.7 L756.5,620.5 L756.0,620.8 L755.5,620.5 L755.0,620.5 L754.5,620.8 L754.0,620.5 L753.5,620.8 L753.0,620.6 L752.5,620.4 L752.0,620.1 L751.5,620.1 L751.0,620.1 L750.5,620.1 L750.0,620.1 L749.5,620.1 L749.0,620.1 L748.5,620.1 L748.0,620.1 L747.5,620.1 L747.0,620.1 L746.5,620.1 L746.0,620.1 L745.5,620.1 L745.0,620.1 L744.5,620.1 L744.0,620.1 L743.5,620.1 L743.0,620.1 L742.5,620.1 L742.0,620.1 L741.5,620.1 L741.0,620.1Z" fill="#76a595"/></svg><div style="left:641px;top:757.4px;width:660px;height:1.2px;background:#3a3a3a"></div><div style="left:641px;top:757.1px;width:75px;height:1.8px;background:#fff;border-radius:1px"></div><div style="left:711.5px;top:753.9px;width:8px;height:8px;background:#fff;border-radius:50%"></div><span class="t" style="left:640.5px;top:767.3px;font-size:10px;color:#929292;font-weight:normal;">0:30</span><span class="t" style="left:1286px;top:767.3px;font-size:10px;color:#929292;font-weight:normal;">-4:12</span><span class="t" style="left:722.8px;top:797.5px;font-size:8.5px;color:#fff;font-weight:bold;transform:translateX(-50%);letter-spacing:0.2px">1 2</span><span class="t" style="left:722.8px;top:806.1px;font-size:8.5px;color:#fff;font-weight:bold;transform:translateX(-50%);letter-spacing:0.2px">3 4</span><svg style="left:797.7px;top:797.5px" width="15.0" height="17.0" viewBox="0 0 15 17" ><g fill="none" stroke="#fff" stroke-width="1.25" stroke-linejoin="round" stroke-linecap="round"><path d="M1 14.4 L5.4 2.6 C5.8 1.6 7.8 1.6 8.2 2.6 L12.6 14.4 C12.9 15.3 12.4 15.9 11.6 15.9 H2 C1.2 15.9 0.7 15.3 1 14.4Z"/><path d="M1.8 12.8 H11.8"/><path d="M7 12 L13 3.6"/><circle cx="13.5" cy="2.8" r="1.2"/></g></svg><svg style="left:877.4px;top:799.6px" width="20.4" height="12.8" viewBox="0 0 20.4 12.8" ><g fill="#fff"><path d="M10.812 1 Q10.812 0 9.995999999999999 0.5 L0.4 6.1000000000000005 Q0 6.4 0.4 6.7 L9.995999999999999 12.3 Q10.812 12.8 10.812 11.8Z"/><path d="M20.4 1 Q20.4 0 19.584 0.5 L9.988 6.1000000000000005 Q9.588 6.4 9.988 6.7 L19.584 12.3 Q20.4 12.8 20.4 11.8Z"/></g></svg><div style="left:953.5px;top:783.7px;width:44.2px;height:44.2px;background:#fff;border-radius:50%"></div><svg style="left:969.5px;top:797.8px" width="15" height="16" viewBox="0 0 15 16" ><path d="M1.2 1.6 Q1.2 0.2 2.4 0.9 L13.4 7.2 Q14.4 8 13.4 8.8 L2.4 15.1 Q1.2 15.8 1.2 14.4Z" fill="#000"/></svg><svg style="left:1053.2px;top:799.6px" width="20.4" height="12.8" viewBox="0 0 20.4 12.8" ><g fill="#fff" transform="translate(20.4 0) scale(-1 1)"><path d="M10.812 1 Q10.812 0 9.995999999999999 0.5 L0.4 6.1000000000000005 Q0 6.4 0.4 6.7 L9.995999999999999 12.3 Q10.812 12.8 10.812 11.8Z"/><path d="M20.4 1 Q20.4 0 19.584 0.5 L9.988 6.1000000000000005 Q9.588 6.4 9.988 6.7 L19.584 12.3 Q20.4 12.8 20.4 11.8Z"/></g></svg><svg style="left:1138.5px;top:798px" width="16" height="16" viewBox="0 0 16 16" ><g fill="none" stroke="#fff" stroke-width="1.2" stroke-linecap="round" stroke-linejoin="round"><path d="M1.4 5 V14.6 C3.6 14.2 5.6 12.6 5.2 10.8 C4.9 9.4 2.8 9.2 1.4 10.8"/><path d="M9.6 1.6 L8.8 7.6 M12.8 1 L12 7 M7.6 3.8 L14.6 2.6 M7.2 6 L14.2 4.8"/></g></svg><svg style="left:1221.1px;top:798.5px" width="15" height="15" viewBox="0 0 15 15" ><g fill="none" stroke="#fff" stroke-width="1.2" stroke-linecap="round"><circle cx="3.4" cy="3.4" r="2.1"/><circle cx="3.4" cy="11.6" r="2.1"/><path d="M5 4.8 L13.6 13 M5 10.2 L8 7.6 M10 5.8 L13.6 2.4"/></g></svg><div style="left:960.5px;top:836px;width:31px;height:8px;background:#1b1b1b;border-radius:4px"></div><div style="left:1296px;top:267.8px;width:285px;height:604px;border-radius:37px 37px 42px 42px;background:linear-gradient(90deg,#2b363e 0%,#36444e 15%,#4e6473 35%,#6c8a9c 55%,#7393a6 64%,#5a7282 76%,#33414a 90%,#273138 100%) top/100% 9px no-repeat,linear-gradient(180deg,#2f3b44 0%,#2a323a 40%,#262b32 100%)"></div><div style="left:1302.6px;top:274.3px;width:271.4px;height:591px;border-radius:30px 30px 35px 35px;background:#000"></div><svg style="left:1312px;top:335px" width="15" height="7" viewBox="0 0 15 7" ><path d="M0.8 0.8 L7 5.4 L13.2 0.8" stroke="#fff" stroke-width="1.4" fill="none" stroke-linecap="round" stroke-linejoin="round" stroke-width="1.3"/></svg><span class="t" style="left:1438px;top:330.5px;font-size:12px;color:#fff;font-weight:bold;transform:translateX(-50%);letter-spacing:-0.25px;font-weight:600">A Real Bad Dream</span><div style="left:1550.5px;top:332.2px;width:13.8px;height:1.4px;background:#e0e0e0;border-radius:1px"></div><div style="left:1550.5px;top:336.5px;width:13.8px;height:1.4px;background:#e0e0e0;border-radius:1px"></div><div style="left:1550.5px;top:340.8px;width:13.8px;height:1.4px;background:#e0e0e0;border-radius:1px"></div><div style="left:1302.8px;top:359.6px;width:38.2px;height:32.8px;background:#262626;border-radius:1px"></div><div style="left:1342.8px;top:359.6px;width:38.2px;height:32.8px;background:#262626;border-radius:1px"></div><div style="left:1382.8px;top:359.6px;width:38.2px;height:32.8px;background:#262626;border-radius:1px"></div><div style="left:1422.9px;top:359.6px;width:38.2px;height:32.8px;background:#fff;border-radius:1px"></div><div style="left:1462.9px;top:359.6px;width:38.2px;height:32.8px;background:#262626;border-radius:1px"></div><div style="left:1502.9px;top:359.6px;width:38.2px;height:32.8px;background:#262626;border-radius:1px"></div><div style="left:1542.9px;top:359.6px;width:31.1px;height:32.8px;background:#262626;border-radius:1px"></div><div style="left:1302.8px;top:359.6px;width:1.6px;height:32.8px;background:#8a8a8a"></div><div style="left:1462.9px;top:359.6px;width:1.6px;height:32.8px;background:#9a9a9a"></div><span class="t" style="left:1311px;top:368.5px;font-size:16px;font-weight:bold;color:#9a9a9a">G<span class="t" style="position:relative;font-size:12.5px;left:0.3px">m</span></span><span class="t" style="left:1467.5px;top:368.5px;font-size:16px;font-weight:bold;color:#fff">C<span class="t" style="position:relative;font-size:12.5px;left:0.3px">m</span><span class="t" style="position:relative;font-size:10px;top:-5.6px;left:0.6px">7</span></span><svg style="left:1322.3px;top:421.4px" width="16" height="16" viewBox="0 0 16 16" ><g transform="rotate(16 8 8)"><path d="M5.4 2.2 C6 0.6 10 0.4 11 1.8 C11.8 3 11.2 4.4 11 6 L10.8 11.4 C10.8 12.8 10.2 13.4 9.6 14 C8.6 15 6.6 15 5.8 14 C5 13 4.8 12.6 4.9 11.4 C5 8 4.6 4.4 5.4 2.2Z" fill="none" stroke="#fff" stroke-width="1.2" stroke-linejoin="round"/><g fill="#fff"><rect x="1.6" y="2.2" width="2" height="1.7" rx="0.4"/><rect x="1.6" y="5.2" width="2" height="1.7" rx="0.4"/><rect x="1.6" y="8.2" width="2" height="1.7" rx="0.4"/><rect x="1.6" y="11.2" width="2" height="1.7" rx="0.4"/></g></g></svg><svg style="left:1321.8000000000002px;top:471.29999999999995px" width="17.2" height="16.6" viewBox="0 0 17.2 16.6" ><g fill="none" stroke="#fff" stroke-width="1.25" stroke-linejoin="round" stroke-linecap="round"><path d="M1.2 9.4 V5 C1.2 2.6 2.8 1 5 1 C7.4 1 8.4 2.6 8.8 4.4 C9.2 6 10.4 6.4 12.2 6.6 C14.6 6.8 16 8 16 9.4Z"/><path d="M1.2 9.4 H16 V14 C16 15 15.4 15.6 14.4 15.6 H2.8 C1.8 15.6 1.2 15 1.2 14Z"/><path d="M4.6 12.4 V15.4 M7.4 12.4 V15.4 M10.2 12.4 V15.4 M13 12.4 V15.4"/></g></svg><svg style="left:1322.3px;top:520.9000000000001px" width="16" height="16" viewBox="0 0 16 16" ><path d="M3.2 1.9 L4.5 0.7 H11.5 L12.8 1.9 L12.3 10.6 C12.2 12 11 12.4 10.8 13.4 V15.3 H5.2 V13.4 C5 12.4 3.8 12 3.7 10.6Z" fill="none" stroke="#fff" stroke-width="1.2" stroke-linejoin="round"/><g fill="#fff"><rect x="0" y="2.9" width="2.1" height="1.8" rx="0.4"/><rect x="0.1" y="6.2" width="2.1" height="1.8" rx="0.4"/><rect x="0.3" y="9.5" width="2.1" height="1.8" rx="0.4"/><rect x="13.9" y="2.9" width="2.1" height="1.8" rx="0.4"/><rect x="13.8" y="6.2" width="2.1" height="1.8" rx="0.4"/><rect x="13.6" y="9.5" width="2.1" height="1.8" rx="0.4"/></g></svg><div style="left:1336.4px;top:534.7px;width:10px;height:10px;border-radius:50%;background:#8a8a8a;color:#fff;font-size:8.5px;font-weight:bold;text-align:center;line-height:10.4px">1</div><svg style="left:1322.3px;top:570.8000000000001px" width="16" height="16" viewBox="0 0 16 16" ><path d="M3.2 1.9 L4.5 0.7 H11.5 L12.8 1.9 L12.3 10.6 C12.2 12 11 12.4 10.8 13.4 V15.3 H5.2 V13.4 C5 12.4 3.8 12 3.7 10.6Z" fill="none" stroke="#fff" stroke-width="1.2" stroke-linejoin="round"/><g fill="#fff"><rect x="0" y="2.9" width="2.1" height="1.8" rx="0.4"/><rect x="0.1" y="6.2" width="2.1" height="1.8" rx="0.4"/><rect x="0.3" y="9.5" width="2.1" height="1.8" rx="0.4"/><rect x="13.9" y="2.9" width="2.1" height="1.8" rx="0.4"/><rect x="13.8" y="6.2" width="2.1" height="1.8" rx="0.4"/><rect x="13.6" y="9.5" width="2.1" height="1.8" rx="0.4"/></g></svg><div style="left:1336.4px;top:584.6px;width:10px;height:10px;border-radius:50%;background:#8a8a8a;color:#fff;font-size:8.5px;font-weight:bold;text-align:center;line-height:10.4px">2</div><svg style="left:1322.3px;top:620.1999999999999px" width="16" height="16" viewBox="0 0 16 16" ><g fill="none" stroke="#fff" stroke-width="1.3" stroke-linejoin="round" stroke-linecap="round"><ellipse cx="3.4" cy="13" rx="2.3" ry="1.9" transform="rotate(-20 3.4 13)"/><ellipse cx="11.6" cy="10.8" rx="2.3" ry="1.9" transform="rotate(-20 11.6 10.8)"/><path d="M5.6 12.6 V3.2 L13.8 1 V10.2"/></g></svg><div style="left:1362.3px;top:428.7px;width:162.0px;height:1.4px;background:#404040"></div><div style="left:1362.3px;top:428.4px;width:119.0px;height:2px;background:#17c9a9"></div><div style="left:1473.2px;top:421.29999999999995px;width:16.2px;height:16.2px;border-radius:50%;background:#000;border:1.2px solid #5a5a5a"></div><div style="left:1480.0px;top:428.09999999999997px;width:2.6px;height:2.6px;border-radius:50%;background:#17c9a9"></div><div style="left:1546.3px;top:428.4px;width:2.1px;height:2.1px;background:#686868;border-radius:50%"></div><div style="left:1550.3999999999999px;top:428.4px;width:2.1px;height:2.1px;background:#686868;border-radius:50%"></div><div style="left:1554.5px;top:428.4px;width:2.1px;height:2.1px;background:#686868;border-radius:50%"></div><div style="left:1362.3px;top:478.5px;width:162.0px;height:1.4px;background:#404040"></div><div style="left:1362.3px;top:478.2px;width:119.0px;height:2px;background:#17c9a9"></div><div style="left:1473.2px;top:471.09999999999997px;width:16.2px;height:16.2px;border-radius:50%;background:#000;border:1.2px solid #5a5a5a"></div><div style="left:1480.0px;top:477.9px;width:2.6px;height:2.6px;border-radius:50%;background:#17c9a9"></div><div style="left:1546.3px;top:478.2px;width:2.1px;height:2.1px;background:#686868;border-radius:50%"></div><div style="left:1550.3999999999999px;top:478.2px;width:2.1px;height:2.1px;background:#686868;border-radius:50%"></div><div style="left:1554.5px;top:478.2px;width:2.1px;height:2.1px;background:#686868;border-radius:50%"></div><div style="left:1362.3px;top:528.1px;width:162px;height:1.2px;background:#3c3c3c"></div><div style="left:1362.3px;top:527.7px;width:46px;height:2px;background:#17c9a9"></div><div style="left:1399.9px;top:520.6px;width:16.2px;height:16.2px;border-radius:50%;background:#000;border:1.4px solid #14b89b"></div><div style="left:1406.7px;top:527.4000000000001px;width:2.6px;height:2.6px;border-radius:50%;background:#17c9a9"></div><div style="left:1546.3px;top:527.7px;width:2.1px;height:2.1px;background:#686868;border-radius:50%"></div><div style="left:1550.3999999999999px;top:527.7px;width:2.1px;height:2.1px;background:#686868;border-radius:50%"></div><div style="left:1554.5px;top:527.7px;width:2.1px;height:2.1px;background:#686868;border-radius:50%"></div><div style="left:1362.3px;top:577.9px;width:162.0px;height:1.4px;background:#404040"></div><div style="left:1362.3px;top:577.6px;width:119.0px;height:2px;background:#17c9a9"></div><div style="left:1473.2px;top:570.5px;width:16.2px;height:16.2px;border-radius:50%;background:#000;border:1.2px solid #5a5a5a"></div><div style="left:1480.0px;top:577.3000000000001px;width:2.6px;height:2.6px;border-radius:50%;background:#17c9a9"></div><div style="left:1546.3px;top:577.6px;width:2.1px;height:2.1px;background:#686868;border-radius:50%"></div><div style="left:1550.3999999999999px;top:577.6px;width:2.1px;height:2.1px;background:#686868;border-radius:50%"></div><div style="left:1554.5px;top:577.6px;width:2.1px;height:2.1px;background:#686868;border-radius:50%"></div><div style="left:1362.3px;top:627.6999999999999px;width:162.0px;height:1.4px;background:#404040"></div><div style="left:1362.3px;top:627.4px;width:119.0px;height:2px;background:#17c9a9"></div><div style="left:1473.2px;top:620.3px;width:16.2px;height:16.2px;border-radius:50%;background:#000;border:1.2px solid #5a5a5a"></div><div style="left:1480.0px;top:627.1px;width:2.6px;height:2.6px;border-radius:50%;background:#17c9a9"></div><div style="left:1546.3px;top:627.4px;width:2.1px;height:2.1px;background:#686868;border-radius:50%"></div><div style="left:1550.3999999999999px;top:627.4px;width:2.1px;height:2.1px;background:#686868;border-radius:50%"></div><div style="left:1554.5px;top:627.4px;width:2.1px;height:2.1px;background:#686868;border-radius:50%"></div><div style="left:1383.5px;top:486.3px;width:49px;height:26.4px;background:#fff;border-radius:13.2px"></div><svg style="left:1402.5px;top:511.5px" width="11" height="6" viewBox="0 0 11 6" ><path d="M0 0 H11 L5.5 5.6Z" fill="#fff"/></svg><span class="t" style="left:1408px;top:493.6px;font-size:10.5px;color:#000;font-weight:bold;transform:translateX(-50%);">26</span><span class="t" style="left:1362px;top:544.4px;font-size:10.5px;color:#c4c4c4;font-weight:normal;letter-spacing:0.1px">Lead Guitar</span><div style="left:1320px;top:725.6px;width:237px;height:1.2px;background:#3a3a3a"></div><div style="left:1320px;top:725.3px;width:21px;height:1.8px;background:#fff;border-radius:1px"></div><div style="left:1336.8px;top:722.2px;width:8px;height:8px;background:#fff;border-radius:50%"></div><span class="t" style="left:1319.5px;top:735.8px;font-size:10px;color:#929292;font-weight:normal;letter-spacing:0.2px">0:11</span><span class="t" style="left:1557px;top:735.8px;font-size:10px;color:#929292;font-weight:normal;transform:translateX(-100%);letter-spacing:0.2px">-2:06</span><svg style="left:1328.0px;top:765.7px" width="15.0" height="17.0" viewBox="0 0 15 17" ><g fill="none" stroke="#fff" stroke-width="1.25" stroke-linejoin="round" stroke-linecap="round"><path d="M1 14.4 L5.4 2.6 C5.8 1.6 7.8 1.6 8.2 2.6 L12.6 14.4 C12.9 15.3 12.4 15.9 11.6 15.9 H2 C1.2 15.9 0.7 15.3 1 14.4Z"/><path d="M1.8 12.8 H11.8"/><path d="M7 12 L13 3.6"/><circle cx="13.5" cy="2.8" r="1.2"/></g></svg><svg style="left:1374.3999999999999px;top:767.8000000000001px" width="20.4" height="12.8" viewBox="0 0 20.4 12.8" ><g fill="#fff"><path d="M10.812 1 Q10.812 0 9.995999999999999 0.5 L0.4 6.1000000000000005 Q0 6.4 0.4 6.7 L9.995999999999999 12.3 Q10.812 12.8 10.812 11.8Z"/><path d="M20.4 1 Q20.4 0 19.584 0.5 L9.988 6.1000000000000005 Q9.588 6.4 9.988 6.7 L19.584 12.3 Q20.4 12.8 20.4 11.8Z"/></g></svg><div style="left:1416px;top:751.8px;width:44.6px;height:44.6px;background:#fff;border-radius:50%"></div><div style="left:1433px;top:766.4px;width:3.7px;height:15.6px;background:#000;border-radius:1px"></div><div style="left:1440.1px;top:766.4px;width:3.7px;height:15.6px;background:#000;border-radius:1px"></div><svg style="left:1481.8px;top:767.8000000000001px" width="20.4" height="12.8" viewBox="0 0 20.4 12.8" ><g fill="#fff" transform="translate(20.4 0) scale(-1 1)"><path d="M10.812 1 Q10.812 0 9.995999999999999 0.5 L0.4 6.1000000000000005 Q0 6.4 0.4 6.7 L9.995999999999999 12.3 Q10.812 12.8 10.812 11.8Z"/><path d="M20.4 1 Q20.4 0 19.584 0.5 L9.988 6.1000000000000005 Q9.588 6.4 9.988 6.7 L19.584 12.3 Q20.4 12.8 20.4 11.8Z"/></g></svg><svg style="left:1532.8px;top:766.2px" width="16" height="16" viewBox="0 0 16 16" ><g fill="none" stroke="#fff" stroke-width="1.2" stroke-linecap="round" stroke-linejoin="round"><path d="M1.4 5 V14.6 C3.6 14.2 5.6 12.6 5.2 10.8 C4.9 9.4 2.8 9.2 1.4 10.8"/><path d="M9.6 1.6 L8.8 7.6 M12.8 1 L12 7 M7.6 3.8 L14.6 2.6 M7.2 6 L14.2 4.8"/></g></svg><svg style="left:1354.6px;top:813.8px" width="16" height="15" viewBox="0 0 16 15" ><g stroke="#fff" stroke-width="1.4" fill="none" stroke-linecap="round" stroke-linejoin="round" stroke-width="1.2"><path d="M2.6 0.8 H13.2 C14.2 0.8 14.9 1.5 14.9 2.5 V9.6 C14.9 10.6 14.2 11.3 13.2 11.3 H4.6 L0.9 13.6 V2.5 C0.9 1.5 1.6 0.8 2.6 0.8Z"/></g><g fill="#fff"><path d="M5.2 4.6 h2.2 v2 c0 1.2 -0.8 1.9 -1.8 2.1 l-0.3 -0.8 c0.5 -0.2 0.9 -0.5 0.9 -1.1 h-1Z"/><path d="M8.4 4.6 h2.2 v2 c0 1.2 -0.8 1.9 -1.8 2.1 l-0.3 -0.8 c0.5 -0.2 0.9 -0.5 0.9 -1.1 h-1Z"/></g></svg><div style="left:1422px;top:804.6px;width:33px;height:33px;background:#1e1e1e;border-radius:7.5px"></div><svg style="left:1430px;top:812.6px" width="16" height="17" viewBox="0 0 16 17" ><g stroke="#19d1ad" fill="none" stroke-linecap="round" stroke-linejoin="round" stroke-width="1.4"><path d="M6.3 0.6 V16"/><path d="M6.3 4.6 C2.6 4.4 0.4 7.6 4.4 8.4 C0 8.8 0 12.4 4.4 12.3 C0.4 12.8 0.6 16.4 6.3 16" stroke-width="1.3"/><path d="M9 5.5 H15.4 M9 9.3 H15.4"/><path d="M9 13.1 H15.4" stroke-width="1.9"/></g></svg><svg style="left:1505.5px;top:812.6px" width="18" height="17" viewBox="0 0 18 17" ><g stroke="#fff" stroke-width="1.4" fill="none" stroke-linecap="round" stroke-linejoin="round" stroke-width="1.2"><path d="M9.4 0.8 L12 3.2 L9.4 5.6 M11.8 3.2 H4.2 C2.2 3.2 0.9 4.4 0.9 6.2 V8 C0.9 9.8 2.2 11 4.2 11 H13.8 C15.8 11 17.1 9.8 17.1 8 V6.2 C17.1 5 16.4 4 15.2 3.5"/><path d="M0.9 12.4 C0.9 14.2 2.2 15.4 4.2 15.4 H13.8 C15.8 15.4 17.1 14.2 17.1 12.4"/></g></svg><div style="left:22px;top:841px;width:1560px;height:1px;background:rgba(120,120,120,0.45)"></div></body></html>
